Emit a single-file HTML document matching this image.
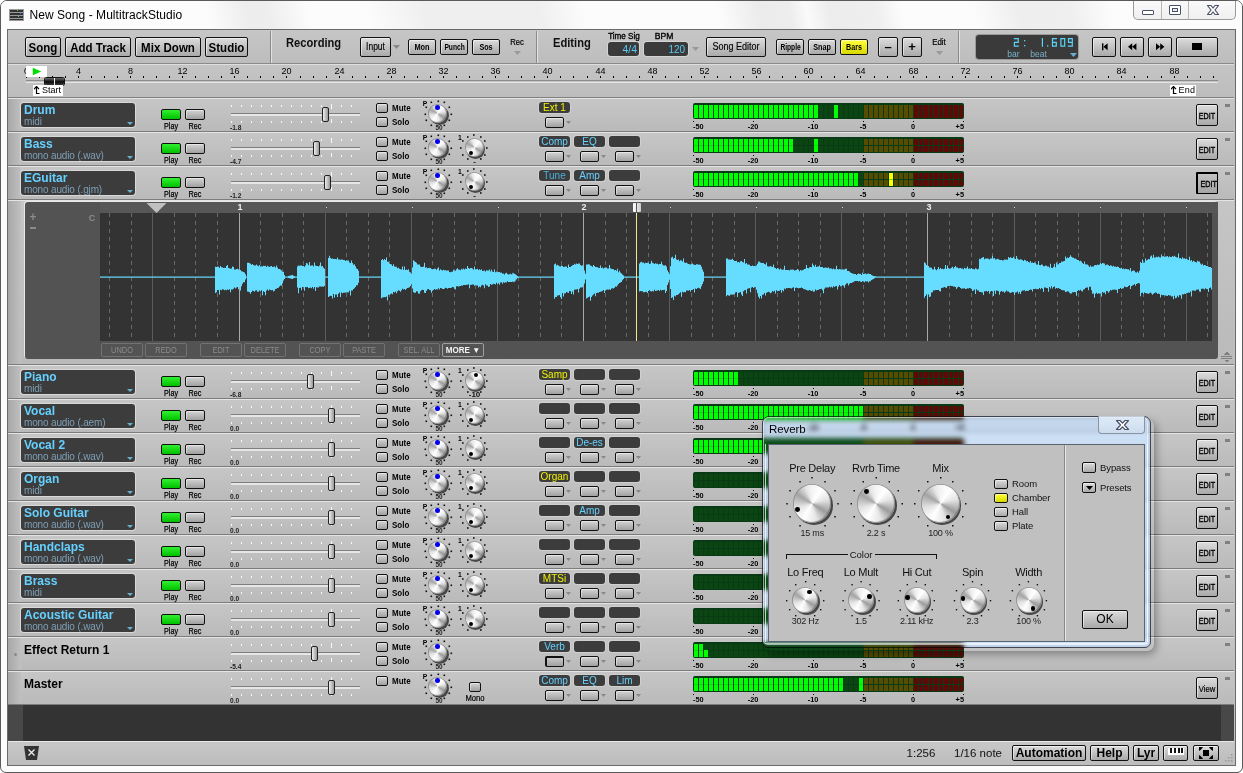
<!DOCTYPE html><html><head><meta charset="utf-8"><style>

*{margin:0;padding:0;box-sizing:content-box}
html,body{width:1243px;height:773px;overflow:hidden;background:#fff;font-family:"Liberation Sans", sans-serif}
.t{position:absolute;white-space:nowrap;font-family:"Liberation Sans", sans-serif}

</style></head><body>
<div style="position:absolute;left:0px;top:0px;width:1241px;height:771px;border:1px solid #5a5a5a;border-radius:7px 7px 6px 6px;background:#fcfcfc;"></div>
<div style="position:absolute;left:1px;top:1px;width:1241px;height:28px;border-radius:6px 6px 0 0;background:linear-gradient(78deg,#fcfcfc 0px,#fcfcfc 205px,#ededed 245px,#eeeeee 265px,#fcfcfc 305px,#fcfcfc 360px,#efefef 420px,#efefef 530px,#fcfcfc 575px,#fcfcfc 705px,#ebebeb 745px,#ededed 775px,#fafafa 792px,#ececec 815px,#efefef 860px,#fcfcfc 885px,#fcfcfc 955px,#eeeeee 1000px,#efefef 1050px,#fcfcfc 1090px,#fcfcfc 1243px);"></div>
<svg style="position:absolute;left:9px;top:9px" width="15" height="12"><rect x="0" y="0" width="15" height="12" fill="#9a9a9a"/><rect x="1" y="1" width="13" height="2" fill="#333"/><rect x="1" y="4" width="13" height="2" fill="#333"/><rect x="1" y="7" width="13" height="2" fill="#333"/><rect x="1" y="10" width="13" height="1" fill="#333"/><rect x="8" y="1" width="1" height="1" fill="#5c5"/><rect x="11" y="4" width="1" height="1" fill="#55f"/><rect x="9" y="7" width="1" height="1" fill="#5c5"/></svg>
<div class="t" style="left:29.5px;top:7.300000000000001px;font-size:12px;line-height:16px;color:#000;font-weight:normal;letter-spacing:0.05px">New Song - MultitrackStudio</div>
<div style="position:absolute;left:1133px;top:1px;width:101px;height:18px;border:1px solid #9a9a9a;border-top:none;border-radius:0 0 5px 5px;background:linear-gradient(#fafafa,#efefef);"></div>
<div style="position:absolute;left:1161px;top:1px;width:1px;height:18px;background:#b8b8b8"></div>
<div style="position:absolute;left:1188px;top:1px;width:1px;height:18px;background:#b8b8b8"></div>
<div style="position:absolute;left:1142px;top:10px;width:10px;height:3px;border:1px solid #4a5068;border-radius:1px;background:#fff"></div>
<div style="position:absolute;left:1169px;top:5px;width:10px;height:8px;border:1px solid #4a5068;border-radius:1px;background:#fff"></div>
<div style="position:absolute;left:1172px;top:8px;width:4px;height:2px;border:1px solid #4a5068;background:#e8e8e8"></div>
<svg style="position:absolute;left:1206px;top:4px" width="14" height="12"><path d="M1.5 1.5 L5 1.5 L7 4 L9 1.5 L12.5 1.5 L9 6 L12.5 10.5 L9 10.5 L7 8 L5 10.5 L1.5 10.5 L5 6 Z" fill="#fff" stroke="#4a5068" stroke-width="1.2" stroke-linejoin="round"/></svg>
<div style="position:absolute;left:7px;top:29px;width:1227px;height:735px;border:1px solid #6a6a6a;background:#c0c0c0;"></div>
<div style="position:absolute;left:8px;top:30px;width:1226px;height:33px;background:linear-gradient(#c6c6c6,#bdbdbd);"></div>
<div style="position:absolute;left:8px;top:63px;width:1226px;height:1px;background:#8a8a8a"></div>
<div style="position:absolute;left:8px;top:64px;width:1226px;height:1px;background:#dedede"></div>
<div style="position:absolute;left:270px;top:31px;width:1px;height:32px;background:#8a8a8a"></div>
<div style="position:absolute;left:271px;top:31px;width:1px;height:32px;background:#e2e2e2"></div>
<div style="position:absolute;left:536px;top:31px;width:1px;height:32px;background:#8a8a8a"></div>
<div style="position:absolute;left:537px;top:31px;width:1px;height:32px;background:#e2e2e2"></div>
<div style="position:absolute;left:958px;top:31px;width:1px;height:32px;background:#8a8a8a"></div>
<div style="position:absolute;left:959px;top:31px;width:1px;height:32px;background:#e2e2e2"></div>
<div style="position:absolute;left:25px;top:37px;width:34px;height:18px;border:1px solid #111;border-radius:2px;background:linear-gradient(#dcdcdc,#a9a9a9);box-shadow:inset 1px 1px 0 rgba(255,255,255,.55);"><div class="t" style="left:0;top:0.5px;width:100%;height:100%;text-align:center;line-height:18px;font-size:12px;font-weight:bold;color:#000;transform:scaleX(0.96);">Song</div></div>
<div style="position:absolute;left:65px;top:37px;width:64px;height:18px;border:1px solid #111;border-radius:2px;background:linear-gradient(#dcdcdc,#a9a9a9);box-shadow:inset 1px 1px 0 rgba(255,255,255,.55);"><div class="t" style="left:0;top:0.5px;width:100%;height:100%;text-align:center;line-height:18px;font-size:12px;font-weight:bold;color:#000;transform:scaleX(0.96);">Add Track</div></div>
<div style="position:absolute;left:135px;top:37px;width:64px;height:18px;border:1px solid #111;border-radius:2px;background:linear-gradient(#dcdcdc,#a9a9a9);box-shadow:inset 1px 1px 0 rgba(255,255,255,.55);"><div class="t" style="left:0;top:0.5px;width:100%;height:100%;text-align:center;line-height:18px;font-size:12px;font-weight:bold;color:#000;transform:scaleX(0.96);">Mix Down</div></div>
<div style="position:absolute;left:205px;top:37px;width:41px;height:18px;border:1px solid #111;border-radius:2px;background:linear-gradient(#dcdcdc,#a9a9a9);box-shadow:inset 1px 1px 0 rgba(255,255,255,.55);"><div class="t" style="left:0;top:0.5px;width:100%;height:100%;text-align:center;line-height:18px;font-size:12px;font-weight:bold;color:#000;transform:scaleX(0.96);">Studio</div></div>
<div class="t" style="left:286px;top:35.0px;font-size:12px;line-height:16px;color:#101010;font-weight:bold;transform:scaleX(0.93);transform-origin:left center;">Recording</div>
<div style="position:absolute;left:360px;top:37px;width:29px;height:18px;border:1px solid #111;border-radius:2px;background:linear-gradient(#dcdcdc,#a9a9a9);box-shadow:inset 1px 1px 0 rgba(255,255,255,.55);"><div class="t" style="left:0;top:0px;width:100%;height:100%;text-align:center;line-height:18px;font-size:10px;font-weight:normal;color:#000;transform:scaleX(0.85);-webkit-text-stroke:0.15px #000">Input</div></div>
<svg style="position:absolute;left:393px;top:45px" width="7" height="4"><path d="M0 0H7L3.5 4Z" fill="#888"/></svg>
<div style="position:absolute;left:408px;top:39px;width:26px;height:14px;border:1px solid #111;border-radius:2px;background:linear-gradient(#dcdcdc,#a9a9a9);box-shadow:inset 1px 1px 0 rgba(255,255,255,.55);"><div class="t" style="left:0;top:0px;width:100%;height:100%;text-align:center;line-height:14px;font-size:9px;font-weight:bold;color:#000;transform:scaleX(0.82);">Mon</div></div>
<div style="position:absolute;left:440px;top:39px;width:26px;height:14px;border:1px solid #111;border-radius:2px;background:linear-gradient(#dcdcdc,#a9a9a9);box-shadow:inset 1px 1px 0 rgba(255,255,255,.55);"><div class="t" style="left:0;top:0px;width:100%;height:100%;text-align:center;line-height:14px;font-size:9px;font-weight:bold;color:#000;transform:scaleX(0.74);">Punch</div></div>
<div style="position:absolute;left:472px;top:39px;width:26px;height:14px;border:1px solid #111;border-radius:2px;background:linear-gradient(#dcdcdc,#a9a9a9);box-shadow:inset 1px 1px 0 rgba(255,255,255,.55);"><div class="t" style="left:0;top:0px;width:100%;height:100%;text-align:center;line-height:14px;font-size:9px;font-weight:bold;color:#000;transform:scaleX(0.8);">Sos</div></div>
<div class="t" style="left:497.0px;top:35.5px;width:40px;text-align:center;font-size:9px;line-height:13px;color:#000;font-weight:normal;transform:scaleX(0.85);transform-origin:center center;-webkit-text-stroke:0.2px #000">Rec</div>
<svg style="position:absolute;left:514px;top:51px" width="7" height="4"><path d="M0 0H7L3.5 4Z" fill="#999"/></svg>
<div class="t" style="left:553px;top:35.0px;font-size:12px;line-height:16px;color:#101010;font-weight:bold;transform:scaleX(0.93);transform-origin:left center;">Editing</div>
<div class="t" style="left:594.0px;top:30.0px;width:60px;text-align:center;font-size:9px;line-height:13px;color:#000;font-weight:normal;transform:scaleX(0.9);transform-origin:center center;-webkit-text-stroke:0.35px #000">Time Sig</div>
<div class="t" style="left:634.0px;top:30.0px;width:60px;text-align:center;font-size:9px;line-height:13px;color:#000;font-weight:normal;transform:scaleX(0.95);transform-origin:center center;-webkit-text-stroke:0.35px #000">BPM</div>
<div style="position:absolute;left:608px;top:42px;width:31px;height:14px;background:#3a3a3a;border-radius:3px;box-shadow:0 0 0 1px #d4d4d4;"></div>
<div class="t" style="left:597px;top:41.75px;width:40px;text-align:right;font-size:11.5px;line-height:15.5px;color:#5ccaf4;font-weight:normal;transform:scaleX(0.9);transform-origin:right center;">4/4</div>
<div style="position:absolute;left:644px;top:42px;width:44px;height:14px;background:#3a3a3a;border-radius:3px;box-shadow:0 0 0 1px #d4d4d4;"></div>
<div class="t" style="left:645px;top:41.75px;width:40px;text-align:right;font-size:11.5px;line-height:15.5px;color:#5ccaf4;font-weight:normal;transform:scaleX(0.86);transform-origin:right center;">120</div>
<svg style="position:absolute;left:692px;top:47px" width="7" height="4"><path d="M0 0H7L3.5 4Z" fill="#999"/></svg>
<div style="position:absolute;left:706px;top:37px;width:58px;height:18px;border:1px solid #111;border-radius:2px;background:linear-gradient(#dcdcdc,#a9a9a9);box-shadow:inset 1px 1px 0 rgba(255,255,255,.55);"><div class="t" style="left:0;top:0px;width:100%;height:100%;text-align:center;line-height:18px;font-size:10px;font-weight:normal;color:#000;transform:scaleX(0.9);-webkit-text-stroke:0.15px #000">Song Editor</div></div>
<div style="position:absolute;left:776px;top:39px;width:26px;height:14px;border:1px solid #111;border-radius:2px;background:linear-gradient(#dcdcdc,#a9a9a9);box-shadow:inset 1px 1px 0 rgba(255,255,255,.55);"><div class="t" style="left:0;top:0px;width:100%;height:100%;text-align:center;line-height:14px;font-size:9px;font-weight:bold;color:#000;transform:scaleX(0.74);">Ripple</div></div>
<div style="position:absolute;left:808px;top:39px;width:26px;height:14px;border:1px solid #111;border-radius:2px;background:linear-gradient(#dcdcdc,#a9a9a9);box-shadow:inset 1px 1px 0 rgba(255,255,255,.55);"><div class="t" style="left:0;top:0px;width:100%;height:100%;text-align:center;line-height:14px;font-size:9px;font-weight:bold;color:#000;transform:scaleX(0.8);">Snap</div></div>
<div style="position:absolute;left:840px;top:39px;width:26px;height:14px;border:1px solid #111;border-radius:2px;background:linear-gradient(#ffff40,#d8d800);box-shadow:inset 1px 1px 0 rgba(255,255,255,.55);"><div class="t" style="left:0;top:0px;width:100%;height:100%;text-align:center;line-height:14px;font-size:9px;font-weight:bold;color:#000;transform:scaleX(0.8);">Bars</div></div>
<div style="position:absolute;left:878px;top:37px;width:18px;height:18px;border:1px solid #111;border-radius:2px;background:linear-gradient(#dcdcdc,#a9a9a9);box-shadow:inset 1px 1px 0 rgba(255,255,255,.55);"><div class="t" style="left:0;top:0px;width:100%;height:100%;text-align:center;line-height:18px;font-size:13px;font-weight:bold;color:#000;">&#8211;</div></div>
<div style="position:absolute;left:902px;top:37px;width:18px;height:18px;border:1px solid #111;border-radius:2px;background:linear-gradient(#dcdcdc,#a9a9a9);box-shadow:inset 1px 1px 0 rgba(255,255,255,.55);"><div class="t" style="left:0;top:0px;width:100%;height:100%;text-align:center;line-height:18px;font-size:13px;font-weight:bold;color:#000;">+</div></div>
<div class="t" style="left:919.0px;top:35.5px;width:40px;text-align:center;font-size:9px;line-height:13px;color:#000;font-weight:normal;transform:scaleX(0.88);transform-origin:center center;-webkit-text-stroke:0.2px #000">Edit</div>
<svg style="position:absolute;left:936px;top:51px" width="7" height="4"><path d="M0 0H7L3.5 4Z" fill="#999"/></svg>
<div style="position:absolute;left:976px;top:35px;width:102px;height:24px;background:#3a3a3a;border-radius:3px;box-shadow:0 0 0 1px #9a9a9a;"></div>
<svg style="position:absolute;left:0;top:0" width="1243" height="60"><path d="M1014.4 38.6L1018.2 38.6M1018.2 38.6L1018.2 42.4M1014.4 42.4L1018.2 42.4M1014.4 42.4L1014.4 46.2M1014.4 46.2L1018.2 46.2M1042.4 38.6L1042.4 42.4M1042.4 42.4L1042.4 46.2M1052.5 38.6L1056.3 38.6M1052.5 38.6L1052.5 42.4M1052.5 42.4L1056.3 42.4M1052.5 42.4L1052.5 46.2M1052.5 46.2L1056.3 46.2M1056.3 42.4L1056.3 46.2M1060.9 38.6L1064.7 38.6M1064.7 38.6L1064.7 42.4M1064.7 42.4L1064.7 46.2M1060.9 46.2L1064.7 46.2M1060.9 42.4L1060.9 46.2M1060.9 38.6L1060.9 42.4M1068.5 38.6L1072.3 38.6M1072.3 38.6L1072.3 42.4M1072.3 42.4L1072.3 46.2M1068.5 46.2L1072.3 46.2M1068.5 38.6L1068.5 42.4M1068.5 42.4L1072.3 42.4" stroke="#5ad4fa" stroke-width="1.2" fill="none" stroke-linecap="square"/><rect x="1024" y="40" width="1.3" height="1.3" fill="#5ad4fa"/><rect x="1024" y="45" width="1.3" height="1.3" fill="#5ad4fa"/><rect x="1047" y="45.3" width="1.3" height="1.3" fill="#5ad4fa"/></svg>
<div class="t" style="left:998.5px;top:47.75px;width:30px;text-align:center;font-size:8.5px;line-height:12.5px;color:#78b4cc;font-weight:normal;">bar</div>
<div class="t" style="left:1023.5px;top:47.75px;width:30px;text-align:center;font-size:8.5px;line-height:12.5px;color:#78b4cc;font-weight:normal;">beat</div>
<svg style="position:absolute;left:1070px;top:53px" width="7" height="4"><path d="M0 0H7L3.5 4Z" fill="#6ab0d0"/></svg>
<div style="position:absolute;left:1092px;top:37px;width:22px;height:18px;border:1px solid #111;border-radius:2px;background:linear-gradient(#dcdcdc,#a9a9a9);box-shadow:inset 1px 1px 0 rgba(255,255,255,.55);"><div class="t" style="left:0;top:0px;width:100%;height:100%;text-align:center;line-height:18px;font-size:11px;font-weight:bold;color:#000;"></div></div>
<svg style="position:absolute;left:1102px;top:43px" width="6" height="8"><rect x="0" y="0.3" width="1.4" height="7" fill="#000"/><path d="M5.6 0.3V7.3L1.4 3.8Z" fill="#000"/></svg>
<div style="position:absolute;left:1120px;top:37px;width:22px;height:18px;border:1px solid #111;border-radius:2px;background:linear-gradient(#dcdcdc,#a9a9a9);box-shadow:inset 1px 1px 0 rgba(255,255,255,.55);"><div class="t" style="left:0;top:0px;width:100%;height:100%;text-align:center;line-height:18px;font-size:11px;font-weight:bold;color:#000;"></div></div>
<svg style="position:absolute;left:1128px;top:43px" width="9" height="8"><path d="M4.2 0.3V7.3L0 3.8Z M8.4 0.3V7.3L4.2 3.8Z" fill="#000"/></svg>
<div style="position:absolute;left:1148px;top:37px;width:22px;height:18px;border:1px solid #111;border-radius:2px;background:linear-gradient(#dcdcdc,#a9a9a9);box-shadow:inset 1px 1px 0 rgba(255,255,255,.55);"><div class="t" style="left:0;top:0px;width:100%;height:100%;text-align:center;line-height:18px;font-size:11px;font-weight:bold;color:#000;"></div></div>
<svg style="position:absolute;left:1156px;top:43px" width="9" height="8"><path d="M0 0.3V7.3L4.2 3.8Z M4.2 0.3V7.3L8.4 3.8Z" fill="#000"/></svg>
<div style="position:absolute;left:1176px;top:37px;width:40px;height:18px;border:1px solid #111;border-radius:2px;background:linear-gradient(#dcdcdc,#a9a9a9);box-shadow:inset 1px 1px 0 rgba(255,255,255,.55);"><div class="t" style="left:0;top:0px;width:100%;height:100%;text-align:center;line-height:18px;font-size:11px;font-weight:bold;color:#000;"></div></div>
<div style="position:absolute;left:1192px;top:43px;width:10px;height:7px;background:#000"></div>
<div style="position:absolute;left:8px;top:65px;width:1226px;height:32px;background:linear-gradient(#c4c4c4,#bdbdbd);"></div>
<div style="position:absolute;left:8px;top:97px;width:1226px;height:1px;background:#808080"></div>
<div style="position:absolute;left:26px;top:76px;width:1px;height:2px;background:#000"></div>
<div class="t" style="left:11.5px;top:64.5px;width:30px;text-align:center;font-size:9px;line-height:13px;color:#000;font-weight:normal;">0</div>
<div style="position:absolute;left:39px;top:76px;width:1px;height:2px;background:#000"></div>
<div style="position:absolute;left:52px;top:76px;width:1px;height:2px;background:#000"></div>
<div style="position:absolute;left:65px;top:76px;width:1px;height:2px;background:#000"></div>
<div style="position:absolute;left:78px;top:76px;width:1px;height:2px;background:#000"></div>
<div class="t" style="left:63.5px;top:64.5px;width:30px;text-align:center;font-size:9px;line-height:13px;color:#000;font-weight:normal;">4</div>
<div style="position:absolute;left:91px;top:76px;width:1px;height:2px;background:#000"></div>
<div style="position:absolute;left:104px;top:76px;width:1px;height:2px;background:#000"></div>
<div style="position:absolute;left:117px;top:76px;width:1px;height:2px;background:#000"></div>
<div style="position:absolute;left:130px;top:76px;width:1px;height:2px;background:#000"></div>
<div class="t" style="left:115.5px;top:64.5px;width:30px;text-align:center;font-size:9px;line-height:13px;color:#000;font-weight:normal;">8</div>
<div style="position:absolute;left:143px;top:76px;width:1px;height:2px;background:#000"></div>
<div style="position:absolute;left:156px;top:76px;width:1px;height:2px;background:#000"></div>
<div style="position:absolute;left:169px;top:76px;width:1px;height:2px;background:#000"></div>
<div style="position:absolute;left:182px;top:76px;width:1px;height:2px;background:#000"></div>
<div class="t" style="left:167.5px;top:64.5px;width:30px;text-align:center;font-size:9px;line-height:13px;color:#000;font-weight:normal;">12</div>
<div style="position:absolute;left:195px;top:76px;width:1px;height:2px;background:#000"></div>
<div style="position:absolute;left:208px;top:76px;width:1px;height:2px;background:#000"></div>
<div style="position:absolute;left:221px;top:76px;width:1px;height:2px;background:#000"></div>
<div style="position:absolute;left:234px;top:76px;width:1px;height:2px;background:#000"></div>
<div class="t" style="left:219.5px;top:64.5px;width:30px;text-align:center;font-size:9px;line-height:13px;color:#000;font-weight:normal;">16</div>
<div style="position:absolute;left:247px;top:76px;width:1px;height:2px;background:#000"></div>
<div style="position:absolute;left:260px;top:76px;width:1px;height:2px;background:#000"></div>
<div style="position:absolute;left:273px;top:76px;width:1px;height:2px;background:#000"></div>
<div style="position:absolute;left:286px;top:76px;width:1px;height:2px;background:#000"></div>
<div class="t" style="left:271.5px;top:64.5px;width:30px;text-align:center;font-size:9px;line-height:13px;color:#000;font-weight:normal;">20</div>
<div style="position:absolute;left:300px;top:76px;width:1px;height:2px;background:#000"></div>
<div style="position:absolute;left:313px;top:76px;width:1px;height:2px;background:#000"></div>
<div style="position:absolute;left:326px;top:76px;width:1px;height:2px;background:#000"></div>
<div style="position:absolute;left:339px;top:76px;width:1px;height:2px;background:#000"></div>
<div class="t" style="left:324.5px;top:64.5px;width:30px;text-align:center;font-size:9px;line-height:13px;color:#000;font-weight:normal;">24</div>
<div style="position:absolute;left:352px;top:76px;width:1px;height:2px;background:#000"></div>
<div style="position:absolute;left:365px;top:76px;width:1px;height:2px;background:#000"></div>
<div style="position:absolute;left:378px;top:76px;width:1px;height:2px;background:#000"></div>
<div style="position:absolute;left:391px;top:76px;width:1px;height:2px;background:#000"></div>
<div class="t" style="left:376.5px;top:64.5px;width:30px;text-align:center;font-size:9px;line-height:13px;color:#000;font-weight:normal;">28</div>
<div style="position:absolute;left:404px;top:76px;width:1px;height:2px;background:#000"></div>
<div style="position:absolute;left:417px;top:76px;width:1px;height:2px;background:#000"></div>
<div style="position:absolute;left:430px;top:76px;width:1px;height:2px;background:#000"></div>
<div style="position:absolute;left:443px;top:76px;width:1px;height:2px;background:#000"></div>
<div class="t" style="left:428.5px;top:64.5px;width:30px;text-align:center;font-size:9px;line-height:13px;color:#000;font-weight:normal;">32</div>
<div style="position:absolute;left:456px;top:76px;width:1px;height:2px;background:#000"></div>
<div style="position:absolute;left:469px;top:76px;width:1px;height:2px;background:#000"></div>
<div style="position:absolute;left:482px;top:76px;width:1px;height:2px;background:#000"></div>
<div style="position:absolute;left:495px;top:76px;width:1px;height:2px;background:#000"></div>
<div class="t" style="left:480.5px;top:64.5px;width:30px;text-align:center;font-size:9px;line-height:13px;color:#000;font-weight:normal;">36</div>
<div style="position:absolute;left:508px;top:76px;width:1px;height:2px;background:#000"></div>
<div style="position:absolute;left:521px;top:76px;width:1px;height:2px;background:#000"></div>
<div style="position:absolute;left:534px;top:76px;width:1px;height:2px;background:#000"></div>
<div style="position:absolute;left:547px;top:76px;width:1px;height:2px;background:#000"></div>
<div class="t" style="left:532.5px;top:64.5px;width:30px;text-align:center;font-size:9px;line-height:13px;color:#000;font-weight:normal;">40</div>
<div style="position:absolute;left:560px;top:76px;width:1px;height:2px;background:#000"></div>
<div style="position:absolute;left:573px;top:76px;width:1px;height:2px;background:#000"></div>
<div style="position:absolute;left:587px;top:76px;width:1px;height:2px;background:#000"></div>
<div style="position:absolute;left:600px;top:76px;width:1px;height:2px;background:#000"></div>
<div class="t" style="left:585.5px;top:64.5px;width:30px;text-align:center;font-size:9px;line-height:13px;color:#000;font-weight:normal;">44</div>
<div style="position:absolute;left:613px;top:76px;width:1px;height:2px;background:#000"></div>
<div style="position:absolute;left:626px;top:76px;width:1px;height:2px;background:#000"></div>
<div style="position:absolute;left:639px;top:76px;width:1px;height:2px;background:#000"></div>
<div style="position:absolute;left:652px;top:76px;width:1px;height:2px;background:#000"></div>
<div class="t" style="left:637.5px;top:64.5px;width:30px;text-align:center;font-size:9px;line-height:13px;color:#000;font-weight:normal;">48</div>
<div style="position:absolute;left:665px;top:76px;width:1px;height:2px;background:#000"></div>
<div style="position:absolute;left:678px;top:76px;width:1px;height:2px;background:#000"></div>
<div style="position:absolute;left:691px;top:76px;width:1px;height:2px;background:#000"></div>
<div style="position:absolute;left:704px;top:76px;width:1px;height:2px;background:#000"></div>
<div class="t" style="left:689.5px;top:64.5px;width:30px;text-align:center;font-size:9px;line-height:13px;color:#000;font-weight:normal;">52</div>
<div style="position:absolute;left:717px;top:76px;width:1px;height:2px;background:#000"></div>
<div style="position:absolute;left:730px;top:76px;width:1px;height:2px;background:#000"></div>
<div style="position:absolute;left:743px;top:76px;width:1px;height:2px;background:#000"></div>
<div style="position:absolute;left:756px;top:76px;width:1px;height:2px;background:#000"></div>
<div class="t" style="left:741.5px;top:64.5px;width:30px;text-align:center;font-size:9px;line-height:13px;color:#000;font-weight:normal;">56</div>
<div style="position:absolute;left:769px;top:76px;width:1px;height:2px;background:#000"></div>
<div style="position:absolute;left:782px;top:76px;width:1px;height:2px;background:#000"></div>
<div style="position:absolute;left:795px;top:76px;width:1px;height:2px;background:#000"></div>
<div style="position:absolute;left:808px;top:76px;width:1px;height:2px;background:#000"></div>
<div class="t" style="left:793.5px;top:64.5px;width:30px;text-align:center;font-size:9px;line-height:13px;color:#000;font-weight:normal;">60</div>
<div style="position:absolute;left:821px;top:76px;width:1px;height:2px;background:#000"></div>
<div style="position:absolute;left:834px;top:76px;width:1px;height:2px;background:#000"></div>
<div style="position:absolute;left:847px;top:76px;width:1px;height:2px;background:#000"></div>
<div style="position:absolute;left:860px;top:76px;width:1px;height:2px;background:#000"></div>
<div class="t" style="left:845.5px;top:64.5px;width:30px;text-align:center;font-size:9px;line-height:13px;color:#000;font-weight:normal;">64</div>
<div style="position:absolute;left:874px;top:76px;width:1px;height:2px;background:#000"></div>
<div style="position:absolute;left:887px;top:76px;width:1px;height:2px;background:#000"></div>
<div style="position:absolute;left:900px;top:76px;width:1px;height:2px;background:#000"></div>
<div style="position:absolute;left:913px;top:76px;width:1px;height:2px;background:#000"></div>
<div class="t" style="left:898.5px;top:64.5px;width:30px;text-align:center;font-size:9px;line-height:13px;color:#000;font-weight:normal;">68</div>
<div style="position:absolute;left:926px;top:76px;width:1px;height:2px;background:#000"></div>
<div style="position:absolute;left:939px;top:76px;width:1px;height:2px;background:#000"></div>
<div style="position:absolute;left:952px;top:76px;width:1px;height:2px;background:#000"></div>
<div style="position:absolute;left:965px;top:76px;width:1px;height:2px;background:#000"></div>
<div class="t" style="left:950.5px;top:64.5px;width:30px;text-align:center;font-size:9px;line-height:13px;color:#000;font-weight:normal;">72</div>
<div style="position:absolute;left:978px;top:76px;width:1px;height:2px;background:#000"></div>
<div style="position:absolute;left:991px;top:76px;width:1px;height:2px;background:#000"></div>
<div style="position:absolute;left:1004px;top:76px;width:1px;height:2px;background:#000"></div>
<div style="position:absolute;left:1017px;top:76px;width:1px;height:2px;background:#000"></div>
<div class="t" style="left:1002.5px;top:64.5px;width:30px;text-align:center;font-size:9px;line-height:13px;color:#000;font-weight:normal;">76</div>
<div style="position:absolute;left:1030px;top:76px;width:1px;height:2px;background:#000"></div>
<div style="position:absolute;left:1043px;top:76px;width:1px;height:2px;background:#000"></div>
<div style="position:absolute;left:1056px;top:76px;width:1px;height:2px;background:#000"></div>
<div style="position:absolute;left:1069px;top:76px;width:1px;height:2px;background:#000"></div>
<div class="t" style="left:1054.5px;top:64.5px;width:30px;text-align:center;font-size:9px;line-height:13px;color:#000;font-weight:normal;">80</div>
<div style="position:absolute;left:1082px;top:76px;width:1px;height:2px;background:#000"></div>
<div style="position:absolute;left:1095px;top:76px;width:1px;height:2px;background:#000"></div>
<div style="position:absolute;left:1108px;top:76px;width:1px;height:2px;background:#000"></div>
<div style="position:absolute;left:1121px;top:76px;width:1px;height:2px;background:#000"></div>
<div class="t" style="left:1106.5px;top:64.5px;width:30px;text-align:center;font-size:9px;line-height:13px;color:#000;font-weight:normal;">84</div>
<div style="position:absolute;left:1134px;top:76px;width:1px;height:2px;background:#000"></div>
<div style="position:absolute;left:1147px;top:76px;width:1px;height:2px;background:#000"></div>
<div style="position:absolute;left:1161px;top:76px;width:1px;height:2px;background:#000"></div>
<div style="position:absolute;left:1174px;top:76px;width:1px;height:2px;background:#000"></div>
<div class="t" style="left:1159.5px;top:64.5px;width:30px;text-align:center;font-size:9px;line-height:13px;color:#000;font-weight:normal;">88</div>
<div style="position:absolute;left:1187px;top:76px;width:1px;height:2px;background:#000"></div>
<div style="position:absolute;left:1200px;top:76px;width:1px;height:2px;background:#000"></div>
<div style="position:absolute;left:1213px;top:76px;width:1px;height:2px;background:#000"></div>
<div style="position:absolute;left:26px;top:80px;width:1192px;height:1px;background:#8c8c8c"></div>
<div style="position:absolute;left:26px;top:81px;width:1192px;height:1px;background:#c4c4c4"></div>
<div style="position:absolute;left:26px;top:82px;width:1192px;height:1px;background:#e4e4e4"></div>
<div style="position:absolute;left:26px;top:66px;width:21px;height:11px;background:#fff"></div>
<svg style="position:absolute;left:32px;top:67px" width="10" height="9"><path d="M0.8 0.8V8.2L9.3 4.5Z" fill="#00e000"/></svg>
<div style="position:absolute;left:45px;top:78px;width:19px;height:7px;border-radius:2px;background:linear-gradient(#6a6a6a,#0c0c0c 55%,#3a3a3a);box-shadow:0 0 0 1px #111;"></div>
<div style="position:absolute;left:54px;top:78px;width:1px;height:7px;background:#f0f0f0"></div>
<div style="position:absolute;left:33px;top:85px;width:30px;height:11px;background:#fff"></div>
<svg style="position:absolute;left:34px;top:86px" width="7" height="9"><path d="M2.5 1V7.5H5.5" stroke="#000" stroke-width="1.2" fill="none"/><path d="M0 3.2L2.5 0.5L5 3.2" stroke="#000" stroke-width="1.2" fill="none"/></svg>
<div class="t" style="left:42px;top:84.2px;font-size:9px;line-height:13px;color:#000;font-weight:normal;">Start</div>
<div style="position:absolute;left:1170px;top:85px;width:26px;height:11px;background:#fff"></div>
<svg style="position:absolute;left:1171px;top:86px" width="7" height="9"><path d="M2.5 1V7.5H5.5" stroke="#000" stroke-width="1.2" fill="none"/><path d="M0 3.2L2.5 0.5L5 3.2" stroke="#000" stroke-width="1.2" fill="none"/></svg>
<div class="t" style="left:1178.5px;top:84.2px;font-size:9px;line-height:13px;color:#000;font-weight:normal;letter-spacing:0.2px">End</div>
<div style="position:absolute;left:8px;top:98px;width:1226px;height:1px;background:#e4e4e4"></div>
<div style="position:absolute;left:8px;top:99px;width:1226px;height:32px;background:linear-gradient(#c6c6c6,#bababa)"></div>
<div style="position:absolute;left:8px;top:131px;width:1226px;height:1px;background:#7c7c7c"></div>
<div style="position:absolute;left:8px;top:99px;width:13px;height:32px;background:linear-gradient(90deg,#a8a8a8,#c0c0c0)"></div>
<div style="position:absolute;left:21px;top:103px;width:114px;height:24px;background:#3c3c3c;border-radius:3px;box-shadow:0 0 0 1px #d8d8d8"></div>
<div class="t" style="left:24px;top:101.5px;font-size:12px;line-height:16px;color:#66d0ff;font-weight:bold;">Drum</div>
<div class="t" style="left:24px;top:114.5px;font-size:10px;line-height:14px;color:#7e9fb6;font-weight:normal;letter-spacing:-0.15px">midi</div>
<svg style="position:absolute;left:127px;top:122px" width="6" height="3"><path d="M0 0H6L3 3Z" fill="#6ab0d0"/></svg>
<div style="position:absolute;left:161px;top:109px;width:18px;height:9px;border:1px solid #111;border-radius:2px;background:linear-gradient(#30f030,#00c000)"></div>
<div style="position:absolute;left:185px;top:109px;width:18px;height:9px;border:1px solid #111;border-radius:2px;background:linear-gradient(#d4d4d4,#a0a0a0);box-shadow:inset 1px 1px 0 rgba(255,255,255,.45)"></div>
<div class="t" style="left:156.0px;top:120.0px;width:30px;text-align:center;font-size:9px;line-height:13px;color:#000;font-weight:normal;transform:scaleX(0.8);transform-origin:center center;-webkit-text-stroke:0.25px #000">Play</div>
<div class="t" style="left:180.0px;top:120.0px;width:30px;text-align:center;font-size:9px;line-height:13px;color:#000;font-weight:normal;transform:scaleX(0.8);transform-origin:center center;-webkit-text-stroke:0.25px #000">Rec</div>
<div style="position:absolute;left:231px;top:105px;width:1px;height:2px;background:#f8f8f8"></div>
<div style="position:absolute;left:231px;top:121px;width:1px;height:2px;background:#f8f8f8"></div>
<div style="position:absolute;left:241px;top:105px;width:1px;height:2px;background:#f8f8f8"></div>
<div style="position:absolute;left:241px;top:121px;width:1px;height:2px;background:#f8f8f8"></div>
<div style="position:absolute;left:251px;top:105px;width:1px;height:2px;background:#f8f8f8"></div>
<div style="position:absolute;left:251px;top:121px;width:1px;height:2px;background:#f8f8f8"></div>
<div style="position:absolute;left:261px;top:105px;width:1px;height:2px;background:#f8f8f8"></div>
<div style="position:absolute;left:261px;top:121px;width:1px;height:2px;background:#f8f8f8"></div>
<div style="position:absolute;left:271px;top:105px;width:1px;height:2px;background:#f8f8f8"></div>
<div style="position:absolute;left:271px;top:121px;width:1px;height:2px;background:#f8f8f8"></div>
<div style="position:absolute;left:281px;top:105px;width:1px;height:2px;background:#f8f8f8"></div>
<div style="position:absolute;left:281px;top:121px;width:1px;height:2px;background:#f8f8f8"></div>
<div style="position:absolute;left:291px;top:105px;width:1px;height:2px;background:#f8f8f8"></div>
<div style="position:absolute;left:291px;top:121px;width:1px;height:2px;background:#f8f8f8"></div>
<div style="position:absolute;left:301px;top:105px;width:1px;height:2px;background:#f8f8f8"></div>
<div style="position:absolute;left:301px;top:121px;width:1px;height:2px;background:#f8f8f8"></div>
<div style="position:absolute;left:311px;top:105px;width:1px;height:2px;background:#f8f8f8"></div>
<div style="position:absolute;left:311px;top:121px;width:1px;height:2px;background:#f8f8f8"></div>
<div style="position:absolute;left:321px;top:105px;width:1px;height:2px;background:#f8f8f8"></div>
<div style="position:absolute;left:321px;top:121px;width:1px;height:2px;background:#f8f8f8"></div>
<div style="position:absolute;left:331px;top:104px;width:1px;height:5px;background:#f8f8f8"></div>
<div style="position:absolute;left:331px;top:119px;width:1px;height:4px;background:#f8f8f8"></div>
<div style="position:absolute;left:341px;top:105px;width:1px;height:2px;background:#f8f8f8"></div>
<div style="position:absolute;left:341px;top:121px;width:1px;height:2px;background:#f8f8f8"></div>
<div style="position:absolute;left:351px;top:105px;width:1px;height:2px;background:#f8f8f8"></div>
<div style="position:absolute;left:351px;top:121px;width:1px;height:2px;background:#f8f8f8"></div>
<div style="position:absolute;left:231px;top:113px;width:129px;height:1px;background:#7e7e7e"></div>
<div style="position:absolute;left:231px;top:114px;width:129px;height:2px;background:#e6e6e6"></div>
<div style="position:absolute;left:322px;top:107px;width:5px;height:13px;border:1px solid #222;border-radius:2px;background:linear-gradient(90deg,#eee,#999);"></div>
<div class="t" style="left:230px;top:121.5px;font-size:8px;line-height:12px;color:#222;font-weight:bold;transform:scaleX(0.82);transform-origin:left center;">-1.8</div>
<div style="position:absolute;left:376px;top:103px;width:10px;height:8px;border:1px solid #111;border-radius:2px;background:linear-gradient(#d4d4d4,#a0a0a0);box-shadow:inset 1px 1px 0 rgba(255,255,255,.45)"></div>
<div style="position:absolute;left:376px;top:117px;width:10px;height:8px;border:1px solid #111;border-radius:2px;background:linear-gradient(#d4d4d4,#a0a0a0);box-shadow:inset 1px 1px 0 rgba(255,255,255,.45)"></div>
<div class="t" style="left:391.5px;top:101.25px;font-size:9.5px;line-height:13.5px;color:#000;font-weight:bold;transform:scaleX(0.84);transform-origin:left center;">Mute</div>
<div class="t" style="left:391.5px;top:115.25px;font-size:9.5px;line-height:13.5px;color:#000;font-weight:bold;transform:scaleX(0.84);transform-origin:left center;">Solo</div>
<div class="t" style="left:419.8px;top:97.8px;width:10px;text-align:center;font-size:8px;line-height:12px;color:#000;font-weight:bold;transform:scaleX(0.85);transform-origin:center center;">P</div>
<svg style="position:absolute;left:421.5px;top:97.5px;overflow:visible" width="32.0" height="32.0"><rect x="8.50" y="26.50" width="1.6" height="1.6" fill="#111"/><rect x="3.50" y="21.50" width="1.6" height="1.6" fill="#111"/><rect x="2.50" y="15.50" width="1.6" height="1.6" fill="#111"/><rect x="3.50" y="8.50" width="1.6" height="1.6" fill="#111"/><rect x="8.50" y="3.50" width="1.6" height="1.6" fill="#111"/><rect x="15.50" y="2.50" width="1.6" height="1.6" fill="#111"/><rect x="21.50" y="3.50" width="1.6" height="1.6" fill="#111"/><rect x="26.50" y="8.50" width="1.6" height="1.6" fill="#111"/><rect x="28.50" y="15.50" width="1.6" height="1.6" fill="#111"/><rect x="26.50" y="21.50" width="1.6" height="1.6" fill="#111"/><rect x="21.50" y="26.50" width="1.6" height="1.6" fill="#111"/></svg>
<div style="position:absolute;left:429.6px;top:105.9px;width:19px;height:19px;border-radius:50%;background:#333;opacity:.85;filter:blur(0.6px)"></div>
<div style="position:absolute;left:428.0px;top:104.0px;width:19px;height:19px;border-radius:50%;background:conic-gradient(from 0deg,#f4f4f4 0deg,#ffffff 35deg,#e4e4e4 75deg,#9c9c9c 122deg,#e6e6e6 165deg,#ffffff 210deg,#e2e2e2 255deg,#a4a4a4 302deg,#e8e8e8 340deg,#f4f4f4 360deg);box-shadow:inset 0 0 0 0.8px #8a8a8a, inset -1px -1px 1px rgba(0,0,0,.25)"></div>
<div style="position:absolute;left:435.2px;top:105.2px;width:4.5px;height:4.5px;border-radius:50%;background:#0000ee"></div>
<div class="t" style="left:428.5px;top:121.5px;width:20px;text-align:center;font-size:8px;line-height:12px;color:#222;font-weight:bold;transform:scaleX(0.8);transform-origin:center center;">50</div>
<div style="position:absolute;left:539px;top:102px;width:31px;height:11px;background:#3c3c3c;border-radius:3px;box-shadow:0 0 0 1px #d0d0d0"></div>
<div class="t" style="left:534.5px;top:100.5px;width:40px;text-align:center;font-size:10px;line-height:14px;color:#f0f000;font-weight:normal;">Ext 1</div>
<div style="position:absolute;left:545px;top:117px;width:17px;height:9px;border:1px solid #111;border-radius:2px;background:linear-gradient(#d4d4d4,#a0a0a0);box-shadow:inset 1px 1px 0 rgba(255,255,255,.45)"></div>
<svg style="position:absolute;left:566px;top:121px" width="5" height="3"><path d="M0 0H5L2.5 3Z" fill="#888"/></svg>
<div style="position:absolute;left:693px;top:103px;width:271px;height:16px;background:#083a16;border-radius:2px"></div>
<svg style="position:absolute;left:693px;top:103px;shape-rendering:crispEdges" width="271" height="16"><rect x="1" y="2" width="4" height="13" fill="#00ff00"/><rect x="6" y="2" width="4" height="13" fill="#00ff00"/><rect x="11" y="2" width="4" height="13" fill="#00ff00"/><rect x="16" y="2" width="4" height="13" fill="#00ff00"/><rect x="21" y="2" width="4" height="13" fill="#00ff00"/><rect x="26" y="2" width="4" height="13" fill="#00ff00"/><rect x="31" y="2" width="4" height="13" fill="#00ff00"/><rect x="36" y="2" width="4" height="13" fill="#00ff00"/><rect x="41" y="2" width="4" height="13" fill="#00ff00"/><rect x="46" y="2" width="4" height="13" fill="#00ff00"/><rect x="51" y="2" width="4" height="13" fill="#00ff00"/><rect x="56" y="2" width="4" height="13" fill="#00ff00"/><rect x="61" y="2" width="4" height="13" fill="#00ff00"/><rect x="66" y="2" width="4" height="13" fill="#00ff00"/><rect x="71" y="2" width="4" height="13" fill="#00ff00"/><rect x="76" y="2" width="4" height="13" fill="#00ff00"/><rect x="81" y="2" width="4" height="13" fill="#00ff00"/><rect x="86" y="2" width="4" height="13" fill="#00ff00"/><rect x="91" y="2" width="4" height="13" fill="#00ff00"/><rect x="96" y="2" width="4" height="13" fill="#00ff00"/><rect x="101" y="2" width="4" height="13" fill="#00ff00"/><rect x="106" y="2" width="4" height="13" fill="#00ff00"/><rect x="111" y="2" width="4" height="13" fill="#00ff00"/><rect x="116" y="2" width="4" height="13" fill="#00ff00"/><rect x="121" y="2" width="4" height="13" fill="#00ff00"/><rect x="126" y="2" width="4" height="13" fill="#0b4612"/><rect x="131" y="2" width="4" height="13" fill="#0b4612"/><rect x="136" y="2" width="4" height="13" fill="#0b4612"/><rect x="141" y="2" width="4" height="13" fill="#00ff00"/><rect x="146" y="2" width="4" height="13" fill="#0b4612"/><rect x="151" y="2" width="4" height="13" fill="#0b4612"/><rect x="156" y="2" width="4" height="13" fill="#0b4612"/><rect x="161" y="2" width="4" height="13" fill="#0b4612"/><rect x="166" y="2" width="4" height="13" fill="#0b4612"/><rect x="171" y="2" width="4" height="13" fill="#574c00"/><rect x="176" y="2" width="4" height="13" fill="#574c00"/><rect x="181" y="2" width="4" height="13" fill="#574c00"/><rect x="186" y="2" width="4" height="13" fill="#574c00"/><rect x="191" y="2" width="4" height="13" fill="#574c00"/><rect x="196" y="2" width="4" height="13" fill="#574c00"/><rect x="201" y="2" width="4" height="13" fill="#574c00"/><rect x="206" y="2" width="4" height="13" fill="#574c00"/><rect x="211" y="2" width="4" height="13" fill="#574c00"/><rect x="216" y="2" width="4" height="13" fill="#574c00"/><rect x="221" y="2" width="4" height="13" fill="#600808"/><rect x="226" y="2" width="4" height="13" fill="#600808"/><rect x="231" y="2" width="4" height="13" fill="#600808"/><rect x="236" y="2" width="4" height="13" fill="#600808"/><rect x="241" y="2" width="4" height="13" fill="#600808"/><rect x="246" y="2" width="4" height="13" fill="#600808"/><rect x="251" y="2" width="4" height="13" fill="#600808"/><rect x="256" y="2" width="4" height="13" fill="#600808"/><rect x="261" y="2" width="4" height="13" fill="#600808"/><rect x="266" y="2" width="4" height="13" fill="#600808"/></svg>
<div style="position:absolute;left:693px;top:121px;width:1px;height:1px;background:#000"></div>
<div class="t" style="left:693px;top:120.85px;font-size:7.5px;line-height:11.5px;color:#000;font-weight:bold;transform:scaleX(0.98);transform-origin:left center;">-50</div>
<div style="position:absolute;left:753px;top:121px;width:1px;height:1px;background:#000"></div>
<div class="t" style="left:738.0px;top:120.85px;width:30px;text-align:center;font-size:7.5px;line-height:11.5px;color:#000;font-weight:bold;transform:scaleX(0.98);transform-origin:center center;">-20</div>
<div style="position:absolute;left:813px;top:121px;width:1px;height:1px;background:#000"></div>
<div class="t" style="left:798.0px;top:120.85px;width:30px;text-align:center;font-size:7.5px;line-height:11.5px;color:#000;font-weight:bold;transform:scaleX(0.98);transform-origin:center center;">-10</div>
<div style="position:absolute;left:863px;top:121px;width:1px;height:1px;background:#000"></div>
<div class="t" style="left:848.0px;top:120.85px;width:30px;text-align:center;font-size:7.5px;line-height:11.5px;color:#000;font-weight:bold;transform:scaleX(0.98);transform-origin:center center;">-5</div>
<div style="position:absolute;left:913px;top:121px;width:1px;height:1px;background:#000"></div>
<div class="t" style="left:898.0px;top:120.85px;width:30px;text-align:center;font-size:7.5px;line-height:11.5px;color:#000;font-weight:bold;transform:scaleX(0.98);transform-origin:center center;">0</div>
<div style="position:absolute;left:963px;top:121px;width:1px;height:1px;background:#000"></div>
<div class="t" style="left:934px;top:120.85px;width:30px;text-align:right;font-size:7.5px;line-height:11.5px;color:#000;font-weight:bold;transform:scaleX(0.98);transform-origin:right center;">+5</div>
<div style="position:absolute;left:1196px;top:104px;width:20px;height:20px;border:1px solid #111;border-radius:2px;background:linear-gradient(#dcdcdc,#a9a9a9);box-shadow:inset 1px 1px 0 rgba(255,255,255,.55);"><div class="t" style="left:0;top:0.5px;width:100%;height:100%;text-align:center;line-height:20px;font-size:8.5px;font-weight:normal;color:#000;transform:scaleX(0.85);-webkit-text-stroke:0.35px #000">EDIT</div></div>
<div style="position:absolute;left:1225px;top:104px;width:5px;height:3px;background:#808080"></div>
<div style="position:absolute;left:8px;top:132px;width:1226px;height:1px;background:#e4e4e4"></div>
<div style="position:absolute;left:8px;top:133px;width:1226px;height:32px;background:linear-gradient(#c6c6c6,#bababa)"></div>
<div style="position:absolute;left:8px;top:165px;width:1226px;height:1px;background:#7c7c7c"></div>
<div style="position:absolute;left:8px;top:133px;width:13px;height:32px;background:linear-gradient(90deg,#a8a8a8,#c0c0c0)"></div>
<div style="position:absolute;left:21px;top:137px;width:114px;height:24px;background:#3c3c3c;border-radius:3px;box-shadow:0 0 0 1px #d8d8d8"></div>
<div class="t" style="left:24px;top:135.5px;font-size:12px;line-height:16px;color:#66d0ff;font-weight:bold;">Bass</div>
<div class="t" style="left:24px;top:148.5px;font-size:10px;line-height:14px;color:#7e9fb6;font-weight:normal;letter-spacing:-0.15px">mono audio (.wav)</div>
<svg style="position:absolute;left:127px;top:156px" width="6" height="3"><path d="M0 0H6L3 3Z" fill="#6ab0d0"/></svg>
<div style="position:absolute;left:161px;top:143px;width:18px;height:9px;border:1px solid #111;border-radius:2px;background:linear-gradient(#30f030,#00c000)"></div>
<div style="position:absolute;left:185px;top:143px;width:18px;height:9px;border:1px solid #111;border-radius:2px;background:linear-gradient(#d4d4d4,#a0a0a0);box-shadow:inset 1px 1px 0 rgba(255,255,255,.45)"></div>
<div class="t" style="left:156.0px;top:154.0px;width:30px;text-align:center;font-size:9px;line-height:13px;color:#000;font-weight:normal;transform:scaleX(0.8);transform-origin:center center;-webkit-text-stroke:0.25px #000">Play</div>
<div class="t" style="left:180.0px;top:154.0px;width:30px;text-align:center;font-size:9px;line-height:13px;color:#000;font-weight:normal;transform:scaleX(0.8);transform-origin:center center;-webkit-text-stroke:0.25px #000">Rec</div>
<div style="position:absolute;left:231px;top:139px;width:1px;height:2px;background:#f8f8f8"></div>
<div style="position:absolute;left:231px;top:155px;width:1px;height:2px;background:#f8f8f8"></div>
<div style="position:absolute;left:241px;top:139px;width:1px;height:2px;background:#f8f8f8"></div>
<div style="position:absolute;left:241px;top:155px;width:1px;height:2px;background:#f8f8f8"></div>
<div style="position:absolute;left:251px;top:139px;width:1px;height:2px;background:#f8f8f8"></div>
<div style="position:absolute;left:251px;top:155px;width:1px;height:2px;background:#f8f8f8"></div>
<div style="position:absolute;left:261px;top:139px;width:1px;height:2px;background:#f8f8f8"></div>
<div style="position:absolute;left:261px;top:155px;width:1px;height:2px;background:#f8f8f8"></div>
<div style="position:absolute;left:271px;top:139px;width:1px;height:2px;background:#f8f8f8"></div>
<div style="position:absolute;left:271px;top:155px;width:1px;height:2px;background:#f8f8f8"></div>
<div style="position:absolute;left:281px;top:139px;width:1px;height:2px;background:#f8f8f8"></div>
<div style="position:absolute;left:281px;top:155px;width:1px;height:2px;background:#f8f8f8"></div>
<div style="position:absolute;left:291px;top:139px;width:1px;height:2px;background:#f8f8f8"></div>
<div style="position:absolute;left:291px;top:155px;width:1px;height:2px;background:#f8f8f8"></div>
<div style="position:absolute;left:301px;top:139px;width:1px;height:2px;background:#f8f8f8"></div>
<div style="position:absolute;left:301px;top:155px;width:1px;height:2px;background:#f8f8f8"></div>
<div style="position:absolute;left:311px;top:139px;width:1px;height:2px;background:#f8f8f8"></div>
<div style="position:absolute;left:311px;top:155px;width:1px;height:2px;background:#f8f8f8"></div>
<div style="position:absolute;left:321px;top:139px;width:1px;height:2px;background:#f8f8f8"></div>
<div style="position:absolute;left:321px;top:155px;width:1px;height:2px;background:#f8f8f8"></div>
<div style="position:absolute;left:331px;top:138px;width:1px;height:5px;background:#f8f8f8"></div>
<div style="position:absolute;left:331px;top:153px;width:1px;height:4px;background:#f8f8f8"></div>
<div style="position:absolute;left:341px;top:139px;width:1px;height:2px;background:#f8f8f8"></div>
<div style="position:absolute;left:341px;top:155px;width:1px;height:2px;background:#f8f8f8"></div>
<div style="position:absolute;left:351px;top:139px;width:1px;height:2px;background:#f8f8f8"></div>
<div style="position:absolute;left:351px;top:155px;width:1px;height:2px;background:#f8f8f8"></div>
<div style="position:absolute;left:231px;top:147px;width:129px;height:1px;background:#7e7e7e"></div>
<div style="position:absolute;left:231px;top:148px;width:129px;height:2px;background:#e6e6e6"></div>
<div style="position:absolute;left:313px;top:141px;width:5px;height:13px;border:1px solid #222;border-radius:2px;background:linear-gradient(90deg,#eee,#999);"></div>
<div class="t" style="left:230px;top:155.5px;font-size:8px;line-height:12px;color:#222;font-weight:bold;transform:scaleX(0.82);transform-origin:left center;">-4.7</div>
<div style="position:absolute;left:376px;top:137px;width:10px;height:8px;border:1px solid #111;border-radius:2px;background:linear-gradient(#d4d4d4,#a0a0a0);box-shadow:inset 1px 1px 0 rgba(255,255,255,.45)"></div>
<div style="position:absolute;left:376px;top:151px;width:10px;height:8px;border:1px solid #111;border-radius:2px;background:linear-gradient(#d4d4d4,#a0a0a0);box-shadow:inset 1px 1px 0 rgba(255,255,255,.45)"></div>
<div class="t" style="left:391.5px;top:135.25px;font-size:9.5px;line-height:13.5px;color:#000;font-weight:bold;transform:scaleX(0.84);transform-origin:left center;">Mute</div>
<div class="t" style="left:391.5px;top:149.25px;font-size:9.5px;line-height:13.5px;color:#000;font-weight:bold;transform:scaleX(0.84);transform-origin:left center;">Solo</div>
<div class="t" style="left:419.8px;top:131.8px;width:10px;text-align:center;font-size:8px;line-height:12px;color:#000;font-weight:bold;transform:scaleX(0.85);transform-origin:center center;">P</div>
<svg style="position:absolute;left:421.5px;top:131.5px;overflow:visible" width="32.0" height="32.0"><rect x="8.50" y="26.50" width="1.6" height="1.6" fill="#111"/><rect x="3.50" y="21.50" width="1.6" height="1.6" fill="#111"/><rect x="2.50" y="15.50" width="1.6" height="1.6" fill="#111"/><rect x="3.50" y="8.50" width="1.6" height="1.6" fill="#111"/><rect x="8.50" y="3.50" width="1.6" height="1.6" fill="#111"/><rect x="15.50" y="2.50" width="1.6" height="1.6" fill="#111"/><rect x="21.50" y="3.50" width="1.6" height="1.6" fill="#111"/><rect x="26.50" y="8.50" width="1.6" height="1.6" fill="#111"/><rect x="28.50" y="15.50" width="1.6" height="1.6" fill="#111"/><rect x="26.50" y="21.50" width="1.6" height="1.6" fill="#111"/><rect x="21.50" y="26.50" width="1.6" height="1.6" fill="#111"/></svg>
<div style="position:absolute;left:429.6px;top:139.9px;width:19px;height:19px;border-radius:50%;background:#333;opacity:.85;filter:blur(0.6px)"></div>
<div style="position:absolute;left:428.0px;top:138.0px;width:19px;height:19px;border-radius:50%;background:conic-gradient(from 0deg,#f4f4f4 0deg,#ffffff 35deg,#e4e4e4 75deg,#9c9c9c 122deg,#e6e6e6 165deg,#ffffff 210deg,#e2e2e2 255deg,#a4a4a4 302deg,#e8e8e8 340deg,#f4f4f4 360deg);box-shadow:inset 0 0 0 0.8px #8a8a8a, inset -1px -1px 1px rgba(0,0,0,.25)"></div>
<div style="position:absolute;left:435.2px;top:139.2px;width:4.5px;height:4.5px;border-radius:50%;background:#0000ee"></div>
<div class="t" style="left:428.5px;top:155.5px;width:20px;text-align:center;font-size:8px;line-height:12px;color:#222;font-weight:bold;transform:scaleX(0.8);transform-origin:center center;">50</div>
<div class="t" style="left:455.2px;top:131.8px;width:10px;text-align:center;font-size:8px;line-height:12px;color:#000;font-weight:bold;transform:scaleX(0.85);transform-origin:center center;">1</div>
<svg style="position:absolute;left:458.0px;top:131.8px;overflow:visible" width="32.0" height="32.0"><rect x="9.00" y="26.20" width="1.6" height="1.6" fill="#111"/><rect x="4.00" y="22.20" width="1.6" height="1.6" fill="#111"/><rect x="2.00" y="15.20" width="1.6" height="1.6" fill="#111"/><rect x="4.00" y="8.20" width="1.6" height="1.6" fill="#111"/><rect x="9.00" y="4.20" width="1.6" height="1.6" fill="#111"/><rect x="15.00" y="2.20" width="1.6" height="1.6" fill="#111"/><rect x="22.00" y="4.20" width="1.6" height="1.6" fill="#111"/><rect x="26.00" y="8.20" width="1.6" height="1.6" fill="#111"/><rect x="28.00" y="15.20" width="1.6" height="1.6" fill="#111"/><rect x="26.00" y="22.20" width="1.6" height="1.6" fill="#111"/><rect x="22.00" y="26.20" width="1.6" height="1.6" fill="#111"/></svg>
<div style="position:absolute;left:466.1px;top:140.2px;width:19px;height:19px;border-radius:50%;background:#333;opacity:.85;filter:blur(0.6px)"></div>
<div style="position:absolute;left:464.5px;top:138.3px;width:19px;height:19px;border-radius:50%;background:conic-gradient(from 0deg,#f4f4f4 0deg,#ffffff 35deg,#e4e4e4 75deg,#9c9c9c 122deg,#e6e6e6 165deg,#ffffff 210deg,#e2e2e2 255deg,#a4a4a4 302deg,#e8e8e8 340deg,#f4f4f4 360deg);box-shadow:inset 0 0 0 0.8px #8a8a8a, inset -1px -1px 1px rgba(0,0,0,.25)"></div>
<div style="position:absolute;left:468.6px;top:150.6px;width:4.5px;height:4.5px;border-radius:50%;background:#000"></div>
<div class="t" style="left:464.5px;top:155.5px;width:20px;text-align:center;font-size:8px;line-height:12px;color:#111;font-weight:bold;">-</div>
<div style="position:absolute;left:539px;top:136px;width:31px;height:11px;background:#3c3c3c;border-radius:3px;box-shadow:0 0 0 1px #d0d0d0"></div>
<div class="t" style="left:534.5px;top:134.5px;width:40px;text-align:center;font-size:10px;line-height:14px;color:#66d0ff;font-weight:normal;">Comp</div>
<div style="position:absolute;left:545px;top:151px;width:17px;height:9px;border:1px solid #111;border-radius:2px;background:linear-gradient(#d4d4d4,#a0a0a0);box-shadow:inset 1px 1px 0 rgba(255,255,255,.45)"></div>
<svg style="position:absolute;left:566px;top:155px" width="5" height="3"><path d="M0 0H5L2.5 3Z" fill="#888"/></svg>
<div style="position:absolute;left:574px;top:136px;width:31px;height:11px;background:#3c3c3c;border-radius:3px;box-shadow:0 0 0 1px #d0d0d0"></div>
<div class="t" style="left:569.5px;top:134.5px;width:40px;text-align:center;font-size:10px;line-height:14px;color:#66d0ff;font-weight:normal;">EQ</div>
<div style="position:absolute;left:580px;top:151px;width:17px;height:9px;border:1px solid #111;border-radius:2px;background:linear-gradient(#d4d4d4,#a0a0a0);box-shadow:inset 1px 1px 0 rgba(255,255,255,.45)"></div>
<svg style="position:absolute;left:601px;top:155px" width="5" height="3"><path d="M0 0H5L2.5 3Z" fill="#888"/></svg>
<div style="position:absolute;left:609px;top:136px;width:31px;height:11px;background:#3c3c3c;border-radius:3px;box-shadow:0 0 0 1px #d0d0d0"></div>
<div style="position:absolute;left:615px;top:151px;width:17px;height:9px;border:1px solid #111;border-radius:2px;background:linear-gradient(#d4d4d4,#a0a0a0);box-shadow:inset 1px 1px 0 rgba(255,255,255,.45)"></div>
<svg style="position:absolute;left:636px;top:155px" width="5" height="3"><path d="M0 0H5L2.5 3Z" fill="#888"/></svg>
<div style="position:absolute;left:693px;top:137px;width:271px;height:16px;background:#083a16;border-radius:2px"></div>
<svg style="position:absolute;left:693px;top:137px;shape-rendering:crispEdges" width="271" height="16"><rect x="1" y="1.5" width="4" height="7.5" fill="#00ff00"/><rect x="1" y="8" width="4" height="7" fill="#00ff00"/><rect x="1" y="8" width="4" height="1" fill="#10c010" opacity="0.6"/><rect x="6" y="1.5" width="4" height="7.5" fill="#00ff00"/><rect x="6" y="8" width="4" height="7" fill="#00ff00"/><rect x="6" y="8" width="4" height="1" fill="#10c010" opacity="0.6"/><rect x="11" y="1.5" width="4" height="7.5" fill="#00ff00"/><rect x="11" y="8" width="4" height="7" fill="#00ff00"/><rect x="11" y="8" width="4" height="1" fill="#10c010" opacity="0.6"/><rect x="16" y="1.5" width="4" height="7.5" fill="#00ff00"/><rect x="16" y="8" width="4" height="7" fill="#00ff00"/><rect x="16" y="8" width="4" height="1" fill="#10c010" opacity="0.6"/><rect x="21" y="1.5" width="4" height="7.5" fill="#00ff00"/><rect x="21" y="8" width="4" height="7" fill="#00ff00"/><rect x="21" y="8" width="4" height="1" fill="#10c010" opacity="0.6"/><rect x="26" y="1.5" width="4" height="7.5" fill="#00ff00"/><rect x="26" y="8" width="4" height="7" fill="#00ff00"/><rect x="26" y="8" width="4" height="1" fill="#10c010" opacity="0.6"/><rect x="31" y="1.5" width="4" height="7.5" fill="#00ff00"/><rect x="31" y="8" width="4" height="7" fill="#00ff00"/><rect x="31" y="8" width="4" height="1" fill="#10c010" opacity="0.6"/><rect x="36" y="1.5" width="4" height="7.5" fill="#00ff00"/><rect x="36" y="8" width="4" height="7" fill="#00ff00"/><rect x="36" y="8" width="4" height="1" fill="#10c010" opacity="0.6"/><rect x="41" y="1.5" width="4" height="7.5" fill="#00ff00"/><rect x="41" y="8" width="4" height="7" fill="#00ff00"/><rect x="41" y="8" width="4" height="1" fill="#10c010" opacity="0.6"/><rect x="46" y="1.5" width="4" height="7.5" fill="#00ff00"/><rect x="46" y="8" width="4" height="7" fill="#00ff00"/><rect x="46" y="8" width="4" height="1" fill="#10c010" opacity="0.6"/><rect x="51" y="1.5" width="4" height="7.5" fill="#00ff00"/><rect x="51" y="8" width="4" height="7" fill="#00ff00"/><rect x="51" y="8" width="4" height="1" fill="#10c010" opacity="0.6"/><rect x="56" y="1.5" width="4" height="7.5" fill="#00ff00"/><rect x="56" y="8" width="4" height="7" fill="#00ff00"/><rect x="56" y="8" width="4" height="1" fill="#10c010" opacity="0.6"/><rect x="61" y="1.5" width="4" height="7.5" fill="#00ff00"/><rect x="61" y="8" width="4" height="7" fill="#00ff00"/><rect x="61" y="8" width="4" height="1" fill="#10c010" opacity="0.6"/><rect x="66" y="1.5" width="4" height="7.5" fill="#00ff00"/><rect x="66" y="8" width="4" height="7" fill="#00ff00"/><rect x="66" y="8" width="4" height="1" fill="#10c010" opacity="0.6"/><rect x="71" y="1.5" width="4" height="7.5" fill="#00ff00"/><rect x="71" y="8" width="4" height="7" fill="#00ff00"/><rect x="71" y="8" width="4" height="1" fill="#10c010" opacity="0.6"/><rect x="76" y="1.5" width="4" height="7.5" fill="#00ff00"/><rect x="76" y="8" width="4" height="7" fill="#00ff00"/><rect x="76" y="8" width="4" height="1" fill="#10c010" opacity="0.6"/><rect x="81" y="1.5" width="4" height="7.5" fill="#00ff00"/><rect x="81" y="8" width="4" height="7" fill="#00ff00"/><rect x="81" y="8" width="4" height="1" fill="#10c010" opacity="0.6"/><rect x="86" y="1.5" width="4" height="7.5" fill="#00ff00"/><rect x="86" y="8" width="4" height="7" fill="#00ff00"/><rect x="86" y="8" width="4" height="1" fill="#10c010" opacity="0.6"/><rect x="91" y="1.5" width="4" height="7.5" fill="#00ff00"/><rect x="91" y="8" width="4" height="7" fill="#00ff00"/><rect x="91" y="8" width="4" height="1" fill="#10c010" opacity="0.6"/><rect x="96" y="1.5" width="4" height="7.5" fill="#00ff00"/><rect x="96" y="8" width="4" height="7" fill="#00ff00"/><rect x="96" y="8" width="4" height="1" fill="#10c010" opacity="0.6"/><rect x="101" y="2" width="4" height="6" fill="#0b4612"/><rect x="101" y="9" width="4" height="6" fill="#0b4612"/><rect x="106" y="2" width="4" height="6" fill="#0b4612"/><rect x="106" y="9" width="4" height="6" fill="#0b4612"/><rect x="111" y="2" width="4" height="6" fill="#0b4612"/><rect x="111" y="9" width="4" height="6" fill="#0b4612"/><rect x="116" y="2" width="4" height="6" fill="#0b4612"/><rect x="116" y="9" width="4" height="6" fill="#0b4612"/><rect x="121" y="1.5" width="4" height="7.5" fill="#00ff00"/><rect x="121" y="8" width="4" height="7" fill="#00ff00"/><rect x="121" y="8" width="4" height="1" fill="#10c010" opacity="0.6"/><rect x="126" y="2" width="4" height="6" fill="#0b4612"/><rect x="126" y="9" width="4" height="6" fill="#0b4612"/><rect x="131" y="2" width="4" height="6" fill="#0b4612"/><rect x="131" y="9" width="4" height="6" fill="#0b4612"/><rect x="136" y="2" width="4" height="6" fill="#0b4612"/><rect x="136" y="9" width="4" height="6" fill="#0b4612"/><rect x="141" y="2" width="4" height="6" fill="#0b4612"/><rect x="141" y="9" width="4" height="6" fill="#0b4612"/><rect x="146" y="2" width="4" height="6" fill="#0b4612"/><rect x="146" y="9" width="4" height="6" fill="#0b4612"/><rect x="151" y="2" width="4" height="6" fill="#0b4612"/><rect x="151" y="9" width="4" height="6" fill="#0b4612"/><rect x="156" y="2" width="4" height="6" fill="#0b4612"/><rect x="156" y="9" width="4" height="6" fill="#0b4612"/><rect x="161" y="2" width="4" height="6" fill="#0b4612"/><rect x="161" y="9" width="4" height="6" fill="#0b4612"/><rect x="166" y="2" width="4" height="6" fill="#0b4612"/><rect x="166" y="9" width="4" height="6" fill="#0b4612"/><rect x="171" y="2" width="4" height="6" fill="#574c00"/><rect x="171" y="9" width="4" height="6" fill="#574c00"/><rect x="176" y="2" width="4" height="6" fill="#574c00"/><rect x="176" y="9" width="4" height="6" fill="#574c00"/><rect x="181" y="2" width="4" height="6" fill="#574c00"/><rect x="181" y="9" width="4" height="6" fill="#574c00"/><rect x="186" y="2" width="4" height="6" fill="#574c00"/><rect x="186" y="9" width="4" height="6" fill="#574c00"/><rect x="191" y="2" width="4" height="6" fill="#574c00"/><rect x="191" y="9" width="4" height="6" fill="#574c00"/><rect x="196" y="2" width="4" height="6" fill="#574c00"/><rect x="196" y="9" width="4" height="6" fill="#574c00"/><rect x="201" y="2" width="4" height="6" fill="#574c00"/><rect x="201" y="9" width="4" height="6" fill="#574c00"/><rect x="206" y="2" width="4" height="6" fill="#574c00"/><rect x="206" y="9" width="4" height="6" fill="#574c00"/><rect x="211" y="2" width="4" height="6" fill="#574c00"/><rect x="211" y="9" width="4" height="6" fill="#574c00"/><rect x="216" y="2" width="4" height="6" fill="#574c00"/><rect x="216" y="9" width="4" height="6" fill="#574c00"/><rect x="221" y="2" width="4" height="6" fill="#600808"/><rect x="221" y="9" width="4" height="6" fill="#600808"/><rect x="226" y="2" width="4" height="6" fill="#600808"/><rect x="226" y="9" width="4" height="6" fill="#600808"/><rect x="231" y="2" width="4" height="6" fill="#600808"/><rect x="231" y="9" width="4" height="6" fill="#600808"/><rect x="236" y="2" width="4" height="6" fill="#600808"/><rect x="236" y="9" width="4" height="6" fill="#600808"/><rect x="241" y="2" width="4" height="6" fill="#600808"/><rect x="241" y="9" width="4" height="6" fill="#600808"/><rect x="246" y="2" width="4" height="6" fill="#600808"/><rect x="246" y="9" width="4" height="6" fill="#600808"/><rect x="251" y="2" width="4" height="6" fill="#600808"/><rect x="251" y="9" width="4" height="6" fill="#600808"/><rect x="256" y="2" width="4" height="6" fill="#600808"/><rect x="256" y="9" width="4" height="6" fill="#600808"/><rect x="261" y="2" width="4" height="6" fill="#600808"/><rect x="261" y="9" width="4" height="6" fill="#600808"/><rect x="266" y="2" width="4" height="6" fill="#600808"/><rect x="266" y="9" width="4" height="6" fill="#600808"/></svg>
<div style="position:absolute;left:693px;top:155px;width:1px;height:1px;background:#000"></div>
<div class="t" style="left:693px;top:154.85px;font-size:7.5px;line-height:11.5px;color:#000;font-weight:bold;transform:scaleX(0.98);transform-origin:left center;">-50</div>
<div style="position:absolute;left:753px;top:155px;width:1px;height:1px;background:#000"></div>
<div class="t" style="left:738.0px;top:154.85px;width:30px;text-align:center;font-size:7.5px;line-height:11.5px;color:#000;font-weight:bold;transform:scaleX(0.98);transform-origin:center center;">-20</div>
<div style="position:absolute;left:813px;top:155px;width:1px;height:1px;background:#000"></div>
<div class="t" style="left:798.0px;top:154.85px;width:30px;text-align:center;font-size:7.5px;line-height:11.5px;color:#000;font-weight:bold;transform:scaleX(0.98);transform-origin:center center;">-10</div>
<div style="position:absolute;left:863px;top:155px;width:1px;height:1px;background:#000"></div>
<div class="t" style="left:848.0px;top:154.85px;width:30px;text-align:center;font-size:7.5px;line-height:11.5px;color:#000;font-weight:bold;transform:scaleX(0.98);transform-origin:center center;">-5</div>
<div style="position:absolute;left:913px;top:155px;width:1px;height:1px;background:#000"></div>
<div class="t" style="left:898.0px;top:154.85px;width:30px;text-align:center;font-size:7.5px;line-height:11.5px;color:#000;font-weight:bold;transform:scaleX(0.98);transform-origin:center center;">0</div>
<div style="position:absolute;left:963px;top:155px;width:1px;height:1px;background:#000"></div>
<div class="t" style="left:934px;top:154.85px;width:30px;text-align:right;font-size:7.5px;line-height:11.5px;color:#000;font-weight:bold;transform:scaleX(0.98);transform-origin:right center;">+5</div>
<div style="position:absolute;left:1196px;top:138px;width:20px;height:20px;border:1px solid #111;border-radius:2px;background:linear-gradient(#dcdcdc,#a9a9a9);box-shadow:inset 1px 1px 0 rgba(255,255,255,.55);"><div class="t" style="left:0;top:0.5px;width:100%;height:100%;text-align:center;line-height:20px;font-size:8.5px;font-weight:normal;color:#000;transform:scaleX(0.85);-webkit-text-stroke:0.35px #000">EDIT</div></div>
<div style="position:absolute;left:1225px;top:138px;width:5px;height:3px;background:#808080"></div>
<div style="position:absolute;left:8px;top:166px;width:1226px;height:1px;background:#e4e4e4"></div>
<div style="position:absolute;left:8px;top:167px;width:1226px;height:32px;background:linear-gradient(#c6c6c6,#bababa)"></div>
<div style="position:absolute;left:8px;top:199px;width:1226px;height:1px;background:#7c7c7c"></div>
<div style="position:absolute;left:8px;top:167px;width:13px;height:32px;background:linear-gradient(90deg,#a8a8a8,#c0c0c0)"></div>
<div style="position:absolute;left:21px;top:171px;width:114px;height:24px;background:#3c3c3c;border-radius:3px;box-shadow:0 0 0 1px #d8d8d8"></div>
<div class="t" style="left:24px;top:169.5px;font-size:12px;line-height:16px;color:#66d0ff;font-weight:bold;">EGuitar</div>
<div class="t" style="left:24px;top:182.5px;font-size:10px;line-height:14px;color:#7e9fb6;font-weight:normal;letter-spacing:-0.15px">mono audio (.gjm)</div>
<svg style="position:absolute;left:127px;top:190px" width="6" height="3"><path d="M0 0H6L3 3Z" fill="#6ab0d0"/></svg>
<div style="position:absolute;left:161px;top:177px;width:18px;height:9px;border:1px solid #111;border-radius:2px;background:linear-gradient(#30f030,#00c000)"></div>
<div style="position:absolute;left:185px;top:177px;width:18px;height:9px;border:1px solid #111;border-radius:2px;background:linear-gradient(#d4d4d4,#a0a0a0);box-shadow:inset 1px 1px 0 rgba(255,255,255,.45)"></div>
<div class="t" style="left:156.0px;top:188.0px;width:30px;text-align:center;font-size:9px;line-height:13px;color:#000;font-weight:normal;transform:scaleX(0.8);transform-origin:center center;-webkit-text-stroke:0.25px #000">Play</div>
<div class="t" style="left:180.0px;top:188.0px;width:30px;text-align:center;font-size:9px;line-height:13px;color:#000;font-weight:normal;transform:scaleX(0.8);transform-origin:center center;-webkit-text-stroke:0.25px #000">Rec</div>
<div style="position:absolute;left:231px;top:173px;width:1px;height:2px;background:#f8f8f8"></div>
<div style="position:absolute;left:231px;top:189px;width:1px;height:2px;background:#f8f8f8"></div>
<div style="position:absolute;left:241px;top:173px;width:1px;height:2px;background:#f8f8f8"></div>
<div style="position:absolute;left:241px;top:189px;width:1px;height:2px;background:#f8f8f8"></div>
<div style="position:absolute;left:251px;top:173px;width:1px;height:2px;background:#f8f8f8"></div>
<div style="position:absolute;left:251px;top:189px;width:1px;height:2px;background:#f8f8f8"></div>
<div style="position:absolute;left:261px;top:173px;width:1px;height:2px;background:#f8f8f8"></div>
<div style="position:absolute;left:261px;top:189px;width:1px;height:2px;background:#f8f8f8"></div>
<div style="position:absolute;left:271px;top:173px;width:1px;height:2px;background:#f8f8f8"></div>
<div style="position:absolute;left:271px;top:189px;width:1px;height:2px;background:#f8f8f8"></div>
<div style="position:absolute;left:281px;top:173px;width:1px;height:2px;background:#f8f8f8"></div>
<div style="position:absolute;left:281px;top:189px;width:1px;height:2px;background:#f8f8f8"></div>
<div style="position:absolute;left:291px;top:173px;width:1px;height:2px;background:#f8f8f8"></div>
<div style="position:absolute;left:291px;top:189px;width:1px;height:2px;background:#f8f8f8"></div>
<div style="position:absolute;left:301px;top:173px;width:1px;height:2px;background:#f8f8f8"></div>
<div style="position:absolute;left:301px;top:189px;width:1px;height:2px;background:#f8f8f8"></div>
<div style="position:absolute;left:311px;top:173px;width:1px;height:2px;background:#f8f8f8"></div>
<div style="position:absolute;left:311px;top:189px;width:1px;height:2px;background:#f8f8f8"></div>
<div style="position:absolute;left:321px;top:173px;width:1px;height:2px;background:#f8f8f8"></div>
<div style="position:absolute;left:321px;top:189px;width:1px;height:2px;background:#f8f8f8"></div>
<div style="position:absolute;left:331px;top:172px;width:1px;height:5px;background:#f8f8f8"></div>
<div style="position:absolute;left:331px;top:187px;width:1px;height:4px;background:#f8f8f8"></div>
<div style="position:absolute;left:341px;top:173px;width:1px;height:2px;background:#f8f8f8"></div>
<div style="position:absolute;left:341px;top:189px;width:1px;height:2px;background:#f8f8f8"></div>
<div style="position:absolute;left:351px;top:173px;width:1px;height:2px;background:#f8f8f8"></div>
<div style="position:absolute;left:351px;top:189px;width:1px;height:2px;background:#f8f8f8"></div>
<div style="position:absolute;left:231px;top:181px;width:129px;height:1px;background:#7e7e7e"></div>
<div style="position:absolute;left:231px;top:182px;width:129px;height:2px;background:#e6e6e6"></div>
<div style="position:absolute;left:324px;top:175px;width:5px;height:13px;border:1px solid #222;border-radius:2px;background:linear-gradient(90deg,#eee,#999);"></div>
<div class="t" style="left:230px;top:189.5px;font-size:8px;line-height:12px;color:#222;font-weight:bold;transform:scaleX(0.82);transform-origin:left center;">-1.2</div>
<div style="position:absolute;left:376px;top:171px;width:10px;height:8px;border:1px solid #111;border-radius:2px;background:linear-gradient(#d4d4d4,#a0a0a0);box-shadow:inset 1px 1px 0 rgba(255,255,255,.45)"></div>
<div style="position:absolute;left:376px;top:185px;width:10px;height:8px;border:1px solid #111;border-radius:2px;background:linear-gradient(#d4d4d4,#a0a0a0);box-shadow:inset 1px 1px 0 rgba(255,255,255,.45)"></div>
<div class="t" style="left:391.5px;top:169.25px;font-size:9.5px;line-height:13.5px;color:#000;font-weight:bold;transform:scaleX(0.84);transform-origin:left center;">Mute</div>
<div class="t" style="left:391.5px;top:183.25px;font-size:9.5px;line-height:13.5px;color:#000;font-weight:bold;transform:scaleX(0.84);transform-origin:left center;">Solo</div>
<div class="t" style="left:419.8px;top:165.8px;width:10px;text-align:center;font-size:8px;line-height:12px;color:#000;font-weight:bold;transform:scaleX(0.85);transform-origin:center center;">P</div>
<svg style="position:absolute;left:421.5px;top:165.5px;overflow:visible" width="32.0" height="32.0"><rect x="8.50" y="26.50" width="1.6" height="1.6" fill="#111"/><rect x="3.50" y="21.50" width="1.6" height="1.6" fill="#111"/><rect x="2.50" y="15.50" width="1.6" height="1.6" fill="#111"/><rect x="3.50" y="8.50" width="1.6" height="1.6" fill="#111"/><rect x="8.50" y="3.50" width="1.6" height="1.6" fill="#111"/><rect x="15.50" y="2.50" width="1.6" height="1.6" fill="#111"/><rect x="21.50" y="3.50" width="1.6" height="1.6" fill="#111"/><rect x="26.50" y="8.50" width="1.6" height="1.6" fill="#111"/><rect x="28.50" y="15.50" width="1.6" height="1.6" fill="#111"/><rect x="26.50" y="21.50" width="1.6" height="1.6" fill="#111"/><rect x="21.50" y="26.50" width="1.6" height="1.6" fill="#111"/></svg>
<div style="position:absolute;left:429.6px;top:173.9px;width:19px;height:19px;border-radius:50%;background:#333;opacity:.85;filter:blur(0.6px)"></div>
<div style="position:absolute;left:428.0px;top:172.0px;width:19px;height:19px;border-radius:50%;background:conic-gradient(from 0deg,#f4f4f4 0deg,#ffffff 35deg,#e4e4e4 75deg,#9c9c9c 122deg,#e6e6e6 165deg,#ffffff 210deg,#e2e2e2 255deg,#a4a4a4 302deg,#e8e8e8 340deg,#f4f4f4 360deg);box-shadow:inset 0 0 0 0.8px #8a8a8a, inset -1px -1px 1px rgba(0,0,0,.25)"></div>
<div style="position:absolute;left:435.2px;top:173.2px;width:4.5px;height:4.5px;border-radius:50%;background:#0000ee"></div>
<div class="t" style="left:428.5px;top:189.5px;width:20px;text-align:center;font-size:8px;line-height:12px;color:#222;font-weight:bold;transform:scaleX(0.8);transform-origin:center center;">50</div>
<div class="t" style="left:455.2px;top:165.8px;width:10px;text-align:center;font-size:8px;line-height:12px;color:#000;font-weight:bold;transform:scaleX(0.85);transform-origin:center center;">1</div>
<svg style="position:absolute;left:458.0px;top:165.8px;overflow:visible" width="32.0" height="32.0"><rect x="9.00" y="26.20" width="1.6" height="1.6" fill="#111"/><rect x="4.00" y="22.20" width="1.6" height="1.6" fill="#111"/><rect x="2.00" y="15.20" width="1.6" height="1.6" fill="#111"/><rect x="4.00" y="8.20" width="1.6" height="1.6" fill="#111"/><rect x="9.00" y="4.20" width="1.6" height="1.6" fill="#111"/><rect x="15.00" y="2.20" width="1.6" height="1.6" fill="#111"/><rect x="22.00" y="4.20" width="1.6" height="1.6" fill="#111"/><rect x="26.00" y="8.20" width="1.6" height="1.6" fill="#111"/><rect x="28.00" y="15.20" width="1.6" height="1.6" fill="#111"/><rect x="26.00" y="22.20" width="1.6" height="1.6" fill="#111"/><rect x="22.00" y="26.20" width="1.6" height="1.6" fill="#111"/></svg>
<div style="position:absolute;left:466.1px;top:174.2px;width:19px;height:19px;border-radius:50%;background:#333;opacity:.85;filter:blur(0.6px)"></div>
<div style="position:absolute;left:464.5px;top:172.3px;width:19px;height:19px;border-radius:50%;background:conic-gradient(from 0deg,#f4f4f4 0deg,#ffffff 35deg,#e4e4e4 75deg,#9c9c9c 122deg,#e6e6e6 165deg,#ffffff 210deg,#e2e2e2 255deg,#a4a4a4 302deg,#e8e8e8 340deg,#f4f4f4 360deg);box-shadow:inset 0 0 0 0.8px #8a8a8a, inset -1px -1px 1px rgba(0,0,0,.25)"></div>
<div style="position:absolute;left:468.6px;top:184.6px;width:4.5px;height:4.5px;border-radius:50%;background:#000"></div>
<div class="t" style="left:464.5px;top:189.5px;width:20px;text-align:center;font-size:8px;line-height:12px;color:#111;font-weight:bold;">-</div>
<div style="position:absolute;left:539px;top:170px;width:31px;height:11px;background:#3c3c3c;border-radius:3px;box-shadow:0 0 0 1px #d0d0d0"></div>
<div class="t" style="left:534.5px;top:168.5px;width:40px;text-align:center;font-size:10px;line-height:14px;color:#4ab0d8;font-weight:normal;">Tune</div>
<div style="position:absolute;left:545px;top:185px;width:17px;height:9px;border:1px solid #111;border-radius:2px;background:linear-gradient(#d4d4d4,#a0a0a0);box-shadow:inset 1px 1px 0 rgba(255,255,255,.45)"></div>
<svg style="position:absolute;left:566px;top:189px" width="5" height="3"><path d="M0 0H5L2.5 3Z" fill="#888"/></svg>
<div style="position:absolute;left:574px;top:170px;width:31px;height:11px;background:#3c3c3c;border-radius:3px;box-shadow:0 0 0 1px #d0d0d0"></div>
<div class="t" style="left:569.5px;top:168.5px;width:40px;text-align:center;font-size:10px;line-height:14px;color:#66d0ff;font-weight:normal;">Amp</div>
<div style="position:absolute;left:580px;top:185px;width:17px;height:9px;border:1px solid #111;border-radius:2px;background:linear-gradient(#d4d4d4,#a0a0a0);box-shadow:inset 1px 1px 0 rgba(255,255,255,.45)"></div>
<svg style="position:absolute;left:601px;top:189px" width="5" height="3"><path d="M0 0H5L2.5 3Z" fill="#888"/></svg>
<div style="position:absolute;left:609px;top:170px;width:31px;height:11px;background:#3c3c3c;border-radius:3px;box-shadow:0 0 0 1px #d0d0d0"></div>
<div style="position:absolute;left:615px;top:185px;width:17px;height:9px;border:1px solid #111;border-radius:2px;background:linear-gradient(#d4d4d4,#a0a0a0);box-shadow:inset 1px 1px 0 rgba(255,255,255,.45)"></div>
<svg style="position:absolute;left:636px;top:189px" width="5" height="3"><path d="M0 0H5L2.5 3Z" fill="#888"/></svg>
<div style="position:absolute;left:693px;top:171px;width:271px;height:16px;background:#083a16;border-radius:2px"></div>
<svg style="position:absolute;left:693px;top:171px;shape-rendering:crispEdges" width="271" height="16"><rect x="1" y="1.5" width="4" height="7.5" fill="#00ff00"/><rect x="1" y="8" width="4" height="7" fill="#00ff00"/><rect x="1" y="8" width="4" height="1" fill="#10c010" opacity="0.6"/><rect x="6" y="1.5" width="4" height="7.5" fill="#00ff00"/><rect x="6" y="8" width="4" height="7" fill="#00ff00"/><rect x="6" y="8" width="4" height="1" fill="#10c010" opacity="0.6"/><rect x="11" y="1.5" width="4" height="7.5" fill="#00ff00"/><rect x="11" y="8" width="4" height="7" fill="#00ff00"/><rect x="11" y="8" width="4" height="1" fill="#10c010" opacity="0.6"/><rect x="16" y="1.5" width="4" height="7.5" fill="#00ff00"/><rect x="16" y="8" width="4" height="7" fill="#00ff00"/><rect x="16" y="8" width="4" height="1" fill="#10c010" opacity="0.6"/><rect x="21" y="1.5" width="4" height="7.5" fill="#00ff00"/><rect x="21" y="8" width="4" height="7" fill="#00ff00"/><rect x="21" y="8" width="4" height="1" fill="#10c010" opacity="0.6"/><rect x="26" y="1.5" width="4" height="7.5" fill="#00ff00"/><rect x="26" y="8" width="4" height="7" fill="#00ff00"/><rect x="26" y="8" width="4" height="1" fill="#10c010" opacity="0.6"/><rect x="31" y="1.5" width="4" height="7.5" fill="#00ff00"/><rect x="31" y="8" width="4" height="7" fill="#00ff00"/><rect x="31" y="8" width="4" height="1" fill="#10c010" opacity="0.6"/><rect x="36" y="1.5" width="4" height="7.5" fill="#00ff00"/><rect x="36" y="8" width="4" height="7" fill="#00ff00"/><rect x="36" y="8" width="4" height="1" fill="#10c010" opacity="0.6"/><rect x="41" y="1.5" width="4" height="7.5" fill="#00ff00"/><rect x="41" y="8" width="4" height="7" fill="#00ff00"/><rect x="41" y="8" width="4" height="1" fill="#10c010" opacity="0.6"/><rect x="46" y="1.5" width="4" height="7.5" fill="#00ff00"/><rect x="46" y="8" width="4" height="7" fill="#00ff00"/><rect x="46" y="8" width="4" height="1" fill="#10c010" opacity="0.6"/><rect x="51" y="1.5" width="4" height="7.5" fill="#00ff00"/><rect x="51" y="8" width="4" height="7" fill="#00ff00"/><rect x="51" y="8" width="4" height="1" fill="#10c010" opacity="0.6"/><rect x="56" y="1.5" width="4" height="7.5" fill="#00ff00"/><rect x="56" y="8" width="4" height="7" fill="#00ff00"/><rect x="56" y="8" width="4" height="1" fill="#10c010" opacity="0.6"/><rect x="61" y="1.5" width="4" height="7.5" fill="#00ff00"/><rect x="61" y="8" width="4" height="7" fill="#00ff00"/><rect x="61" y="8" width="4" height="1" fill="#10c010" opacity="0.6"/><rect x="66" y="1.5" width="4" height="7.5" fill="#00ff00"/><rect x="66" y="8" width="4" height="7" fill="#00ff00"/><rect x="66" y="8" width="4" height="1" fill="#10c010" opacity="0.6"/><rect x="71" y="1.5" width="4" height="7.5" fill="#00ff00"/><rect x="71" y="8" width="4" height="7" fill="#00ff00"/><rect x="71" y="8" width="4" height="1" fill="#10c010" opacity="0.6"/><rect x="76" y="1.5" width="4" height="7.5" fill="#00ff00"/><rect x="76" y="8" width="4" height="7" fill="#00ff00"/><rect x="76" y="8" width="4" height="1" fill="#10c010" opacity="0.6"/><rect x="81" y="1.5" width="4" height="7.5" fill="#00ff00"/><rect x="81" y="8" width="4" height="7" fill="#00ff00"/><rect x="81" y="8" width="4" height="1" fill="#10c010" opacity="0.6"/><rect x="86" y="1.5" width="4" height="7.5" fill="#00ff00"/><rect x="86" y="8" width="4" height="7" fill="#00ff00"/><rect x="86" y="8" width="4" height="1" fill="#10c010" opacity="0.6"/><rect x="91" y="1.5" width="4" height="7.5" fill="#00ff00"/><rect x="91" y="8" width="4" height="7" fill="#00ff00"/><rect x="91" y="8" width="4" height="1" fill="#10c010" opacity="0.6"/><rect x="96" y="1.5" width="4" height="7.5" fill="#00ff00"/><rect x="96" y="8" width="4" height="7" fill="#00ff00"/><rect x="96" y="8" width="4" height="1" fill="#10c010" opacity="0.6"/><rect x="101" y="1.5" width="4" height="7.5" fill="#00ff00"/><rect x="101" y="8" width="4" height="7" fill="#00ff00"/><rect x="101" y="8" width="4" height="1" fill="#10c010" opacity="0.6"/><rect x="106" y="1.5" width="4" height="7.5" fill="#00ff00"/><rect x="106" y="8" width="4" height="7" fill="#00ff00"/><rect x="106" y="8" width="4" height="1" fill="#10c010" opacity="0.6"/><rect x="111" y="1.5" width="4" height="7.5" fill="#00ff00"/><rect x="111" y="8" width="4" height="7" fill="#00ff00"/><rect x="111" y="8" width="4" height="1" fill="#10c010" opacity="0.6"/><rect x="116" y="1.5" width="4" height="7.5" fill="#00ff00"/><rect x="116" y="8" width="4" height="7" fill="#00ff00"/><rect x="116" y="8" width="4" height="1" fill="#10c010" opacity="0.6"/><rect x="121" y="1.5" width="4" height="7.5" fill="#00ff00"/><rect x="121" y="8" width="4" height="7" fill="#00ff00"/><rect x="121" y="8" width="4" height="1" fill="#10c010" opacity="0.6"/><rect x="126" y="1.5" width="4" height="7.5" fill="#00ff00"/><rect x="126" y="8" width="4" height="7" fill="#00ff00"/><rect x="126" y="8" width="4" height="1" fill="#10c010" opacity="0.6"/><rect x="131" y="1.5" width="4" height="7.5" fill="#00ff00"/><rect x="131" y="8" width="4" height="7" fill="#00ff00"/><rect x="131" y="8" width="4" height="1" fill="#10c010" opacity="0.6"/><rect x="136" y="1.5" width="4" height="7.5" fill="#00ff00"/><rect x="136" y="8" width="4" height="7" fill="#00ff00"/><rect x="136" y="8" width="4" height="1" fill="#10c010" opacity="0.6"/><rect x="141" y="1.5" width="4" height="7.5" fill="#00ff00"/><rect x="141" y="8" width="4" height="7" fill="#00ff00"/><rect x="141" y="8" width="4" height="1" fill="#10c010" opacity="0.6"/><rect x="146" y="1.5" width="4" height="7.5" fill="#00ff00"/><rect x="146" y="8" width="4" height="7" fill="#00ff00"/><rect x="146" y="8" width="4" height="1" fill="#10c010" opacity="0.6"/><rect x="151" y="1.5" width="4" height="7.5" fill="#00ff00"/><rect x="151" y="8" width="4" height="7" fill="#00ff00"/><rect x="151" y="8" width="4" height="1" fill="#10c010" opacity="0.6"/><rect x="156" y="1.5" width="4" height="7.5" fill="#00ff00"/><rect x="156" y="8" width="4" height="7" fill="#00ff00"/><rect x="156" y="8" width="4" height="1" fill="#10c010" opacity="0.6"/><rect x="161" y="1.5" width="4" height="7.5" fill="#00ff00"/><rect x="161" y="8" width="4" height="7" fill="#00ff00"/><rect x="161" y="8" width="4" height="1" fill="#10c010" opacity="0.6"/><rect x="166" y="2" width="4" height="6" fill="#0b4612"/><rect x="166" y="9" width="4" height="6" fill="#0b4612"/><rect x="171" y="2" width="4" height="6" fill="#574c00"/><rect x="171" y="9" width="4" height="6" fill="#574c00"/><rect x="176" y="2" width="4" height="6" fill="#574c00"/><rect x="176" y="9" width="4" height="6" fill="#574c00"/><rect x="181" y="2" width="4" height="6" fill="#574c00"/><rect x="181" y="9" width="4" height="6" fill="#574c00"/><rect x="186" y="2" width="4" height="6" fill="#574c00"/><rect x="186" y="9" width="4" height="6" fill="#574c00"/><rect x="191" y="2" width="4" height="6" fill="#574c00"/><rect x="191" y="9" width="4" height="6" fill="#574c00"/><rect x="196" y="1.5" width="4" height="7.5" fill="#ffff00"/><rect x="196" y="8" width="4" height="7" fill="#ffff00"/><rect x="196" y="8" width="4" height="1" fill="#10c010" opacity="0.6"/><rect x="201" y="2" width="4" height="6" fill="#574c00"/><rect x="201" y="9" width="4" height="6" fill="#574c00"/><rect x="206" y="2" width="4" height="6" fill="#574c00"/><rect x="206" y="9" width="4" height="6" fill="#574c00"/><rect x="211" y="2" width="4" height="6" fill="#574c00"/><rect x="211" y="9" width="4" height="6" fill="#574c00"/><rect x="216" y="2" width="4" height="6" fill="#574c00"/><rect x="216" y="9" width="4" height="6" fill="#574c00"/><rect x="221" y="2" width="4" height="6" fill="#600808"/><rect x="221" y="9" width="4" height="6" fill="#600808"/><rect x="226" y="2" width="4" height="6" fill="#600808"/><rect x="226" y="9" width="4" height="6" fill="#600808"/><rect x="231" y="2" width="4" height="6" fill="#600808"/><rect x="231" y="9" width="4" height="6" fill="#600808"/><rect x="236" y="2" width="4" height="6" fill="#600808"/><rect x="236" y="9" width="4" height="6" fill="#600808"/><rect x="241" y="2" width="4" height="6" fill="#600808"/><rect x="241" y="9" width="4" height="6" fill="#600808"/><rect x="246" y="2" width="4" height="6" fill="#600808"/><rect x="246" y="9" width="4" height="6" fill="#600808"/><rect x="251" y="2" width="4" height="6" fill="#600808"/><rect x="251" y="9" width="4" height="6" fill="#600808"/><rect x="256" y="2" width="4" height="6" fill="#600808"/><rect x="256" y="9" width="4" height="6" fill="#600808"/><rect x="261" y="2" width="4" height="6" fill="#600808"/><rect x="261" y="9" width="4" height="6" fill="#600808"/><rect x="266" y="2" width="4" height="6" fill="#600808"/><rect x="266" y="9" width="4" height="6" fill="#600808"/></svg>
<div style="position:absolute;left:693px;top:189px;width:1px;height:1px;background:#000"></div>
<div class="t" style="left:693px;top:188.85px;font-size:7.5px;line-height:11.5px;color:#000;font-weight:bold;transform:scaleX(0.98);transform-origin:left center;">-50</div>
<div style="position:absolute;left:753px;top:189px;width:1px;height:1px;background:#000"></div>
<div class="t" style="left:738.0px;top:188.85px;width:30px;text-align:center;font-size:7.5px;line-height:11.5px;color:#000;font-weight:bold;transform:scaleX(0.98);transform-origin:center center;">-20</div>
<div style="position:absolute;left:813px;top:189px;width:1px;height:1px;background:#000"></div>
<div class="t" style="left:798.0px;top:188.85px;width:30px;text-align:center;font-size:7.5px;line-height:11.5px;color:#000;font-weight:bold;transform:scaleX(0.98);transform-origin:center center;">-10</div>
<div style="position:absolute;left:863px;top:189px;width:1px;height:1px;background:#000"></div>
<div class="t" style="left:848.0px;top:188.85px;width:30px;text-align:center;font-size:7.5px;line-height:11.5px;color:#000;font-weight:bold;transform:scaleX(0.98);transform-origin:center center;">-5</div>
<div style="position:absolute;left:913px;top:189px;width:1px;height:1px;background:#000"></div>
<div class="t" style="left:898.0px;top:188.85px;width:30px;text-align:center;font-size:7.5px;line-height:11.5px;color:#000;font-weight:bold;transform:scaleX(0.98);transform-origin:center center;">0</div>
<div style="position:absolute;left:963px;top:189px;width:1px;height:1px;background:#000"></div>
<div class="t" style="left:934px;top:188.85px;width:30px;text-align:right;font-size:7.5px;line-height:11.5px;color:#000;font-weight:bold;transform:scaleX(0.98);transform-origin:right center;">+5</div>
<div style="position:absolute;left:1196px;top:172px;width:19px;height:19px;border:1px solid #000;border-top-width:2px;border-left-width:2px;border-radius:1px;background:linear-gradient(#c4c4c4,#a4a4a4)"><div class="t" style="left:0.5px;top:1px;width:100%;height:100%;text-align:center;line-height:19px;font-size:8.5px;color:#000;transform:scaleX(0.85);-webkit-text-stroke:0.35px #000">EDIT</div></div>
<div style="position:absolute;left:1225px;top:172px;width:5px;height:3px;background:#808080"></div>
<div style="position:absolute;left:8px;top:365px;width:1226px;height:1px;background:#e4e4e4"></div>
<div style="position:absolute;left:8px;top:366px;width:1226px;height:32px;background:linear-gradient(#c6c6c6,#bababa)"></div>
<div style="position:absolute;left:8px;top:398px;width:1226px;height:1px;background:#7c7c7c"></div>
<div style="position:absolute;left:8px;top:366px;width:13px;height:32px;background:linear-gradient(90deg,#a8a8a8,#c0c0c0)"></div>
<div style="position:absolute;left:21px;top:370px;width:114px;height:24px;background:#3c3c3c;border-radius:3px;box-shadow:0 0 0 1px #d8d8d8"></div>
<div class="t" style="left:24px;top:368.5px;font-size:12px;line-height:16px;color:#66d0ff;font-weight:bold;">Piano</div>
<div class="t" style="left:24px;top:381.5px;font-size:10px;line-height:14px;color:#7e9fb6;font-weight:normal;letter-spacing:-0.15px">midi</div>
<svg style="position:absolute;left:127px;top:389px" width="6" height="3"><path d="M0 0H6L3 3Z" fill="#6ab0d0"/></svg>
<div style="position:absolute;left:161px;top:376px;width:18px;height:9px;border:1px solid #111;border-radius:2px;background:linear-gradient(#30f030,#00c000)"></div>
<div style="position:absolute;left:185px;top:376px;width:18px;height:9px;border:1px solid #111;border-radius:2px;background:linear-gradient(#d4d4d4,#a0a0a0);box-shadow:inset 1px 1px 0 rgba(255,255,255,.45)"></div>
<div class="t" style="left:156.0px;top:387.0px;width:30px;text-align:center;font-size:9px;line-height:13px;color:#000;font-weight:normal;transform:scaleX(0.8);transform-origin:center center;-webkit-text-stroke:0.25px #000">Play</div>
<div class="t" style="left:180.0px;top:387.0px;width:30px;text-align:center;font-size:9px;line-height:13px;color:#000;font-weight:normal;transform:scaleX(0.8);transform-origin:center center;-webkit-text-stroke:0.25px #000">Rec</div>
<div style="position:absolute;left:231px;top:372px;width:1px;height:2px;background:#f8f8f8"></div>
<div style="position:absolute;left:231px;top:388px;width:1px;height:2px;background:#f8f8f8"></div>
<div style="position:absolute;left:241px;top:372px;width:1px;height:2px;background:#f8f8f8"></div>
<div style="position:absolute;left:241px;top:388px;width:1px;height:2px;background:#f8f8f8"></div>
<div style="position:absolute;left:251px;top:372px;width:1px;height:2px;background:#f8f8f8"></div>
<div style="position:absolute;left:251px;top:388px;width:1px;height:2px;background:#f8f8f8"></div>
<div style="position:absolute;left:261px;top:372px;width:1px;height:2px;background:#f8f8f8"></div>
<div style="position:absolute;left:261px;top:388px;width:1px;height:2px;background:#f8f8f8"></div>
<div style="position:absolute;left:271px;top:372px;width:1px;height:2px;background:#f8f8f8"></div>
<div style="position:absolute;left:271px;top:388px;width:1px;height:2px;background:#f8f8f8"></div>
<div style="position:absolute;left:281px;top:372px;width:1px;height:2px;background:#f8f8f8"></div>
<div style="position:absolute;left:281px;top:388px;width:1px;height:2px;background:#f8f8f8"></div>
<div style="position:absolute;left:291px;top:372px;width:1px;height:2px;background:#f8f8f8"></div>
<div style="position:absolute;left:291px;top:388px;width:1px;height:2px;background:#f8f8f8"></div>
<div style="position:absolute;left:301px;top:372px;width:1px;height:2px;background:#f8f8f8"></div>
<div style="position:absolute;left:301px;top:388px;width:1px;height:2px;background:#f8f8f8"></div>
<div style="position:absolute;left:311px;top:372px;width:1px;height:2px;background:#f8f8f8"></div>
<div style="position:absolute;left:311px;top:388px;width:1px;height:2px;background:#f8f8f8"></div>
<div style="position:absolute;left:321px;top:372px;width:1px;height:2px;background:#f8f8f8"></div>
<div style="position:absolute;left:321px;top:388px;width:1px;height:2px;background:#f8f8f8"></div>
<div style="position:absolute;left:331px;top:371px;width:1px;height:5px;background:#f8f8f8"></div>
<div style="position:absolute;left:331px;top:386px;width:1px;height:4px;background:#f8f8f8"></div>
<div style="position:absolute;left:341px;top:372px;width:1px;height:2px;background:#f8f8f8"></div>
<div style="position:absolute;left:341px;top:388px;width:1px;height:2px;background:#f8f8f8"></div>
<div style="position:absolute;left:351px;top:372px;width:1px;height:2px;background:#f8f8f8"></div>
<div style="position:absolute;left:351px;top:388px;width:1px;height:2px;background:#f8f8f8"></div>
<div style="position:absolute;left:231px;top:380px;width:129px;height:1px;background:#7e7e7e"></div>
<div style="position:absolute;left:231px;top:381px;width:129px;height:2px;background:#e6e6e6"></div>
<div style="position:absolute;left:307px;top:374px;width:5px;height:13px;border:1px solid #222;border-radius:2px;background:linear-gradient(90deg,#eee,#999);"></div>
<div class="t" style="left:230px;top:388.5px;font-size:8px;line-height:12px;color:#222;font-weight:bold;transform:scaleX(0.82);transform-origin:left center;">-6.8</div>
<div style="position:absolute;left:376px;top:370px;width:10px;height:8px;border:1px solid #111;border-radius:2px;background:linear-gradient(#d4d4d4,#a0a0a0);box-shadow:inset 1px 1px 0 rgba(255,255,255,.45)"></div>
<div style="position:absolute;left:376px;top:384px;width:10px;height:8px;border:1px solid #111;border-radius:2px;background:linear-gradient(#d4d4d4,#a0a0a0);box-shadow:inset 1px 1px 0 rgba(255,255,255,.45)"></div>
<div class="t" style="left:391.5px;top:368.25px;font-size:9.5px;line-height:13.5px;color:#000;font-weight:bold;transform:scaleX(0.84);transform-origin:left center;">Mute</div>
<div class="t" style="left:391.5px;top:382.25px;font-size:9.5px;line-height:13.5px;color:#000;font-weight:bold;transform:scaleX(0.84);transform-origin:left center;">Solo</div>
<div class="t" style="left:419.8px;top:364.8px;width:10px;text-align:center;font-size:8px;line-height:12px;color:#000;font-weight:bold;transform:scaleX(0.85);transform-origin:center center;">P</div>
<svg style="position:absolute;left:421.5px;top:364.5px;overflow:visible" width="32.0" height="32.0"><rect x="8.50" y="26.50" width="1.6" height="1.6" fill="#111"/><rect x="3.50" y="21.50" width="1.6" height="1.6" fill="#111"/><rect x="2.50" y="15.50" width="1.6" height="1.6" fill="#111"/><rect x="3.50" y="8.50" width="1.6" height="1.6" fill="#111"/><rect x="8.50" y="3.50" width="1.6" height="1.6" fill="#111"/><rect x="15.50" y="2.50" width="1.6" height="1.6" fill="#111"/><rect x="21.50" y="3.50" width="1.6" height="1.6" fill="#111"/><rect x="26.50" y="8.50" width="1.6" height="1.6" fill="#111"/><rect x="28.50" y="15.50" width="1.6" height="1.6" fill="#111"/><rect x="26.50" y="21.50" width="1.6" height="1.6" fill="#111"/><rect x="21.50" y="26.50" width="1.6" height="1.6" fill="#111"/></svg>
<div style="position:absolute;left:429.6px;top:372.9px;width:19px;height:19px;border-radius:50%;background:#333;opacity:.85;filter:blur(0.6px)"></div>
<div style="position:absolute;left:428.0px;top:371.0px;width:19px;height:19px;border-radius:50%;background:conic-gradient(from 0deg,#f4f4f4 0deg,#ffffff 35deg,#e4e4e4 75deg,#9c9c9c 122deg,#e6e6e6 165deg,#ffffff 210deg,#e2e2e2 255deg,#a4a4a4 302deg,#e8e8e8 340deg,#f4f4f4 360deg);box-shadow:inset 0 0 0 0.8px #8a8a8a, inset -1px -1px 1px rgba(0,0,0,.25)"></div>
<div style="position:absolute;left:435.2px;top:372.2px;width:4.5px;height:4.5px;border-radius:50%;background:#0000ee"></div>
<div class="t" style="left:428.5px;top:388.5px;width:20px;text-align:center;font-size:8px;line-height:12px;color:#222;font-weight:bold;transform:scaleX(0.8);transform-origin:center center;">50</div>
<div class="t" style="left:455.2px;top:364.8px;width:10px;text-align:center;font-size:8px;line-height:12px;color:#000;font-weight:bold;transform:scaleX(0.85);transform-origin:center center;">1</div>
<svg style="position:absolute;left:458.0px;top:364.8px;overflow:visible" width="32.0" height="32.0"><rect x="9.00" y="26.20" width="1.6" height="1.6" fill="#111"/><rect x="4.00" y="21.20" width="1.6" height="1.6" fill="#111"/><rect x="2.00" y="15.20" width="1.6" height="1.6" fill="#111"/><rect x="4.00" y="9.20" width="1.6" height="1.6" fill="#111"/><rect x="9.00" y="4.20" width="1.6" height="1.6" fill="#111"/><rect x="15.00" y="2.20" width="1.6" height="1.6" fill="#111"/><rect x="22.00" y="4.20" width="1.6" height="1.6" fill="#111"/><rect x="26.00" y="9.20" width="1.6" height="1.6" fill="#111"/><rect x="28.00" y="15.20" width="1.6" height="1.6" fill="#111"/><rect x="26.00" y="21.20" width="1.6" height="1.6" fill="#111"/><rect x="22.00" y="26.20" width="1.6" height="1.6" fill="#111"/></svg>
<div style="position:absolute;left:466.1px;top:373.2px;width:19px;height:19px;border-radius:50%;background:#333;opacity:.85;filter:blur(0.6px)"></div>
<div style="position:absolute;left:464.5px;top:371.3px;width:19px;height:19px;border-radius:50%;background:conic-gradient(from 0deg,#f4f4f4 0deg,#ffffff 35deg,#e4e4e4 75deg,#9c9c9c 122deg,#e6e6e6 165deg,#ffffff 210deg,#e2e2e2 255deg,#a4a4a4 302deg,#e8e8e8 340deg,#f4f4f4 360deg);box-shadow:inset 0 0 0 0.8px #8a8a8a, inset -1px -1px 1px rgba(0,0,0,.25)"></div>
<div style="position:absolute;left:473.8px;top:372.9px;width:4.5px;height:4.5px;border-radius:50%;background:#000"></div>
<div class="t" style="left:464.5px;top:388.5px;width:20px;text-align:center;font-size:8px;line-height:12px;color:#111;font-weight:bold;">-10</div>
<div style="position:absolute;left:539px;top:369px;width:31px;height:11px;background:#3c3c3c;border-radius:3px;box-shadow:0 0 0 1px #d0d0d0"></div>
<div class="t" style="left:534.5px;top:367.5px;width:40px;text-align:center;font-size:10px;line-height:14px;color:#f0f000;font-weight:normal;">Samp</div>
<div style="position:absolute;left:545px;top:384px;width:17px;height:9px;border:1px solid #111;border-radius:2px;background:linear-gradient(#d4d4d4,#a0a0a0);box-shadow:inset 1px 1px 0 rgba(255,255,255,.45)"></div>
<svg style="position:absolute;left:566px;top:388px" width="5" height="3"><path d="M0 0H5L2.5 3Z" fill="#888"/></svg>
<div style="position:absolute;left:574px;top:369px;width:31px;height:11px;background:#3c3c3c;border-radius:3px;box-shadow:0 0 0 1px #d0d0d0"></div>
<div style="position:absolute;left:580px;top:384px;width:17px;height:9px;border:1px solid #111;border-radius:2px;background:linear-gradient(#d4d4d4,#a0a0a0);box-shadow:inset 1px 1px 0 rgba(255,255,255,.45)"></div>
<svg style="position:absolute;left:601px;top:388px" width="5" height="3"><path d="M0 0H5L2.5 3Z" fill="#888"/></svg>
<div style="position:absolute;left:609px;top:369px;width:31px;height:11px;background:#3c3c3c;border-radius:3px;box-shadow:0 0 0 1px #d0d0d0"></div>
<div style="position:absolute;left:615px;top:384px;width:17px;height:9px;border:1px solid #111;border-radius:2px;background:linear-gradient(#d4d4d4,#a0a0a0);box-shadow:inset 1px 1px 0 rgba(255,255,255,.45)"></div>
<svg style="position:absolute;left:636px;top:388px" width="5" height="3"><path d="M0 0H5L2.5 3Z" fill="#888"/></svg>
<div style="position:absolute;left:693px;top:370px;width:271px;height:16px;background:#083a16;border-radius:2px"></div>
<svg style="position:absolute;left:693px;top:370px;shape-rendering:crispEdges" width="271" height="16"><rect x="1" y="1.5" width="4" height="7.5" fill="#00ff00"/><rect x="1" y="8" width="4" height="7" fill="#00ff00"/><rect x="1" y="8" width="4" height="1" fill="#10c010" opacity="0.6"/><rect x="6" y="1.5" width="4" height="7.5" fill="#00ff00"/><rect x="6" y="8" width="4" height="7" fill="#00ff00"/><rect x="6" y="8" width="4" height="1" fill="#10c010" opacity="0.6"/><rect x="11" y="1.5" width="4" height="7.5" fill="#00ff00"/><rect x="11" y="8" width="4" height="7" fill="#00ff00"/><rect x="11" y="8" width="4" height="1" fill="#10c010" opacity="0.6"/><rect x="16" y="1.5" width="4" height="7.5" fill="#00ff00"/><rect x="16" y="8" width="4" height="7" fill="#00ff00"/><rect x="16" y="8" width="4" height="1" fill="#10c010" opacity="0.6"/><rect x="21" y="1.5" width="4" height="7.5" fill="#00ff00"/><rect x="21" y="8" width="4" height="7" fill="#00ff00"/><rect x="21" y="8" width="4" height="1" fill="#10c010" opacity="0.6"/><rect x="26" y="1.5" width="4" height="7.5" fill="#00ff00"/><rect x="26" y="8" width="4" height="7" fill="#00ff00"/><rect x="26" y="8" width="4" height="1" fill="#10c010" opacity="0.6"/><rect x="31" y="1.5" width="4" height="7.5" fill="#00ff00"/><rect x="31" y="8" width="4" height="7" fill="#00ff00"/><rect x="31" y="8" width="4" height="1" fill="#10c010" opacity="0.6"/><rect x="36" y="1.5" width="4" height="7.5" fill="#00ff00"/><rect x="36" y="8" width="4" height="7" fill="#00ff00"/><rect x="36" y="8" width="4" height="1" fill="#10c010" opacity="0.6"/><rect x="41" y="1.5" width="4" height="7.5" fill="#00ff00"/><rect x="41" y="8" width="4" height="7" fill="#00ff00"/><rect x="41" y="8" width="4" height="1" fill="#10c010" opacity="0.6"/><rect x="46" y="2" width="4" height="6" fill="#0b4612"/><rect x="46" y="9" width="4" height="6" fill="#0b4612"/><rect x="51" y="2" width="4" height="6" fill="#0b4612"/><rect x="51" y="9" width="4" height="6" fill="#0b4612"/><rect x="56" y="2" width="4" height="6" fill="#0b4612"/><rect x="56" y="9" width="4" height="6" fill="#0b4612"/><rect x="61" y="2" width="4" height="6" fill="#0b4612"/><rect x="61" y="9" width="4" height="6" fill="#0b4612"/><rect x="66" y="2" width="4" height="6" fill="#0b4612"/><rect x="66" y="9" width="4" height="6" fill="#0b4612"/><rect x="71" y="2" width="4" height="6" fill="#0b4612"/><rect x="71" y="9" width="4" height="6" fill="#0b4612"/><rect x="76" y="2" width="4" height="6" fill="#0b4612"/><rect x="76" y="9" width="4" height="6" fill="#0b4612"/><rect x="81" y="2" width="4" height="6" fill="#0b4612"/><rect x="81" y="9" width="4" height="6" fill="#0b4612"/><rect x="86" y="2" width="4" height="6" fill="#0b4612"/><rect x="86" y="9" width="4" height="6" fill="#0b4612"/><rect x="91" y="2" width="4" height="6" fill="#0b4612"/><rect x="91" y="9" width="4" height="6" fill="#0b4612"/><rect x="96" y="2" width="4" height="6" fill="#0b4612"/><rect x="96" y="9" width="4" height="6" fill="#0b4612"/><rect x="101" y="2" width="4" height="6" fill="#0b4612"/><rect x="101" y="9" width="4" height="6" fill="#0b4612"/><rect x="106" y="2" width="4" height="6" fill="#0b4612"/><rect x="106" y="9" width="4" height="6" fill="#0b4612"/><rect x="111" y="2" width="4" height="6" fill="#0b4612"/><rect x="111" y="9" width="4" height="6" fill="#0b4612"/><rect x="116" y="2" width="4" height="6" fill="#0b4612"/><rect x="116" y="9" width="4" height="6" fill="#0b4612"/><rect x="121" y="2" width="4" height="6" fill="#0b4612"/><rect x="121" y="9" width="4" height="6" fill="#0b4612"/><rect x="126" y="2" width="4" height="6" fill="#0b4612"/><rect x="126" y="9" width="4" height="6" fill="#0b4612"/><rect x="131" y="2" width="4" height="6" fill="#0b4612"/><rect x="131" y="9" width="4" height="6" fill="#0b4612"/><rect x="136" y="2" width="4" height="6" fill="#0b4612"/><rect x="136" y="9" width="4" height="6" fill="#0b4612"/><rect x="141" y="2" width="4" height="6" fill="#0b4612"/><rect x="141" y="9" width="4" height="6" fill="#0b4612"/><rect x="146" y="2" width="4" height="6" fill="#0b4612"/><rect x="146" y="9" width="4" height="6" fill="#0b4612"/><rect x="151" y="2" width="4" height="6" fill="#0b4612"/><rect x="151" y="9" width="4" height="6" fill="#0b4612"/><rect x="156" y="2" width="4" height="6" fill="#0b4612"/><rect x="156" y="9" width="4" height="6" fill="#0b4612"/><rect x="161" y="2" width="4" height="6" fill="#0b4612"/><rect x="161" y="9" width="4" height="6" fill="#0b4612"/><rect x="166" y="2" width="4" height="6" fill="#0b4612"/><rect x="166" y="9" width="4" height="6" fill="#0b4612"/><rect x="171" y="2" width="4" height="6" fill="#574c00"/><rect x="171" y="9" width="4" height="6" fill="#574c00"/><rect x="176" y="2" width="4" height="6" fill="#574c00"/><rect x="176" y="9" width="4" height="6" fill="#574c00"/><rect x="181" y="2" width="4" height="6" fill="#574c00"/><rect x="181" y="9" width="4" height="6" fill="#574c00"/><rect x="186" y="2" width="4" height="6" fill="#574c00"/><rect x="186" y="9" width="4" height="6" fill="#574c00"/><rect x="191" y="2" width="4" height="6" fill="#574c00"/><rect x="191" y="9" width="4" height="6" fill="#574c00"/><rect x="196" y="2" width="4" height="6" fill="#574c00"/><rect x="196" y="9" width="4" height="6" fill="#574c00"/><rect x="201" y="2" width="4" height="6" fill="#574c00"/><rect x="201" y="9" width="4" height="6" fill="#574c00"/><rect x="206" y="2" width="4" height="6" fill="#574c00"/><rect x="206" y="9" width="4" height="6" fill="#574c00"/><rect x="211" y="2" width="4" height="6" fill="#574c00"/><rect x="211" y="9" width="4" height="6" fill="#574c00"/><rect x="216" y="2" width="4" height="6" fill="#574c00"/><rect x="216" y="9" width="4" height="6" fill="#574c00"/><rect x="221" y="2" width="4" height="6" fill="#600808"/><rect x="221" y="9" width="4" height="6" fill="#600808"/><rect x="226" y="2" width="4" height="6" fill="#600808"/><rect x="226" y="9" width="4" height="6" fill="#600808"/><rect x="231" y="2" width="4" height="6" fill="#600808"/><rect x="231" y="9" width="4" height="6" fill="#600808"/><rect x="236" y="2" width="4" height="6" fill="#600808"/><rect x="236" y="9" width="4" height="6" fill="#600808"/><rect x="241" y="2" width="4" height="6" fill="#600808"/><rect x="241" y="9" width="4" height="6" fill="#600808"/><rect x="246" y="2" width="4" height="6" fill="#600808"/><rect x="246" y="9" width="4" height="6" fill="#600808"/><rect x="251" y="2" width="4" height="6" fill="#600808"/><rect x="251" y="9" width="4" height="6" fill="#600808"/><rect x="256" y="2" width="4" height="6" fill="#600808"/><rect x="256" y="9" width="4" height="6" fill="#600808"/><rect x="261" y="2" width="4" height="6" fill="#600808"/><rect x="261" y="9" width="4" height="6" fill="#600808"/><rect x="266" y="2" width="4" height="6" fill="#600808"/><rect x="266" y="9" width="4" height="6" fill="#600808"/></svg>
<div style="position:absolute;left:693px;top:388px;width:1px;height:1px;background:#000"></div>
<div class="t" style="left:693px;top:387.85px;font-size:7.5px;line-height:11.5px;color:#000;font-weight:bold;transform:scaleX(0.98);transform-origin:left center;">-50</div>
<div style="position:absolute;left:753px;top:388px;width:1px;height:1px;background:#000"></div>
<div class="t" style="left:738.0px;top:387.85px;width:30px;text-align:center;font-size:7.5px;line-height:11.5px;color:#000;font-weight:bold;transform:scaleX(0.98);transform-origin:center center;">-20</div>
<div style="position:absolute;left:813px;top:388px;width:1px;height:1px;background:#000"></div>
<div class="t" style="left:798.0px;top:387.85px;width:30px;text-align:center;font-size:7.5px;line-height:11.5px;color:#000;font-weight:bold;transform:scaleX(0.98);transform-origin:center center;">-10</div>
<div style="position:absolute;left:863px;top:388px;width:1px;height:1px;background:#000"></div>
<div class="t" style="left:848.0px;top:387.85px;width:30px;text-align:center;font-size:7.5px;line-height:11.5px;color:#000;font-weight:bold;transform:scaleX(0.98);transform-origin:center center;">-5</div>
<div style="position:absolute;left:913px;top:388px;width:1px;height:1px;background:#000"></div>
<div class="t" style="left:898.0px;top:387.85px;width:30px;text-align:center;font-size:7.5px;line-height:11.5px;color:#000;font-weight:bold;transform:scaleX(0.98);transform-origin:center center;">0</div>
<div style="position:absolute;left:963px;top:388px;width:1px;height:1px;background:#000"></div>
<div class="t" style="left:934px;top:387.85px;width:30px;text-align:right;font-size:7.5px;line-height:11.5px;color:#000;font-weight:bold;transform:scaleX(0.98);transform-origin:right center;">+5</div>
<div style="position:absolute;left:1196px;top:371px;width:20px;height:20px;border:1px solid #111;border-radius:2px;background:linear-gradient(#dcdcdc,#a9a9a9);box-shadow:inset 1px 1px 0 rgba(255,255,255,.55);"><div class="t" style="left:0;top:0.5px;width:100%;height:100%;text-align:center;line-height:20px;font-size:8.5px;font-weight:normal;color:#000;transform:scaleX(0.85);-webkit-text-stroke:0.35px #000">EDIT</div></div>
<div style="position:absolute;left:1225px;top:371px;width:5px;height:3px;background:#808080"></div>
<div style="position:absolute;left:8px;top:399px;width:1226px;height:1px;background:#e4e4e4"></div>
<div style="position:absolute;left:8px;top:400px;width:1226px;height:32px;background:linear-gradient(#c6c6c6,#bababa)"></div>
<div style="position:absolute;left:8px;top:432px;width:1226px;height:1px;background:#7c7c7c"></div>
<div style="position:absolute;left:8px;top:400px;width:13px;height:32px;background:linear-gradient(90deg,#a8a8a8,#c0c0c0)"></div>
<div style="position:absolute;left:21px;top:404px;width:114px;height:24px;background:#3c3c3c;border-radius:3px;box-shadow:0 0 0 1px #d8d8d8"></div>
<div class="t" style="left:24px;top:402.5px;font-size:12px;line-height:16px;color:#66d0ff;font-weight:bold;">Vocal</div>
<div class="t" style="left:24px;top:415.5px;font-size:10px;line-height:14px;color:#7e9fb6;font-weight:normal;letter-spacing:-0.15px">mono audio (.aem)</div>
<svg style="position:absolute;left:127px;top:423px" width="6" height="3"><path d="M0 0H6L3 3Z" fill="#6ab0d0"/></svg>
<div style="position:absolute;left:161px;top:410px;width:18px;height:9px;border:1px solid #111;border-radius:2px;background:linear-gradient(#30f030,#00c000)"></div>
<div style="position:absolute;left:185px;top:410px;width:18px;height:9px;border:1px solid #111;border-radius:2px;background:linear-gradient(#d4d4d4,#a0a0a0);box-shadow:inset 1px 1px 0 rgba(255,255,255,.45)"></div>
<div class="t" style="left:156.0px;top:421.0px;width:30px;text-align:center;font-size:9px;line-height:13px;color:#000;font-weight:normal;transform:scaleX(0.8);transform-origin:center center;-webkit-text-stroke:0.25px #000">Play</div>
<div class="t" style="left:180.0px;top:421.0px;width:30px;text-align:center;font-size:9px;line-height:13px;color:#000;font-weight:normal;transform:scaleX(0.8);transform-origin:center center;-webkit-text-stroke:0.25px #000">Rec</div>
<div style="position:absolute;left:231px;top:406px;width:1px;height:2px;background:#f8f8f8"></div>
<div style="position:absolute;left:231px;top:422px;width:1px;height:2px;background:#f8f8f8"></div>
<div style="position:absolute;left:241px;top:406px;width:1px;height:2px;background:#f8f8f8"></div>
<div style="position:absolute;left:241px;top:422px;width:1px;height:2px;background:#f8f8f8"></div>
<div style="position:absolute;left:251px;top:406px;width:1px;height:2px;background:#f8f8f8"></div>
<div style="position:absolute;left:251px;top:422px;width:1px;height:2px;background:#f8f8f8"></div>
<div style="position:absolute;left:261px;top:406px;width:1px;height:2px;background:#f8f8f8"></div>
<div style="position:absolute;left:261px;top:422px;width:1px;height:2px;background:#f8f8f8"></div>
<div style="position:absolute;left:271px;top:406px;width:1px;height:2px;background:#f8f8f8"></div>
<div style="position:absolute;left:271px;top:422px;width:1px;height:2px;background:#f8f8f8"></div>
<div style="position:absolute;left:281px;top:406px;width:1px;height:2px;background:#f8f8f8"></div>
<div style="position:absolute;left:281px;top:422px;width:1px;height:2px;background:#f8f8f8"></div>
<div style="position:absolute;left:291px;top:406px;width:1px;height:2px;background:#f8f8f8"></div>
<div style="position:absolute;left:291px;top:422px;width:1px;height:2px;background:#f8f8f8"></div>
<div style="position:absolute;left:301px;top:406px;width:1px;height:2px;background:#f8f8f8"></div>
<div style="position:absolute;left:301px;top:422px;width:1px;height:2px;background:#f8f8f8"></div>
<div style="position:absolute;left:311px;top:406px;width:1px;height:2px;background:#f8f8f8"></div>
<div style="position:absolute;left:311px;top:422px;width:1px;height:2px;background:#f8f8f8"></div>
<div style="position:absolute;left:321px;top:406px;width:1px;height:2px;background:#f8f8f8"></div>
<div style="position:absolute;left:321px;top:422px;width:1px;height:2px;background:#f8f8f8"></div>
<div style="position:absolute;left:331px;top:405px;width:1px;height:5px;background:#f8f8f8"></div>
<div style="position:absolute;left:331px;top:420px;width:1px;height:4px;background:#f8f8f8"></div>
<div style="position:absolute;left:341px;top:406px;width:1px;height:2px;background:#f8f8f8"></div>
<div style="position:absolute;left:341px;top:422px;width:1px;height:2px;background:#f8f8f8"></div>
<div style="position:absolute;left:351px;top:406px;width:1px;height:2px;background:#f8f8f8"></div>
<div style="position:absolute;left:351px;top:422px;width:1px;height:2px;background:#f8f8f8"></div>
<div style="position:absolute;left:231px;top:414px;width:129px;height:1px;background:#7e7e7e"></div>
<div style="position:absolute;left:231px;top:415px;width:129px;height:2px;background:#e6e6e6"></div>
<div style="position:absolute;left:328px;top:408px;width:5px;height:13px;border:1px solid #222;border-radius:2px;background:linear-gradient(90deg,#eee,#999);"></div>
<div class="t" style="left:230px;top:422.5px;font-size:8px;line-height:12px;color:#222;font-weight:bold;transform:scaleX(0.82);transform-origin:left center;">0.0</div>
<div style="position:absolute;left:376px;top:404px;width:10px;height:8px;border:1px solid #111;border-radius:2px;background:linear-gradient(#d4d4d4,#a0a0a0);box-shadow:inset 1px 1px 0 rgba(255,255,255,.45)"></div>
<div style="position:absolute;left:376px;top:418px;width:10px;height:8px;border:1px solid #111;border-radius:2px;background:linear-gradient(#d4d4d4,#a0a0a0);box-shadow:inset 1px 1px 0 rgba(255,255,255,.45)"></div>
<div class="t" style="left:391.5px;top:402.25px;font-size:9.5px;line-height:13.5px;color:#000;font-weight:bold;transform:scaleX(0.84);transform-origin:left center;">Mute</div>
<div class="t" style="left:391.5px;top:416.25px;font-size:9.5px;line-height:13.5px;color:#000;font-weight:bold;transform:scaleX(0.84);transform-origin:left center;">Solo</div>
<div class="t" style="left:419.8px;top:398.8px;width:10px;text-align:center;font-size:8px;line-height:12px;color:#000;font-weight:bold;transform:scaleX(0.85);transform-origin:center center;">P</div>
<svg style="position:absolute;left:421.5px;top:398.5px;overflow:visible" width="32.0" height="32.0"><rect x="8.50" y="26.50" width="1.6" height="1.6" fill="#111"/><rect x="3.50" y="21.50" width="1.6" height="1.6" fill="#111"/><rect x="2.50" y="15.50" width="1.6" height="1.6" fill="#111"/><rect x="3.50" y="8.50" width="1.6" height="1.6" fill="#111"/><rect x="8.50" y="3.50" width="1.6" height="1.6" fill="#111"/><rect x="15.50" y="2.50" width="1.6" height="1.6" fill="#111"/><rect x="21.50" y="3.50" width="1.6" height="1.6" fill="#111"/><rect x="26.50" y="8.50" width="1.6" height="1.6" fill="#111"/><rect x="28.50" y="15.50" width="1.6" height="1.6" fill="#111"/><rect x="26.50" y="21.50" width="1.6" height="1.6" fill="#111"/><rect x="21.50" y="26.50" width="1.6" height="1.6" fill="#111"/></svg>
<div style="position:absolute;left:429.6px;top:406.9px;width:19px;height:19px;border-radius:50%;background:#333;opacity:.85;filter:blur(0.6px)"></div>
<div style="position:absolute;left:428.0px;top:405.0px;width:19px;height:19px;border-radius:50%;background:conic-gradient(from 0deg,#f4f4f4 0deg,#ffffff 35deg,#e4e4e4 75deg,#9c9c9c 122deg,#e6e6e6 165deg,#ffffff 210deg,#e2e2e2 255deg,#a4a4a4 302deg,#e8e8e8 340deg,#f4f4f4 360deg);box-shadow:inset 0 0 0 0.8px #8a8a8a, inset -1px -1px 1px rgba(0,0,0,.25)"></div>
<div style="position:absolute;left:435.2px;top:406.2px;width:4.5px;height:4.5px;border-radius:50%;background:#0000ee"></div>
<div class="t" style="left:428.5px;top:422.5px;width:20px;text-align:center;font-size:8px;line-height:12px;color:#222;font-weight:bold;transform:scaleX(0.8);transform-origin:center center;">50</div>
<div class="t" style="left:455.2px;top:398.8px;width:10px;text-align:center;font-size:8px;line-height:12px;color:#000;font-weight:bold;transform:scaleX(0.85);transform-origin:center center;">1</div>
<svg style="position:absolute;left:458.0px;top:398.8px;overflow:visible" width="32.0" height="32.0"><rect x="9.00" y="26.20" width="1.6" height="1.6" fill="#111"/><rect x="4.00" y="21.20" width="1.6" height="1.6" fill="#111"/><rect x="2.00" y="15.20" width="1.6" height="1.6" fill="#111"/><rect x="4.00" y="9.20" width="1.6" height="1.6" fill="#111"/><rect x="9.00" y="4.20" width="1.6" height="1.6" fill="#111"/><rect x="15.00" y="2.20" width="1.6" height="1.6" fill="#111"/><rect x="22.00" y="4.20" width="1.6" height="1.6" fill="#111"/><rect x="26.00" y="9.20" width="1.6" height="1.6" fill="#111"/><rect x="28.00" y="15.20" width="1.6" height="1.6" fill="#111"/><rect x="26.00" y="21.20" width="1.6" height="1.6" fill="#111"/><rect x="22.00" y="26.20" width="1.6" height="1.6" fill="#111"/></svg>
<div style="position:absolute;left:466.1px;top:407.2px;width:19px;height:19px;border-radius:50%;background:#333;opacity:.85;filter:blur(0.6px)"></div>
<div style="position:absolute;left:464.5px;top:405.3px;width:19px;height:19px;border-radius:50%;background:conic-gradient(from 0deg,#f4f4f4 0deg,#ffffff 35deg,#e4e4e4 75deg,#9c9c9c 122deg,#e6e6e6 165deg,#ffffff 210deg,#e2e2e2 255deg,#a4a4a4 302deg,#e8e8e8 340deg,#f4f4f4 360deg);box-shadow:inset 0 0 0 0.8px #8a8a8a, inset -1px -1px 1px rgba(0,0,0,.25)"></div>
<div style="position:absolute;left:468.6px;top:417.6px;width:4.5px;height:4.5px;border-radius:50%;background:#000"></div>
<div class="t" style="left:464.5px;top:422.5px;width:20px;text-align:center;font-size:8px;line-height:12px;color:#111;font-weight:bold;"></div>
<div style="position:absolute;left:539px;top:403px;width:31px;height:11px;background:#3c3c3c;border-radius:3px;box-shadow:0 0 0 1px #d0d0d0"></div>
<div style="position:absolute;left:545px;top:418px;width:17px;height:9px;border:1px solid #111;border-radius:2px;background:linear-gradient(#d4d4d4,#a0a0a0);box-shadow:inset 1px 1px 0 rgba(255,255,255,.45)"></div>
<svg style="position:absolute;left:566px;top:422px" width="5" height="3"><path d="M0 0H5L2.5 3Z" fill="#888"/></svg>
<div style="position:absolute;left:574px;top:403px;width:31px;height:11px;background:#3c3c3c;border-radius:3px;box-shadow:0 0 0 1px #d0d0d0"></div>
<div style="position:absolute;left:580px;top:418px;width:17px;height:9px;border:1px solid #111;border-radius:2px;background:linear-gradient(#d4d4d4,#a0a0a0);box-shadow:inset 1px 1px 0 rgba(255,255,255,.45)"></div>
<svg style="position:absolute;left:601px;top:422px" width="5" height="3"><path d="M0 0H5L2.5 3Z" fill="#888"/></svg>
<div style="position:absolute;left:609px;top:403px;width:31px;height:11px;background:#3c3c3c;border-radius:3px;box-shadow:0 0 0 1px #d0d0d0"></div>
<div style="position:absolute;left:615px;top:418px;width:17px;height:9px;border:1px solid #111;border-radius:2px;background:linear-gradient(#d4d4d4,#a0a0a0);box-shadow:inset 1px 1px 0 rgba(255,255,255,.45)"></div>
<svg style="position:absolute;left:636px;top:422px" width="5" height="3"><path d="M0 0H5L2.5 3Z" fill="#888"/></svg>
<div style="position:absolute;left:693px;top:404px;width:271px;height:16px;background:#083a16;border-radius:2px"></div>
<svg style="position:absolute;left:693px;top:404px;shape-rendering:crispEdges" width="271" height="16"><rect x="1" y="1.5" width="4" height="7.5" fill="#00ff00"/><rect x="1" y="8" width="4" height="7" fill="#00ff00"/><rect x="1" y="8" width="4" height="1" fill="#10c010" opacity="0.6"/><rect x="6" y="1.5" width="4" height="7.5" fill="#00ff00"/><rect x="6" y="8" width="4" height="7" fill="#00ff00"/><rect x="6" y="8" width="4" height="1" fill="#10c010" opacity="0.6"/><rect x="11" y="1.5" width="4" height="7.5" fill="#00ff00"/><rect x="11" y="8" width="4" height="7" fill="#00ff00"/><rect x="11" y="8" width="4" height="1" fill="#10c010" opacity="0.6"/><rect x="16" y="1.5" width="4" height="7.5" fill="#00ff00"/><rect x="16" y="8" width="4" height="7" fill="#00ff00"/><rect x="16" y="8" width="4" height="1" fill="#10c010" opacity="0.6"/><rect x="21" y="1.5" width="4" height="7.5" fill="#00ff00"/><rect x="21" y="8" width="4" height="7" fill="#00ff00"/><rect x="21" y="8" width="4" height="1" fill="#10c010" opacity="0.6"/><rect x="26" y="1.5" width="4" height="7.5" fill="#00ff00"/><rect x="26" y="8" width="4" height="7" fill="#00ff00"/><rect x="26" y="8" width="4" height="1" fill="#10c010" opacity="0.6"/><rect x="31" y="1.5" width="4" height="7.5" fill="#00ff00"/><rect x="31" y="8" width="4" height="7" fill="#00ff00"/><rect x="31" y="8" width="4" height="1" fill="#10c010" opacity="0.6"/><rect x="36" y="1.5" width="4" height="7.5" fill="#00ff00"/><rect x="36" y="8" width="4" height="7" fill="#00ff00"/><rect x="36" y="8" width="4" height="1" fill="#10c010" opacity="0.6"/><rect x="41" y="1.5" width="4" height="7.5" fill="#00ff00"/><rect x="41" y="8" width="4" height="7" fill="#00ff00"/><rect x="41" y="8" width="4" height="1" fill="#10c010" opacity="0.6"/><rect x="46" y="1.5" width="4" height="7.5" fill="#00ff00"/><rect x="46" y="8" width="4" height="7" fill="#00ff00"/><rect x="46" y="8" width="4" height="1" fill="#10c010" opacity="0.6"/><rect x="51" y="1.5" width="4" height="7.5" fill="#00ff00"/><rect x="51" y="8" width="4" height="7" fill="#00ff00"/><rect x="51" y="8" width="4" height="1" fill="#10c010" opacity="0.6"/><rect x="56" y="1.5" width="4" height="7.5" fill="#00ff00"/><rect x="56" y="8" width="4" height="7" fill="#00ff00"/><rect x="56" y="8" width="4" height="1" fill="#10c010" opacity="0.6"/><rect x="61" y="1.5" width="4" height="7.5" fill="#00ff00"/><rect x="61" y="8" width="4" height="7" fill="#00ff00"/><rect x="61" y="8" width="4" height="1" fill="#10c010" opacity="0.6"/><rect x="66" y="1.5" width="4" height="7.5" fill="#00ff00"/><rect x="66" y="8" width="4" height="7" fill="#00ff00"/><rect x="66" y="8" width="4" height="1" fill="#10c010" opacity="0.6"/><rect x="71" y="1.5" width="4" height="7.5" fill="#00ff00"/><rect x="71" y="8" width="4" height="7" fill="#00ff00"/><rect x="71" y="8" width="4" height="1" fill="#10c010" opacity="0.6"/><rect x="76" y="1.5" width="4" height="7.5" fill="#00ff00"/><rect x="76" y="8" width="4" height="7" fill="#00ff00"/><rect x="76" y="8" width="4" height="1" fill="#10c010" opacity="0.6"/><rect x="81" y="1.5" width="4" height="7.5" fill="#00ff00"/><rect x="81" y="8" width="4" height="7" fill="#00ff00"/><rect x="81" y="8" width="4" height="1" fill="#10c010" opacity="0.6"/><rect x="86" y="1.5" width="4" height="7.5" fill="#00ff00"/><rect x="86" y="8" width="4" height="7" fill="#00ff00"/><rect x="86" y="8" width="4" height="1" fill="#10c010" opacity="0.6"/><rect x="91" y="1.5" width="4" height="7.5" fill="#00ff00"/><rect x="91" y="8" width="4" height="7" fill="#00ff00"/><rect x="91" y="8" width="4" height="1" fill="#10c010" opacity="0.6"/><rect x="96" y="1.5" width="4" height="7.5" fill="#00ff00"/><rect x="96" y="8" width="4" height="7" fill="#00ff00"/><rect x="96" y="8" width="4" height="1" fill="#10c010" opacity="0.6"/><rect x="101" y="1.5" width="4" height="7.5" fill="#00ff00"/><rect x="101" y="8" width="4" height="7" fill="#00ff00"/><rect x="101" y="8" width="4" height="1" fill="#10c010" opacity="0.6"/><rect x="106" y="1.5" width="4" height="7.5" fill="#00ff00"/><rect x="106" y="8" width="4" height="7" fill="#00ff00"/><rect x="106" y="8" width="4" height="1" fill="#10c010" opacity="0.6"/><rect x="111" y="1.5" width="4" height="7.5" fill="#00ff00"/><rect x="111" y="8" width="4" height="7" fill="#00ff00"/><rect x="111" y="8" width="4" height="1" fill="#10c010" opacity="0.6"/><rect x="116" y="1.5" width="4" height="7.5" fill="#00ff00"/><rect x="116" y="8" width="4" height="7" fill="#00ff00"/><rect x="116" y="8" width="4" height="1" fill="#10c010" opacity="0.6"/><rect x="121" y="1.5" width="4" height="7.5" fill="#00ff00"/><rect x="121" y="8" width="4" height="7" fill="#00ff00"/><rect x="121" y="8" width="4" height="1" fill="#10c010" opacity="0.6"/><rect x="126" y="1.5" width="4" height="7.5" fill="#00ff00"/><rect x="126" y="8" width="4" height="7" fill="#00ff00"/><rect x="126" y="8" width="4" height="1" fill="#10c010" opacity="0.6"/><rect x="131" y="1.5" width="4" height="7.5" fill="#00ff00"/><rect x="131" y="8" width="4" height="7" fill="#00ff00"/><rect x="131" y="8" width="4" height="1" fill="#10c010" opacity="0.6"/><rect x="136" y="1.5" width="4" height="7.5" fill="#00ff00"/><rect x="136" y="8" width="4" height="7" fill="#00ff00"/><rect x="136" y="8" width="4" height="1" fill="#10c010" opacity="0.6"/><rect x="141" y="1.5" width="4" height="7.5" fill="#00ff00"/><rect x="141" y="8" width="4" height="7" fill="#00ff00"/><rect x="141" y="8" width="4" height="1" fill="#10c010" opacity="0.6"/><rect x="146" y="1.5" width="4" height="7.5" fill="#00ff00"/><rect x="146" y="8" width="4" height="7" fill="#00ff00"/><rect x="146" y="8" width="4" height="1" fill="#10c010" opacity="0.6"/><rect x="151" y="1.5" width="4" height="7.5" fill="#00ff00"/><rect x="151" y="8" width="4" height="7" fill="#00ff00"/><rect x="151" y="8" width="4" height="1" fill="#10c010" opacity="0.6"/><rect x="156" y="1.5" width="4" height="7.5" fill="#00ff00"/><rect x="156" y="8" width="4" height="7" fill="#00ff00"/><rect x="156" y="8" width="4" height="1" fill="#10c010" opacity="0.6"/><rect x="161" y="1.5" width="4" height="7.5" fill="#00ff00"/><rect x="161" y="8" width="4" height="7" fill="#00ff00"/><rect x="161" y="8" width="4" height="1" fill="#10c010" opacity="0.6"/><rect x="166" y="1.5" width="4" height="7.5" fill="#00ff00"/><rect x="166" y="8" width="4" height="7" fill="#00ff00"/><rect x="166" y="8" width="4" height="1" fill="#10c010" opacity="0.6"/><rect x="171" y="2" width="4" height="6" fill="#574c00"/><rect x="171" y="9" width="4" height="6" fill="#574c00"/><rect x="176" y="2" width="4" height="6" fill="#574c00"/><rect x="176" y="9" width="4" height="6" fill="#574c00"/><rect x="181" y="2" width="4" height="6" fill="#574c00"/><rect x="181" y="9" width="4" height="6" fill="#574c00"/><rect x="186" y="2" width="4" height="6" fill="#574c00"/><rect x="186" y="9" width="4" height="6" fill="#574c00"/><rect x="191" y="2" width="4" height="6" fill="#574c00"/><rect x="191" y="9" width="4" height="6" fill="#574c00"/><rect x="196" y="2" width="4" height="6" fill="#574c00"/><rect x="196" y="9" width="4" height="6" fill="#574c00"/><rect x="201" y="2" width="4" height="6" fill="#574c00"/><rect x="201" y="9" width="4" height="6" fill="#574c00"/><rect x="206" y="2" width="4" height="6" fill="#574c00"/><rect x="206" y="9" width="4" height="6" fill="#574c00"/><rect x="211" y="2" width="4" height="6" fill="#574c00"/><rect x="211" y="9" width="4" height="6" fill="#574c00"/><rect x="216" y="2" width="4" height="6" fill="#574c00"/><rect x="216" y="9" width="4" height="6" fill="#574c00"/><rect x="221" y="2" width="4" height="6" fill="#600808"/><rect x="221" y="9" width="4" height="6" fill="#600808"/><rect x="226" y="2" width="4" height="6" fill="#600808"/><rect x="226" y="9" width="4" height="6" fill="#600808"/><rect x="231" y="2" width="4" height="6" fill="#600808"/><rect x="231" y="9" width="4" height="6" fill="#600808"/><rect x="236" y="2" width="4" height="6" fill="#600808"/><rect x="236" y="9" width="4" height="6" fill="#600808"/><rect x="241" y="2" width="4" height="6" fill="#600808"/><rect x="241" y="9" width="4" height="6" fill="#600808"/><rect x="246" y="2" width="4" height="6" fill="#600808"/><rect x="246" y="9" width="4" height="6" fill="#600808"/><rect x="251" y="2" width="4" height="6" fill="#600808"/><rect x="251" y="9" width="4" height="6" fill="#600808"/><rect x="256" y="2" width="4" height="6" fill="#600808"/><rect x="256" y="9" width="4" height="6" fill="#600808"/><rect x="261" y="2" width="4" height="6" fill="#600808"/><rect x="261" y="9" width="4" height="6" fill="#600808"/><rect x="266" y="2" width="4" height="6" fill="#600808"/><rect x="266" y="9" width="4" height="6" fill="#600808"/></svg>
<div style="position:absolute;left:693px;top:422px;width:1px;height:1px;background:#000"></div>
<div class="t" style="left:693px;top:421.85px;font-size:7.5px;line-height:11.5px;color:#000;font-weight:bold;transform:scaleX(0.98);transform-origin:left center;">-50</div>
<div style="position:absolute;left:753px;top:422px;width:1px;height:1px;background:#000"></div>
<div class="t" style="left:738.0px;top:421.85px;width:30px;text-align:center;font-size:7.5px;line-height:11.5px;color:#000;font-weight:bold;transform:scaleX(0.98);transform-origin:center center;">-20</div>
<div style="position:absolute;left:813px;top:422px;width:1px;height:1px;background:#000"></div>
<div class="t" style="left:798.0px;top:421.85px;width:30px;text-align:center;font-size:7.5px;line-height:11.5px;color:#000;font-weight:bold;transform:scaleX(0.98);transform-origin:center center;">-10</div>
<div style="position:absolute;left:863px;top:422px;width:1px;height:1px;background:#000"></div>
<div class="t" style="left:848.0px;top:421.85px;width:30px;text-align:center;font-size:7.5px;line-height:11.5px;color:#000;font-weight:bold;transform:scaleX(0.98);transform-origin:center center;">-5</div>
<div style="position:absolute;left:913px;top:422px;width:1px;height:1px;background:#000"></div>
<div class="t" style="left:898.0px;top:421.85px;width:30px;text-align:center;font-size:7.5px;line-height:11.5px;color:#000;font-weight:bold;transform:scaleX(0.98);transform-origin:center center;">0</div>
<div style="position:absolute;left:963px;top:422px;width:1px;height:1px;background:#000"></div>
<div class="t" style="left:934px;top:421.85px;width:30px;text-align:right;font-size:7.5px;line-height:11.5px;color:#000;font-weight:bold;transform:scaleX(0.98);transform-origin:right center;">+5</div>
<div style="position:absolute;left:1196px;top:405px;width:20px;height:20px;border:1px solid #111;border-radius:2px;background:linear-gradient(#dcdcdc,#a9a9a9);box-shadow:inset 1px 1px 0 rgba(255,255,255,.55);"><div class="t" style="left:0;top:0.5px;width:100%;height:100%;text-align:center;line-height:20px;font-size:8.5px;font-weight:normal;color:#000;transform:scaleX(0.85);-webkit-text-stroke:0.35px #000">EDIT</div></div>
<div style="position:absolute;left:1225px;top:405px;width:5px;height:3px;background:#808080"></div>
<div style="position:absolute;left:8px;top:433px;width:1226px;height:1px;background:#e4e4e4"></div>
<div style="position:absolute;left:8px;top:434px;width:1226px;height:32px;background:linear-gradient(#c6c6c6,#bababa)"></div>
<div style="position:absolute;left:8px;top:466px;width:1226px;height:1px;background:#7c7c7c"></div>
<div style="position:absolute;left:8px;top:434px;width:13px;height:32px;background:linear-gradient(90deg,#a8a8a8,#c0c0c0)"></div>
<div style="position:absolute;left:21px;top:438px;width:114px;height:24px;background:#3c3c3c;border-radius:3px;box-shadow:0 0 0 1px #d8d8d8"></div>
<div class="t" style="left:24px;top:436.5px;font-size:12px;line-height:16px;color:#66d0ff;font-weight:bold;">Vocal 2</div>
<div class="t" style="left:24px;top:449.5px;font-size:10px;line-height:14px;color:#7e9fb6;font-weight:normal;letter-spacing:-0.15px">mono audio (.wav)</div>
<svg style="position:absolute;left:127px;top:457px" width="6" height="3"><path d="M0 0H6L3 3Z" fill="#6ab0d0"/></svg>
<div style="position:absolute;left:161px;top:444px;width:18px;height:9px;border:1px solid #111;border-radius:2px;background:linear-gradient(#30f030,#00c000)"></div>
<div style="position:absolute;left:185px;top:444px;width:18px;height:9px;border:1px solid #111;border-radius:2px;background:linear-gradient(#d4d4d4,#a0a0a0);box-shadow:inset 1px 1px 0 rgba(255,255,255,.45)"></div>
<div class="t" style="left:156.0px;top:455.0px;width:30px;text-align:center;font-size:9px;line-height:13px;color:#000;font-weight:normal;transform:scaleX(0.8);transform-origin:center center;-webkit-text-stroke:0.25px #000">Play</div>
<div class="t" style="left:180.0px;top:455.0px;width:30px;text-align:center;font-size:9px;line-height:13px;color:#000;font-weight:normal;transform:scaleX(0.8);transform-origin:center center;-webkit-text-stroke:0.25px #000">Rec</div>
<div style="position:absolute;left:231px;top:440px;width:1px;height:2px;background:#f8f8f8"></div>
<div style="position:absolute;left:231px;top:456px;width:1px;height:2px;background:#f8f8f8"></div>
<div style="position:absolute;left:241px;top:440px;width:1px;height:2px;background:#f8f8f8"></div>
<div style="position:absolute;left:241px;top:456px;width:1px;height:2px;background:#f8f8f8"></div>
<div style="position:absolute;left:251px;top:440px;width:1px;height:2px;background:#f8f8f8"></div>
<div style="position:absolute;left:251px;top:456px;width:1px;height:2px;background:#f8f8f8"></div>
<div style="position:absolute;left:261px;top:440px;width:1px;height:2px;background:#f8f8f8"></div>
<div style="position:absolute;left:261px;top:456px;width:1px;height:2px;background:#f8f8f8"></div>
<div style="position:absolute;left:271px;top:440px;width:1px;height:2px;background:#f8f8f8"></div>
<div style="position:absolute;left:271px;top:456px;width:1px;height:2px;background:#f8f8f8"></div>
<div style="position:absolute;left:281px;top:440px;width:1px;height:2px;background:#f8f8f8"></div>
<div style="position:absolute;left:281px;top:456px;width:1px;height:2px;background:#f8f8f8"></div>
<div style="position:absolute;left:291px;top:440px;width:1px;height:2px;background:#f8f8f8"></div>
<div style="position:absolute;left:291px;top:456px;width:1px;height:2px;background:#f8f8f8"></div>
<div style="position:absolute;left:301px;top:440px;width:1px;height:2px;background:#f8f8f8"></div>
<div style="position:absolute;left:301px;top:456px;width:1px;height:2px;background:#f8f8f8"></div>
<div style="position:absolute;left:311px;top:440px;width:1px;height:2px;background:#f8f8f8"></div>
<div style="position:absolute;left:311px;top:456px;width:1px;height:2px;background:#f8f8f8"></div>
<div style="position:absolute;left:321px;top:440px;width:1px;height:2px;background:#f8f8f8"></div>
<div style="position:absolute;left:321px;top:456px;width:1px;height:2px;background:#f8f8f8"></div>
<div style="position:absolute;left:331px;top:439px;width:1px;height:5px;background:#f8f8f8"></div>
<div style="position:absolute;left:331px;top:454px;width:1px;height:4px;background:#f8f8f8"></div>
<div style="position:absolute;left:341px;top:440px;width:1px;height:2px;background:#f8f8f8"></div>
<div style="position:absolute;left:341px;top:456px;width:1px;height:2px;background:#f8f8f8"></div>
<div style="position:absolute;left:351px;top:440px;width:1px;height:2px;background:#f8f8f8"></div>
<div style="position:absolute;left:351px;top:456px;width:1px;height:2px;background:#f8f8f8"></div>
<div style="position:absolute;left:231px;top:448px;width:129px;height:1px;background:#7e7e7e"></div>
<div style="position:absolute;left:231px;top:449px;width:129px;height:2px;background:#e6e6e6"></div>
<div style="position:absolute;left:328px;top:442px;width:5px;height:13px;border:1px solid #222;border-radius:2px;background:linear-gradient(90deg,#eee,#999);"></div>
<div class="t" style="left:230px;top:456.5px;font-size:8px;line-height:12px;color:#222;font-weight:bold;transform:scaleX(0.82);transform-origin:left center;">0.0</div>
<div style="position:absolute;left:376px;top:438px;width:10px;height:8px;border:1px solid #111;border-radius:2px;background:linear-gradient(#d4d4d4,#a0a0a0);box-shadow:inset 1px 1px 0 rgba(255,255,255,.45)"></div>
<div style="position:absolute;left:376px;top:452px;width:10px;height:8px;border:1px solid #111;border-radius:2px;background:linear-gradient(#d4d4d4,#a0a0a0);box-shadow:inset 1px 1px 0 rgba(255,255,255,.45)"></div>
<div class="t" style="left:391.5px;top:436.25px;font-size:9.5px;line-height:13.5px;color:#000;font-weight:bold;transform:scaleX(0.84);transform-origin:left center;">Mute</div>
<div class="t" style="left:391.5px;top:450.25px;font-size:9.5px;line-height:13.5px;color:#000;font-weight:bold;transform:scaleX(0.84);transform-origin:left center;">Solo</div>
<div class="t" style="left:419.8px;top:432.8px;width:10px;text-align:center;font-size:8px;line-height:12px;color:#000;font-weight:bold;transform:scaleX(0.85);transform-origin:center center;">P</div>
<svg style="position:absolute;left:421.5px;top:432.5px;overflow:visible" width="32.0" height="32.0"><rect x="8.50" y="26.50" width="1.6" height="1.6" fill="#111"/><rect x="3.50" y="21.50" width="1.6" height="1.6" fill="#111"/><rect x="2.50" y="15.50" width="1.6" height="1.6" fill="#111"/><rect x="3.50" y="8.50" width="1.6" height="1.6" fill="#111"/><rect x="8.50" y="3.50" width="1.6" height="1.6" fill="#111"/><rect x="15.50" y="2.50" width="1.6" height="1.6" fill="#111"/><rect x="21.50" y="3.50" width="1.6" height="1.6" fill="#111"/><rect x="26.50" y="8.50" width="1.6" height="1.6" fill="#111"/><rect x="28.50" y="15.50" width="1.6" height="1.6" fill="#111"/><rect x="26.50" y="21.50" width="1.6" height="1.6" fill="#111"/><rect x="21.50" y="26.50" width="1.6" height="1.6" fill="#111"/></svg>
<div style="position:absolute;left:429.6px;top:440.9px;width:19px;height:19px;border-radius:50%;background:#333;opacity:.85;filter:blur(0.6px)"></div>
<div style="position:absolute;left:428.0px;top:439.0px;width:19px;height:19px;border-radius:50%;background:conic-gradient(from 0deg,#f4f4f4 0deg,#ffffff 35deg,#e4e4e4 75deg,#9c9c9c 122deg,#e6e6e6 165deg,#ffffff 210deg,#e2e2e2 255deg,#a4a4a4 302deg,#e8e8e8 340deg,#f4f4f4 360deg);box-shadow:inset 0 0 0 0.8px #8a8a8a, inset -1px -1px 1px rgba(0,0,0,.25)"></div>
<div style="position:absolute;left:435.2px;top:440.2px;width:4.5px;height:4.5px;border-radius:50%;background:#0000ee"></div>
<div class="t" style="left:428.5px;top:456.5px;width:20px;text-align:center;font-size:8px;line-height:12px;color:#222;font-weight:bold;transform:scaleX(0.8);transform-origin:center center;">50</div>
<div class="t" style="left:455.2px;top:432.8px;width:10px;text-align:center;font-size:8px;line-height:12px;color:#000;font-weight:bold;transform:scaleX(0.85);transform-origin:center center;">1</div>
<svg style="position:absolute;left:458.0px;top:432.8px;overflow:visible" width="32.0" height="32.0"><rect x="9.00" y="26.20" width="1.6" height="1.6" fill="#111"/><rect x="4.00" y="21.20" width="1.6" height="1.6" fill="#111"/><rect x="2.00" y="15.20" width="1.6" height="1.6" fill="#111"/><rect x="4.00" y="9.20" width="1.6" height="1.6" fill="#111"/><rect x="9.00" y="4.20" width="1.6" height="1.6" fill="#111"/><rect x="15.00" y="2.20" width="1.6" height="1.6" fill="#111"/><rect x="22.00" y="4.20" width="1.6" height="1.6" fill="#111"/><rect x="26.00" y="9.20" width="1.6" height="1.6" fill="#111"/><rect x="28.00" y="15.20" width="1.6" height="1.6" fill="#111"/><rect x="26.00" y="21.20" width="1.6" height="1.6" fill="#111"/><rect x="22.00" y="26.20" width="1.6" height="1.6" fill="#111"/></svg>
<div style="position:absolute;left:466.1px;top:441.2px;width:19px;height:19px;border-radius:50%;background:#333;opacity:.85;filter:blur(0.6px)"></div>
<div style="position:absolute;left:464.5px;top:439.3px;width:19px;height:19px;border-radius:50%;background:conic-gradient(from 0deg,#f4f4f4 0deg,#ffffff 35deg,#e4e4e4 75deg,#9c9c9c 122deg,#e6e6e6 165deg,#ffffff 210deg,#e2e2e2 255deg,#a4a4a4 302deg,#e8e8e8 340deg,#f4f4f4 360deg);box-shadow:inset 0 0 0 0.8px #8a8a8a, inset -1px -1px 1px rgba(0,0,0,.25)"></div>
<div style="position:absolute;left:468.6px;top:451.6px;width:4.5px;height:4.5px;border-radius:50%;background:#000"></div>
<div class="t" style="left:464.5px;top:456.5px;width:20px;text-align:center;font-size:8px;line-height:12px;color:#111;font-weight:bold;"></div>
<div style="position:absolute;left:539px;top:437px;width:31px;height:11px;background:#3c3c3c;border-radius:3px;box-shadow:0 0 0 1px #d0d0d0"></div>
<div style="position:absolute;left:545px;top:452px;width:17px;height:9px;border:1px solid #111;border-radius:2px;background:linear-gradient(#d4d4d4,#a0a0a0);box-shadow:inset 1px 1px 0 rgba(255,255,255,.45)"></div>
<svg style="position:absolute;left:566px;top:456px" width="5" height="3"><path d="M0 0H5L2.5 3Z" fill="#888"/></svg>
<div style="position:absolute;left:574px;top:437px;width:31px;height:11px;background:#3c3c3c;border-radius:3px;box-shadow:0 0 0 1px #d0d0d0"></div>
<div class="t" style="left:569.5px;top:435.5px;width:40px;text-align:center;font-size:10px;line-height:14px;color:#66d0ff;font-weight:normal;">De-es</div>
<div style="position:absolute;left:580px;top:452px;width:17px;height:9px;border:1px solid #111;border-radius:2px;background:linear-gradient(#d4d4d4,#a0a0a0);box-shadow:inset 1px 1px 0 rgba(255,255,255,.45)"></div>
<svg style="position:absolute;left:601px;top:456px" width="5" height="3"><path d="M0 0H5L2.5 3Z" fill="#888"/></svg>
<div style="position:absolute;left:609px;top:437px;width:31px;height:11px;background:#3c3c3c;border-radius:3px;box-shadow:0 0 0 1px #d0d0d0"></div>
<div style="position:absolute;left:615px;top:452px;width:17px;height:9px;border:1px solid #111;border-radius:2px;background:linear-gradient(#d4d4d4,#a0a0a0);box-shadow:inset 1px 1px 0 rgba(255,255,255,.45)"></div>
<svg style="position:absolute;left:636px;top:456px" width="5" height="3"><path d="M0 0H5L2.5 3Z" fill="#888"/></svg>
<div style="position:absolute;left:693px;top:438px;width:271px;height:16px;background:#083a16;border-radius:2px"></div>
<svg style="position:absolute;left:693px;top:438px;shape-rendering:crispEdges" width="271" height="16"><rect x="1" y="1.5" width="4" height="7.5" fill="#00ff00"/><rect x="1" y="8" width="4" height="7" fill="#00ff00"/><rect x="1" y="8" width="4" height="1" fill="#10c010" opacity="0.6"/><rect x="6" y="1.5" width="4" height="7.5" fill="#00ff00"/><rect x="6" y="8" width="4" height="7" fill="#00ff00"/><rect x="6" y="8" width="4" height="1" fill="#10c010" opacity="0.6"/><rect x="11" y="1.5" width="4" height="7.5" fill="#00ff00"/><rect x="11" y="8" width="4" height="7" fill="#00ff00"/><rect x="11" y="8" width="4" height="1" fill="#10c010" opacity="0.6"/><rect x="16" y="1.5" width="4" height="7.5" fill="#00ff00"/><rect x="16" y="8" width="4" height="7" fill="#00ff00"/><rect x="16" y="8" width="4" height="1" fill="#10c010" opacity="0.6"/><rect x="21" y="1.5" width="4" height="7.5" fill="#00ff00"/><rect x="21" y="8" width="4" height="7" fill="#00ff00"/><rect x="21" y="8" width="4" height="1" fill="#10c010" opacity="0.6"/><rect x="26" y="1.5" width="4" height="7.5" fill="#00ff00"/><rect x="26" y="8" width="4" height="7" fill="#00ff00"/><rect x="26" y="8" width="4" height="1" fill="#10c010" opacity="0.6"/><rect x="31" y="1.5" width="4" height="7.5" fill="#00ff00"/><rect x="31" y="8" width="4" height="7" fill="#00ff00"/><rect x="31" y="8" width="4" height="1" fill="#10c010" opacity="0.6"/><rect x="36" y="1.5" width="4" height="7.5" fill="#00ff00"/><rect x="36" y="8" width="4" height="7" fill="#00ff00"/><rect x="36" y="8" width="4" height="1" fill="#10c010" opacity="0.6"/><rect x="41" y="1.5" width="4" height="7.5" fill="#00ff00"/><rect x="41" y="8" width="4" height="7" fill="#00ff00"/><rect x="41" y="8" width="4" height="1" fill="#10c010" opacity="0.6"/><rect x="46" y="1.5" width="4" height="7.5" fill="#00ff00"/><rect x="46" y="8" width="4" height="7" fill="#00ff00"/><rect x="46" y="8" width="4" height="1" fill="#10c010" opacity="0.6"/><rect x="51" y="1.5" width="4" height="7.5" fill="#00ff00"/><rect x="51" y="8" width="4" height="7" fill="#00ff00"/><rect x="51" y="8" width="4" height="1" fill="#10c010" opacity="0.6"/><rect x="56" y="1.5" width="4" height="7.5" fill="#00ff00"/><rect x="56" y="8" width="4" height="7" fill="#00ff00"/><rect x="56" y="8" width="4" height="1" fill="#10c010" opacity="0.6"/><rect x="61" y="1.5" width="4" height="7.5" fill="#00ff00"/><rect x="61" y="8" width="4" height="7" fill="#00ff00"/><rect x="61" y="8" width="4" height="1" fill="#10c010" opacity="0.6"/><rect x="66" y="1.5" width="4" height="7.5" fill="#00ff00"/><rect x="66" y="8" width="4" height="7" fill="#00ff00"/><rect x="66" y="8" width="4" height="1" fill="#10c010" opacity="0.6"/><rect x="71" y="2" width="4" height="6" fill="#0b4612"/><rect x="71" y="9" width="4" height="6" fill="#0b4612"/><rect x="76" y="2" width="4" height="6" fill="#0b4612"/><rect x="76" y="9" width="4" height="6" fill="#0b4612"/><rect x="81" y="2" width="4" height="6" fill="#0b4612"/><rect x="81" y="9" width="4" height="6" fill="#0b4612"/><rect x="86" y="2" width="4" height="6" fill="#0b4612"/><rect x="86" y="9" width="4" height="6" fill="#0b4612"/><rect x="91" y="2" width="4" height="6" fill="#0b4612"/><rect x="91" y="9" width="4" height="6" fill="#0b4612"/><rect x="96" y="2" width="4" height="6" fill="#0b4612"/><rect x="96" y="9" width="4" height="6" fill="#0b4612"/><rect x="101" y="2" width="4" height="6" fill="#0b4612"/><rect x="101" y="9" width="4" height="6" fill="#0b4612"/><rect x="106" y="2" width="4" height="6" fill="#0b4612"/><rect x="106" y="9" width="4" height="6" fill="#0b4612"/><rect x="111" y="2" width="4" height="6" fill="#0b4612"/><rect x="111" y="9" width="4" height="6" fill="#0b4612"/><rect x="116" y="2" width="4" height="6" fill="#0b4612"/><rect x="116" y="9" width="4" height="6" fill="#0b4612"/><rect x="121" y="2" width="4" height="6" fill="#0b4612"/><rect x="121" y="9" width="4" height="6" fill="#0b4612"/><rect x="126" y="2" width="4" height="6" fill="#0b4612"/><rect x="126" y="9" width="4" height="6" fill="#0b4612"/><rect x="131" y="2" width="4" height="6" fill="#0b4612"/><rect x="131" y="9" width="4" height="6" fill="#0b4612"/><rect x="136" y="2" width="4" height="6" fill="#0b4612"/><rect x="136" y="9" width="4" height="6" fill="#0b4612"/><rect x="141" y="2" width="4" height="6" fill="#0b4612"/><rect x="141" y="9" width="4" height="6" fill="#0b4612"/><rect x="146" y="2" width="4" height="6" fill="#0b4612"/><rect x="146" y="9" width="4" height="6" fill="#0b4612"/><rect x="151" y="2" width="4" height="6" fill="#0b4612"/><rect x="151" y="9" width="4" height="6" fill="#0b4612"/><rect x="156" y="2" width="4" height="6" fill="#0b4612"/><rect x="156" y="9" width="4" height="6" fill="#0b4612"/><rect x="161" y="2" width="4" height="6" fill="#0b4612"/><rect x="161" y="9" width="4" height="6" fill="#0b4612"/><rect x="166" y="2" width="4" height="6" fill="#0b4612"/><rect x="166" y="9" width="4" height="6" fill="#0b4612"/><rect x="171" y="2" width="4" height="6" fill="#574c00"/><rect x="171" y="9" width="4" height="6" fill="#574c00"/><rect x="176" y="2" width="4" height="6" fill="#574c00"/><rect x="176" y="9" width="4" height="6" fill="#574c00"/><rect x="181" y="2" width="4" height="6" fill="#574c00"/><rect x="181" y="9" width="4" height="6" fill="#574c00"/><rect x="186" y="2" width="4" height="6" fill="#574c00"/><rect x="186" y="9" width="4" height="6" fill="#574c00"/><rect x="191" y="2" width="4" height="6" fill="#574c00"/><rect x="191" y="9" width="4" height="6" fill="#574c00"/><rect x="196" y="2" width="4" height="6" fill="#574c00"/><rect x="196" y="9" width="4" height="6" fill="#574c00"/><rect x="201" y="2" width="4" height="6" fill="#574c00"/><rect x="201" y="9" width="4" height="6" fill="#574c00"/><rect x="206" y="2" width="4" height="6" fill="#574c00"/><rect x="206" y="9" width="4" height="6" fill="#574c00"/><rect x="211" y="2" width="4" height="6" fill="#574c00"/><rect x="211" y="9" width="4" height="6" fill="#574c00"/><rect x="216" y="2" width="4" height="6" fill="#574c00"/><rect x="216" y="9" width="4" height="6" fill="#574c00"/><rect x="221" y="2" width="4" height="6" fill="#600808"/><rect x="221" y="9" width="4" height="6" fill="#600808"/><rect x="226" y="2" width="4" height="6" fill="#600808"/><rect x="226" y="9" width="4" height="6" fill="#600808"/><rect x="231" y="2" width="4" height="6" fill="#600808"/><rect x="231" y="9" width="4" height="6" fill="#600808"/><rect x="236" y="2" width="4" height="6" fill="#600808"/><rect x="236" y="9" width="4" height="6" fill="#600808"/><rect x="241" y="2" width="4" height="6" fill="#600808"/><rect x="241" y="9" width="4" height="6" fill="#600808"/><rect x="246" y="2" width="4" height="6" fill="#600808"/><rect x="246" y="9" width="4" height="6" fill="#600808"/><rect x="251" y="2" width="4" height="6" fill="#600808"/><rect x="251" y="9" width="4" height="6" fill="#600808"/><rect x="256" y="2" width="4" height="6" fill="#600808"/><rect x="256" y="9" width="4" height="6" fill="#600808"/><rect x="261" y="2" width="4" height="6" fill="#600808"/><rect x="261" y="9" width="4" height="6" fill="#600808"/><rect x="266" y="2" width="4" height="6" fill="#600808"/><rect x="266" y="9" width="4" height="6" fill="#600808"/></svg>
<div style="position:absolute;left:693px;top:456px;width:1px;height:1px;background:#000"></div>
<div class="t" style="left:693px;top:455.85px;font-size:7.5px;line-height:11.5px;color:#000;font-weight:bold;transform:scaleX(0.98);transform-origin:left center;">-50</div>
<div style="position:absolute;left:753px;top:456px;width:1px;height:1px;background:#000"></div>
<div class="t" style="left:738.0px;top:455.85px;width:30px;text-align:center;font-size:7.5px;line-height:11.5px;color:#000;font-weight:bold;transform:scaleX(0.98);transform-origin:center center;">-20</div>
<div style="position:absolute;left:813px;top:456px;width:1px;height:1px;background:#000"></div>
<div class="t" style="left:798.0px;top:455.85px;width:30px;text-align:center;font-size:7.5px;line-height:11.5px;color:#000;font-weight:bold;transform:scaleX(0.98);transform-origin:center center;">-10</div>
<div style="position:absolute;left:863px;top:456px;width:1px;height:1px;background:#000"></div>
<div class="t" style="left:848.0px;top:455.85px;width:30px;text-align:center;font-size:7.5px;line-height:11.5px;color:#000;font-weight:bold;transform:scaleX(0.98);transform-origin:center center;">-5</div>
<div style="position:absolute;left:913px;top:456px;width:1px;height:1px;background:#000"></div>
<div class="t" style="left:898.0px;top:455.85px;width:30px;text-align:center;font-size:7.5px;line-height:11.5px;color:#000;font-weight:bold;transform:scaleX(0.98);transform-origin:center center;">0</div>
<div style="position:absolute;left:963px;top:456px;width:1px;height:1px;background:#000"></div>
<div class="t" style="left:934px;top:455.85px;width:30px;text-align:right;font-size:7.5px;line-height:11.5px;color:#000;font-weight:bold;transform:scaleX(0.98);transform-origin:right center;">+5</div>
<div style="position:absolute;left:1196px;top:439px;width:20px;height:20px;border:1px solid #111;border-radius:2px;background:linear-gradient(#dcdcdc,#a9a9a9);box-shadow:inset 1px 1px 0 rgba(255,255,255,.55);"><div class="t" style="left:0;top:0.5px;width:100%;height:100%;text-align:center;line-height:20px;font-size:8.5px;font-weight:normal;color:#000;transform:scaleX(0.85);-webkit-text-stroke:0.35px #000">EDIT</div></div>
<div style="position:absolute;left:1225px;top:439px;width:5px;height:3px;background:#808080"></div>
<div style="position:absolute;left:8px;top:467px;width:1226px;height:1px;background:#e4e4e4"></div>
<div style="position:absolute;left:8px;top:468px;width:1226px;height:32px;background:linear-gradient(#c6c6c6,#bababa)"></div>
<div style="position:absolute;left:8px;top:500px;width:1226px;height:1px;background:#7c7c7c"></div>
<div style="position:absolute;left:8px;top:468px;width:13px;height:32px;background:linear-gradient(90deg,#a8a8a8,#c0c0c0)"></div>
<div style="position:absolute;left:21px;top:472px;width:114px;height:24px;background:#3c3c3c;border-radius:3px;box-shadow:0 0 0 1px #d8d8d8"></div>
<div class="t" style="left:24px;top:470.5px;font-size:12px;line-height:16px;color:#66d0ff;font-weight:bold;">Organ</div>
<div class="t" style="left:24px;top:483.5px;font-size:10px;line-height:14px;color:#7e9fb6;font-weight:normal;letter-spacing:-0.15px">midi</div>
<svg style="position:absolute;left:127px;top:491px" width="6" height="3"><path d="M0 0H6L3 3Z" fill="#6ab0d0"/></svg>
<div style="position:absolute;left:161px;top:478px;width:18px;height:9px;border:1px solid #111;border-radius:2px;background:linear-gradient(#30f030,#00c000)"></div>
<div style="position:absolute;left:185px;top:478px;width:18px;height:9px;border:1px solid #111;border-radius:2px;background:linear-gradient(#d4d4d4,#a0a0a0);box-shadow:inset 1px 1px 0 rgba(255,255,255,.45)"></div>
<div class="t" style="left:156.0px;top:489.0px;width:30px;text-align:center;font-size:9px;line-height:13px;color:#000;font-weight:normal;transform:scaleX(0.8);transform-origin:center center;-webkit-text-stroke:0.25px #000">Play</div>
<div class="t" style="left:180.0px;top:489.0px;width:30px;text-align:center;font-size:9px;line-height:13px;color:#000;font-weight:normal;transform:scaleX(0.8);transform-origin:center center;-webkit-text-stroke:0.25px #000">Rec</div>
<div style="position:absolute;left:231px;top:474px;width:1px;height:2px;background:#f8f8f8"></div>
<div style="position:absolute;left:231px;top:490px;width:1px;height:2px;background:#f8f8f8"></div>
<div style="position:absolute;left:241px;top:474px;width:1px;height:2px;background:#f8f8f8"></div>
<div style="position:absolute;left:241px;top:490px;width:1px;height:2px;background:#f8f8f8"></div>
<div style="position:absolute;left:251px;top:474px;width:1px;height:2px;background:#f8f8f8"></div>
<div style="position:absolute;left:251px;top:490px;width:1px;height:2px;background:#f8f8f8"></div>
<div style="position:absolute;left:261px;top:474px;width:1px;height:2px;background:#f8f8f8"></div>
<div style="position:absolute;left:261px;top:490px;width:1px;height:2px;background:#f8f8f8"></div>
<div style="position:absolute;left:271px;top:474px;width:1px;height:2px;background:#f8f8f8"></div>
<div style="position:absolute;left:271px;top:490px;width:1px;height:2px;background:#f8f8f8"></div>
<div style="position:absolute;left:281px;top:474px;width:1px;height:2px;background:#f8f8f8"></div>
<div style="position:absolute;left:281px;top:490px;width:1px;height:2px;background:#f8f8f8"></div>
<div style="position:absolute;left:291px;top:474px;width:1px;height:2px;background:#f8f8f8"></div>
<div style="position:absolute;left:291px;top:490px;width:1px;height:2px;background:#f8f8f8"></div>
<div style="position:absolute;left:301px;top:474px;width:1px;height:2px;background:#f8f8f8"></div>
<div style="position:absolute;left:301px;top:490px;width:1px;height:2px;background:#f8f8f8"></div>
<div style="position:absolute;left:311px;top:474px;width:1px;height:2px;background:#f8f8f8"></div>
<div style="position:absolute;left:311px;top:490px;width:1px;height:2px;background:#f8f8f8"></div>
<div style="position:absolute;left:321px;top:474px;width:1px;height:2px;background:#f8f8f8"></div>
<div style="position:absolute;left:321px;top:490px;width:1px;height:2px;background:#f8f8f8"></div>
<div style="position:absolute;left:331px;top:473px;width:1px;height:5px;background:#f8f8f8"></div>
<div style="position:absolute;left:331px;top:488px;width:1px;height:4px;background:#f8f8f8"></div>
<div style="position:absolute;left:341px;top:474px;width:1px;height:2px;background:#f8f8f8"></div>
<div style="position:absolute;left:341px;top:490px;width:1px;height:2px;background:#f8f8f8"></div>
<div style="position:absolute;left:351px;top:474px;width:1px;height:2px;background:#f8f8f8"></div>
<div style="position:absolute;left:351px;top:490px;width:1px;height:2px;background:#f8f8f8"></div>
<div style="position:absolute;left:231px;top:482px;width:129px;height:1px;background:#7e7e7e"></div>
<div style="position:absolute;left:231px;top:483px;width:129px;height:2px;background:#e6e6e6"></div>
<div style="position:absolute;left:328px;top:476px;width:5px;height:13px;border:1px solid #222;border-radius:2px;background:linear-gradient(90deg,#eee,#999);"></div>
<div class="t" style="left:230px;top:490.5px;font-size:8px;line-height:12px;color:#222;font-weight:bold;transform:scaleX(0.82);transform-origin:left center;">0.0</div>
<div style="position:absolute;left:376px;top:472px;width:10px;height:8px;border:1px solid #111;border-radius:2px;background:linear-gradient(#d4d4d4,#a0a0a0);box-shadow:inset 1px 1px 0 rgba(255,255,255,.45)"></div>
<div style="position:absolute;left:376px;top:486px;width:10px;height:8px;border:1px solid #111;border-radius:2px;background:linear-gradient(#d4d4d4,#a0a0a0);box-shadow:inset 1px 1px 0 rgba(255,255,255,.45)"></div>
<div class="t" style="left:391.5px;top:470.25px;font-size:9.5px;line-height:13.5px;color:#000;font-weight:bold;transform:scaleX(0.84);transform-origin:left center;">Mute</div>
<div class="t" style="left:391.5px;top:484.25px;font-size:9.5px;line-height:13.5px;color:#000;font-weight:bold;transform:scaleX(0.84);transform-origin:left center;">Solo</div>
<div class="t" style="left:419.8px;top:466.8px;width:10px;text-align:center;font-size:8px;line-height:12px;color:#000;font-weight:bold;transform:scaleX(0.85);transform-origin:center center;">P</div>
<svg style="position:absolute;left:421.5px;top:466.5px;overflow:visible" width="32.0" height="32.0"><rect x="8.50" y="26.50" width="1.6" height="1.6" fill="#111"/><rect x="3.50" y="21.50" width="1.6" height="1.6" fill="#111"/><rect x="2.50" y="15.50" width="1.6" height="1.6" fill="#111"/><rect x="3.50" y="8.50" width="1.6" height="1.6" fill="#111"/><rect x="8.50" y="3.50" width="1.6" height="1.6" fill="#111"/><rect x="15.50" y="2.50" width="1.6" height="1.6" fill="#111"/><rect x="21.50" y="3.50" width="1.6" height="1.6" fill="#111"/><rect x="26.50" y="8.50" width="1.6" height="1.6" fill="#111"/><rect x="28.50" y="15.50" width="1.6" height="1.6" fill="#111"/><rect x="26.50" y="21.50" width="1.6" height="1.6" fill="#111"/><rect x="21.50" y="26.50" width="1.6" height="1.6" fill="#111"/></svg>
<div style="position:absolute;left:429.6px;top:474.9px;width:19px;height:19px;border-radius:50%;background:#333;opacity:.85;filter:blur(0.6px)"></div>
<div style="position:absolute;left:428.0px;top:473.0px;width:19px;height:19px;border-radius:50%;background:conic-gradient(from 0deg,#f4f4f4 0deg,#ffffff 35deg,#e4e4e4 75deg,#9c9c9c 122deg,#e6e6e6 165deg,#ffffff 210deg,#e2e2e2 255deg,#a4a4a4 302deg,#e8e8e8 340deg,#f4f4f4 360deg);box-shadow:inset 0 0 0 0.8px #8a8a8a, inset -1px -1px 1px rgba(0,0,0,.25)"></div>
<div style="position:absolute;left:435.2px;top:474.2px;width:4.5px;height:4.5px;border-radius:50%;background:#0000ee"></div>
<div class="t" style="left:428.5px;top:490.5px;width:20px;text-align:center;font-size:8px;line-height:12px;color:#222;font-weight:bold;transform:scaleX(0.8);transform-origin:center center;">50</div>
<div class="t" style="left:455.2px;top:466.8px;width:10px;text-align:center;font-size:8px;line-height:12px;color:#000;font-weight:bold;transform:scaleX(0.85);transform-origin:center center;">1</div>
<svg style="position:absolute;left:458.0px;top:466.8px;overflow:visible" width="32.0" height="32.0"><rect x="9.00" y="26.20" width="1.6" height="1.6" fill="#111"/><rect x="4.00" y="21.20" width="1.6" height="1.6" fill="#111"/><rect x="2.00" y="15.20" width="1.6" height="1.6" fill="#111"/><rect x="4.00" y="9.20" width="1.6" height="1.6" fill="#111"/><rect x="9.00" y="4.20" width="1.6" height="1.6" fill="#111"/><rect x="15.00" y="2.20" width="1.6" height="1.6" fill="#111"/><rect x="22.00" y="4.20" width="1.6" height="1.6" fill="#111"/><rect x="26.00" y="9.20" width="1.6" height="1.6" fill="#111"/><rect x="28.00" y="15.20" width="1.6" height="1.6" fill="#111"/><rect x="26.00" y="21.20" width="1.6" height="1.6" fill="#111"/><rect x="22.00" y="26.20" width="1.6" height="1.6" fill="#111"/></svg>
<div style="position:absolute;left:466.1px;top:475.2px;width:19px;height:19px;border-radius:50%;background:#333;opacity:.85;filter:blur(0.6px)"></div>
<div style="position:absolute;left:464.5px;top:473.3px;width:19px;height:19px;border-radius:50%;background:conic-gradient(from 0deg,#f4f4f4 0deg,#ffffff 35deg,#e4e4e4 75deg,#9c9c9c 122deg,#e6e6e6 165deg,#ffffff 210deg,#e2e2e2 255deg,#a4a4a4 302deg,#e8e8e8 340deg,#f4f4f4 360deg);box-shadow:inset 0 0 0 0.8px #8a8a8a, inset -1px -1px 1px rgba(0,0,0,.25)"></div>
<div style="position:absolute;left:468.6px;top:485.6px;width:4.5px;height:4.5px;border-radius:50%;background:#000"></div>
<div class="t" style="left:464.5px;top:490.5px;width:20px;text-align:center;font-size:8px;line-height:12px;color:#111;font-weight:bold;"></div>
<div style="position:absolute;left:539px;top:471px;width:31px;height:11px;background:#3c3c3c;border-radius:3px;box-shadow:0 0 0 1px #d0d0d0"></div>
<div class="t" style="left:534.5px;top:469.5px;width:40px;text-align:center;font-size:10px;line-height:14px;color:#f0f000;font-weight:normal;">Organ</div>
<div style="position:absolute;left:545px;top:486px;width:17px;height:9px;border:1px solid #111;border-radius:2px;background:linear-gradient(#d4d4d4,#a0a0a0);box-shadow:inset 1px 1px 0 rgba(255,255,255,.45)"></div>
<svg style="position:absolute;left:566px;top:490px" width="5" height="3"><path d="M0 0H5L2.5 3Z" fill="#888"/></svg>
<div style="position:absolute;left:574px;top:471px;width:31px;height:11px;background:#3c3c3c;border-radius:3px;box-shadow:0 0 0 1px #d0d0d0"></div>
<div style="position:absolute;left:580px;top:486px;width:17px;height:9px;border:1px solid #111;border-radius:2px;background:linear-gradient(#d4d4d4,#a0a0a0);box-shadow:inset 1px 1px 0 rgba(255,255,255,.45)"></div>
<svg style="position:absolute;left:601px;top:490px" width="5" height="3"><path d="M0 0H5L2.5 3Z" fill="#888"/></svg>
<div style="position:absolute;left:609px;top:471px;width:31px;height:11px;background:#3c3c3c;border-radius:3px;box-shadow:0 0 0 1px #d0d0d0"></div>
<div style="position:absolute;left:615px;top:486px;width:17px;height:9px;border:1px solid #111;border-radius:2px;background:linear-gradient(#d4d4d4,#a0a0a0);box-shadow:inset 1px 1px 0 rgba(255,255,255,.45)"></div>
<svg style="position:absolute;left:636px;top:490px" width="5" height="3"><path d="M0 0H5L2.5 3Z" fill="#888"/></svg>
<div style="position:absolute;left:693px;top:472px;width:271px;height:16px;background:#083a16;border-radius:2px"></div>
<svg style="position:absolute;left:693px;top:472px;shape-rendering:crispEdges" width="271" height="16"><rect x="1" y="2" width="4" height="6" fill="#0b4612"/><rect x="1" y="9" width="4" height="6" fill="#0b4612"/><rect x="6" y="2" width="4" height="6" fill="#0b4612"/><rect x="6" y="9" width="4" height="6" fill="#0b4612"/><rect x="11" y="2" width="4" height="6" fill="#0b4612"/><rect x="11" y="9" width="4" height="6" fill="#0b4612"/><rect x="16" y="2" width="4" height="6" fill="#0b4612"/><rect x="16" y="9" width="4" height="6" fill="#0b4612"/><rect x="21" y="2" width="4" height="6" fill="#0b4612"/><rect x="21" y="9" width="4" height="6" fill="#0b4612"/><rect x="26" y="2" width="4" height="6" fill="#0b4612"/><rect x="26" y="9" width="4" height="6" fill="#0b4612"/><rect x="31" y="2" width="4" height="6" fill="#0b4612"/><rect x="31" y="9" width="4" height="6" fill="#0b4612"/><rect x="36" y="2" width="4" height="6" fill="#0b4612"/><rect x="36" y="9" width="4" height="6" fill="#0b4612"/><rect x="41" y="2" width="4" height="6" fill="#0b4612"/><rect x="41" y="9" width="4" height="6" fill="#0b4612"/><rect x="46" y="2" width="4" height="6" fill="#0b4612"/><rect x="46" y="9" width="4" height="6" fill="#0b4612"/><rect x="51" y="2" width="4" height="6" fill="#0b4612"/><rect x="51" y="9" width="4" height="6" fill="#0b4612"/><rect x="56" y="2" width="4" height="6" fill="#0b4612"/><rect x="56" y="9" width="4" height="6" fill="#0b4612"/><rect x="61" y="2" width="4" height="6" fill="#0b4612"/><rect x="61" y="9" width="4" height="6" fill="#0b4612"/><rect x="66" y="2" width="4" height="6" fill="#0b4612"/><rect x="66" y="9" width="4" height="6" fill="#0b4612"/><rect x="71" y="2" width="4" height="6" fill="#0b4612"/><rect x="71" y="9" width="4" height="6" fill="#0b4612"/><rect x="76" y="2" width="4" height="6" fill="#0b4612"/><rect x="76" y="9" width="4" height="6" fill="#0b4612"/><rect x="81" y="2" width="4" height="6" fill="#0b4612"/><rect x="81" y="9" width="4" height="6" fill="#0b4612"/><rect x="86" y="2" width="4" height="6" fill="#0b4612"/><rect x="86" y="9" width="4" height="6" fill="#0b4612"/><rect x="91" y="2" width="4" height="6" fill="#0b4612"/><rect x="91" y="9" width="4" height="6" fill="#0b4612"/><rect x="96" y="2" width="4" height="6" fill="#0b4612"/><rect x="96" y="9" width="4" height="6" fill="#0b4612"/><rect x="101" y="2" width="4" height="6" fill="#0b4612"/><rect x="101" y="9" width="4" height="6" fill="#0b4612"/><rect x="106" y="2" width="4" height="6" fill="#0b4612"/><rect x="106" y="9" width="4" height="6" fill="#0b4612"/><rect x="111" y="2" width="4" height="6" fill="#0b4612"/><rect x="111" y="9" width="4" height="6" fill="#0b4612"/><rect x="116" y="2" width="4" height="6" fill="#0b4612"/><rect x="116" y="9" width="4" height="6" fill="#0b4612"/><rect x="121" y="2" width="4" height="6" fill="#0b4612"/><rect x="121" y="9" width="4" height="6" fill="#0b4612"/><rect x="126" y="2" width="4" height="6" fill="#0b4612"/><rect x="126" y="9" width="4" height="6" fill="#0b4612"/><rect x="131" y="2" width="4" height="6" fill="#0b4612"/><rect x="131" y="9" width="4" height="6" fill="#0b4612"/><rect x="136" y="2" width="4" height="6" fill="#0b4612"/><rect x="136" y="9" width="4" height="6" fill="#0b4612"/><rect x="141" y="2" width="4" height="6" fill="#0b4612"/><rect x="141" y="9" width="4" height="6" fill="#0b4612"/><rect x="146" y="2" width="4" height="6" fill="#0b4612"/><rect x="146" y="9" width="4" height="6" fill="#0b4612"/><rect x="151" y="2" width="4" height="6" fill="#0b4612"/><rect x="151" y="9" width="4" height="6" fill="#0b4612"/><rect x="156" y="2" width="4" height="6" fill="#0b4612"/><rect x="156" y="9" width="4" height="6" fill="#0b4612"/><rect x="161" y="2" width="4" height="6" fill="#0b4612"/><rect x="161" y="9" width="4" height="6" fill="#0b4612"/><rect x="166" y="2" width="4" height="6" fill="#0b4612"/><rect x="166" y="9" width="4" height="6" fill="#0b4612"/><rect x="171" y="2" width="4" height="6" fill="#574c00"/><rect x="171" y="9" width="4" height="6" fill="#574c00"/><rect x="176" y="2" width="4" height="6" fill="#574c00"/><rect x="176" y="9" width="4" height="6" fill="#574c00"/><rect x="181" y="2" width="4" height="6" fill="#574c00"/><rect x="181" y="9" width="4" height="6" fill="#574c00"/><rect x="186" y="2" width="4" height="6" fill="#574c00"/><rect x="186" y="9" width="4" height="6" fill="#574c00"/><rect x="191" y="2" width="4" height="6" fill="#574c00"/><rect x="191" y="9" width="4" height="6" fill="#574c00"/><rect x="196" y="2" width="4" height="6" fill="#574c00"/><rect x="196" y="9" width="4" height="6" fill="#574c00"/><rect x="201" y="2" width="4" height="6" fill="#574c00"/><rect x="201" y="9" width="4" height="6" fill="#574c00"/><rect x="206" y="2" width="4" height="6" fill="#574c00"/><rect x="206" y="9" width="4" height="6" fill="#574c00"/><rect x="211" y="2" width="4" height="6" fill="#574c00"/><rect x="211" y="9" width="4" height="6" fill="#574c00"/><rect x="216" y="2" width="4" height="6" fill="#574c00"/><rect x="216" y="9" width="4" height="6" fill="#574c00"/><rect x="221" y="2" width="4" height="6" fill="#600808"/><rect x="221" y="9" width="4" height="6" fill="#600808"/><rect x="226" y="2" width="4" height="6" fill="#600808"/><rect x="226" y="9" width="4" height="6" fill="#600808"/><rect x="231" y="2" width="4" height="6" fill="#600808"/><rect x="231" y="9" width="4" height="6" fill="#600808"/><rect x="236" y="2" width="4" height="6" fill="#600808"/><rect x="236" y="9" width="4" height="6" fill="#600808"/><rect x="241" y="2" width="4" height="6" fill="#600808"/><rect x="241" y="9" width="4" height="6" fill="#600808"/><rect x="246" y="2" width="4" height="6" fill="#600808"/><rect x="246" y="9" width="4" height="6" fill="#600808"/><rect x="251" y="2" width="4" height="6" fill="#600808"/><rect x="251" y="9" width="4" height="6" fill="#600808"/><rect x="256" y="2" width="4" height="6" fill="#600808"/><rect x="256" y="9" width="4" height="6" fill="#600808"/><rect x="261" y="2" width="4" height="6" fill="#600808"/><rect x="261" y="9" width="4" height="6" fill="#600808"/><rect x="266" y="2" width="4" height="6" fill="#600808"/><rect x="266" y="9" width="4" height="6" fill="#600808"/></svg>
<div style="position:absolute;left:693px;top:490px;width:1px;height:1px;background:#000"></div>
<div class="t" style="left:693px;top:489.85px;font-size:7.5px;line-height:11.5px;color:#000;font-weight:bold;transform:scaleX(0.98);transform-origin:left center;">-50</div>
<div style="position:absolute;left:753px;top:490px;width:1px;height:1px;background:#000"></div>
<div class="t" style="left:738.0px;top:489.85px;width:30px;text-align:center;font-size:7.5px;line-height:11.5px;color:#000;font-weight:bold;transform:scaleX(0.98);transform-origin:center center;">-20</div>
<div style="position:absolute;left:813px;top:490px;width:1px;height:1px;background:#000"></div>
<div class="t" style="left:798.0px;top:489.85px;width:30px;text-align:center;font-size:7.5px;line-height:11.5px;color:#000;font-weight:bold;transform:scaleX(0.98);transform-origin:center center;">-10</div>
<div style="position:absolute;left:863px;top:490px;width:1px;height:1px;background:#000"></div>
<div class="t" style="left:848.0px;top:489.85px;width:30px;text-align:center;font-size:7.5px;line-height:11.5px;color:#000;font-weight:bold;transform:scaleX(0.98);transform-origin:center center;">-5</div>
<div style="position:absolute;left:913px;top:490px;width:1px;height:1px;background:#000"></div>
<div class="t" style="left:898.0px;top:489.85px;width:30px;text-align:center;font-size:7.5px;line-height:11.5px;color:#000;font-weight:bold;transform:scaleX(0.98);transform-origin:center center;">0</div>
<div style="position:absolute;left:963px;top:490px;width:1px;height:1px;background:#000"></div>
<div class="t" style="left:934px;top:489.85px;width:30px;text-align:right;font-size:7.5px;line-height:11.5px;color:#000;font-weight:bold;transform:scaleX(0.98);transform-origin:right center;">+5</div>
<div style="position:absolute;left:1196px;top:473px;width:20px;height:20px;border:1px solid #111;border-radius:2px;background:linear-gradient(#dcdcdc,#a9a9a9);box-shadow:inset 1px 1px 0 rgba(255,255,255,.55);"><div class="t" style="left:0;top:0.5px;width:100%;height:100%;text-align:center;line-height:20px;font-size:8.5px;font-weight:normal;color:#000;transform:scaleX(0.85);-webkit-text-stroke:0.35px #000">EDIT</div></div>
<div style="position:absolute;left:1225px;top:473px;width:5px;height:3px;background:#808080"></div>
<div style="position:absolute;left:8px;top:501px;width:1226px;height:1px;background:#e4e4e4"></div>
<div style="position:absolute;left:8px;top:502px;width:1226px;height:32px;background:linear-gradient(#c6c6c6,#bababa)"></div>
<div style="position:absolute;left:8px;top:534px;width:1226px;height:1px;background:#7c7c7c"></div>
<div style="position:absolute;left:8px;top:502px;width:13px;height:32px;background:linear-gradient(90deg,#a8a8a8,#c0c0c0)"></div>
<div style="position:absolute;left:21px;top:506px;width:114px;height:24px;background:#3c3c3c;border-radius:3px;box-shadow:0 0 0 1px #d8d8d8"></div>
<div class="t" style="left:24px;top:504.5px;font-size:12px;line-height:16px;color:#66d0ff;font-weight:bold;">Solo Guitar</div>
<div class="t" style="left:24px;top:517.5px;font-size:10px;line-height:14px;color:#7e9fb6;font-weight:normal;letter-spacing:-0.15px">mono audio (.wav)</div>
<svg style="position:absolute;left:127px;top:525px" width="6" height="3"><path d="M0 0H6L3 3Z" fill="#6ab0d0"/></svg>
<div style="position:absolute;left:161px;top:512px;width:18px;height:9px;border:1px solid #111;border-radius:2px;background:linear-gradient(#30f030,#00c000)"></div>
<div style="position:absolute;left:185px;top:512px;width:18px;height:9px;border:1px solid #111;border-radius:2px;background:linear-gradient(#d4d4d4,#a0a0a0);box-shadow:inset 1px 1px 0 rgba(255,255,255,.45)"></div>
<div class="t" style="left:156.0px;top:523.0px;width:30px;text-align:center;font-size:9px;line-height:13px;color:#000;font-weight:normal;transform:scaleX(0.8);transform-origin:center center;-webkit-text-stroke:0.25px #000">Play</div>
<div class="t" style="left:180.0px;top:523.0px;width:30px;text-align:center;font-size:9px;line-height:13px;color:#000;font-weight:normal;transform:scaleX(0.8);transform-origin:center center;-webkit-text-stroke:0.25px #000">Rec</div>
<div style="position:absolute;left:231px;top:508px;width:1px;height:2px;background:#f8f8f8"></div>
<div style="position:absolute;left:231px;top:524px;width:1px;height:2px;background:#f8f8f8"></div>
<div style="position:absolute;left:241px;top:508px;width:1px;height:2px;background:#f8f8f8"></div>
<div style="position:absolute;left:241px;top:524px;width:1px;height:2px;background:#f8f8f8"></div>
<div style="position:absolute;left:251px;top:508px;width:1px;height:2px;background:#f8f8f8"></div>
<div style="position:absolute;left:251px;top:524px;width:1px;height:2px;background:#f8f8f8"></div>
<div style="position:absolute;left:261px;top:508px;width:1px;height:2px;background:#f8f8f8"></div>
<div style="position:absolute;left:261px;top:524px;width:1px;height:2px;background:#f8f8f8"></div>
<div style="position:absolute;left:271px;top:508px;width:1px;height:2px;background:#f8f8f8"></div>
<div style="position:absolute;left:271px;top:524px;width:1px;height:2px;background:#f8f8f8"></div>
<div style="position:absolute;left:281px;top:508px;width:1px;height:2px;background:#f8f8f8"></div>
<div style="position:absolute;left:281px;top:524px;width:1px;height:2px;background:#f8f8f8"></div>
<div style="position:absolute;left:291px;top:508px;width:1px;height:2px;background:#f8f8f8"></div>
<div style="position:absolute;left:291px;top:524px;width:1px;height:2px;background:#f8f8f8"></div>
<div style="position:absolute;left:301px;top:508px;width:1px;height:2px;background:#f8f8f8"></div>
<div style="position:absolute;left:301px;top:524px;width:1px;height:2px;background:#f8f8f8"></div>
<div style="position:absolute;left:311px;top:508px;width:1px;height:2px;background:#f8f8f8"></div>
<div style="position:absolute;left:311px;top:524px;width:1px;height:2px;background:#f8f8f8"></div>
<div style="position:absolute;left:321px;top:508px;width:1px;height:2px;background:#f8f8f8"></div>
<div style="position:absolute;left:321px;top:524px;width:1px;height:2px;background:#f8f8f8"></div>
<div style="position:absolute;left:331px;top:507px;width:1px;height:5px;background:#f8f8f8"></div>
<div style="position:absolute;left:331px;top:522px;width:1px;height:4px;background:#f8f8f8"></div>
<div style="position:absolute;left:341px;top:508px;width:1px;height:2px;background:#f8f8f8"></div>
<div style="position:absolute;left:341px;top:524px;width:1px;height:2px;background:#f8f8f8"></div>
<div style="position:absolute;left:351px;top:508px;width:1px;height:2px;background:#f8f8f8"></div>
<div style="position:absolute;left:351px;top:524px;width:1px;height:2px;background:#f8f8f8"></div>
<div style="position:absolute;left:231px;top:516px;width:129px;height:1px;background:#7e7e7e"></div>
<div style="position:absolute;left:231px;top:517px;width:129px;height:2px;background:#e6e6e6"></div>
<div style="position:absolute;left:328px;top:510px;width:5px;height:13px;border:1px solid #222;border-radius:2px;background:linear-gradient(90deg,#eee,#999);"></div>
<div class="t" style="left:230px;top:524.5px;font-size:8px;line-height:12px;color:#222;font-weight:bold;transform:scaleX(0.82);transform-origin:left center;">0.0</div>
<div style="position:absolute;left:376px;top:506px;width:10px;height:8px;border:1px solid #111;border-radius:2px;background:linear-gradient(#d4d4d4,#a0a0a0);box-shadow:inset 1px 1px 0 rgba(255,255,255,.45)"></div>
<div style="position:absolute;left:376px;top:520px;width:10px;height:8px;border:1px solid #111;border-radius:2px;background:linear-gradient(#d4d4d4,#a0a0a0);box-shadow:inset 1px 1px 0 rgba(255,255,255,.45)"></div>
<div class="t" style="left:391.5px;top:504.25px;font-size:9.5px;line-height:13.5px;color:#000;font-weight:bold;transform:scaleX(0.84);transform-origin:left center;">Mute</div>
<div class="t" style="left:391.5px;top:518.25px;font-size:9.5px;line-height:13.5px;color:#000;font-weight:bold;transform:scaleX(0.84);transform-origin:left center;">Solo</div>
<div class="t" style="left:419.8px;top:500.8px;width:10px;text-align:center;font-size:8px;line-height:12px;color:#000;font-weight:bold;transform:scaleX(0.85);transform-origin:center center;">P</div>
<svg style="position:absolute;left:421.5px;top:500.5px;overflow:visible" width="32.0" height="32.0"><rect x="8.50" y="26.50" width="1.6" height="1.6" fill="#111"/><rect x="3.50" y="21.50" width="1.6" height="1.6" fill="#111"/><rect x="2.50" y="15.50" width="1.6" height="1.6" fill="#111"/><rect x="3.50" y="8.50" width="1.6" height="1.6" fill="#111"/><rect x="8.50" y="3.50" width="1.6" height="1.6" fill="#111"/><rect x="15.50" y="2.50" width="1.6" height="1.6" fill="#111"/><rect x="21.50" y="3.50" width="1.6" height="1.6" fill="#111"/><rect x="26.50" y="8.50" width="1.6" height="1.6" fill="#111"/><rect x="28.50" y="15.50" width="1.6" height="1.6" fill="#111"/><rect x="26.50" y="21.50" width="1.6" height="1.6" fill="#111"/><rect x="21.50" y="26.50" width="1.6" height="1.6" fill="#111"/></svg>
<div style="position:absolute;left:429.6px;top:508.9px;width:19px;height:19px;border-radius:50%;background:#333;opacity:.85;filter:blur(0.6px)"></div>
<div style="position:absolute;left:428.0px;top:507.0px;width:19px;height:19px;border-radius:50%;background:conic-gradient(from 0deg,#f4f4f4 0deg,#ffffff 35deg,#e4e4e4 75deg,#9c9c9c 122deg,#e6e6e6 165deg,#ffffff 210deg,#e2e2e2 255deg,#a4a4a4 302deg,#e8e8e8 340deg,#f4f4f4 360deg);box-shadow:inset 0 0 0 0.8px #8a8a8a, inset -1px -1px 1px rgba(0,0,0,.25)"></div>
<div style="position:absolute;left:435.2px;top:508.2px;width:4.5px;height:4.5px;border-radius:50%;background:#0000ee"></div>
<div class="t" style="left:428.5px;top:524.5px;width:20px;text-align:center;font-size:8px;line-height:12px;color:#222;font-weight:bold;transform:scaleX(0.8);transform-origin:center center;">50</div>
<div class="t" style="left:455.2px;top:500.8px;width:10px;text-align:center;font-size:8px;line-height:12px;color:#000;font-weight:bold;transform:scaleX(0.85);transform-origin:center center;">1</div>
<svg style="position:absolute;left:458.0px;top:500.8px;overflow:visible" width="32.0" height="32.0"><rect x="9.00" y="26.20" width="1.6" height="1.6" fill="#111"/><rect x="4.00" y="21.20" width="1.6" height="1.6" fill="#111"/><rect x="2.00" y="15.20" width="1.6" height="1.6" fill="#111"/><rect x="4.00" y="8.20" width="1.6" height="1.6" fill="#111"/><rect x="9.00" y="4.20" width="1.6" height="1.6" fill="#111"/><rect x="15.00" y="2.20" width="1.6" height="1.6" fill="#111"/><rect x="22.00" y="4.20" width="1.6" height="1.6" fill="#111"/><rect x="26.00" y="8.20" width="1.6" height="1.6" fill="#111"/><rect x="28.00" y="15.20" width="1.6" height="1.6" fill="#111"/><rect x="26.00" y="21.20" width="1.6" height="1.6" fill="#111"/><rect x="22.00" y="26.20" width="1.6" height="1.6" fill="#111"/></svg>
<div style="position:absolute;left:466.1px;top:509.2px;width:19px;height:19px;border-radius:50%;background:#333;opacity:.85;filter:blur(0.6px)"></div>
<div style="position:absolute;left:464.5px;top:507.3px;width:19px;height:19px;border-radius:50%;background:conic-gradient(from 0deg,#f4f4f4 0deg,#ffffff 35deg,#e4e4e4 75deg,#9c9c9c 122deg,#e6e6e6 165deg,#ffffff 210deg,#e2e2e2 255deg,#a4a4a4 302deg,#e8e8e8 340deg,#f4f4f4 360deg);box-shadow:inset 0 0 0 0.8px #8a8a8a, inset -1px -1px 1px rgba(0,0,0,.25)"></div>
<div style="position:absolute;left:468.6px;top:519.6px;width:4.5px;height:4.5px;border-radius:50%;background:#000"></div>
<div class="t" style="left:464.5px;top:524.5px;width:20px;text-align:center;font-size:8px;line-height:12px;color:#111;font-weight:bold;"></div>
<div style="position:absolute;left:539px;top:505px;width:31px;height:11px;background:#3c3c3c;border-radius:3px;box-shadow:0 0 0 1px #d0d0d0"></div>
<div style="position:absolute;left:545px;top:520px;width:17px;height:9px;border:1px solid #111;border-radius:2px;background:linear-gradient(#d4d4d4,#a0a0a0);box-shadow:inset 1px 1px 0 rgba(255,255,255,.45)"></div>
<svg style="position:absolute;left:566px;top:524px" width="5" height="3"><path d="M0 0H5L2.5 3Z" fill="#888"/></svg>
<div style="position:absolute;left:574px;top:505px;width:31px;height:11px;background:#3c3c3c;border-radius:3px;box-shadow:0 0 0 1px #d0d0d0"></div>
<div class="t" style="left:569.5px;top:503.5px;width:40px;text-align:center;font-size:10px;line-height:14px;color:#66d0ff;font-weight:normal;">Amp</div>
<div style="position:absolute;left:580px;top:520px;width:17px;height:9px;border:1px solid #111;border-radius:2px;background:linear-gradient(#d4d4d4,#a0a0a0);box-shadow:inset 1px 1px 0 rgba(255,255,255,.45)"></div>
<svg style="position:absolute;left:601px;top:524px" width="5" height="3"><path d="M0 0H5L2.5 3Z" fill="#888"/></svg>
<div style="position:absolute;left:609px;top:505px;width:31px;height:11px;background:#3c3c3c;border-radius:3px;box-shadow:0 0 0 1px #d0d0d0"></div>
<div style="position:absolute;left:615px;top:520px;width:17px;height:9px;border:1px solid #111;border-radius:2px;background:linear-gradient(#d4d4d4,#a0a0a0);box-shadow:inset 1px 1px 0 rgba(255,255,255,.45)"></div>
<svg style="position:absolute;left:636px;top:524px" width="5" height="3"><path d="M0 0H5L2.5 3Z" fill="#888"/></svg>
<div style="position:absolute;left:693px;top:506px;width:271px;height:16px;background:#083a16;border-radius:2px"></div>
<svg style="position:absolute;left:693px;top:506px;shape-rendering:crispEdges" width="271" height="16"><rect x="1" y="2" width="4" height="6" fill="#0b4612"/><rect x="1" y="9" width="4" height="6" fill="#0b4612"/><rect x="6" y="2" width="4" height="6" fill="#0b4612"/><rect x="6" y="9" width="4" height="6" fill="#0b4612"/><rect x="11" y="2" width="4" height="6" fill="#0b4612"/><rect x="11" y="9" width="4" height="6" fill="#0b4612"/><rect x="16" y="2" width="4" height="6" fill="#0b4612"/><rect x="16" y="9" width="4" height="6" fill="#0b4612"/><rect x="21" y="2" width="4" height="6" fill="#0b4612"/><rect x="21" y="9" width="4" height="6" fill="#0b4612"/><rect x="26" y="2" width="4" height="6" fill="#0b4612"/><rect x="26" y="9" width="4" height="6" fill="#0b4612"/><rect x="31" y="2" width="4" height="6" fill="#0b4612"/><rect x="31" y="9" width="4" height="6" fill="#0b4612"/><rect x="36" y="2" width="4" height="6" fill="#0b4612"/><rect x="36" y="9" width="4" height="6" fill="#0b4612"/><rect x="41" y="2" width="4" height="6" fill="#0b4612"/><rect x="41" y="9" width="4" height="6" fill="#0b4612"/><rect x="46" y="2" width="4" height="6" fill="#0b4612"/><rect x="46" y="9" width="4" height="6" fill="#0b4612"/><rect x="51" y="2" width="4" height="6" fill="#0b4612"/><rect x="51" y="9" width="4" height="6" fill="#0b4612"/><rect x="56" y="2" width="4" height="6" fill="#0b4612"/><rect x="56" y="9" width="4" height="6" fill="#0b4612"/><rect x="61" y="2" width="4" height="6" fill="#0b4612"/><rect x="61" y="9" width="4" height="6" fill="#0b4612"/><rect x="66" y="2" width="4" height="6" fill="#0b4612"/><rect x="66" y="9" width="4" height="6" fill="#0b4612"/><rect x="71" y="2" width="4" height="6" fill="#0b4612"/><rect x="71" y="9" width="4" height="6" fill="#0b4612"/><rect x="76" y="2" width="4" height="6" fill="#0b4612"/><rect x="76" y="9" width="4" height="6" fill="#0b4612"/><rect x="81" y="2" width="4" height="6" fill="#0b4612"/><rect x="81" y="9" width="4" height="6" fill="#0b4612"/><rect x="86" y="2" width="4" height="6" fill="#0b4612"/><rect x="86" y="9" width="4" height="6" fill="#0b4612"/><rect x="91" y="2" width="4" height="6" fill="#0b4612"/><rect x="91" y="9" width="4" height="6" fill="#0b4612"/><rect x="96" y="2" width="4" height="6" fill="#0b4612"/><rect x="96" y="9" width="4" height="6" fill="#0b4612"/><rect x="101" y="2" width="4" height="6" fill="#0b4612"/><rect x="101" y="9" width="4" height="6" fill="#0b4612"/><rect x="106" y="2" width="4" height="6" fill="#0b4612"/><rect x="106" y="9" width="4" height="6" fill="#0b4612"/><rect x="111" y="2" width="4" height="6" fill="#0b4612"/><rect x="111" y="9" width="4" height="6" fill="#0b4612"/><rect x="116" y="2" width="4" height="6" fill="#0b4612"/><rect x="116" y="9" width="4" height="6" fill="#0b4612"/><rect x="121" y="2" width="4" height="6" fill="#0b4612"/><rect x="121" y="9" width="4" height="6" fill="#0b4612"/><rect x="126" y="2" width="4" height="6" fill="#0b4612"/><rect x="126" y="9" width="4" height="6" fill="#0b4612"/><rect x="131" y="2" width="4" height="6" fill="#0b4612"/><rect x="131" y="9" width="4" height="6" fill="#0b4612"/><rect x="136" y="2" width="4" height="6" fill="#0b4612"/><rect x="136" y="9" width="4" height="6" fill="#0b4612"/><rect x="141" y="2" width="4" height="6" fill="#0b4612"/><rect x="141" y="9" width="4" height="6" fill="#0b4612"/><rect x="146" y="2" width="4" height="6" fill="#0b4612"/><rect x="146" y="9" width="4" height="6" fill="#0b4612"/><rect x="151" y="2" width="4" height="6" fill="#0b4612"/><rect x="151" y="9" width="4" height="6" fill="#0b4612"/><rect x="156" y="2" width="4" height="6" fill="#0b4612"/><rect x="156" y="9" width="4" height="6" fill="#0b4612"/><rect x="161" y="2" width="4" height="6" fill="#0b4612"/><rect x="161" y="9" width="4" height="6" fill="#0b4612"/><rect x="166" y="2" width="4" height="6" fill="#0b4612"/><rect x="166" y="9" width="4" height="6" fill="#0b4612"/><rect x="171" y="2" width="4" height="6" fill="#574c00"/><rect x="171" y="9" width="4" height="6" fill="#574c00"/><rect x="176" y="2" width="4" height="6" fill="#574c00"/><rect x="176" y="9" width="4" height="6" fill="#574c00"/><rect x="181" y="2" width="4" height="6" fill="#574c00"/><rect x="181" y="9" width="4" height="6" fill="#574c00"/><rect x="186" y="2" width="4" height="6" fill="#574c00"/><rect x="186" y="9" width="4" height="6" fill="#574c00"/><rect x="191" y="2" width="4" height="6" fill="#574c00"/><rect x="191" y="9" width="4" height="6" fill="#574c00"/><rect x="196" y="2" width="4" height="6" fill="#574c00"/><rect x="196" y="9" width="4" height="6" fill="#574c00"/><rect x="201" y="2" width="4" height="6" fill="#574c00"/><rect x="201" y="9" width="4" height="6" fill="#574c00"/><rect x="206" y="2" width="4" height="6" fill="#574c00"/><rect x="206" y="9" width="4" height="6" fill="#574c00"/><rect x="211" y="2" width="4" height="6" fill="#574c00"/><rect x="211" y="9" width="4" height="6" fill="#574c00"/><rect x="216" y="2" width="4" height="6" fill="#574c00"/><rect x="216" y="9" width="4" height="6" fill="#574c00"/><rect x="221" y="2" width="4" height="6" fill="#600808"/><rect x="221" y="9" width="4" height="6" fill="#600808"/><rect x="226" y="2" width="4" height="6" fill="#600808"/><rect x="226" y="9" width="4" height="6" fill="#600808"/><rect x="231" y="2" width="4" height="6" fill="#600808"/><rect x="231" y="9" width="4" height="6" fill="#600808"/><rect x="236" y="2" width="4" height="6" fill="#600808"/><rect x="236" y="9" width="4" height="6" fill="#600808"/><rect x="241" y="2" width="4" height="6" fill="#600808"/><rect x="241" y="9" width="4" height="6" fill="#600808"/><rect x="246" y="2" width="4" height="6" fill="#600808"/><rect x="246" y="9" width="4" height="6" fill="#600808"/><rect x="251" y="2" width="4" height="6" fill="#600808"/><rect x="251" y="9" width="4" height="6" fill="#600808"/><rect x="256" y="2" width="4" height="6" fill="#600808"/><rect x="256" y="9" width="4" height="6" fill="#600808"/><rect x="261" y="2" width="4" height="6" fill="#600808"/><rect x="261" y="9" width="4" height="6" fill="#600808"/><rect x="266" y="2" width="4" height="6" fill="#600808"/><rect x="266" y="9" width="4" height="6" fill="#600808"/></svg>
<div style="position:absolute;left:693px;top:524px;width:1px;height:1px;background:#000"></div>
<div class="t" style="left:693px;top:523.85px;font-size:7.5px;line-height:11.5px;color:#000;font-weight:bold;transform:scaleX(0.98);transform-origin:left center;">-50</div>
<div style="position:absolute;left:753px;top:524px;width:1px;height:1px;background:#000"></div>
<div class="t" style="left:738.0px;top:523.85px;width:30px;text-align:center;font-size:7.5px;line-height:11.5px;color:#000;font-weight:bold;transform:scaleX(0.98);transform-origin:center center;">-20</div>
<div style="position:absolute;left:813px;top:524px;width:1px;height:1px;background:#000"></div>
<div class="t" style="left:798.0px;top:523.85px;width:30px;text-align:center;font-size:7.5px;line-height:11.5px;color:#000;font-weight:bold;transform:scaleX(0.98);transform-origin:center center;">-10</div>
<div style="position:absolute;left:863px;top:524px;width:1px;height:1px;background:#000"></div>
<div class="t" style="left:848.0px;top:523.85px;width:30px;text-align:center;font-size:7.5px;line-height:11.5px;color:#000;font-weight:bold;transform:scaleX(0.98);transform-origin:center center;">-5</div>
<div style="position:absolute;left:913px;top:524px;width:1px;height:1px;background:#000"></div>
<div class="t" style="left:898.0px;top:523.85px;width:30px;text-align:center;font-size:7.5px;line-height:11.5px;color:#000;font-weight:bold;transform:scaleX(0.98);transform-origin:center center;">0</div>
<div style="position:absolute;left:963px;top:524px;width:1px;height:1px;background:#000"></div>
<div class="t" style="left:934px;top:523.85px;width:30px;text-align:right;font-size:7.5px;line-height:11.5px;color:#000;font-weight:bold;transform:scaleX(0.98);transform-origin:right center;">+5</div>
<div style="position:absolute;left:1196px;top:507px;width:20px;height:20px;border:1px solid #111;border-radius:2px;background:linear-gradient(#dcdcdc,#a9a9a9);box-shadow:inset 1px 1px 0 rgba(255,255,255,.55);"><div class="t" style="left:0;top:0.5px;width:100%;height:100%;text-align:center;line-height:20px;font-size:8.5px;font-weight:normal;color:#000;transform:scaleX(0.85);-webkit-text-stroke:0.35px #000">EDIT</div></div>
<div style="position:absolute;left:1225px;top:507px;width:5px;height:3px;background:#808080"></div>
<div style="position:absolute;left:8px;top:535px;width:1226px;height:1px;background:#e4e4e4"></div>
<div style="position:absolute;left:8px;top:536px;width:1226px;height:32px;background:linear-gradient(#c6c6c6,#bababa)"></div>
<div style="position:absolute;left:8px;top:568px;width:1226px;height:1px;background:#7c7c7c"></div>
<div style="position:absolute;left:8px;top:536px;width:13px;height:32px;background:linear-gradient(90deg,#a8a8a8,#c0c0c0)"></div>
<div style="position:absolute;left:21px;top:540px;width:114px;height:24px;background:#3c3c3c;border-radius:3px;box-shadow:0 0 0 1px #d8d8d8"></div>
<div class="t" style="left:24px;top:538.5px;font-size:12px;line-height:16px;color:#66d0ff;font-weight:bold;">Handclaps</div>
<div class="t" style="left:24px;top:551.5px;font-size:10px;line-height:14px;color:#7e9fb6;font-weight:normal;letter-spacing:-0.15px">mono audio (.wav)</div>
<svg style="position:absolute;left:127px;top:559px" width="6" height="3"><path d="M0 0H6L3 3Z" fill="#6ab0d0"/></svg>
<div style="position:absolute;left:161px;top:546px;width:18px;height:9px;border:1px solid #111;border-radius:2px;background:linear-gradient(#30f030,#00c000)"></div>
<div style="position:absolute;left:185px;top:546px;width:18px;height:9px;border:1px solid #111;border-radius:2px;background:linear-gradient(#d4d4d4,#a0a0a0);box-shadow:inset 1px 1px 0 rgba(255,255,255,.45)"></div>
<div class="t" style="left:156.0px;top:557.0px;width:30px;text-align:center;font-size:9px;line-height:13px;color:#000;font-weight:normal;transform:scaleX(0.8);transform-origin:center center;-webkit-text-stroke:0.25px #000">Play</div>
<div class="t" style="left:180.0px;top:557.0px;width:30px;text-align:center;font-size:9px;line-height:13px;color:#000;font-weight:normal;transform:scaleX(0.8);transform-origin:center center;-webkit-text-stroke:0.25px #000">Rec</div>
<div style="position:absolute;left:231px;top:542px;width:1px;height:2px;background:#f8f8f8"></div>
<div style="position:absolute;left:231px;top:558px;width:1px;height:2px;background:#f8f8f8"></div>
<div style="position:absolute;left:241px;top:542px;width:1px;height:2px;background:#f8f8f8"></div>
<div style="position:absolute;left:241px;top:558px;width:1px;height:2px;background:#f8f8f8"></div>
<div style="position:absolute;left:251px;top:542px;width:1px;height:2px;background:#f8f8f8"></div>
<div style="position:absolute;left:251px;top:558px;width:1px;height:2px;background:#f8f8f8"></div>
<div style="position:absolute;left:261px;top:542px;width:1px;height:2px;background:#f8f8f8"></div>
<div style="position:absolute;left:261px;top:558px;width:1px;height:2px;background:#f8f8f8"></div>
<div style="position:absolute;left:271px;top:542px;width:1px;height:2px;background:#f8f8f8"></div>
<div style="position:absolute;left:271px;top:558px;width:1px;height:2px;background:#f8f8f8"></div>
<div style="position:absolute;left:281px;top:542px;width:1px;height:2px;background:#f8f8f8"></div>
<div style="position:absolute;left:281px;top:558px;width:1px;height:2px;background:#f8f8f8"></div>
<div style="position:absolute;left:291px;top:542px;width:1px;height:2px;background:#f8f8f8"></div>
<div style="position:absolute;left:291px;top:558px;width:1px;height:2px;background:#f8f8f8"></div>
<div style="position:absolute;left:301px;top:542px;width:1px;height:2px;background:#f8f8f8"></div>
<div style="position:absolute;left:301px;top:558px;width:1px;height:2px;background:#f8f8f8"></div>
<div style="position:absolute;left:311px;top:542px;width:1px;height:2px;background:#f8f8f8"></div>
<div style="position:absolute;left:311px;top:558px;width:1px;height:2px;background:#f8f8f8"></div>
<div style="position:absolute;left:321px;top:542px;width:1px;height:2px;background:#f8f8f8"></div>
<div style="position:absolute;left:321px;top:558px;width:1px;height:2px;background:#f8f8f8"></div>
<div style="position:absolute;left:331px;top:541px;width:1px;height:5px;background:#f8f8f8"></div>
<div style="position:absolute;left:331px;top:556px;width:1px;height:4px;background:#f8f8f8"></div>
<div style="position:absolute;left:341px;top:542px;width:1px;height:2px;background:#f8f8f8"></div>
<div style="position:absolute;left:341px;top:558px;width:1px;height:2px;background:#f8f8f8"></div>
<div style="position:absolute;left:351px;top:542px;width:1px;height:2px;background:#f8f8f8"></div>
<div style="position:absolute;left:351px;top:558px;width:1px;height:2px;background:#f8f8f8"></div>
<div style="position:absolute;left:231px;top:550px;width:129px;height:1px;background:#7e7e7e"></div>
<div style="position:absolute;left:231px;top:551px;width:129px;height:2px;background:#e6e6e6"></div>
<div style="position:absolute;left:328px;top:544px;width:5px;height:13px;border:1px solid #222;border-radius:2px;background:linear-gradient(90deg,#eee,#999);"></div>
<div class="t" style="left:230px;top:558.5px;font-size:8px;line-height:12px;color:#222;font-weight:bold;transform:scaleX(0.82);transform-origin:left center;">0.0</div>
<div style="position:absolute;left:376px;top:540px;width:10px;height:8px;border:1px solid #111;border-radius:2px;background:linear-gradient(#d4d4d4,#a0a0a0);box-shadow:inset 1px 1px 0 rgba(255,255,255,.45)"></div>
<div style="position:absolute;left:376px;top:554px;width:10px;height:8px;border:1px solid #111;border-radius:2px;background:linear-gradient(#d4d4d4,#a0a0a0);box-shadow:inset 1px 1px 0 rgba(255,255,255,.45)"></div>
<div class="t" style="left:391.5px;top:538.25px;font-size:9.5px;line-height:13.5px;color:#000;font-weight:bold;transform:scaleX(0.84);transform-origin:left center;">Mute</div>
<div class="t" style="left:391.5px;top:552.25px;font-size:9.5px;line-height:13.5px;color:#000;font-weight:bold;transform:scaleX(0.84);transform-origin:left center;">Solo</div>
<div class="t" style="left:419.8px;top:534.8px;width:10px;text-align:center;font-size:8px;line-height:12px;color:#000;font-weight:bold;transform:scaleX(0.85);transform-origin:center center;">P</div>
<svg style="position:absolute;left:421.5px;top:534.5px;overflow:visible" width="32.0" height="32.0"><rect x="8.50" y="26.50" width="1.6" height="1.6" fill="#111"/><rect x="3.50" y="21.50" width="1.6" height="1.6" fill="#111"/><rect x="2.50" y="15.50" width="1.6" height="1.6" fill="#111"/><rect x="3.50" y="8.50" width="1.6" height="1.6" fill="#111"/><rect x="8.50" y="3.50" width="1.6" height="1.6" fill="#111"/><rect x="15.50" y="2.50" width="1.6" height="1.6" fill="#111"/><rect x="21.50" y="3.50" width="1.6" height="1.6" fill="#111"/><rect x="26.50" y="8.50" width="1.6" height="1.6" fill="#111"/><rect x="28.50" y="15.50" width="1.6" height="1.6" fill="#111"/><rect x="26.50" y="21.50" width="1.6" height="1.6" fill="#111"/><rect x="21.50" y="26.50" width="1.6" height="1.6" fill="#111"/></svg>
<div style="position:absolute;left:429.6px;top:542.9px;width:19px;height:19px;border-radius:50%;background:#333;opacity:.85;filter:blur(0.6px)"></div>
<div style="position:absolute;left:428.0px;top:541.0px;width:19px;height:19px;border-radius:50%;background:conic-gradient(from 0deg,#f4f4f4 0deg,#ffffff 35deg,#e4e4e4 75deg,#9c9c9c 122deg,#e6e6e6 165deg,#ffffff 210deg,#e2e2e2 255deg,#a4a4a4 302deg,#e8e8e8 340deg,#f4f4f4 360deg);box-shadow:inset 0 0 0 0.8px #8a8a8a, inset -1px -1px 1px rgba(0,0,0,.25)"></div>
<div style="position:absolute;left:435.2px;top:542.2px;width:4.5px;height:4.5px;border-radius:50%;background:#0000ee"></div>
<div class="t" style="left:428.5px;top:558.5px;width:20px;text-align:center;font-size:8px;line-height:12px;color:#222;font-weight:bold;transform:scaleX(0.8);transform-origin:center center;">50</div>
<div class="t" style="left:455.2px;top:534.8px;width:10px;text-align:center;font-size:8px;line-height:12px;color:#000;font-weight:bold;transform:scaleX(0.85);transform-origin:center center;">1</div>
<svg style="position:absolute;left:458.0px;top:534.8px;overflow:visible" width="32.0" height="32.0"><rect x="9.00" y="26.20" width="1.6" height="1.6" fill="#111"/><rect x="4.00" y="21.20" width="1.6" height="1.6" fill="#111"/><rect x="2.00" y="15.20" width="1.6" height="1.6" fill="#111"/><rect x="4.00" y="9.20" width="1.6" height="1.6" fill="#111"/><rect x="9.00" y="4.20" width="1.6" height="1.6" fill="#111"/><rect x="15.00" y="2.20" width="1.6" height="1.6" fill="#111"/><rect x="22.00" y="4.20" width="1.6" height="1.6" fill="#111"/><rect x="26.00" y="9.20" width="1.6" height="1.6" fill="#111"/><rect x="28.00" y="15.20" width="1.6" height="1.6" fill="#111"/><rect x="26.00" y="21.20" width="1.6" height="1.6" fill="#111"/><rect x="22.00" y="26.20" width="1.6" height="1.6" fill="#111"/></svg>
<div style="position:absolute;left:466.1px;top:543.2px;width:19px;height:19px;border-radius:50%;background:#333;opacity:.85;filter:blur(0.6px)"></div>
<div style="position:absolute;left:464.5px;top:541.3px;width:19px;height:19px;border-radius:50%;background:conic-gradient(from 0deg,#f4f4f4 0deg,#ffffff 35deg,#e4e4e4 75deg,#9c9c9c 122deg,#e6e6e6 165deg,#ffffff 210deg,#e2e2e2 255deg,#a4a4a4 302deg,#e8e8e8 340deg,#f4f4f4 360deg);box-shadow:inset 0 0 0 0.8px #8a8a8a, inset -1px -1px 1px rgba(0,0,0,.25)"></div>
<div style="position:absolute;left:468.6px;top:553.6px;width:4.5px;height:4.5px;border-radius:50%;background:#000"></div>
<div class="t" style="left:464.5px;top:558.5px;width:20px;text-align:center;font-size:8px;line-height:12px;color:#111;font-weight:bold;"></div>
<div style="position:absolute;left:539px;top:539px;width:31px;height:11px;background:#3c3c3c;border-radius:3px;box-shadow:0 0 0 1px #d0d0d0"></div>
<div style="position:absolute;left:545px;top:554px;width:17px;height:9px;border:1px solid #111;border-radius:2px;background:linear-gradient(#d4d4d4,#a0a0a0);box-shadow:inset 1px 1px 0 rgba(255,255,255,.45)"></div>
<svg style="position:absolute;left:566px;top:558px" width="5" height="3"><path d="M0 0H5L2.5 3Z" fill="#888"/></svg>
<div style="position:absolute;left:574px;top:539px;width:31px;height:11px;background:#3c3c3c;border-radius:3px;box-shadow:0 0 0 1px #d0d0d0"></div>
<div style="position:absolute;left:580px;top:554px;width:17px;height:9px;border:1px solid #111;border-radius:2px;background:linear-gradient(#d4d4d4,#a0a0a0);box-shadow:inset 1px 1px 0 rgba(255,255,255,.45)"></div>
<svg style="position:absolute;left:601px;top:558px" width="5" height="3"><path d="M0 0H5L2.5 3Z" fill="#888"/></svg>
<div style="position:absolute;left:609px;top:539px;width:31px;height:11px;background:#3c3c3c;border-radius:3px;box-shadow:0 0 0 1px #d0d0d0"></div>
<div style="position:absolute;left:615px;top:554px;width:17px;height:9px;border:1px solid #111;border-radius:2px;background:linear-gradient(#d4d4d4,#a0a0a0);box-shadow:inset 1px 1px 0 rgba(255,255,255,.45)"></div>
<svg style="position:absolute;left:636px;top:558px" width="5" height="3"><path d="M0 0H5L2.5 3Z" fill="#888"/></svg>
<div style="position:absolute;left:693px;top:540px;width:271px;height:16px;background:#083a16;border-radius:2px"></div>
<svg style="position:absolute;left:693px;top:540px;shape-rendering:crispEdges" width="271" height="16"><rect x="1" y="2" width="4" height="6" fill="#0b4612"/><rect x="1" y="9" width="4" height="6" fill="#0b4612"/><rect x="6" y="2" width="4" height="6" fill="#0b4612"/><rect x="6" y="9" width="4" height="6" fill="#0b4612"/><rect x="11" y="2" width="4" height="6" fill="#0b4612"/><rect x="11" y="9" width="4" height="6" fill="#0b4612"/><rect x="16" y="2" width="4" height="6" fill="#0b4612"/><rect x="16" y="9" width="4" height="6" fill="#0b4612"/><rect x="21" y="2" width="4" height="6" fill="#0b4612"/><rect x="21" y="9" width="4" height="6" fill="#0b4612"/><rect x="26" y="2" width="4" height="6" fill="#0b4612"/><rect x="26" y="9" width="4" height="6" fill="#0b4612"/><rect x="31" y="2" width="4" height="6" fill="#0b4612"/><rect x="31" y="9" width="4" height="6" fill="#0b4612"/><rect x="36" y="2" width="4" height="6" fill="#0b4612"/><rect x="36" y="9" width="4" height="6" fill="#0b4612"/><rect x="41" y="2" width="4" height="6" fill="#0b4612"/><rect x="41" y="9" width="4" height="6" fill="#0b4612"/><rect x="46" y="2" width="4" height="6" fill="#0b4612"/><rect x="46" y="9" width="4" height="6" fill="#0b4612"/><rect x="51" y="2" width="4" height="6" fill="#0b4612"/><rect x="51" y="9" width="4" height="6" fill="#0b4612"/><rect x="56" y="2" width="4" height="6" fill="#0b4612"/><rect x="56" y="9" width="4" height="6" fill="#0b4612"/><rect x="61" y="2" width="4" height="6" fill="#0b4612"/><rect x="61" y="9" width="4" height="6" fill="#0b4612"/><rect x="66" y="2" width="4" height="6" fill="#0b4612"/><rect x="66" y="9" width="4" height="6" fill="#0b4612"/><rect x="71" y="2" width="4" height="6" fill="#0b4612"/><rect x="71" y="9" width="4" height="6" fill="#0b4612"/><rect x="76" y="2" width="4" height="6" fill="#0b4612"/><rect x="76" y="9" width="4" height="6" fill="#0b4612"/><rect x="81" y="2" width="4" height="6" fill="#0b4612"/><rect x="81" y="9" width="4" height="6" fill="#0b4612"/><rect x="86" y="2" width="4" height="6" fill="#0b4612"/><rect x="86" y="9" width="4" height="6" fill="#0b4612"/><rect x="91" y="2" width="4" height="6" fill="#0b4612"/><rect x="91" y="9" width="4" height="6" fill="#0b4612"/><rect x="96" y="2" width="4" height="6" fill="#0b4612"/><rect x="96" y="9" width="4" height="6" fill="#0b4612"/><rect x="101" y="2" width="4" height="6" fill="#0b4612"/><rect x="101" y="9" width="4" height="6" fill="#0b4612"/><rect x="106" y="2" width="4" height="6" fill="#0b4612"/><rect x="106" y="9" width="4" height="6" fill="#0b4612"/><rect x="111" y="2" width="4" height="6" fill="#0b4612"/><rect x="111" y="9" width="4" height="6" fill="#0b4612"/><rect x="116" y="2" width="4" height="6" fill="#0b4612"/><rect x="116" y="9" width="4" height="6" fill="#0b4612"/><rect x="121" y="2" width="4" height="6" fill="#0b4612"/><rect x="121" y="9" width="4" height="6" fill="#0b4612"/><rect x="126" y="2" width="4" height="6" fill="#0b4612"/><rect x="126" y="9" width="4" height="6" fill="#0b4612"/><rect x="131" y="2" width="4" height="6" fill="#0b4612"/><rect x="131" y="9" width="4" height="6" fill="#0b4612"/><rect x="136" y="2" width="4" height="6" fill="#0b4612"/><rect x="136" y="9" width="4" height="6" fill="#0b4612"/><rect x="141" y="2" width="4" height="6" fill="#0b4612"/><rect x="141" y="9" width="4" height="6" fill="#0b4612"/><rect x="146" y="2" width="4" height="6" fill="#0b4612"/><rect x="146" y="9" width="4" height="6" fill="#0b4612"/><rect x="151" y="2" width="4" height="6" fill="#0b4612"/><rect x="151" y="9" width="4" height="6" fill="#0b4612"/><rect x="156" y="2" width="4" height="6" fill="#0b4612"/><rect x="156" y="9" width="4" height="6" fill="#0b4612"/><rect x="161" y="2" width="4" height="6" fill="#0b4612"/><rect x="161" y="9" width="4" height="6" fill="#0b4612"/><rect x="166" y="2" width="4" height="6" fill="#0b4612"/><rect x="166" y="9" width="4" height="6" fill="#0b4612"/><rect x="171" y="2" width="4" height="6" fill="#574c00"/><rect x="171" y="9" width="4" height="6" fill="#574c00"/><rect x="176" y="2" width="4" height="6" fill="#574c00"/><rect x="176" y="9" width="4" height="6" fill="#574c00"/><rect x="181" y="2" width="4" height="6" fill="#574c00"/><rect x="181" y="9" width="4" height="6" fill="#574c00"/><rect x="186" y="2" width="4" height="6" fill="#574c00"/><rect x="186" y="9" width="4" height="6" fill="#574c00"/><rect x="191" y="2" width="4" height="6" fill="#574c00"/><rect x="191" y="9" width="4" height="6" fill="#574c00"/><rect x="196" y="2" width="4" height="6" fill="#574c00"/><rect x="196" y="9" width="4" height="6" fill="#574c00"/><rect x="201" y="2" width="4" height="6" fill="#574c00"/><rect x="201" y="9" width="4" height="6" fill="#574c00"/><rect x="206" y="2" width="4" height="6" fill="#574c00"/><rect x="206" y="9" width="4" height="6" fill="#574c00"/><rect x="211" y="2" width="4" height="6" fill="#574c00"/><rect x="211" y="9" width="4" height="6" fill="#574c00"/><rect x="216" y="2" width="4" height="6" fill="#574c00"/><rect x="216" y="9" width="4" height="6" fill="#574c00"/><rect x="221" y="2" width="4" height="6" fill="#600808"/><rect x="221" y="9" width="4" height="6" fill="#600808"/><rect x="226" y="2" width="4" height="6" fill="#600808"/><rect x="226" y="9" width="4" height="6" fill="#600808"/><rect x="231" y="2" width="4" height="6" fill="#600808"/><rect x="231" y="9" width="4" height="6" fill="#600808"/><rect x="236" y="2" width="4" height="6" fill="#600808"/><rect x="236" y="9" width="4" height="6" fill="#600808"/><rect x="241" y="2" width="4" height="6" fill="#600808"/><rect x="241" y="9" width="4" height="6" fill="#600808"/><rect x="246" y="2" width="4" height="6" fill="#600808"/><rect x="246" y="9" width="4" height="6" fill="#600808"/><rect x="251" y="2" width="4" height="6" fill="#600808"/><rect x="251" y="9" width="4" height="6" fill="#600808"/><rect x="256" y="2" width="4" height="6" fill="#600808"/><rect x="256" y="9" width="4" height="6" fill="#600808"/><rect x="261" y="2" width="4" height="6" fill="#600808"/><rect x="261" y="9" width="4" height="6" fill="#600808"/><rect x="266" y="2" width="4" height="6" fill="#600808"/><rect x="266" y="9" width="4" height="6" fill="#600808"/></svg>
<div style="position:absolute;left:693px;top:558px;width:1px;height:1px;background:#000"></div>
<div class="t" style="left:693px;top:557.85px;font-size:7.5px;line-height:11.5px;color:#000;font-weight:bold;transform:scaleX(0.98);transform-origin:left center;">-50</div>
<div style="position:absolute;left:753px;top:558px;width:1px;height:1px;background:#000"></div>
<div class="t" style="left:738.0px;top:557.85px;width:30px;text-align:center;font-size:7.5px;line-height:11.5px;color:#000;font-weight:bold;transform:scaleX(0.98);transform-origin:center center;">-20</div>
<div style="position:absolute;left:813px;top:558px;width:1px;height:1px;background:#000"></div>
<div class="t" style="left:798.0px;top:557.85px;width:30px;text-align:center;font-size:7.5px;line-height:11.5px;color:#000;font-weight:bold;transform:scaleX(0.98);transform-origin:center center;">-10</div>
<div style="position:absolute;left:863px;top:558px;width:1px;height:1px;background:#000"></div>
<div class="t" style="left:848.0px;top:557.85px;width:30px;text-align:center;font-size:7.5px;line-height:11.5px;color:#000;font-weight:bold;transform:scaleX(0.98);transform-origin:center center;">-5</div>
<div style="position:absolute;left:913px;top:558px;width:1px;height:1px;background:#000"></div>
<div class="t" style="left:898.0px;top:557.85px;width:30px;text-align:center;font-size:7.5px;line-height:11.5px;color:#000;font-weight:bold;transform:scaleX(0.98);transform-origin:center center;">0</div>
<div style="position:absolute;left:963px;top:558px;width:1px;height:1px;background:#000"></div>
<div class="t" style="left:934px;top:557.85px;width:30px;text-align:right;font-size:7.5px;line-height:11.5px;color:#000;font-weight:bold;transform:scaleX(0.98);transform-origin:right center;">+5</div>
<div style="position:absolute;left:1196px;top:541px;width:20px;height:20px;border:1px solid #111;border-radius:2px;background:linear-gradient(#dcdcdc,#a9a9a9);box-shadow:inset 1px 1px 0 rgba(255,255,255,.55);"><div class="t" style="left:0;top:0.5px;width:100%;height:100%;text-align:center;line-height:20px;font-size:8.5px;font-weight:normal;color:#000;transform:scaleX(0.85);-webkit-text-stroke:0.35px #000">EDIT</div></div>
<div style="position:absolute;left:1225px;top:541px;width:5px;height:3px;background:#808080"></div>
<div style="position:absolute;left:8px;top:569px;width:1226px;height:1px;background:#e4e4e4"></div>
<div style="position:absolute;left:8px;top:570px;width:1226px;height:32px;background:linear-gradient(#c6c6c6,#bababa)"></div>
<div style="position:absolute;left:8px;top:602px;width:1226px;height:1px;background:#7c7c7c"></div>
<div style="position:absolute;left:8px;top:570px;width:13px;height:32px;background:linear-gradient(90deg,#a8a8a8,#c0c0c0)"></div>
<div style="position:absolute;left:21px;top:574px;width:114px;height:24px;background:#3c3c3c;border-radius:3px;box-shadow:0 0 0 1px #d8d8d8"></div>
<div class="t" style="left:24px;top:572.5px;font-size:12px;line-height:16px;color:#66d0ff;font-weight:bold;">Brass</div>
<div class="t" style="left:24px;top:585.5px;font-size:10px;line-height:14px;color:#7e9fb6;font-weight:normal;letter-spacing:-0.15px">midi</div>
<svg style="position:absolute;left:127px;top:593px" width="6" height="3"><path d="M0 0H6L3 3Z" fill="#6ab0d0"/></svg>
<div style="position:absolute;left:161px;top:580px;width:18px;height:9px;border:1px solid #111;border-radius:2px;background:linear-gradient(#30f030,#00c000)"></div>
<div style="position:absolute;left:185px;top:580px;width:18px;height:9px;border:1px solid #111;border-radius:2px;background:linear-gradient(#d4d4d4,#a0a0a0);box-shadow:inset 1px 1px 0 rgba(255,255,255,.45)"></div>
<div class="t" style="left:156.0px;top:591.0px;width:30px;text-align:center;font-size:9px;line-height:13px;color:#000;font-weight:normal;transform:scaleX(0.8);transform-origin:center center;-webkit-text-stroke:0.25px #000">Play</div>
<div class="t" style="left:180.0px;top:591.0px;width:30px;text-align:center;font-size:9px;line-height:13px;color:#000;font-weight:normal;transform:scaleX(0.8);transform-origin:center center;-webkit-text-stroke:0.25px #000">Rec</div>
<div style="position:absolute;left:231px;top:576px;width:1px;height:2px;background:#f8f8f8"></div>
<div style="position:absolute;left:231px;top:592px;width:1px;height:2px;background:#f8f8f8"></div>
<div style="position:absolute;left:241px;top:576px;width:1px;height:2px;background:#f8f8f8"></div>
<div style="position:absolute;left:241px;top:592px;width:1px;height:2px;background:#f8f8f8"></div>
<div style="position:absolute;left:251px;top:576px;width:1px;height:2px;background:#f8f8f8"></div>
<div style="position:absolute;left:251px;top:592px;width:1px;height:2px;background:#f8f8f8"></div>
<div style="position:absolute;left:261px;top:576px;width:1px;height:2px;background:#f8f8f8"></div>
<div style="position:absolute;left:261px;top:592px;width:1px;height:2px;background:#f8f8f8"></div>
<div style="position:absolute;left:271px;top:576px;width:1px;height:2px;background:#f8f8f8"></div>
<div style="position:absolute;left:271px;top:592px;width:1px;height:2px;background:#f8f8f8"></div>
<div style="position:absolute;left:281px;top:576px;width:1px;height:2px;background:#f8f8f8"></div>
<div style="position:absolute;left:281px;top:592px;width:1px;height:2px;background:#f8f8f8"></div>
<div style="position:absolute;left:291px;top:576px;width:1px;height:2px;background:#f8f8f8"></div>
<div style="position:absolute;left:291px;top:592px;width:1px;height:2px;background:#f8f8f8"></div>
<div style="position:absolute;left:301px;top:576px;width:1px;height:2px;background:#f8f8f8"></div>
<div style="position:absolute;left:301px;top:592px;width:1px;height:2px;background:#f8f8f8"></div>
<div style="position:absolute;left:311px;top:576px;width:1px;height:2px;background:#f8f8f8"></div>
<div style="position:absolute;left:311px;top:592px;width:1px;height:2px;background:#f8f8f8"></div>
<div style="position:absolute;left:321px;top:576px;width:1px;height:2px;background:#f8f8f8"></div>
<div style="position:absolute;left:321px;top:592px;width:1px;height:2px;background:#f8f8f8"></div>
<div style="position:absolute;left:331px;top:575px;width:1px;height:5px;background:#f8f8f8"></div>
<div style="position:absolute;left:331px;top:590px;width:1px;height:4px;background:#f8f8f8"></div>
<div style="position:absolute;left:341px;top:576px;width:1px;height:2px;background:#f8f8f8"></div>
<div style="position:absolute;left:341px;top:592px;width:1px;height:2px;background:#f8f8f8"></div>
<div style="position:absolute;left:351px;top:576px;width:1px;height:2px;background:#f8f8f8"></div>
<div style="position:absolute;left:351px;top:592px;width:1px;height:2px;background:#f8f8f8"></div>
<div style="position:absolute;left:231px;top:584px;width:129px;height:1px;background:#7e7e7e"></div>
<div style="position:absolute;left:231px;top:585px;width:129px;height:2px;background:#e6e6e6"></div>
<div style="position:absolute;left:328px;top:578px;width:5px;height:13px;border:1px solid #222;border-radius:2px;background:linear-gradient(90deg,#eee,#999);"></div>
<div class="t" style="left:230px;top:592.5px;font-size:8px;line-height:12px;color:#222;font-weight:bold;transform:scaleX(0.82);transform-origin:left center;">0.0</div>
<div style="position:absolute;left:376px;top:574px;width:10px;height:8px;border:1px solid #111;border-radius:2px;background:linear-gradient(#d4d4d4,#a0a0a0);box-shadow:inset 1px 1px 0 rgba(255,255,255,.45)"></div>
<div style="position:absolute;left:376px;top:588px;width:10px;height:8px;border:1px solid #111;border-radius:2px;background:linear-gradient(#d4d4d4,#a0a0a0);box-shadow:inset 1px 1px 0 rgba(255,255,255,.45)"></div>
<div class="t" style="left:391.5px;top:572.25px;font-size:9.5px;line-height:13.5px;color:#000;font-weight:bold;transform:scaleX(0.84);transform-origin:left center;">Mute</div>
<div class="t" style="left:391.5px;top:586.25px;font-size:9.5px;line-height:13.5px;color:#000;font-weight:bold;transform:scaleX(0.84);transform-origin:left center;">Solo</div>
<div class="t" style="left:419.8px;top:568.8px;width:10px;text-align:center;font-size:8px;line-height:12px;color:#000;font-weight:bold;transform:scaleX(0.85);transform-origin:center center;">P</div>
<svg style="position:absolute;left:421.5px;top:568.5px;overflow:visible" width="32.0" height="32.0"><rect x="8.50" y="26.50" width="1.6" height="1.6" fill="#111"/><rect x="3.50" y="21.50" width="1.6" height="1.6" fill="#111"/><rect x="2.50" y="15.50" width="1.6" height="1.6" fill="#111"/><rect x="3.50" y="8.50" width="1.6" height="1.6" fill="#111"/><rect x="8.50" y="3.50" width="1.6" height="1.6" fill="#111"/><rect x="15.50" y="2.50" width="1.6" height="1.6" fill="#111"/><rect x="21.50" y="3.50" width="1.6" height="1.6" fill="#111"/><rect x="26.50" y="8.50" width="1.6" height="1.6" fill="#111"/><rect x="28.50" y="15.50" width="1.6" height="1.6" fill="#111"/><rect x="26.50" y="21.50" width="1.6" height="1.6" fill="#111"/><rect x="21.50" y="26.50" width="1.6" height="1.6" fill="#111"/></svg>
<div style="position:absolute;left:429.6px;top:576.9px;width:19px;height:19px;border-radius:50%;background:#333;opacity:.85;filter:blur(0.6px)"></div>
<div style="position:absolute;left:428.0px;top:575.0px;width:19px;height:19px;border-radius:50%;background:conic-gradient(from 0deg,#f4f4f4 0deg,#ffffff 35deg,#e4e4e4 75deg,#9c9c9c 122deg,#e6e6e6 165deg,#ffffff 210deg,#e2e2e2 255deg,#a4a4a4 302deg,#e8e8e8 340deg,#f4f4f4 360deg);box-shadow:inset 0 0 0 0.8px #8a8a8a, inset -1px -1px 1px rgba(0,0,0,.25)"></div>
<div style="position:absolute;left:435.2px;top:576.2px;width:4.5px;height:4.5px;border-radius:50%;background:#0000ee"></div>
<div class="t" style="left:428.5px;top:592.5px;width:20px;text-align:center;font-size:8px;line-height:12px;color:#222;font-weight:bold;transform:scaleX(0.8);transform-origin:center center;">50</div>
<div class="t" style="left:455.2px;top:568.8px;width:10px;text-align:center;font-size:8px;line-height:12px;color:#000;font-weight:bold;transform:scaleX(0.85);transform-origin:center center;">1</div>
<svg style="position:absolute;left:458.0px;top:568.8px;overflow:visible" width="32.0" height="32.0"><rect x="9.00" y="26.20" width="1.6" height="1.6" fill="#111"/><rect x="4.00" y="21.20" width="1.6" height="1.6" fill="#111"/><rect x="2.00" y="15.20" width="1.6" height="1.6" fill="#111"/><rect x="4.00" y="9.20" width="1.6" height="1.6" fill="#111"/><rect x="9.00" y="4.20" width="1.6" height="1.6" fill="#111"/><rect x="15.00" y="2.20" width="1.6" height="1.6" fill="#111"/><rect x="22.00" y="4.20" width="1.6" height="1.6" fill="#111"/><rect x="26.00" y="9.20" width="1.6" height="1.6" fill="#111"/><rect x="28.00" y="15.20" width="1.6" height="1.6" fill="#111"/><rect x="26.00" y="21.20" width="1.6" height="1.6" fill="#111"/><rect x="22.00" y="26.20" width="1.6" height="1.6" fill="#111"/></svg>
<div style="position:absolute;left:466.1px;top:577.2px;width:19px;height:19px;border-radius:50%;background:#333;opacity:.85;filter:blur(0.6px)"></div>
<div style="position:absolute;left:464.5px;top:575.3px;width:19px;height:19px;border-radius:50%;background:conic-gradient(from 0deg,#f4f4f4 0deg,#ffffff 35deg,#e4e4e4 75deg,#9c9c9c 122deg,#e6e6e6 165deg,#ffffff 210deg,#e2e2e2 255deg,#a4a4a4 302deg,#e8e8e8 340deg,#f4f4f4 360deg);box-shadow:inset 0 0 0 0.8px #8a8a8a, inset -1px -1px 1px rgba(0,0,0,.25)"></div>
<div style="position:absolute;left:468.6px;top:587.6px;width:4.5px;height:4.5px;border-radius:50%;background:#000"></div>
<div class="t" style="left:464.5px;top:592.5px;width:20px;text-align:center;font-size:8px;line-height:12px;color:#111;font-weight:bold;"></div>
<div style="position:absolute;left:539px;top:573px;width:31px;height:11px;background:#3c3c3c;border-radius:3px;box-shadow:0 0 0 1px #d0d0d0"></div>
<div class="t" style="left:534.5px;top:571.5px;width:40px;text-align:center;font-size:10px;line-height:14px;color:#f0f000;font-weight:normal;">MTSi</div>
<div style="position:absolute;left:545px;top:588px;width:17px;height:9px;border:1px solid #111;border-radius:2px;background:linear-gradient(#d4d4d4,#a0a0a0);box-shadow:inset 1px 1px 0 rgba(255,255,255,.45)"></div>
<svg style="position:absolute;left:566px;top:592px" width="5" height="3"><path d="M0 0H5L2.5 3Z" fill="#888"/></svg>
<div style="position:absolute;left:574px;top:573px;width:31px;height:11px;background:#3c3c3c;border-radius:3px;box-shadow:0 0 0 1px #d0d0d0"></div>
<div style="position:absolute;left:580px;top:588px;width:17px;height:9px;border:1px solid #111;border-radius:2px;background:linear-gradient(#d4d4d4,#a0a0a0);box-shadow:inset 1px 1px 0 rgba(255,255,255,.45)"></div>
<svg style="position:absolute;left:601px;top:592px" width="5" height="3"><path d="M0 0H5L2.5 3Z" fill="#888"/></svg>
<div style="position:absolute;left:609px;top:573px;width:31px;height:11px;background:#3c3c3c;border-radius:3px;box-shadow:0 0 0 1px #d0d0d0"></div>
<div style="position:absolute;left:615px;top:588px;width:17px;height:9px;border:1px solid #111;border-radius:2px;background:linear-gradient(#d4d4d4,#a0a0a0);box-shadow:inset 1px 1px 0 rgba(255,255,255,.45)"></div>
<svg style="position:absolute;left:636px;top:592px" width="5" height="3"><path d="M0 0H5L2.5 3Z" fill="#888"/></svg>
<div style="position:absolute;left:693px;top:574px;width:271px;height:16px;background:#083a16;border-radius:2px"></div>
<svg style="position:absolute;left:693px;top:574px;shape-rendering:crispEdges" width="271" height="16"><rect x="1" y="2" width="4" height="6" fill="#0b4612"/><rect x="1" y="9" width="4" height="6" fill="#0b4612"/><rect x="6" y="2" width="4" height="6" fill="#0b4612"/><rect x="6" y="9" width="4" height="6" fill="#0b4612"/><rect x="11" y="2" width="4" height="6" fill="#0b4612"/><rect x="11" y="9" width="4" height="6" fill="#0b4612"/><rect x="16" y="2" width="4" height="6" fill="#0b4612"/><rect x="16" y="9" width="4" height="6" fill="#0b4612"/><rect x="21" y="2" width="4" height="6" fill="#0b4612"/><rect x="21" y="9" width="4" height="6" fill="#0b4612"/><rect x="26" y="2" width="4" height="6" fill="#0b4612"/><rect x="26" y="9" width="4" height="6" fill="#0b4612"/><rect x="31" y="2" width="4" height="6" fill="#0b4612"/><rect x="31" y="9" width="4" height="6" fill="#0b4612"/><rect x="36" y="2" width="4" height="6" fill="#0b4612"/><rect x="36" y="9" width="4" height="6" fill="#0b4612"/><rect x="41" y="2" width="4" height="6" fill="#0b4612"/><rect x="41" y="9" width="4" height="6" fill="#0b4612"/><rect x="46" y="2" width="4" height="6" fill="#0b4612"/><rect x="46" y="9" width="4" height="6" fill="#0b4612"/><rect x="51" y="2" width="4" height="6" fill="#0b4612"/><rect x="51" y="9" width="4" height="6" fill="#0b4612"/><rect x="56" y="2" width="4" height="6" fill="#0b4612"/><rect x="56" y="9" width="4" height="6" fill="#0b4612"/><rect x="61" y="2" width="4" height="6" fill="#0b4612"/><rect x="61" y="9" width="4" height="6" fill="#0b4612"/><rect x="66" y="2" width="4" height="6" fill="#0b4612"/><rect x="66" y="9" width="4" height="6" fill="#0b4612"/><rect x="71" y="2" width="4" height="6" fill="#0b4612"/><rect x="71" y="9" width="4" height="6" fill="#0b4612"/><rect x="76" y="2" width="4" height="6" fill="#0b4612"/><rect x="76" y="9" width="4" height="6" fill="#0b4612"/><rect x="81" y="2" width="4" height="6" fill="#0b4612"/><rect x="81" y="9" width="4" height="6" fill="#0b4612"/><rect x="86" y="2" width="4" height="6" fill="#0b4612"/><rect x="86" y="9" width="4" height="6" fill="#0b4612"/><rect x="91" y="2" width="4" height="6" fill="#0b4612"/><rect x="91" y="9" width="4" height="6" fill="#0b4612"/><rect x="96" y="2" width="4" height="6" fill="#0b4612"/><rect x="96" y="9" width="4" height="6" fill="#0b4612"/><rect x="101" y="2" width="4" height="6" fill="#0b4612"/><rect x="101" y="9" width="4" height="6" fill="#0b4612"/><rect x="106" y="2" width="4" height="6" fill="#0b4612"/><rect x="106" y="9" width="4" height="6" fill="#0b4612"/><rect x="111" y="2" width="4" height="6" fill="#0b4612"/><rect x="111" y="9" width="4" height="6" fill="#0b4612"/><rect x="116" y="2" width="4" height="6" fill="#0b4612"/><rect x="116" y="9" width="4" height="6" fill="#0b4612"/><rect x="121" y="2" width="4" height="6" fill="#0b4612"/><rect x="121" y="9" width="4" height="6" fill="#0b4612"/><rect x="126" y="2" width="4" height="6" fill="#0b4612"/><rect x="126" y="9" width="4" height="6" fill="#0b4612"/><rect x="131" y="2" width="4" height="6" fill="#0b4612"/><rect x="131" y="9" width="4" height="6" fill="#0b4612"/><rect x="136" y="2" width="4" height="6" fill="#0b4612"/><rect x="136" y="9" width="4" height="6" fill="#0b4612"/><rect x="141" y="2" width="4" height="6" fill="#0b4612"/><rect x="141" y="9" width="4" height="6" fill="#0b4612"/><rect x="146" y="2" width="4" height="6" fill="#0b4612"/><rect x="146" y="9" width="4" height="6" fill="#0b4612"/><rect x="151" y="2" width="4" height="6" fill="#0b4612"/><rect x="151" y="9" width="4" height="6" fill="#0b4612"/><rect x="156" y="2" width="4" height="6" fill="#0b4612"/><rect x="156" y="9" width="4" height="6" fill="#0b4612"/><rect x="161" y="2" width="4" height="6" fill="#0b4612"/><rect x="161" y="9" width="4" height="6" fill="#0b4612"/><rect x="166" y="2" width="4" height="6" fill="#0b4612"/><rect x="166" y="9" width="4" height="6" fill="#0b4612"/><rect x="171" y="2" width="4" height="6" fill="#574c00"/><rect x="171" y="9" width="4" height="6" fill="#574c00"/><rect x="176" y="2" width="4" height="6" fill="#574c00"/><rect x="176" y="9" width="4" height="6" fill="#574c00"/><rect x="181" y="2" width="4" height="6" fill="#574c00"/><rect x="181" y="9" width="4" height="6" fill="#574c00"/><rect x="186" y="2" width="4" height="6" fill="#574c00"/><rect x="186" y="9" width="4" height="6" fill="#574c00"/><rect x="191" y="2" width="4" height="6" fill="#574c00"/><rect x="191" y="9" width="4" height="6" fill="#574c00"/><rect x="196" y="2" width="4" height="6" fill="#574c00"/><rect x="196" y="9" width="4" height="6" fill="#574c00"/><rect x="201" y="2" width="4" height="6" fill="#574c00"/><rect x="201" y="9" width="4" height="6" fill="#574c00"/><rect x="206" y="2" width="4" height="6" fill="#574c00"/><rect x="206" y="9" width="4" height="6" fill="#574c00"/><rect x="211" y="2" width="4" height="6" fill="#574c00"/><rect x="211" y="9" width="4" height="6" fill="#574c00"/><rect x="216" y="2" width="4" height="6" fill="#574c00"/><rect x="216" y="9" width="4" height="6" fill="#574c00"/><rect x="221" y="2" width="4" height="6" fill="#600808"/><rect x="221" y="9" width="4" height="6" fill="#600808"/><rect x="226" y="2" width="4" height="6" fill="#600808"/><rect x="226" y="9" width="4" height="6" fill="#600808"/><rect x="231" y="2" width="4" height="6" fill="#600808"/><rect x="231" y="9" width="4" height="6" fill="#600808"/><rect x="236" y="2" width="4" height="6" fill="#600808"/><rect x="236" y="9" width="4" height="6" fill="#600808"/><rect x="241" y="2" width="4" height="6" fill="#600808"/><rect x="241" y="9" width="4" height="6" fill="#600808"/><rect x="246" y="2" width="4" height="6" fill="#600808"/><rect x="246" y="9" width="4" height="6" fill="#600808"/><rect x="251" y="2" width="4" height="6" fill="#600808"/><rect x="251" y="9" width="4" height="6" fill="#600808"/><rect x="256" y="2" width="4" height="6" fill="#600808"/><rect x="256" y="9" width="4" height="6" fill="#600808"/><rect x="261" y="2" width="4" height="6" fill="#600808"/><rect x="261" y="9" width="4" height="6" fill="#600808"/><rect x="266" y="2" width="4" height="6" fill="#600808"/><rect x="266" y="9" width="4" height="6" fill="#600808"/></svg>
<div style="position:absolute;left:693px;top:592px;width:1px;height:1px;background:#000"></div>
<div class="t" style="left:693px;top:591.85px;font-size:7.5px;line-height:11.5px;color:#000;font-weight:bold;transform:scaleX(0.98);transform-origin:left center;">-50</div>
<div style="position:absolute;left:753px;top:592px;width:1px;height:1px;background:#000"></div>
<div class="t" style="left:738.0px;top:591.85px;width:30px;text-align:center;font-size:7.5px;line-height:11.5px;color:#000;font-weight:bold;transform:scaleX(0.98);transform-origin:center center;">-20</div>
<div style="position:absolute;left:813px;top:592px;width:1px;height:1px;background:#000"></div>
<div class="t" style="left:798.0px;top:591.85px;width:30px;text-align:center;font-size:7.5px;line-height:11.5px;color:#000;font-weight:bold;transform:scaleX(0.98);transform-origin:center center;">-10</div>
<div style="position:absolute;left:863px;top:592px;width:1px;height:1px;background:#000"></div>
<div class="t" style="left:848.0px;top:591.85px;width:30px;text-align:center;font-size:7.5px;line-height:11.5px;color:#000;font-weight:bold;transform:scaleX(0.98);transform-origin:center center;">-5</div>
<div style="position:absolute;left:913px;top:592px;width:1px;height:1px;background:#000"></div>
<div class="t" style="left:898.0px;top:591.85px;width:30px;text-align:center;font-size:7.5px;line-height:11.5px;color:#000;font-weight:bold;transform:scaleX(0.98);transform-origin:center center;">0</div>
<div style="position:absolute;left:963px;top:592px;width:1px;height:1px;background:#000"></div>
<div class="t" style="left:934px;top:591.85px;width:30px;text-align:right;font-size:7.5px;line-height:11.5px;color:#000;font-weight:bold;transform:scaleX(0.98);transform-origin:right center;">+5</div>
<div style="position:absolute;left:1196px;top:575px;width:20px;height:20px;border:1px solid #111;border-radius:2px;background:linear-gradient(#dcdcdc,#a9a9a9);box-shadow:inset 1px 1px 0 rgba(255,255,255,.55);"><div class="t" style="left:0;top:0.5px;width:100%;height:100%;text-align:center;line-height:20px;font-size:8.5px;font-weight:normal;color:#000;transform:scaleX(0.85);-webkit-text-stroke:0.35px #000">EDIT</div></div>
<div style="position:absolute;left:1225px;top:575px;width:5px;height:3px;background:#808080"></div>
<div style="position:absolute;left:8px;top:603px;width:1226px;height:1px;background:#e4e4e4"></div>
<div style="position:absolute;left:8px;top:604px;width:1226px;height:32px;background:linear-gradient(#c6c6c6,#bababa)"></div>
<div style="position:absolute;left:8px;top:636px;width:1226px;height:1px;background:#7c7c7c"></div>
<div style="position:absolute;left:8px;top:604px;width:13px;height:32px;background:linear-gradient(90deg,#a8a8a8,#c0c0c0)"></div>
<div style="position:absolute;left:21px;top:608px;width:114px;height:24px;background:#3c3c3c;border-radius:3px;box-shadow:0 0 0 1px #d8d8d8"></div>
<div class="t" style="left:24px;top:606.5px;font-size:12px;line-height:16px;color:#66d0ff;font-weight:bold;">Acoustic Guitar</div>
<div class="t" style="left:24px;top:619.5px;font-size:10px;line-height:14px;color:#7e9fb6;font-weight:normal;letter-spacing:-0.15px">mono audio (.wav)</div>
<svg style="position:absolute;left:127px;top:627px" width="6" height="3"><path d="M0 0H6L3 3Z" fill="#6ab0d0"/></svg>
<div style="position:absolute;left:161px;top:614px;width:18px;height:9px;border:1px solid #111;border-radius:2px;background:linear-gradient(#30f030,#00c000)"></div>
<div style="position:absolute;left:185px;top:614px;width:18px;height:9px;border:1px solid #111;border-radius:2px;background:linear-gradient(#d4d4d4,#a0a0a0);box-shadow:inset 1px 1px 0 rgba(255,255,255,.45)"></div>
<div class="t" style="left:156.0px;top:625.0px;width:30px;text-align:center;font-size:9px;line-height:13px;color:#000;font-weight:normal;transform:scaleX(0.8);transform-origin:center center;-webkit-text-stroke:0.25px #000">Play</div>
<div class="t" style="left:180.0px;top:625.0px;width:30px;text-align:center;font-size:9px;line-height:13px;color:#000;font-weight:normal;transform:scaleX(0.8);transform-origin:center center;-webkit-text-stroke:0.25px #000">Rec</div>
<div style="position:absolute;left:231px;top:610px;width:1px;height:2px;background:#f8f8f8"></div>
<div style="position:absolute;left:231px;top:626px;width:1px;height:2px;background:#f8f8f8"></div>
<div style="position:absolute;left:241px;top:610px;width:1px;height:2px;background:#f8f8f8"></div>
<div style="position:absolute;left:241px;top:626px;width:1px;height:2px;background:#f8f8f8"></div>
<div style="position:absolute;left:251px;top:610px;width:1px;height:2px;background:#f8f8f8"></div>
<div style="position:absolute;left:251px;top:626px;width:1px;height:2px;background:#f8f8f8"></div>
<div style="position:absolute;left:261px;top:610px;width:1px;height:2px;background:#f8f8f8"></div>
<div style="position:absolute;left:261px;top:626px;width:1px;height:2px;background:#f8f8f8"></div>
<div style="position:absolute;left:271px;top:610px;width:1px;height:2px;background:#f8f8f8"></div>
<div style="position:absolute;left:271px;top:626px;width:1px;height:2px;background:#f8f8f8"></div>
<div style="position:absolute;left:281px;top:610px;width:1px;height:2px;background:#f8f8f8"></div>
<div style="position:absolute;left:281px;top:626px;width:1px;height:2px;background:#f8f8f8"></div>
<div style="position:absolute;left:291px;top:610px;width:1px;height:2px;background:#f8f8f8"></div>
<div style="position:absolute;left:291px;top:626px;width:1px;height:2px;background:#f8f8f8"></div>
<div style="position:absolute;left:301px;top:610px;width:1px;height:2px;background:#f8f8f8"></div>
<div style="position:absolute;left:301px;top:626px;width:1px;height:2px;background:#f8f8f8"></div>
<div style="position:absolute;left:311px;top:610px;width:1px;height:2px;background:#f8f8f8"></div>
<div style="position:absolute;left:311px;top:626px;width:1px;height:2px;background:#f8f8f8"></div>
<div style="position:absolute;left:321px;top:610px;width:1px;height:2px;background:#f8f8f8"></div>
<div style="position:absolute;left:321px;top:626px;width:1px;height:2px;background:#f8f8f8"></div>
<div style="position:absolute;left:331px;top:609px;width:1px;height:5px;background:#f8f8f8"></div>
<div style="position:absolute;left:331px;top:624px;width:1px;height:4px;background:#f8f8f8"></div>
<div style="position:absolute;left:341px;top:610px;width:1px;height:2px;background:#f8f8f8"></div>
<div style="position:absolute;left:341px;top:626px;width:1px;height:2px;background:#f8f8f8"></div>
<div style="position:absolute;left:351px;top:610px;width:1px;height:2px;background:#f8f8f8"></div>
<div style="position:absolute;left:351px;top:626px;width:1px;height:2px;background:#f8f8f8"></div>
<div style="position:absolute;left:231px;top:618px;width:129px;height:1px;background:#7e7e7e"></div>
<div style="position:absolute;left:231px;top:619px;width:129px;height:2px;background:#e6e6e6"></div>
<div style="position:absolute;left:328px;top:612px;width:5px;height:13px;border:1px solid #222;border-radius:2px;background:linear-gradient(90deg,#eee,#999);"></div>
<div class="t" style="left:230px;top:626.5px;font-size:8px;line-height:12px;color:#222;font-weight:bold;transform:scaleX(0.82);transform-origin:left center;">0.0</div>
<div style="position:absolute;left:376px;top:608px;width:10px;height:8px;border:1px solid #111;border-radius:2px;background:linear-gradient(#d4d4d4,#a0a0a0);box-shadow:inset 1px 1px 0 rgba(255,255,255,.45)"></div>
<div style="position:absolute;left:376px;top:622px;width:10px;height:8px;border:1px solid #111;border-radius:2px;background:linear-gradient(#d4d4d4,#a0a0a0);box-shadow:inset 1px 1px 0 rgba(255,255,255,.45)"></div>
<div class="t" style="left:391.5px;top:606.25px;font-size:9.5px;line-height:13.5px;color:#000;font-weight:bold;transform:scaleX(0.84);transform-origin:left center;">Mute</div>
<div class="t" style="left:391.5px;top:620.25px;font-size:9.5px;line-height:13.5px;color:#000;font-weight:bold;transform:scaleX(0.84);transform-origin:left center;">Solo</div>
<div class="t" style="left:419.8px;top:602.8px;width:10px;text-align:center;font-size:8px;line-height:12px;color:#000;font-weight:bold;transform:scaleX(0.85);transform-origin:center center;">P</div>
<svg style="position:absolute;left:421.5px;top:602.5px;overflow:visible" width="32.0" height="32.0"><rect x="8.50" y="26.50" width="1.6" height="1.6" fill="#111"/><rect x="3.50" y="21.50" width="1.6" height="1.6" fill="#111"/><rect x="2.50" y="15.50" width="1.6" height="1.6" fill="#111"/><rect x="3.50" y="8.50" width="1.6" height="1.6" fill="#111"/><rect x="8.50" y="3.50" width="1.6" height="1.6" fill="#111"/><rect x="15.50" y="2.50" width="1.6" height="1.6" fill="#111"/><rect x="21.50" y="3.50" width="1.6" height="1.6" fill="#111"/><rect x="26.50" y="8.50" width="1.6" height="1.6" fill="#111"/><rect x="28.50" y="15.50" width="1.6" height="1.6" fill="#111"/><rect x="26.50" y="21.50" width="1.6" height="1.6" fill="#111"/><rect x="21.50" y="26.50" width="1.6" height="1.6" fill="#111"/></svg>
<div style="position:absolute;left:429.6px;top:610.9px;width:19px;height:19px;border-radius:50%;background:#333;opacity:.85;filter:blur(0.6px)"></div>
<div style="position:absolute;left:428.0px;top:609.0px;width:19px;height:19px;border-radius:50%;background:conic-gradient(from 0deg,#f4f4f4 0deg,#ffffff 35deg,#e4e4e4 75deg,#9c9c9c 122deg,#e6e6e6 165deg,#ffffff 210deg,#e2e2e2 255deg,#a4a4a4 302deg,#e8e8e8 340deg,#f4f4f4 360deg);box-shadow:inset 0 0 0 0.8px #8a8a8a, inset -1px -1px 1px rgba(0,0,0,.25)"></div>
<div style="position:absolute;left:435.2px;top:610.2px;width:4.5px;height:4.5px;border-radius:50%;background:#0000ee"></div>
<div class="t" style="left:428.5px;top:626.5px;width:20px;text-align:center;font-size:8px;line-height:12px;color:#222;font-weight:bold;transform:scaleX(0.8);transform-origin:center center;">50</div>
<div class="t" style="left:455.2px;top:602.8px;width:10px;text-align:center;font-size:8px;line-height:12px;color:#000;font-weight:bold;transform:scaleX(0.85);transform-origin:center center;">1</div>
<svg style="position:absolute;left:458.0px;top:602.8px;overflow:visible" width="32.0" height="32.0"><rect x="9.00" y="26.20" width="1.6" height="1.6" fill="#111"/><rect x="4.00" y="21.20" width="1.6" height="1.6" fill="#111"/><rect x="2.00" y="15.20" width="1.6" height="1.6" fill="#111"/><rect x="4.00" y="9.20" width="1.6" height="1.6" fill="#111"/><rect x="9.00" y="4.20" width="1.6" height="1.6" fill="#111"/><rect x="15.00" y="2.20" width="1.6" height="1.6" fill="#111"/><rect x="22.00" y="4.20" width="1.6" height="1.6" fill="#111"/><rect x="26.00" y="9.20" width="1.6" height="1.6" fill="#111"/><rect x="28.00" y="15.20" width="1.6" height="1.6" fill="#111"/><rect x="26.00" y="21.20" width="1.6" height="1.6" fill="#111"/><rect x="22.00" y="26.20" width="1.6" height="1.6" fill="#111"/></svg>
<div style="position:absolute;left:466.1px;top:611.2px;width:19px;height:19px;border-radius:50%;background:#333;opacity:.85;filter:blur(0.6px)"></div>
<div style="position:absolute;left:464.5px;top:609.3px;width:19px;height:19px;border-radius:50%;background:conic-gradient(from 0deg,#f4f4f4 0deg,#ffffff 35deg,#e4e4e4 75deg,#9c9c9c 122deg,#e6e6e6 165deg,#ffffff 210deg,#e2e2e2 255deg,#a4a4a4 302deg,#e8e8e8 340deg,#f4f4f4 360deg);box-shadow:inset 0 0 0 0.8px #8a8a8a, inset -1px -1px 1px rgba(0,0,0,.25)"></div>
<div style="position:absolute;left:468.6px;top:621.6px;width:4.5px;height:4.5px;border-radius:50%;background:#000"></div>
<div class="t" style="left:464.5px;top:626.5px;width:20px;text-align:center;font-size:8px;line-height:12px;color:#111;font-weight:bold;"></div>
<div style="position:absolute;left:539px;top:607px;width:31px;height:11px;background:#3c3c3c;border-radius:3px;box-shadow:0 0 0 1px #d0d0d0"></div>
<div style="position:absolute;left:545px;top:622px;width:17px;height:9px;border:1px solid #111;border-radius:2px;background:linear-gradient(#d4d4d4,#a0a0a0);box-shadow:inset 1px 1px 0 rgba(255,255,255,.45)"></div>
<svg style="position:absolute;left:566px;top:626px" width="5" height="3"><path d="M0 0H5L2.5 3Z" fill="#888"/></svg>
<div style="position:absolute;left:574px;top:607px;width:31px;height:11px;background:#3c3c3c;border-radius:3px;box-shadow:0 0 0 1px #d0d0d0"></div>
<div style="position:absolute;left:580px;top:622px;width:17px;height:9px;border:1px solid #111;border-radius:2px;background:linear-gradient(#d4d4d4,#a0a0a0);box-shadow:inset 1px 1px 0 rgba(255,255,255,.45)"></div>
<svg style="position:absolute;left:601px;top:626px" width="5" height="3"><path d="M0 0H5L2.5 3Z" fill="#888"/></svg>
<div style="position:absolute;left:609px;top:607px;width:31px;height:11px;background:#3c3c3c;border-radius:3px;box-shadow:0 0 0 1px #d0d0d0"></div>
<div style="position:absolute;left:615px;top:622px;width:17px;height:9px;border:1px solid #111;border-radius:2px;background:linear-gradient(#d4d4d4,#a0a0a0);box-shadow:inset 1px 1px 0 rgba(255,255,255,.45)"></div>
<svg style="position:absolute;left:636px;top:626px" width="5" height="3"><path d="M0 0H5L2.5 3Z" fill="#888"/></svg>
<div style="position:absolute;left:693px;top:608px;width:271px;height:16px;background:#083a16;border-radius:2px"></div>
<svg style="position:absolute;left:693px;top:608px;shape-rendering:crispEdges" width="271" height="16"><rect x="1" y="2" width="4" height="6" fill="#0b4612"/><rect x="1" y="9" width="4" height="6" fill="#0b4612"/><rect x="6" y="2" width="4" height="6" fill="#0b4612"/><rect x="6" y="9" width="4" height="6" fill="#0b4612"/><rect x="11" y="2" width="4" height="6" fill="#0b4612"/><rect x="11" y="9" width="4" height="6" fill="#0b4612"/><rect x="16" y="2" width="4" height="6" fill="#0b4612"/><rect x="16" y="9" width="4" height="6" fill="#0b4612"/><rect x="21" y="2" width="4" height="6" fill="#0b4612"/><rect x="21" y="9" width="4" height="6" fill="#0b4612"/><rect x="26" y="2" width="4" height="6" fill="#0b4612"/><rect x="26" y="9" width="4" height="6" fill="#0b4612"/><rect x="31" y="2" width="4" height="6" fill="#0b4612"/><rect x="31" y="9" width="4" height="6" fill="#0b4612"/><rect x="36" y="2" width="4" height="6" fill="#0b4612"/><rect x="36" y="9" width="4" height="6" fill="#0b4612"/><rect x="41" y="2" width="4" height="6" fill="#0b4612"/><rect x="41" y="9" width="4" height="6" fill="#0b4612"/><rect x="46" y="2" width="4" height="6" fill="#0b4612"/><rect x="46" y="9" width="4" height="6" fill="#0b4612"/><rect x="51" y="2" width="4" height="6" fill="#0b4612"/><rect x="51" y="9" width="4" height="6" fill="#0b4612"/><rect x="56" y="2" width="4" height="6" fill="#0b4612"/><rect x="56" y="9" width="4" height="6" fill="#0b4612"/><rect x="61" y="2" width="4" height="6" fill="#0b4612"/><rect x="61" y="9" width="4" height="6" fill="#0b4612"/><rect x="66" y="2" width="4" height="6" fill="#0b4612"/><rect x="66" y="9" width="4" height="6" fill="#0b4612"/><rect x="71" y="2" width="4" height="6" fill="#0b4612"/><rect x="71" y="9" width="4" height="6" fill="#0b4612"/><rect x="76" y="2" width="4" height="6" fill="#0b4612"/><rect x="76" y="9" width="4" height="6" fill="#0b4612"/><rect x="81" y="2" width="4" height="6" fill="#0b4612"/><rect x="81" y="9" width="4" height="6" fill="#0b4612"/><rect x="86" y="2" width="4" height="6" fill="#0b4612"/><rect x="86" y="9" width="4" height="6" fill="#0b4612"/><rect x="91" y="2" width="4" height="6" fill="#0b4612"/><rect x="91" y="9" width="4" height="6" fill="#0b4612"/><rect x="96" y="2" width="4" height="6" fill="#0b4612"/><rect x="96" y="9" width="4" height="6" fill="#0b4612"/><rect x="101" y="2" width="4" height="6" fill="#0b4612"/><rect x="101" y="9" width="4" height="6" fill="#0b4612"/><rect x="106" y="2" width="4" height="6" fill="#0b4612"/><rect x="106" y="9" width="4" height="6" fill="#0b4612"/><rect x="111" y="2" width="4" height="6" fill="#0b4612"/><rect x="111" y="9" width="4" height="6" fill="#0b4612"/><rect x="116" y="2" width="4" height="6" fill="#0b4612"/><rect x="116" y="9" width="4" height="6" fill="#0b4612"/><rect x="121" y="2" width="4" height="6" fill="#0b4612"/><rect x="121" y="9" width="4" height="6" fill="#0b4612"/><rect x="126" y="2" width="4" height="6" fill="#0b4612"/><rect x="126" y="9" width="4" height="6" fill="#0b4612"/><rect x="131" y="2" width="4" height="6" fill="#0b4612"/><rect x="131" y="9" width="4" height="6" fill="#0b4612"/><rect x="136" y="2" width="4" height="6" fill="#0b4612"/><rect x="136" y="9" width="4" height="6" fill="#0b4612"/><rect x="141" y="2" width="4" height="6" fill="#0b4612"/><rect x="141" y="9" width="4" height="6" fill="#0b4612"/><rect x="146" y="2" width="4" height="6" fill="#0b4612"/><rect x="146" y="9" width="4" height="6" fill="#0b4612"/><rect x="151" y="2" width="4" height="6" fill="#0b4612"/><rect x="151" y="9" width="4" height="6" fill="#0b4612"/><rect x="156" y="2" width="4" height="6" fill="#0b4612"/><rect x="156" y="9" width="4" height="6" fill="#0b4612"/><rect x="161" y="2" width="4" height="6" fill="#0b4612"/><rect x="161" y="9" width="4" height="6" fill="#0b4612"/><rect x="166" y="2" width="4" height="6" fill="#0b4612"/><rect x="166" y="9" width="4" height="6" fill="#0b4612"/><rect x="171" y="2" width="4" height="6" fill="#574c00"/><rect x="171" y="9" width="4" height="6" fill="#574c00"/><rect x="176" y="2" width="4" height="6" fill="#574c00"/><rect x="176" y="9" width="4" height="6" fill="#574c00"/><rect x="181" y="2" width="4" height="6" fill="#574c00"/><rect x="181" y="9" width="4" height="6" fill="#574c00"/><rect x="186" y="2" width="4" height="6" fill="#574c00"/><rect x="186" y="9" width="4" height="6" fill="#574c00"/><rect x="191" y="2" width="4" height="6" fill="#574c00"/><rect x="191" y="9" width="4" height="6" fill="#574c00"/><rect x="196" y="2" width="4" height="6" fill="#574c00"/><rect x="196" y="9" width="4" height="6" fill="#574c00"/><rect x="201" y="2" width="4" height="6" fill="#574c00"/><rect x="201" y="9" width="4" height="6" fill="#574c00"/><rect x="206" y="2" width="4" height="6" fill="#574c00"/><rect x="206" y="9" width="4" height="6" fill="#574c00"/><rect x="211" y="2" width="4" height="6" fill="#574c00"/><rect x="211" y="9" width="4" height="6" fill="#574c00"/><rect x="216" y="2" width="4" height="6" fill="#574c00"/><rect x="216" y="9" width="4" height="6" fill="#574c00"/><rect x="221" y="2" width="4" height="6" fill="#600808"/><rect x="221" y="9" width="4" height="6" fill="#600808"/><rect x="226" y="2" width="4" height="6" fill="#600808"/><rect x="226" y="9" width="4" height="6" fill="#600808"/><rect x="231" y="2" width="4" height="6" fill="#600808"/><rect x="231" y="9" width="4" height="6" fill="#600808"/><rect x="236" y="2" width="4" height="6" fill="#600808"/><rect x="236" y="9" width="4" height="6" fill="#600808"/><rect x="241" y="2" width="4" height="6" fill="#600808"/><rect x="241" y="9" width="4" height="6" fill="#600808"/><rect x="246" y="2" width="4" height="6" fill="#600808"/><rect x="246" y="9" width="4" height="6" fill="#600808"/><rect x="251" y="2" width="4" height="6" fill="#600808"/><rect x="251" y="9" width="4" height="6" fill="#600808"/><rect x="256" y="2" width="4" height="6" fill="#600808"/><rect x="256" y="9" width="4" height="6" fill="#600808"/><rect x="261" y="2" width="4" height="6" fill="#600808"/><rect x="261" y="9" width="4" height="6" fill="#600808"/><rect x="266" y="2" width="4" height="6" fill="#600808"/><rect x="266" y="9" width="4" height="6" fill="#600808"/></svg>
<div style="position:absolute;left:693px;top:626px;width:1px;height:1px;background:#000"></div>
<div class="t" style="left:693px;top:625.85px;font-size:7.5px;line-height:11.5px;color:#000;font-weight:bold;transform:scaleX(0.98);transform-origin:left center;">-50</div>
<div style="position:absolute;left:753px;top:626px;width:1px;height:1px;background:#000"></div>
<div class="t" style="left:738.0px;top:625.85px;width:30px;text-align:center;font-size:7.5px;line-height:11.5px;color:#000;font-weight:bold;transform:scaleX(0.98);transform-origin:center center;">-20</div>
<div style="position:absolute;left:813px;top:626px;width:1px;height:1px;background:#000"></div>
<div class="t" style="left:798.0px;top:625.85px;width:30px;text-align:center;font-size:7.5px;line-height:11.5px;color:#000;font-weight:bold;transform:scaleX(0.98);transform-origin:center center;">-10</div>
<div style="position:absolute;left:863px;top:626px;width:1px;height:1px;background:#000"></div>
<div class="t" style="left:848.0px;top:625.85px;width:30px;text-align:center;font-size:7.5px;line-height:11.5px;color:#000;font-weight:bold;transform:scaleX(0.98);transform-origin:center center;">-5</div>
<div style="position:absolute;left:913px;top:626px;width:1px;height:1px;background:#000"></div>
<div class="t" style="left:898.0px;top:625.85px;width:30px;text-align:center;font-size:7.5px;line-height:11.5px;color:#000;font-weight:bold;transform:scaleX(0.98);transform-origin:center center;">0</div>
<div style="position:absolute;left:963px;top:626px;width:1px;height:1px;background:#000"></div>
<div class="t" style="left:934px;top:625.85px;width:30px;text-align:right;font-size:7.5px;line-height:11.5px;color:#000;font-weight:bold;transform:scaleX(0.98);transform-origin:right center;">+5</div>
<div style="position:absolute;left:1196px;top:609px;width:20px;height:20px;border:1px solid #111;border-radius:2px;background:linear-gradient(#dcdcdc,#a9a9a9);box-shadow:inset 1px 1px 0 rgba(255,255,255,.55);"><div class="t" style="left:0;top:0.5px;width:100%;height:100%;text-align:center;line-height:20px;font-size:8.5px;font-weight:normal;color:#000;transform:scaleX(0.85);-webkit-text-stroke:0.35px #000">EDIT</div></div>
<div style="position:absolute;left:1225px;top:609px;width:5px;height:3px;background:#808080"></div>
<div style="position:absolute;left:8px;top:200px;width:1226px;height:1px;background:#e4e4e4"></div>
<div style="position:absolute;left:8px;top:201px;width:1226px;height:163px;background:linear-gradient(#c6c6c6,#bababa)"></div>
<div style="position:absolute;left:8px;top:364px;width:1226px;height:1px;background:#7c7c7c"></div>
<div style="position:absolute;left:8px;top:201px;width:13px;height:163px;background:linear-gradient(90deg,#a8a8a8,#c0c0c0)"></div>
<div style="position:absolute;left:25px;top:202px;width:1193px;height:157px;background:#535353;border-radius:3px;box-shadow:-1px -1px 0 #e8e8e8"></div>
<div class="t" style="left:27.0px;top:209.0px;width:12px;text-align:center;font-size:12px;line-height:16px;color:#8a8a8a;font-weight:bold;">+</div>
<div style="position:absolute;left:30px;top:227px;width:6px;height:2px;background:#8a8a8a"></div>
<div class="t" style="left:86.0px;top:211.5px;width:12px;text-align:center;font-size:9px;line-height:13px;color:#8a8a8a;font-weight:bold;">C</div>
<div style="position:absolute;left:100px;top:202px;width:1118px;height:11px;background:#575757"></div>
<div style="position:absolute;left:100px;top:213px;width:1112px;height:128px;background:#333333"></div>
<svg style="position:absolute;left:100px;top:213px" width="1112" height="128"><line x1="9.5" y1="0" x2="9.5" y2="128" stroke="#686868" stroke-width="1" stroke-dasharray="4,4"/><line x1="31.5" y1="0" x2="31.5" y2="128" stroke="#686868" stroke-width="1" stroke-dasharray="4,4"/><rect x="52" y="0" width="1" height="128" fill="#5c5c5c"/><line x1="74.5" y1="0" x2="74.5" y2="128" stroke="#686868" stroke-width="1" stroke-dasharray="4,4"/><line x1="95.5" y1="0" x2="95.5" y2="128" stroke="#686868" stroke-width="1" stroke-dasharray="4,4"/><line x1="117.5" y1="0" x2="117.5" y2="128" stroke="#686868" stroke-width="1" stroke-dasharray="4,4"/><rect x="139" y="0" width="1" height="128" fill="#a8a8a8"/><line x1="160.5" y1="0" x2="160.5" y2="128" stroke="#686868" stroke-width="1" stroke-dasharray="4,4"/><line x1="182.5" y1="0" x2="182.5" y2="128" stroke="#686868" stroke-width="1" stroke-dasharray="4,4"/><line x1="203.5" y1="0" x2="203.5" y2="128" stroke="#686868" stroke-width="1" stroke-dasharray="4,4"/><rect x="225" y="0" width="1" height="128" fill="#5c5c5c"/><line x1="246.5" y1="0" x2="246.5" y2="128" stroke="#686868" stroke-width="1" stroke-dasharray="4,4"/><line x1="268.5" y1="0" x2="268.5" y2="128" stroke="#686868" stroke-width="1" stroke-dasharray="4,4"/><line x1="289.5" y1="0" x2="289.5" y2="128" stroke="#686868" stroke-width="1" stroke-dasharray="4,4"/><rect x="311" y="0" width="1" height="128" fill="#5c5c5c"/><line x1="332.5" y1="0" x2="332.5" y2="128" stroke="#686868" stroke-width="1" stroke-dasharray="4,4"/><line x1="354.5" y1="0" x2="354.5" y2="128" stroke="#686868" stroke-width="1" stroke-dasharray="4,4"/><line x1="375.5" y1="0" x2="375.5" y2="128" stroke="#686868" stroke-width="1" stroke-dasharray="4,4"/><rect x="397" y="0" width="1" height="128" fill="#5c5c5c"/><line x1="418.5" y1="0" x2="418.5" y2="128" stroke="#686868" stroke-width="1" stroke-dasharray="4,4"/><line x1="440.5" y1="0" x2="440.5" y2="128" stroke="#686868" stroke-width="1" stroke-dasharray="4,4"/><line x1="461.5" y1="0" x2="461.5" y2="128" stroke="#686868" stroke-width="1" stroke-dasharray="4,4"/><rect x="483" y="0" width="1" height="128" fill="#a8a8a8"/><line x1="505.5" y1="0" x2="505.5" y2="128" stroke="#686868" stroke-width="1" stroke-dasharray="4,4"/><line x1="526.5" y1="0" x2="526.5" y2="128" stroke="#686868" stroke-width="1" stroke-dasharray="4,4"/><line x1="548.5" y1="0" x2="548.5" y2="128" stroke="#686868" stroke-width="1" stroke-dasharray="4,4"/><rect x="569" y="0" width="1" height="128" fill="#5c5c5c"/><line x1="591.5" y1="0" x2="591.5" y2="128" stroke="#686868" stroke-width="1" stroke-dasharray="4,4"/><line x1="612.5" y1="0" x2="612.5" y2="128" stroke="#686868" stroke-width="1" stroke-dasharray="4,4"/><line x1="634.5" y1="0" x2="634.5" y2="128" stroke="#686868" stroke-width="1" stroke-dasharray="4,4"/><rect x="655" y="0" width="1" height="128" fill="#5c5c5c"/><line x1="677.5" y1="0" x2="677.5" y2="128" stroke="#686868" stroke-width="1" stroke-dasharray="4,4"/><line x1="698.5" y1="0" x2="698.5" y2="128" stroke="#686868" stroke-width="1" stroke-dasharray="4,4"/><line x1="720.5" y1="0" x2="720.5" y2="128" stroke="#686868" stroke-width="1" stroke-dasharray="4,4"/><rect x="741" y="0" width="1" height="128" fill="#5c5c5c"/><line x1="763.5" y1="0" x2="763.5" y2="128" stroke="#686868" stroke-width="1" stroke-dasharray="4,4"/><line x1="784.5" y1="0" x2="784.5" y2="128" stroke="#686868" stroke-width="1" stroke-dasharray="4,4"/><line x1="806.5" y1="0" x2="806.5" y2="128" stroke="#686868" stroke-width="1" stroke-dasharray="4,4"/><rect x="827" y="0" width="1" height="128" fill="#a8a8a8"/><line x1="849.5" y1="0" x2="849.5" y2="128" stroke="#686868" stroke-width="1" stroke-dasharray="4,4"/><line x1="871.5" y1="0" x2="871.5" y2="128" stroke="#686868" stroke-width="1" stroke-dasharray="4,4"/><line x1="892.5" y1="0" x2="892.5" y2="128" stroke="#686868" stroke-width="1" stroke-dasharray="4,4"/><rect x="914" y="0" width="1" height="128" fill="#5c5c5c"/><line x1="935.5" y1="0" x2="935.5" y2="128" stroke="#686868" stroke-width="1" stroke-dasharray="4,4"/><line x1="957.5" y1="0" x2="957.5" y2="128" stroke="#686868" stroke-width="1" stroke-dasharray="4,4"/><line x1="978.5" y1="0" x2="978.5" y2="128" stroke="#686868" stroke-width="1" stroke-dasharray="4,4"/><rect x="1000" y="0" width="1" height="128" fill="#5c5c5c"/><line x1="1021.5" y1="0" x2="1021.5" y2="128" stroke="#686868" stroke-width="1" stroke-dasharray="4,4"/><line x1="1043.5" y1="0" x2="1043.5" y2="128" stroke="#686868" stroke-width="1" stroke-dasharray="4,4"/><line x1="1064.5" y1="0" x2="1064.5" y2="128" stroke="#686868" stroke-width="1" stroke-dasharray="4,4"/><rect x="1086" y="0" width="1" height="128" fill="#5c5c5c"/><line x1="1107.5" y1="0" x2="1107.5" y2="128" stroke="#686868" stroke-width="1" stroke-dasharray="4,4"/><polygon points="114.0,64.0 115.0,64.0 115.0,53.7 116.0,53.7 116.0,53.9 117.0,53.9 117.0,53.6 118.0,53.6 118.0,53.8 119.0,53.8 119.0,54.7 120.0,54.7 120.0,53.1 121.0,53.1 121.0,54.3 122.0,54.3 122.0,54.3 123.0,54.3 123.0,54.9 124.0,54.9 124.0,54.7 125.0,54.7 125.0,55.1 126.0,55.1 126.0,53.0 127.0,53.0 127.0,51.9 128.0,51.9 128.0,55.1 129.0,55.1 129.0,55.2 130.0,55.2 130.0,55.7 131.0,55.7 131.0,55.4 132.0,55.4 132.0,53.5 133.0,53.5 133.0,54.0 134.0,54.0 134.0,56.4 135.0,56.4 135.0,56.6 136.0,56.6 136.0,56.1 137.0,56.1 137.0,55.8 138.0,55.8 138.0,56.6 139.0,56.6 139.0,56.6 140.0,56.6 140.0,57.0 141.0,57.0 141.0,58.2 142.0,58.2 142.0,58.4 143.0,58.4 143.0,58.9 144.0,58.9 144.0,59.6 145.0,59.6 145.0,61.2 146.0,61.2 146.0,64.0 146.0,64.0 146.0,66.4 145.0,66.4 145.0,69.3 144.0,69.3 144.0,69.3 143.0,69.3 143.0,70.8 142.0,70.8 142.0,73.2 141.0,73.2 141.0,77.6 140.0,77.6 140.0,74.3 139.0,74.3 139.0,76.2 138.0,76.2 138.0,74.1 137.0,74.1 137.0,74.6 136.0,74.6 136.0,75.5 135.0,75.5 135.0,74.5 134.0,74.5 134.0,75.8 133.0,75.8 133.0,76.4 132.0,76.4 132.0,76.6 131.0,76.6 131.0,79.2 130.0,79.2 130.0,76.3 129.0,76.3 129.0,76.9 128.0,76.9 128.0,76.4 127.0,76.4 127.0,77.3 126.0,77.3 126.0,76.7 125.0,76.7 125.0,77.2 124.0,77.2 124.0,76.6 123.0,76.6 123.0,76.3 122.0,76.3 122.0,77.3 121.0,77.3 121.0,76.7 120.0,76.7 120.0,81.6 119.0,81.6 119.0,77.1 118.0,77.1 118.0,77.1 117.0,77.1 117.0,79.3 116.0,79.3 116.0,80.1 115.0,80.1 115.0,64.0 114.0,64.0" fill="#66ddff"/><polygon points="146.0,64.0 147.0,64.0 147.0,49.8 148.0,49.8 148.0,49.8 149.0,49.8 149.0,50.0 150.0,50.0 150.0,50.8 151.0,50.8 151.0,51.8 152.0,51.8 152.0,51.0 153.0,51.0 153.0,51.9 154.0,51.9 154.0,52.5 155.0,52.5 155.0,52.4 156.0,52.4 156.0,51.4 157.0,51.4 157.0,52.6 158.0,52.6 158.0,53.2 159.0,53.2 159.0,52.1 160.0,52.1 160.0,53.4 161.0,53.4 161.0,53.3 162.0,53.3 162.0,53.5 163.0,53.5 163.0,52.8 164.0,52.8 164.0,53.0 165.0,53.0 165.0,52.7 166.0,52.7 166.0,54.1 167.0,54.1 167.0,52.8 168.0,52.8 168.0,53.5 169.0,53.5 169.0,54.1 170.0,54.1 170.0,53.2 171.0,53.2 171.0,53.1 172.0,53.1 172.0,53.9 173.0,53.9 173.0,53.8 174.0,53.8 174.0,53.4 175.0,53.4 175.0,54.4 176.0,54.4 176.0,52.5 177.0,52.5 177.0,54.6 178.0,54.6 178.0,55.9 179.0,55.9 179.0,56.0 180.0,56.0 180.0,56.6 181.0,56.6 181.0,57.6 182.0,57.6 182.0,59.1 183.0,59.1 183.0,58.7 184.0,58.7 184.0,62.0 185.0,62.0 185.0,64.0 185.0,64.0 185.0,66.0 184.0,66.0 184.0,67.6 183.0,67.6 183.0,70.5 182.0,70.5 182.0,72.7 181.0,72.7 181.0,72.6 180.0,72.6 180.0,73.4 179.0,73.4 179.0,74.7 178.0,74.7 178.0,75.1 177.0,75.1 177.0,75.8 176.0,75.8 176.0,76.1 175.0,76.1 175.0,77.7 174.0,77.7 174.0,78.5 173.0,78.5 173.0,77.1 172.0,77.1 172.0,77.3 171.0,77.3 171.0,76.9 170.0,76.9 170.0,76.5 169.0,76.5 169.0,77.8 168.0,77.8 168.0,76.5 167.0,76.5 167.0,77.6 166.0,77.6 166.0,82.3 165.0,82.3 165.0,79.0 164.0,79.0 164.0,78.3 163.0,78.3 163.0,82.3 162.0,82.3 162.0,77.3 161.0,77.3 161.0,78.5 160.0,78.5 160.0,77.5 159.0,77.5 159.0,78.7 158.0,78.7 158.0,78.7 157.0,78.7 157.0,77.2 156.0,77.2 156.0,77.6 155.0,77.6 155.0,78.7 154.0,78.7 154.0,78.0 153.0,78.0 153.0,77.8 152.0,77.8 152.0,79.1 151.0,79.1 151.0,80.7 150.0,80.7 150.0,79.3 149.0,79.3 149.0,78.8 148.0,78.8 148.0,78.4 147.0,78.4 147.0,64.0 146.0,64.0" fill="#66ddff"/><polygon points="188.0,63.0 189.0,63.0 189.0,62.8 190.0,62.8 190.0,62.5 191.0,62.5 191.0,62.2 192.0,62.2 192.0,62.0 193.0,62.0 193.0,62.7 194.0,62.7 194.0,63.3 195.0,63.3 195.0,64.0 195.0,64.0 195.0,64.7 194.0,64.7 194.0,65.3 193.0,65.3 193.0,66.0 192.0,66.0 192.0,65.8 191.0,65.8 191.0,65.5 190.0,65.5 190.0,65.2 189.0,65.2 189.0,65.0 188.0,65.0" fill="#66ddff"/><polygon points="196.0,64.0 197.0,64.0 197.0,53.6 198.0,53.6 198.0,52.4 199.0,52.4 199.0,52.8 200.0,52.8 200.0,52.5 201.0,52.5 201.0,52.5 202.0,52.5 202.0,52.9 203.0,52.9 203.0,53.0 204.0,53.0 204.0,53.8 205.0,53.8 205.0,52.6 206.0,52.6 206.0,49.9 207.0,49.9 207.0,50.6 208.0,50.6 208.0,52.3 209.0,52.3 209.0,49.0 210.0,49.0 210.0,52.7 211.0,52.7 211.0,52.4 212.0,52.4 212.0,52.3 213.0,52.3 213.0,53.4 214.0,53.4 214.0,49.4 215.0,49.4 215.0,52.5 216.0,52.5 216.0,52.9 217.0,52.9 217.0,53.0 218.0,53.0 218.0,53.5 219.0,53.5 219.0,52.5 220.0,52.5 220.0,49.4 221.0,49.4 221.0,53.3 222.0,53.3 222.0,52.9 223.0,52.9 223.0,54.7 224.0,54.7 224.0,55.7 225.0,55.7 225.0,64.0 225.0,64.0 225.0,73.1 224.0,73.1 224.0,73.8 223.0,73.8 223.0,73.5 222.0,73.5 222.0,73.7 221.0,73.7 221.0,73.5 220.0,73.5 220.0,73.4 219.0,73.4 219.0,74.5 218.0,74.5 218.0,74.5 217.0,74.5 217.0,74.2 216.0,74.2 216.0,78.1 215.0,78.1 215.0,73.9 214.0,73.9 214.0,75.7 213.0,75.7 213.0,73.9 212.0,73.9 212.0,75.2 211.0,75.2 211.0,74.6 210.0,74.6 210.0,75.1 209.0,75.1 209.0,75.3 208.0,75.3 208.0,73.9 207.0,73.9 207.0,74.3 206.0,74.3 206.0,74.1 205.0,74.1 205.0,77.8 204.0,77.8 204.0,74.1 203.0,74.1 203.0,74.0 202.0,74.0 202.0,77.2 201.0,77.2 201.0,74.8 200.0,74.8 200.0,74.9 199.0,74.9 199.0,80.2 198.0,80.2 198.0,74.4 197.0,74.4 197.0,64.0 196.0,64.0" fill="#66ddff"/><polygon points="227.0,64.0 228.0,64.0 228.0,45.0 229.0,45.0 229.0,42.8 230.0,42.8 230.0,45.0 231.0,45.0 231.0,45.8 232.0,45.8 232.0,45.4 233.0,45.4 233.0,45.9 234.0,45.9 234.0,46.1 235.0,46.1 235.0,46.0 236.0,46.0 236.0,46.3 237.0,46.3 237.0,44.4 238.0,44.4 238.0,46.6 239.0,46.6 239.0,46.6 240.0,46.6 240.0,46.8 241.0,46.8 241.0,46.5 242.0,46.5 242.0,46.6 243.0,46.6 243.0,47.0 244.0,47.0 244.0,47.0 245.0,47.0 245.0,47.9 246.0,47.9 246.0,47.3 247.0,47.3 247.0,47.5 248.0,47.5 248.0,47.4 249.0,47.4 249.0,49.4 250.0,49.4 250.0,50.1 251.0,50.1 251.0,47.4 252.0,47.4 252.0,50.1 253.0,50.1 253.0,51.7 254.0,51.7 254.0,51.2 255.0,51.2 255.0,53.2 256.0,53.2 256.0,55.5 257.0,55.5 257.0,55.9 258.0,55.9 258.0,57.7 259.0,57.7 259.0,64.0 259.0,64.0 259.0,69.8 258.0,69.8 258.0,72.2 257.0,72.2 257.0,72.2 256.0,72.2 256.0,73.9 255.0,73.9 255.0,75.2 254.0,75.2 254.0,76.1 253.0,76.1 253.0,77.5 252.0,77.5 252.0,77.6 251.0,77.6 251.0,82.6 250.0,82.6 250.0,77.7 249.0,77.7 249.0,79.6 248.0,79.6 248.0,79.2 247.0,79.2 247.0,79.6 246.0,79.6 246.0,79.5 245.0,79.5 245.0,79.8 244.0,79.8 244.0,79.7 243.0,79.7 243.0,80.3 242.0,80.3 242.0,79.4 241.0,79.4 241.0,84.0 240.0,84.0 240.0,79.6 239.0,79.6 239.0,80.7 238.0,80.7 238.0,84.1 237.0,84.1 237.0,81.5 236.0,81.5 236.0,81.5 235.0,81.5 235.0,84.4 234.0,84.4 234.0,81.1 233.0,81.1 233.0,85.6 232.0,85.6 232.0,83.0 231.0,83.0 231.0,82.7 230.0,82.7 230.0,83.3 229.0,83.3 229.0,84.0 228.0,84.0 228.0,64.0 227.0,64.0" fill="#66ddff"/><polygon points="280.0,64.0 281.0,64.0 281.0,46.9 282.0,46.9 282.0,46.0 283.0,46.0 283.0,47.3 284.0,47.3 284.0,46.1 285.0,46.1 285.0,47.0 286.0,47.0 286.0,44.6 287.0,44.6 287.0,48.8 288.0,48.8 288.0,48.8 289.0,48.8 289.0,50.7 290.0,50.7 290.0,51.0 291.0,51.0 291.0,51.4 292.0,51.4 292.0,53.0 293.0,53.0 293.0,51.3 294.0,51.3 294.0,53.5 295.0,53.5 295.0,53.8 296.0,53.8 296.0,53.8 297.0,53.8 297.0,55.2 298.0,55.2 298.0,54.8 299.0,54.8 299.0,55.8 300.0,55.8 300.0,56.2 301.0,56.2 301.0,56.4 302.0,56.4 302.0,53.6 303.0,53.6 303.0,56.8 304.0,56.8 304.0,53.4 305.0,53.4 305.0,57.1 306.0,57.1 306.0,56.6 307.0,56.6 307.0,57.0 308.0,57.0 308.0,56.2 309.0,56.2 309.0,58.7 310.0,58.7 310.0,59.6 311.0,59.6 311.0,60.7 312.0,60.7 312.0,54.4 313.0,54.4 313.0,47.3 314.0,47.3 314.0,48.2 315.0,48.2 315.0,49.0 316.0,49.0 316.0,49.7 317.0,49.7 317.0,51.6 318.0,51.6 318.0,51.4 319.0,51.4 319.0,51.6 320.0,51.6 320.0,53.6 321.0,53.6 321.0,53.9 322.0,53.9 322.0,53.9 323.0,53.9 323.0,53.5 324.0,53.5 324.0,49.8 325.0,49.8 325.0,54.7 326.0,54.7 326.0,54.2 327.0,54.2 327.0,55.3 328.0,55.3 328.0,55.0 329.0,55.0 329.0,54.7 330.0,54.7 330.0,55.0 331.0,55.0 331.0,55.9 332.0,55.9 332.0,56.5 333.0,56.5 333.0,55.9 334.0,55.9 334.0,55.7 335.0,55.7 335.0,55.7 336.0,55.7 336.0,56.8 337.0,56.8 337.0,55.6 338.0,55.6 338.0,54.3 339.0,54.3 339.0,57.6 340.0,57.6 340.0,56.3 341.0,56.3 341.0,57.0 342.0,57.0 342.0,57.5 343.0,57.5 343.0,56.8 344.0,56.8 344.0,57.3 345.0,57.3 345.0,57.3 346.0,57.3 346.0,57.5 347.0,57.5 347.0,57.5 348.0,57.5 348.0,57.5 349.0,57.5 349.0,58.9 350.0,58.9 350.0,59.2 351.0,59.2 351.0,58.8 352.0,58.8 352.0,58.7 353.0,58.7 353.0,56.8 354.0,56.8 354.0,57.8 355.0,57.8 355.0,57.7 356.0,57.7 356.0,56.2 357.0,56.2 357.0,55.2 358.0,55.2 358.0,56.5 359.0,56.5 359.0,56.8 360.0,56.8 360.0,57.3 361.0,57.3 361.0,55.8 362.0,55.8 362.0,56.6 363.0,56.6 363.0,55.4 364.0,55.4 364.0,56.4 365.0,56.4 365.0,55.6 366.0,55.6 366.0,56.1 367.0,56.1 367.0,53.1 368.0,53.1 368.0,55.0 369.0,55.0 369.0,55.8 370.0,55.8 370.0,54.9 371.0,54.9 371.0,55.0 372.0,55.0 372.0,55.5 373.0,55.5 373.0,56.5 374.0,56.5 374.0,53.5 375.0,53.5 375.0,56.4 376.0,56.4 376.0,56.2 377.0,56.2 377.0,55.7 378.0,55.7 378.0,57.1 379.0,57.1 379.0,56.2 380.0,56.2 380.0,57.0 381.0,57.0 381.0,56.2 382.0,56.2 382.0,58.0 383.0,58.0 383.0,57.8 384.0,57.8 384.0,57.5 385.0,57.5 385.0,58.4 386.0,58.4 386.0,57.3 387.0,57.3 387.0,57.4 388.0,57.4 388.0,57.6 389.0,57.6 389.0,56.6 390.0,56.6 390.0,58.6 391.0,58.6 391.0,56.4 392.0,56.4 392.0,58.5 393.0,58.5 393.0,58.9 394.0,58.9 394.0,56.6 395.0,56.6 395.0,59.2 396.0,59.2 396.0,58.6 397.0,58.6 397.0,59.2 398.0,59.2 398.0,59.0 399.0,59.0 399.0,59.1 400.0,59.1 400.0,59.7 401.0,59.7 401.0,59.4 402.0,59.4 402.0,60.7 403.0,60.7 403.0,60.6 404.0,60.6 404.0,61.4 405.0,61.4 405.0,60.2 406.0,60.2 406.0,59.8 407.0,59.8 407.0,60.9 408.0,60.9 408.0,61.6 409.0,61.6 409.0,61.3 410.0,61.3 410.1,60.7 411.1,60.7 411.2,61.4 412.2,61.4 412.4,59.8 413.4,59.8 413.5,60.6 414.5,60.6 414.6,60.9 415.6,60.9 415.8,62.0 416.8,62.0 416.9,63.0 417.9,63.0 418.0,64.0 418.0,64.0 417.9,65.2 416.9,65.2 416.8,66.5 415.8,66.5 415.6,68.2 414.6,68.2 414.5,69.3 413.5,69.3 413.4,68.6 412.4,68.6 412.2,69.0 411.2,69.0 411.1,69.1 410.1,69.1 410.0,69.0 409.0,69.0 409.0,69.1 408.0,69.1 408.0,68.3 407.0,68.3 407.0,69.4 406.0,69.4 406.0,69.2 405.0,69.2 405.0,69.7 404.0,69.7 404.0,69.2 403.0,69.2 403.0,70.8 402.0,70.8 402.0,69.2 401.0,69.2 401.0,69.4 400.0,69.4 400.0,71.7 399.0,71.7 399.0,70.3 398.0,70.3 398.0,70.9 397.0,70.9 397.0,69.7 396.0,69.7 396.0,71.4 395.0,71.4 395.0,71.1 394.0,71.1 394.0,70.7 393.0,70.7 393.0,71.5 392.0,71.5 392.0,71.7 391.0,71.7 391.0,71.0 390.0,71.0 390.0,73.5 389.0,73.5 389.0,74.0 388.0,74.0 388.0,72.4 387.0,72.4 387.0,72.4 386.0,72.4 386.0,71.2 385.0,71.2 385.0,75.2 384.0,75.2 384.0,72.6 383.0,72.6 383.0,71.7 382.0,71.7 382.0,72.4 381.0,72.4 381.0,74.3 380.0,74.3 380.0,73.4 379.0,73.4 379.0,74.5 378.0,74.5 378.0,72.6 377.0,72.6 377.0,72.6 376.0,72.6 376.0,72.0 375.0,72.0 375.0,72.8 374.0,72.8 374.0,71.5 373.0,71.5 373.0,71.6 372.0,71.6 372.0,71.7 371.0,71.7 371.0,71.9 370.0,71.9 370.0,75.2 369.0,75.2 369.0,71.3 368.0,71.3 368.0,71.7 367.0,71.7 367.0,71.7 366.0,71.7 366.0,71.9 365.0,71.9 365.0,72.0 364.0,72.0 364.0,72.1 363.0,72.1 363.0,72.8 362.0,72.8 362.0,72.4 361.0,72.4 361.0,73.1 360.0,73.1 360.0,73.3 359.0,73.3 359.0,73.4 358.0,73.4 358.0,73.2 357.0,73.2 357.0,73.3 356.0,73.3 356.0,76.6 355.0,76.6 355.0,75.8 354.0,75.8 354.0,74.3 353.0,74.3 353.0,74.0 352.0,74.0 352.0,74.8 351.0,74.8 351.0,75.1 350.0,75.1 350.0,75.0 349.0,75.0 349.0,75.1 348.0,75.1 348.0,75.7 347.0,75.7 347.0,75.1 346.0,75.1 346.0,74.8 345.0,74.8 345.0,75.8 344.0,75.8 344.0,76.1 343.0,76.1 343.0,76.0 342.0,76.0 342.0,75.3 341.0,75.3 341.0,75.1 340.0,75.1 340.0,76.5 339.0,76.5 339.0,75.2 338.0,75.2 338.0,76.5 337.0,76.5 337.0,76.3 336.0,76.3 336.0,76.7 335.0,76.7 335.0,76.1 334.0,76.1 334.0,77.1 333.0,77.1 333.0,77.7 332.0,77.7 332.0,79.7 331.0,79.7 331.0,77.3 330.0,77.3 330.0,77.1 329.0,77.1 329.0,76.1 328.0,76.1 328.0,76.2 327.0,76.2 327.0,77.7 326.0,77.7 326.0,80.0 325.0,80.0 325.0,79.8 324.0,79.8 324.0,77.1 323.0,77.1 323.0,76.7 322.0,76.7 322.0,77.3 321.0,77.3 321.0,78.3 320.0,78.3 320.0,80.7 319.0,80.7 319.0,80.5 318.0,80.5 318.0,78.5 317.0,78.5 317.0,78.3 316.0,78.3 316.0,79.8 315.0,79.8 315.0,79.8 314.0,79.8 314.0,79.3 313.0,79.3 313.0,75.6 312.0,75.6 312.0,71.0 311.0,71.0 311.0,73.1 310.0,73.1 310.0,74.3 309.0,74.3 309.0,74.7 308.0,74.7 308.0,75.1 307.0,75.1 307.0,75.8 306.0,75.8 306.0,77.0 305.0,77.0 305.0,76.1 304.0,76.1 304.0,76.6 303.0,76.6 303.0,75.8 302.0,75.8 302.0,77.2 301.0,77.2 301.0,78.8 300.0,78.8 300.0,77.8 299.0,77.8 299.0,77.3 298.0,77.3 298.0,78.3 297.0,78.3 297.0,80.2 296.0,80.2 296.0,78.5 295.0,78.5 295.0,79.4 294.0,79.4 294.0,78.9 293.0,78.9 293.0,81.3 292.0,81.3 292.0,80.6 291.0,80.6 291.0,81.2 290.0,81.2 290.0,81.8 289.0,81.8 289.0,81.7 288.0,81.7 288.0,87.4 287.0,87.4 287.0,83.6 286.0,83.6 286.0,84.2 285.0,84.2 285.0,84.1 284.0,84.1 284.0,84.3 283.0,84.3 283.0,84.4 282.0,84.4 282.0,85.2 281.0,85.2 281.0,64.0 280.0,64.0" fill="#66ddff"/><polygon points="453.0,64.0 454.0,64.0 454.0,51.2 455.0,51.2 455.0,50.6 456.0,50.6 456.0,52.4 457.0,52.4 457.0,51.7 458.0,51.7 458.0,52.6 459.0,52.6 459.0,53.2 460.0,53.2 460.0,53.4 461.0,53.4 461.0,52.4 462.0,52.4 462.0,53.0 463.0,53.0 463.0,53.9 464.0,53.9 464.0,53.7 465.0,53.7 465.0,53.4 466.0,53.4 466.0,53.6 467.0,53.6 467.0,55.1 468.0,55.1 468.0,51.4 469.0,51.4 469.0,54.1 470.0,54.1 470.0,53.9 471.0,53.9 471.0,53.0 472.0,53.0 472.0,52.3 473.0,52.3 473.0,51.9 474.0,51.9 474.0,50.7 475.0,50.7 475.0,51.4 476.0,51.4 476.0,50.5 477.0,50.5 477.0,51.0 478.0,51.0 478.0,50.4 479.0,50.4 479.0,50.6 480.0,50.6 480.0,51.9 481.0,51.9 481.0,52.8 482.0,52.8 482.0,52.2 483.0,52.2 483.0,53.6 484.0,53.6 484.0,57.4 485.0,57.4 485.0,60.7 486.0,60.7 486.0,51.4 487.0,51.4 487.0,51.5 488.0,51.5 488.0,51.2 489.0,51.2 489.0,51.6 490.0,51.6 490.0,52.4 491.0,52.4 491.0,53.0 492.0,53.0 492.0,53.8 493.0,53.8 493.0,52.0 494.0,52.0 494.0,52.9 495.0,52.9 495.0,54.0 496.0,54.0 496.0,53.9 497.0,53.9 497.0,54.3 498.0,54.3 498.0,54.7 499.0,54.7 499.0,55.0 500.0,55.0 500.0,52.5 501.0,52.5 501.0,54.9 502.0,54.9 502.0,54.6 503.0,54.6 503.0,55.5 504.0,55.5 504.0,54.7 505.0,54.7 505.0,54.5 506.0,54.5 506.0,54.6 507.0,54.6 507.0,55.4 508.0,55.4 508.0,55.5 509.0,55.5 509.0,52.1 510.0,52.1 510.0,55.3 511.0,55.3 511.0,56.1 512.0,56.1 512.0,56.0 513.0,56.0 513.0,56.2 514.0,56.2 514.0,57.2 515.0,57.2 515.0,57.1 516.0,57.1 516.0,57.8 517.0,57.8 517.0,55.7 518.0,55.7 518.0,59.3 519.0,59.3 519.0,57.7 520.0,57.7 520.0,59.4 521.0,59.4 521.0,60.6 522.0,60.6 522.0,61.6 523.0,61.6 523.0,62.5 524.0,62.5 524.0,64.0 524.0,64.0 524.0,66.0 523.0,66.0 523.0,67.3 522.0,67.3 522.0,69.1 521.0,69.1 521.0,69.4 520.0,69.4 520.0,70.1 519.0,70.1 519.0,71.1 518.0,71.1 518.0,72.4 517.0,72.4 517.0,73.7 516.0,73.7 516.0,73.6 515.0,73.6 515.0,74.8 514.0,74.8 514.0,75.6 513.0,75.6 513.0,75.3 512.0,75.3 512.0,75.5 511.0,75.5 511.0,76.9 510.0,76.9 510.0,76.2 509.0,76.2 509.0,76.8 508.0,76.8 508.0,76.6 507.0,76.6 507.0,76.8 506.0,76.8 506.0,77.5 505.0,77.5 505.0,80.0 504.0,80.0 504.0,77.1 503.0,77.1 503.0,78.1 502.0,78.1 502.0,78.4 501.0,78.4 501.0,78.7 500.0,78.7 500.0,79.1 499.0,79.1 499.0,79.7 498.0,79.7 498.0,79.8 497.0,79.8 497.0,80.1 496.0,80.1 496.0,83.2 495.0,83.2 495.0,80.5 494.0,80.5 494.0,81.6 493.0,81.6 493.0,82.5 492.0,82.5 492.0,84.0 491.0,84.0 491.0,87.7 490.0,87.7 490.0,83.4 489.0,83.4 489.0,84.2 488.0,84.2 488.0,84.7 487.0,84.7 487.0,85.5 486.0,85.5 486.0,66.4 485.0,66.4 485.0,70.4 484.0,70.4 484.0,72.6 483.0,72.6 483.0,74.2 482.0,74.2 482.0,74.5 481.0,74.5 481.0,74.5 480.0,74.5 480.0,75.7 479.0,75.7 479.0,79.4 478.0,79.4 478.0,76.0 477.0,76.0 477.0,76.5 476.0,76.5 476.0,76.5 475.0,76.5 475.0,76.7 474.0,76.7 474.0,81.4 473.0,81.4 473.0,78.4 472.0,78.4 472.0,80.9 471.0,80.9 471.0,78.3 470.0,78.3 470.0,78.0 469.0,78.0 469.0,80.0 468.0,80.0 468.0,79.5 467.0,79.5 467.0,79.0 466.0,79.0 466.0,80.3 465.0,80.3 465.0,80.5 464.0,80.5 464.0,83.5 463.0,83.5 463.0,79.9 462.0,79.9 462.0,86.1 461.0,86.1 461.0,84.2 460.0,84.2 460.0,82.0 459.0,82.0 459.0,82.6 458.0,82.6 458.0,82.6 457.0,82.6 457.0,84.1 456.0,84.1 456.0,83.9 455.0,83.9 455.0,85.7 454.0,85.7 454.0,64.0 453.0,64.0" fill="#66ddff"/><polygon points="538.0,64.0 539.0,64.0 539.0,50.5 540.0,50.5 540.0,49.3 541.0,49.3 541.0,48.7 542.0,48.7 542.0,49.8 543.0,49.8 543.0,49.6 544.0,49.6 544.0,50.4 545.0,50.4 545.0,49.7 546.0,49.7 546.0,50.1 547.0,50.1 547.0,49.8 548.0,49.8 548.0,49.7 549.0,49.7 549.0,50.9 550.0,50.9 550.0,50.4 551.0,50.4 551.0,47.7 552.0,47.7 552.0,49.7 553.0,49.7 553.0,50.2 554.0,50.2 554.0,51.1 555.0,51.1 555.0,50.2 556.0,50.2 556.0,50.7 557.0,50.7 557.0,50.7 558.0,50.7 558.0,51.5 559.0,51.5 559.0,51.1 560.0,51.1 560.0,51.0 561.0,51.0 561.0,48.7 562.0,48.7 562.0,51.6 563.0,51.6 563.0,52.4 564.0,52.4 564.0,52.5 565.0,52.5 565.0,52.3 566.0,52.3 566.0,53.5 567.0,53.5 567.0,57.2 568.0,57.2 568.0,59.2 569.0,59.2 569.0,60.9 570.0,60.9 570.0,53.2 571.0,53.2 571.0,44.5 572.0,44.5 572.0,43.7 573.0,43.7 573.0,45.7 574.0,45.7 574.0,44.9 575.0,44.9 575.0,41.7 576.0,41.7 576.0,46.6 577.0,46.6 577.0,47.1 578.0,47.1 578.0,46.4 579.0,46.4 579.0,48.2 580.0,48.2 580.0,47.2 581.0,47.2 581.0,47.6 582.0,47.6 582.0,48.6 583.0,48.6 583.0,45.6 584.0,45.6 584.0,49.4 585.0,49.4 585.0,50.0 586.0,50.0 586.0,49.5 587.0,49.5 587.0,50.6 588.0,50.6 588.0,50.9 589.0,50.9 589.0,51.3 590.0,51.3 590.0,51.6 591.0,51.6 591.0,51.0 592.0,51.0 592.0,50.5 593.0,50.5 593.0,51.4 594.0,51.4 594.0,51.7 595.0,51.7 595.0,52.0 596.0,52.0 596.0,51.2 597.0,51.2 597.0,51.2 598.0,51.2 598.0,51.7 599.0,51.7 599.0,51.5 600.0,51.5 600.0,52.0 601.0,52.0 601.0,53.8 602.0,53.8 602.0,56.4 603.0,56.4 603.0,58.8 604.0,58.8 604.0,64.0 604.0,64.0 604.0,68.4 603.0,68.4 603.0,71.0 602.0,71.0 602.0,73.3 601.0,73.3 601.0,75.9 600.0,75.9 600.0,75.3 599.0,75.3 599.0,74.7 598.0,74.7 598.0,75.2 597.0,75.2 597.0,76.0 596.0,76.0 596.0,75.5 595.0,75.5 595.0,79.6 594.0,79.6 594.0,76.0 593.0,76.0 593.0,77.1 592.0,77.1 592.0,76.9 591.0,76.9 591.0,78.8 590.0,78.8 590.0,77.1 589.0,77.1 589.0,77.8 588.0,77.8 588.0,77.6 587.0,77.6 587.0,77.5 586.0,77.5 586.0,79.2 585.0,79.2 585.0,79.0 584.0,79.0 584.0,79.4 583.0,79.4 583.0,78.7 582.0,78.7 582.0,83.7 581.0,83.7 581.0,79.2 580.0,79.2 580.0,80.2 579.0,80.2 579.0,81.3 578.0,81.3 578.0,82.0 577.0,82.0 577.0,82.1 576.0,82.1 576.0,83.6 575.0,83.6 575.0,82.8 574.0,82.8 574.0,87.1 573.0,87.1 573.0,84.3 572.0,84.3 572.0,85.1 571.0,85.1 571.0,75.9 570.0,75.9 570.0,66.7 569.0,66.7 569.0,69.5 568.0,69.5 568.0,72.0 567.0,72.0 567.0,77.9 566.0,77.9 566.0,80.0 565.0,80.0 565.0,76.8 564.0,76.8 564.0,76.9 563.0,76.9 563.0,77.0 562.0,77.0 562.0,77.4 561.0,77.4 561.0,76.7 560.0,76.7 560.0,77.9 559.0,77.9 559.0,77.0 558.0,77.0 558.0,77.4 557.0,77.4 557.0,77.8 556.0,77.8 556.0,78.1 555.0,78.1 555.0,76.8 554.0,76.8 554.0,78.5 553.0,78.5 553.0,78.0 552.0,78.0 552.0,78.6 551.0,78.6 551.0,78.2 550.0,78.2 550.0,77.3 549.0,77.3 549.0,78.1 548.0,78.1 548.0,80.0 547.0,80.0 547.0,79.0 546.0,79.0 546.0,78.7 545.0,78.7 545.0,79.2 544.0,79.2 544.0,79.3 543.0,79.3 543.0,78.2 542.0,78.2 542.0,78.2 541.0,78.2 541.0,78.1 540.0,78.1 540.0,78.4 539.0,78.4 539.0,64.0 538.0,64.0" fill="#66ddff"/><polygon points="625.0,64.0 626.0,64.0 626.0,45.4 627.0,45.4 627.0,45.5 628.0,45.5 628.0,46.4 629.0,46.4 629.0,46.5 630.0,46.5 630.0,46.8 631.0,46.8 631.0,46.4 632.0,46.4 632.0,45.7 633.0,45.7 633.0,46.9 634.0,46.9 634.0,48.0 635.0,48.0 635.0,47.9 636.0,47.9 636.0,47.8 637.0,47.8 637.0,49.2 638.0,49.2 638.0,49.1 639.0,49.1 639.0,49.4 640.0,49.4 640.0,48.2 641.0,48.2 641.0,48.0 642.0,48.0 642.0,49.0 643.0,49.0 643.0,49.6 644.0,49.6 644.0,46.0 645.0,46.0 645.0,50.8 646.0,50.8 646.0,50.0 647.0,50.0 647.0,51.4 648.0,51.4 648.0,51.5 649.0,51.5 649.0,51.7 650.0,51.7 650.0,52.9 651.0,52.9 651.0,52.9 652.0,52.9 652.0,52.6 653.0,52.6 653.0,53.0 654.0,53.0 654.0,53.0 655.0,53.0 655.0,53.2 656.0,53.2 656.0,52.5 657.0,52.5 657.0,50.7 658.0,50.7 658.0,48.4 659.0,48.4 659.0,48.7 660.0,48.7 660.0,49.5 661.0,49.5 661.0,50.1 662.0,50.1 662.0,50.0 663.0,50.0 663.0,50.1 664.0,50.1 664.0,51.1 665.0,51.1 665.0,51.5 666.0,51.5 666.0,49.4 667.0,49.4 667.0,53.3 668.0,53.3 668.0,53.5 669.0,53.5 669.0,53.5 670.0,53.5 670.0,53.1 671.0,53.1 671.0,53.5 672.0,53.5 672.0,54.1 673.0,54.1 673.0,51.6 674.0,51.6 674.0,54.4 675.0,54.4 675.0,54.9 676.0,54.9 676.0,55.9 677.0,55.9 677.0,54.9 678.0,54.9 678.0,55.5 679.0,55.5 679.0,56.4 680.0,56.4 680.0,55.6 681.0,55.6 681.0,56.6 682.0,56.6 682.0,56.8 683.0,56.8 683.0,56.4 684.0,56.4 684.0,52.8 685.0,52.8 685.0,57.1 686.0,57.1 686.0,57.1 687.0,57.1 687.0,56.9 688.0,56.9 688.0,57.0 689.0,57.0 689.0,57.6 690.0,57.6 690.0,56.4 691.0,56.4 691.0,56.7 692.0,56.7 692.0,56.5 693.0,56.5 693.0,56.7 694.0,56.7 694.0,57.4 695.0,57.4 695.0,57.2 696.0,57.2 696.0,57.0 697.0,57.0 697.0,56.0 698.0,56.0 698.0,57.0 699.0,57.0 699.0,58.2 700.0,58.2 700.0,56.9 701.0,56.9 701.0,57.5 702.0,57.5 702.0,57.2 703.0,57.2 703.0,56.7 704.0,56.7 704.0,56.1 705.0,56.1 705.0,55.7 706.0,55.7 706.0,51.9 707.0,51.9 707.0,55.1 708.0,55.1 708.0,55.2 709.0,55.2 709.0,54.3 710.0,54.3 710.0,53.9 711.0,53.9 711.0,54.2 712.0,54.2 712.0,50.5 713.0,50.5 713.0,52.3 714.0,52.3 714.0,53.7 715.0,53.7 715.0,51.7 716.0,51.7 716.0,54.1 717.0,54.1 717.0,53.6 718.0,53.6 718.0,53.5 719.0,53.5 719.0,52.6 720.0,52.6 720.0,54.1 721.0,54.1 721.0,54.1 722.0,54.1 722.0,54.0 723.0,54.0 723.0,55.1 724.0,55.1 724.0,54.8 725.0,54.8 725.0,54.5 726.0,54.5 726.0,54.8 727.0,54.8 727.0,55.0 728.0,55.0 728.0,54.3 729.0,54.3 729.0,55.4 730.0,55.4 730.0,55.4 731.0,55.4 731.0,55.5 732.0,55.5 732.0,56.3 733.0,56.3 733.0,55.5 734.0,55.5 734.0,56.3 735.0,56.3 735.0,56.3 736.0,56.3 736.0,52.7 737.0,52.7 737.0,55.9 738.0,55.9 738.0,56.4 739.0,56.4 739.0,56.0 740.0,56.0 740.0,56.2 741.0,56.2 741.0,56.8 742.0,56.8 742.0,56.3 743.0,56.3 743.0,56.6 744.0,56.6 744.0,56.6 745.0,56.6 745.0,55.8 746.0,55.8 746.0,55.8 747.0,55.8 747.0,57.9 748.0,57.9 748.0,58.1 749.0,58.1 749.0,58.6 750.0,58.6 750.0,59.6 751.0,59.6 751.0,60.0 752.0,60.0 752.0,60.6 753.0,60.6 753.0,60.7 754.0,60.7 754.0,61.1 755.0,61.1 755.0,60.9 756.0,60.9 756.0,61.9 757.0,61.9 757.0,60.9 758.0,60.9 758.0,60.4 759.0,60.4 759.0,60.9 760.0,60.9 760.0,60.7 761.0,60.7 761.0,61.9 762.0,61.9 762.0,59.7 763.0,59.7 763.0,60.9 764.0,60.9 764.0,60.7 765.0,60.7 765.0,60.6 766.0,60.6 766.0,61.2 767.0,61.2 767.0,60.8 768.0,60.8 768.0,60.5 769.0,60.5 769.0,61.0 770.0,61.0 770.0,61.0 771.0,61.0 771.0,62.1 772.0,62.1 772.0,62.5 773.0,62.5 773.0,62.9 774.0,62.9 774.0,63.2 775.0,63.2 775.0,63.6 776.0,63.6 776.0,64.0 776.0,64.0 776.0,64.6 775.0,64.6 775.0,65.2 774.0,65.2 774.0,65.9 773.0,65.9 773.0,66.5 772.0,66.5 772.0,67.1 771.0,67.1 771.0,68.3 770.0,68.3 770.0,68.3 769.0,68.3 769.0,69.5 768.0,69.5 768.0,68.2 767.0,68.2 767.0,68.6 766.0,68.6 766.0,68.2 765.0,68.2 765.0,69.3 764.0,69.3 764.0,68.5 763.0,68.5 763.0,68.2 762.0,68.2 762.0,68.9 761.0,68.9 761.0,68.8 760.0,68.8 760.0,68.0 759.0,68.0 759.0,68.5 758.0,68.5 758.0,68.0 757.0,68.0 757.0,68.0 756.0,68.0 756.0,68.1 755.0,68.1 755.0,68.2 754.0,68.2 754.0,69.0 753.0,69.0 753.0,69.6 752.0,69.6 752.0,69.9 751.0,69.9 751.0,70.1 750.0,70.1 750.0,70.7 749.0,70.7 749.0,72.5 748.0,72.5 748.0,70.3 747.0,70.3 747.0,70.5 746.0,70.5 746.0,71.7 745.0,71.7 745.0,74.7 744.0,74.7 744.0,72.8 743.0,72.8 743.0,72.2 742.0,72.2 742.0,73.2 741.0,73.2 741.0,73.3 740.0,73.3 740.0,72.1 739.0,72.1 739.0,73.7 738.0,73.7 738.0,76.4 737.0,76.4 737.0,73.0 736.0,73.0 736.0,73.2 735.0,73.2 735.0,73.9 734.0,73.9 734.0,73.2 733.0,73.2 733.0,74.8 732.0,74.8 732.0,73.8 731.0,73.8 731.0,74.6 730.0,74.6 730.0,73.7 729.0,73.7 729.0,74.5 728.0,74.5 728.0,74.6 727.0,74.6 727.0,74.5 726.0,74.5 726.0,74.6 725.0,74.6 725.0,75.8 724.0,75.8 724.0,80.2 723.0,80.2 723.0,77.2 722.0,77.2 722.0,75.7 721.0,75.7 721.0,76.1 720.0,76.1 720.0,76.3 719.0,76.3 719.0,76.7 718.0,76.7 718.0,76.9 717.0,76.9 717.0,77.6 716.0,77.6 716.0,76.6 715.0,76.6 715.0,78.4 714.0,78.4 714.0,78.7 713.0,78.7 713.0,77.5 712.0,77.5 712.0,78.1 711.0,78.1 711.0,77.4 710.0,77.4 710.0,77.0 709.0,77.0 709.0,77.4 708.0,77.4 708.0,77.4 707.0,77.4 707.0,77.0 706.0,77.0 706.0,76.6 705.0,76.6 705.0,76.3 704.0,76.3 704.0,75.9 703.0,75.9 703.0,74.9 702.0,74.9 702.0,74.6 701.0,74.6 701.0,74.9 700.0,74.9 700.0,74.9 699.0,74.9 699.0,75.1 698.0,75.1 698.0,75.1 697.0,75.1 697.0,74.6 696.0,74.6 696.0,75.1 695.0,75.1 695.0,77.9 694.0,77.9 694.0,74.3 693.0,74.3 693.0,74.7 692.0,74.7 692.0,75.4 691.0,75.4 691.0,75.2 690.0,75.2 690.0,74.9 689.0,74.9 689.0,75.0 688.0,75.0 688.0,75.3 687.0,75.3 687.0,75.1 686.0,75.1 686.0,76.2 685.0,76.2 685.0,75.5 684.0,75.5 684.0,78.2 683.0,78.2 683.0,77.3 682.0,77.3 682.0,79.7 681.0,79.7 681.0,77.0 680.0,77.0 680.0,77.7 679.0,77.7 679.0,78.0 678.0,78.0 678.0,78.2 677.0,78.2 677.0,77.3 676.0,77.3 676.0,80.4 675.0,80.4 675.0,77.7 674.0,77.7 674.0,78.8 673.0,78.8 673.0,77.9 672.0,77.9 672.0,79.4 671.0,79.4 671.0,80.3 670.0,80.3 670.0,79.3 669.0,79.3 669.0,78.7 668.0,78.7 668.0,79.3 667.0,79.3 667.0,79.8 666.0,79.8 666.0,82.4 665.0,82.4 665.0,79.9 664.0,79.9 664.0,81.5 663.0,81.5 663.0,81.8 662.0,81.8 662.0,85.6 661.0,85.6 661.0,83.0 660.0,83.0 660.0,85.6 659.0,85.6 659.0,83.8 658.0,83.8 658.0,80.3 657.0,80.3 657.0,76.8 656.0,76.8 656.0,74.1 655.0,74.1 655.0,74.3 654.0,74.3 654.0,75.0 653.0,75.0 653.0,74.1 652.0,74.1 652.0,74.5 651.0,74.5 651.0,79.2 650.0,79.2 650.0,75.1 649.0,75.1 649.0,75.4 648.0,75.4 648.0,75.8 647.0,75.8 647.0,80.4 646.0,80.4 646.0,76.9 645.0,76.9 645.0,77.2 644.0,77.2 644.0,78.3 643.0,78.3 643.0,82.9 642.0,82.9 642.0,81.6 641.0,81.6 641.0,78.9 640.0,78.9 640.0,79.5 639.0,79.5 639.0,80.1 638.0,80.1 638.0,84.0 637.0,84.0 637.0,79.0 636.0,79.0 636.0,79.5 635.0,79.5 635.0,81.1 634.0,81.1 634.0,81.4 633.0,81.4 633.0,81.7 632.0,81.7 632.0,81.4 631.0,81.4 631.0,81.7 630.0,81.7 630.0,82.7 629.0,82.7 629.0,82.4 628.0,82.4 628.0,81.9 627.0,81.9 627.0,83.2 626.0,83.2 626.0,64.0 625.0,64.0" fill="#66ddff"/><polygon points="823.0,64.0 824.0,64.0 824.0,49.3 825.0,49.3 825.0,50.2 826.0,50.2 826.0,52.0 827.0,52.0 827.0,52.7 828.0,52.7 828.0,53.0 829.0,53.0 829.0,54.4 830.0,54.4 830.0,54.6 831.0,54.6 831.0,54.7 832.0,54.7 832.0,56.3 833.0,56.3 833.0,56.6 834.0,56.6 834.0,53.8 835.0,53.8 835.0,56.3 836.0,56.3 836.0,57.3 837.0,57.3 837.0,56.0 838.0,56.0 838.0,54.1 839.0,54.1 839.0,56.2 840.0,56.2 840.0,55.0 841.0,55.0 841.0,56.0 842.0,56.0 842.0,55.7 843.0,55.7 843.0,56.2 844.0,56.2 844.0,55.8 845.0,55.8 845.0,52.0 846.0,52.0 846.0,55.7 847.0,55.7 847.0,52.4 848.0,52.4 848.0,54.9 849.0,54.9 849.0,55.8 850.0,55.8 850.0,55.4 851.0,55.4 851.0,54.7 852.0,54.7 852.0,53.7 853.0,53.7 853.0,55.6 854.0,55.6 854.0,54.1 855.0,54.1 855.0,53.0 856.0,53.0 856.0,54.6 857.0,54.6 857.0,54.5 858.0,54.5 858.0,55.2 859.0,55.2 859.0,55.2 860.0,55.2 860.0,54.9 861.0,54.9 861.0,55.5 862.0,55.5 862.0,55.4 863.0,55.4 863.0,56.2 864.0,56.2 864.0,54.8 865.0,54.8 865.0,55.6 866.0,55.6 866.0,55.3 867.0,55.3 867.0,53.5 868.0,53.5 868.0,55.8 869.0,55.8 869.0,55.5 870.0,55.5 870.0,55.8 871.0,55.8 871.0,55.1 872.0,55.1 872.0,55.9 873.0,55.9 873.0,56.0 874.0,56.0 874.0,56.4 875.0,56.4 875.0,55.3 876.0,55.3 876.0,55.8 877.0,55.8 877.0,56.4 878.0,56.4 878.0,55.8 879.0,55.8 879.0,45.8 880.0,45.8 880.0,46.2 881.0,46.2 881.0,45.1 882.0,45.1 882.0,44.5 883.0,44.5 883.0,44.0 884.0,44.0 884.0,46.3 885.0,46.3 885.0,45.4 886.0,45.4 886.0,45.6 887.0,45.6 887.0,45.4 888.0,45.4 888.0,45.8 889.0,45.8 889.0,46.4 890.0,46.4 890.0,45.6 891.0,45.6 891.0,45.4 892.0,45.4 892.0,42.7 893.0,42.7 893.0,45.6 894.0,45.6 894.0,45.0 895.0,45.0 895.0,46.5 896.0,46.5 896.0,46.2 897.0,46.2 897.0,45.8 898.0,45.8 898.0,46.2 899.0,46.2 899.0,46.7 900.0,46.7 900.0,47.1 901.0,47.1 901.0,46.9 902.0,46.9 902.0,47.4 903.0,47.4 903.0,47.3 904.0,47.3 904.0,46.6 905.0,46.6 905.0,46.7 906.0,46.7 906.0,46.6 907.0,46.6 907.0,46.8 908.0,46.8 908.0,44.0 909.0,44.0 909.0,45.1 910.0,45.1 910.0,44.0 911.0,44.0 911.0,45.0 912.0,45.0 912.0,45.1 913.0,45.1 913.0,43.8 914.0,43.8 914.0,45.4 915.0,45.4 915.0,45.9 916.0,45.9 916.0,43.0 917.0,43.0 917.0,45.5 918.0,45.5 918.0,46.6 919.0,46.6 919.0,46.7 920.0,46.7 920.0,46.3 921.0,46.3 921.0,46.5 922.0,46.5 922.0,47.0 923.0,47.0 923.0,48.1 924.0,48.1 924.0,46.7 925.0,46.7 925.0,47.2 926.0,47.2 926.0,48.2 927.0,48.2 927.0,48.1 928.0,48.1 928.0,49.0 929.0,49.0 929.0,49.6 930.0,49.6 930.0,47.9 931.0,47.9 931.0,49.8 932.0,49.8 932.0,49.5 933.0,49.5 933.0,50.0 934.0,50.0 934.0,49.6 935.0,49.6 935.0,49.9 936.0,49.9 936.0,51.4 937.0,51.4 937.0,51.4 938.0,51.4 938.0,48.0 939.0,48.0 939.0,52.0 940.0,52.0 940.0,52.3 941.0,52.3 941.0,51.5 942.0,51.5 942.0,51.7 943.0,51.7 943.0,53.2 944.0,53.2 944.0,53.3 945.0,53.3 945.0,52.6 946.0,52.6 946.0,52.7 947.0,52.7 947.0,53.6 948.0,53.6 948.0,53.5 949.0,53.5 949.0,54.4 950.0,54.4 950.0,50.8 951.0,50.8 951.0,54.8 952.0,54.8 952.0,55.1 953.0,55.1 953.0,53.8 954.0,53.8 954.0,50.7 955.0,50.7 955.0,54.2 956.0,54.2 956.0,49.5 957.0,49.5 957.0,51.6 958.0,51.6 958.0,51.2 959.0,51.2 959.0,50.1 960.0,50.1 960.0,50.1 961.0,50.1 961.0,48.6 962.0,48.6 962.0,48.7 963.0,48.7 963.0,48.3 964.0,48.3 964.0,48.0 965.0,48.0 965.0,43.5 966.0,43.5 966.0,45.4 967.0,45.4 967.0,44.6 968.0,44.6 968.0,45.1 969.0,45.1 969.0,43.9 970.0,43.9 970.0,42.2 971.0,42.2 971.0,43.7 972.0,43.7 972.0,44.5 973.0,44.5 973.0,44.7 974.0,44.7 974.0,45.4 975.0,45.4 975.0,45.4 976.0,45.4 976.0,46.3 977.0,46.3 977.0,46.9 978.0,46.9 978.0,47.0 979.0,47.0 979.0,48.2 980.0,48.2 980.0,47.8 981.0,47.8 981.0,48.4 982.0,48.4 982.0,50.1 983.0,50.1 983.0,50.9 984.0,50.9 984.0,48.5 985.0,48.5 985.0,51.3 986.0,51.3 986.0,51.6 987.0,51.6 987.0,51.6 988.0,51.6 988.0,52.6 989.0,52.6 989.0,54.0 990.0,54.0 990.0,52.6 991.0,52.6 991.0,53.8 992.0,53.8 992.0,53.5 993.0,53.5 993.0,53.4 994.0,53.4 994.0,52.2 995.0,52.2 995.0,52.0 996.0,52.0 996.0,52.3 997.0,52.3 997.0,51.6 998.0,51.6 998.0,52.0 999.0,52.0 999.0,51.6 1000.0,51.6 1000.0,50.0 1001.0,50.0 1001.0,50.9 1002.0,50.9 1002.0,50.1 1003.0,50.1 1003.0,50.3 1004.0,50.3 1004.0,50.5 1005.0,50.5 1005.0,52.3 1006.0,52.3 1006.0,51.7 1007.0,51.7 1007.0,51.6 1008.0,51.6 1008.0,52.3 1009.0,52.3 1009.0,53.0 1010.0,53.0 1010.0,52.2 1011.0,52.2 1011.0,52.8 1012.0,52.8 1012.0,53.6 1013.0,53.6 1013.0,52.7 1014.0,52.7 1014.0,53.7 1015.0,53.7 1015.0,53.5 1016.0,53.5 1016.0,54.0 1017.0,54.0 1017.0,53.6 1018.0,53.6 1018.0,53.9 1019.0,53.9 1019.0,54.9 1020.0,54.9 1020.0,55.3 1021.0,55.3 1021.0,54.7 1022.0,54.7 1022.0,56.0 1023.0,56.0 1023.0,55.4 1024.0,55.4 1024.0,56.3 1025.0,56.3 1025.0,55.8 1026.0,55.8 1026.0,55.9 1027.0,55.9 1027.0,56.2 1028.0,56.2 1028.0,56.2 1029.0,56.2 1029.0,57.3 1030.0,57.3 1030.0,55.1 1031.0,55.1 1031.0,58.5 1032.0,58.5 1032.0,57.7 1033.0,57.7 1033.0,57.5 1034.0,57.5 1034.0,57.8 1035.0,57.8 1035.0,59.2 1036.0,59.2 1036.0,59.6 1037.0,59.6 1037.0,58.4 1038.0,58.4 1038.0,59.7 1039.0,59.7 1039.0,57.8 1040.0,57.8 1040.0,49.1 1041.0,49.1 1041.0,49.9 1042.0,49.9 1042.0,46.4 1043.0,46.4 1043.0,49.9 1044.0,49.9 1044.0,49.5 1045.0,49.5 1045.0,45.6 1046.0,45.6 1046.0,47.6 1047.0,47.6 1047.0,46.8 1048.0,46.8 1048.0,45.9 1049.0,45.9 1049.0,46.3 1050.0,46.3 1050.0,43.5 1051.0,43.5 1051.0,42.4 1052.0,42.4 1052.0,44.7 1053.0,44.7 1053.0,41.7 1054.0,41.7 1054.0,44.5 1055.0,44.5 1055.0,44.6 1056.0,44.6 1056.0,43.8 1057.0,43.8 1057.0,44.2 1058.0,44.2 1058.0,43.4 1059.0,43.4 1059.0,44.3 1060.0,44.3 1060.0,44.5 1061.0,44.5 1061.0,41.5 1062.0,41.5 1062.0,43.3 1063.0,43.3 1063.0,43.2 1064.0,43.2 1064.0,44.1 1065.0,44.1 1065.0,43.6 1066.0,43.6 1066.0,43.4 1067.0,43.4 1067.0,43.1 1068.0,43.1 1068.0,44.2 1069.0,44.2 1069.0,43.2 1070.0,43.2 1070.0,44.0 1071.0,44.0 1071.0,43.9 1072.0,43.9 1072.0,42.9 1073.0,42.9 1073.0,43.7 1074.0,43.7 1074.0,42.7 1075.0,42.7 1075.0,43.7 1076.0,43.7 1076.0,44.3 1077.0,44.3 1077.0,44.4 1078.0,44.4 1078.0,40.4 1079.0,40.4 1079.0,45.3 1080.0,45.3 1080.0,45.1 1081.0,45.1 1081.0,45.9 1082.0,45.9 1082.0,44.2 1083.0,44.2 1083.0,45.6 1084.0,45.6 1084.0,45.3 1085.0,45.3 1085.0,46.1 1086.0,46.1 1086.0,45.8 1087.0,45.8 1087.0,46.6 1088.0,46.6 1088.0,47.1 1089.0,47.1 1089.0,43.8 1090.0,43.8 1090.0,47.7 1091.0,47.7 1091.0,47.0 1092.0,47.0 1092.0,48.8 1093.0,48.8 1093.0,47.7 1094.0,47.7 1094.0,48.4 1095.0,48.4 1095.0,48.9 1096.0,48.9 1096.0,49.6 1097.0,49.6 1097.0,47.7 1098.0,47.7 1098.0,48.5 1099.0,48.5 1099.0,48.6 1100.0,48.6 1100.0,50.6 1101.0,50.6 1101.0,51.8 1102.0,51.8 1102.0,50.8 1103.0,50.8 1103.0,52.6 1104.0,52.6 1104.0,52.1 1105.0,52.1 1105.0,52.2 1106.0,52.2 1106.0,53.0 1107.0,53.0 1107.0,53.0 1108.0,53.0 1108.0,53.8 1109.0,53.8 1109.0,54.0 1110.0,54.0 1110.0,53.9 1111.0,53.9 1111.0,54.9 1112.0,54.9 1112.0,55.0 1112.0,75.0 1112.0,76.4 1111.0,76.4 1111.0,74.5 1110.0,74.5 1110.0,75.1 1109.0,75.1 1109.0,79.1 1108.0,79.1 1108.0,76.3 1107.0,76.3 1107.0,76.0 1106.0,76.0 1106.0,75.3 1105.0,75.3 1105.0,76.5 1104.0,76.5 1104.0,75.7 1103.0,75.7 1103.0,75.8 1102.0,75.8 1102.0,75.8 1101.0,75.8 1101.0,78.7 1100.0,78.7 1100.0,78.4 1099.0,78.4 1099.0,76.4 1098.0,76.4 1098.0,76.4 1097.0,76.4 1097.0,76.7 1096.0,76.7 1096.0,77.8 1095.0,77.8 1095.0,77.7 1094.0,77.7 1094.0,77.5 1093.0,77.5 1093.0,77.4 1092.0,77.4 1092.0,83.5 1091.0,83.5 1091.0,78.5 1090.0,78.5 1090.0,79.7 1089.0,79.7 1089.0,79.6 1088.0,79.6 1088.0,79.9 1087.0,79.9 1087.0,80.1 1086.0,80.1 1086.0,80.9 1085.0,80.9 1085.0,80.7 1084.0,80.7 1084.0,81.4 1083.0,81.4 1083.0,81.3 1082.0,81.3 1082.0,85.7 1081.0,85.7 1081.0,82.5 1080.0,82.5 1080.0,82.0 1079.0,82.0 1079.0,84.2 1078.0,84.2 1078.0,82.8 1077.0,82.8 1077.0,84.7 1076.0,84.7 1076.0,85.2 1075.0,85.2 1075.0,82.7 1074.0,82.7 1074.0,86.2 1073.0,86.2 1073.0,83.3 1072.0,83.3 1072.0,83.6 1071.0,83.6 1071.0,82.5 1070.0,82.5 1070.0,82.5 1069.0,82.5 1069.0,82.0 1068.0,82.0 1068.0,83.0 1067.0,83.0 1067.0,82.8 1066.0,82.8 1066.0,82.4 1065.0,82.4 1065.0,82.3 1064.0,82.3 1064.0,82.1 1063.0,82.1 1063.0,82.2 1062.0,82.2 1062.0,81.7 1061.0,81.7 1061.0,84.6 1060.0,84.6 1060.0,80.9 1059.0,80.9 1059.0,80.5 1058.0,80.5 1058.0,81.1 1057.0,81.1 1057.0,79.8 1056.0,79.8 1056.0,79.5 1055.0,79.5 1055.0,79.9 1054.0,79.9 1054.0,80.8 1053.0,80.8 1053.0,81.7 1052.0,81.7 1052.0,80.6 1051.0,80.6 1051.0,79.6 1050.0,79.6 1050.0,80.3 1049.0,80.3 1049.0,80.7 1048.0,80.7 1048.0,80.6 1047.0,80.6 1047.0,80.2 1046.0,80.2 1046.0,79.9 1045.0,79.9 1045.0,79.4 1044.0,79.4 1044.0,81.1 1043.0,81.1 1043.0,79.5 1042.0,79.5 1042.0,80.1 1041.0,80.1 1041.0,83.2 1040.0,83.2 1040.0,70.5 1039.0,70.5 1039.0,70.1 1038.0,70.1 1038.0,70.6 1037.0,70.6 1037.0,70.9 1036.0,70.9 1036.0,72.7 1035.0,72.7 1035.0,71.0 1034.0,71.0 1034.0,71.9 1033.0,71.9 1033.0,72.6 1032.0,72.6 1032.0,73.1 1031.0,73.1 1031.0,76.1 1030.0,76.1 1030.0,72.3 1029.0,72.3 1029.0,73.0 1028.0,73.0 1028.0,73.9 1027.0,73.9 1027.0,74.3 1026.0,74.3 1026.0,74.1 1025.0,74.1 1025.0,73.5 1024.0,73.5 1024.0,75.3 1023.0,75.3 1023.0,75.4 1022.0,75.4 1022.0,76.0 1021.0,76.0 1021.0,74.9 1020.0,74.9 1020.0,75.9 1019.0,75.9 1019.0,75.9 1018.0,75.9 1018.0,80.0 1017.0,80.0 1017.0,76.9 1016.0,76.9 1016.0,76.8 1015.0,76.8 1015.0,76.4 1014.0,76.4 1014.0,76.7 1013.0,76.7 1013.0,76.7 1012.0,76.7 1012.0,77.5 1011.0,77.5 1011.0,77.0 1010.0,77.0 1010.0,78.5 1009.0,78.5 1009.0,79.8 1008.0,79.8 1008.0,78.2 1007.0,78.2 1007.0,77.9 1006.0,77.9 1006.0,81.2 1005.0,81.2 1005.0,79.5 1004.0,79.5 1004.0,79.8 1003.0,79.8 1003.0,79.1 1002.0,79.1 1002.0,83.5 1001.0,83.5 1001.0,80.4 1000.0,80.4 1000.0,80.5 999.0,80.5 999.0,80.2 998.0,80.2 998.0,81.0 997.0,81.0 997.0,79.8 996.0,79.8 996.0,80.7 995.0,80.7 995.0,84.8 994.0,84.8 994.0,80.4 993.0,80.4 993.0,80.8 992.0,80.8 992.0,77.2 991.0,77.2 991.0,73.8 990.0,73.8 990.0,73.8 989.0,73.8 989.0,77.2 988.0,77.2 988.0,74.4 987.0,74.4 987.0,74.4 986.0,74.4 986.0,75.1 985.0,75.1 985.0,76.2 984.0,76.2 984.0,76.4 983.0,76.4 983.0,78.4 982.0,78.4 982.0,77.9 981.0,77.9 981.0,76.8 980.0,76.8 980.0,77.8 979.0,77.8 979.0,77.1 978.0,77.1 978.0,77.9 977.0,77.9 977.0,82.8 976.0,82.8 976.0,79.2 975.0,79.2 975.0,78.9 974.0,78.9 974.0,79.3 973.0,79.3 973.0,79.2 972.0,79.2 972.0,80.5 971.0,80.5 971.0,80.4 970.0,80.4 970.0,79.7 969.0,79.7 969.0,78.5 968.0,78.5 968.0,78.3 967.0,78.3 967.0,78.7 966.0,78.7 966.0,78.9 965.0,78.9 965.0,77.6 964.0,77.6 964.0,77.2 963.0,77.2 963.0,77.3 962.0,77.3 962.0,77.0 961.0,77.0 961.0,76.1 960.0,76.1 960.0,75.8 959.0,75.8 959.0,75.1 958.0,75.1 958.0,74.9 957.0,74.9 957.0,75.1 956.0,75.1 956.0,75.8 955.0,75.8 955.0,73.4 954.0,73.4 954.0,74.0 953.0,74.0 953.0,75.4 952.0,75.4 952.0,73.3 951.0,73.3 951.0,75.5 950.0,75.5 950.0,74.0 949.0,74.0 949.0,78.8 948.0,78.8 948.0,75.2 947.0,75.2 947.0,75.0 946.0,75.0 946.0,74.6 945.0,74.6 945.0,74.6 944.0,74.6 944.0,79.0 943.0,79.0 943.0,75.7 942.0,75.7 942.0,75.1 941.0,75.1 941.0,76.3 940.0,76.3 940.0,75.0 939.0,75.0 939.0,76.3 938.0,76.3 938.0,76.0 937.0,76.0 937.0,76.2 936.0,76.2 936.0,75.6 935.0,75.6 935.0,76.0 934.0,76.0 934.0,76.1 933.0,76.1 933.0,78.6 932.0,78.6 932.0,76.7 931.0,76.7 931.0,76.5 930.0,76.5 930.0,77.1 929.0,77.1 929.0,77.8 928.0,77.8 928.0,77.9 927.0,77.9 927.0,77.7 926.0,77.7 926.0,78.3 925.0,78.3 925.0,77.3 924.0,77.3 924.0,77.4 923.0,77.4 923.0,77.5 922.0,77.5 922.0,78.4 921.0,78.4 921.0,81.0 920.0,81.0 920.0,78.9 919.0,78.9 919.0,80.7 918.0,80.7 918.0,78.4 917.0,78.4 917.0,79.3 916.0,79.3 916.0,79.5 915.0,79.5 915.0,82.0 914.0,82.0 914.0,79.2 913.0,79.2 913.0,79.0 912.0,79.0 912.0,79.6 911.0,79.6 911.0,80.1 910.0,80.1 910.0,79.6 909.0,79.6 909.0,78.5 908.0,78.5 908.0,78.4 907.0,78.4 907.0,77.6 906.0,77.6 906.0,78.8 905.0,78.8 905.0,79.8 904.0,79.8 904.0,78.5 903.0,78.5 903.0,78.8 902.0,78.8 902.0,78.0 901.0,78.0 901.0,78.8 900.0,78.8 900.0,81.8 899.0,81.8 899.0,78.3 898.0,78.3 898.0,77.8 897.0,77.8 897.0,77.6 896.0,77.6 896.0,81.1 895.0,81.1 895.0,77.7 894.0,77.7 894.0,83.1 893.0,83.1 893.0,78.5 892.0,78.5 892.0,78.0 891.0,78.0 891.0,78.6 890.0,78.6 890.0,80.8 889.0,80.8 889.0,78.1 888.0,78.1 888.0,78.8 887.0,78.8 887.0,78.1 886.0,78.1 886.0,78.3 885.0,78.3 885.0,78.2 884.0,78.2 884.0,82.0 883.0,82.0 883.0,79.4 882.0,79.4 882.0,79.3 881.0,79.3 881.0,79.1 880.0,79.1 880.0,78.9 879.0,78.9 879.0,77.6 878.0,77.6 878.0,77.4 877.0,77.4 877.0,76.2 876.0,76.2 876.0,81.1 875.0,81.1 875.0,76.5 874.0,76.5 874.0,77.6 873.0,77.6 873.0,78.0 872.0,78.0 872.0,76.0 871.0,76.0 871.0,75.2 870.0,75.2 870.0,75.1 869.0,75.1 869.0,75.4 868.0,75.4 868.0,75.3 867.0,75.3 867.0,75.9 866.0,75.9 866.0,75.9 865.0,75.9 865.0,75.3 864.0,75.3 864.0,75.6 863.0,75.6 863.0,75.5 862.0,75.5 862.0,75.7 861.0,75.7 861.0,75.1 860.0,75.1 860.0,74.0 859.0,74.0 859.0,73.8 858.0,73.8 858.0,74.5 857.0,74.5 857.0,76.1 856.0,76.1 856.0,74.0 855.0,74.0 855.0,73.6 854.0,73.6 854.0,73.8 853.0,73.8 853.0,72.9 852.0,72.9 852.0,72.9 851.0,72.9 851.0,72.7 850.0,72.7 850.0,72.8 849.0,72.8 849.0,73.1 848.0,73.1 848.0,73.3 847.0,73.3 847.0,74.9 846.0,74.9 846.0,74.5 845.0,74.5 845.0,74.1 844.0,74.1 844.0,74.4 843.0,74.4 843.0,74.8 842.0,74.8 842.0,75.0 841.0,75.0 841.0,78.5 840.0,78.5 840.0,77.9 839.0,77.9 839.0,76.9 838.0,76.9 838.0,76.9 837.0,76.9 837.0,76.9 836.0,76.9 836.0,77.0 835.0,77.0 835.0,77.4 834.0,77.4 834.0,77.3 833.0,77.3 833.0,79.3 832.0,79.3 832.0,79.4 831.0,79.4 831.0,83.5 830.0,83.5 830.0,83.9 829.0,83.9 829.0,81.5 828.0,81.5 828.0,86.6 827.0,86.6 827.0,81.2 826.0,81.2 826.0,82.9 825.0,82.9 825.0,84.8 824.0,84.8 824.0,64.0 823.0,64.0" fill="#66ddff"/><rect x="0" y="63.5" width="1112" height="1.2" fill="#66ddff"/><rect x="536" y="0" width="1" height="128" fill="#f0e080"/></svg>
<svg style="position:absolute;left:146px;top:202px" width="22" height="11"><path d="M0.5 1H20.5L10.5 11Z" fill="#c0c0c0"/></svg>
<div class="t" style="left:234.0px;top:201.0px;width:12px;text-align:center;font-size:9px;line-height:13px;color:#f0f0f0;font-weight:bold;">1</div>
<div class="t" style="left:578.0px;top:201.0px;width:12px;text-align:center;font-size:9px;line-height:13px;color:#f0f0f0;font-weight:bold;">2</div>
<div class="t" style="left:923.0px;top:201.0px;width:12px;text-align:center;font-size:9px;line-height:13px;color:#f0f0f0;font-weight:bold;">3</div>
<div style="position:absolute;left:326px;top:207px;width:1px;height:1px;background:#ddd"></div>
<div style="position:absolute;left:412px;top:207px;width:1px;height:1px;background:#ddd"></div>
<div style="position:absolute;left:498px;top:207px;width:1px;height:1px;background:#ddd"></div>
<div style="position:absolute;left:670px;top:207px;width:1px;height:1px;background:#ddd"></div>
<div style="position:absolute;left:756px;top:207px;width:1px;height:1px;background:#ddd"></div>
<div style="position:absolute;left:842px;top:207px;width:1px;height:1px;background:#ddd"></div>
<div style="position:absolute;left:1014px;top:207px;width:1px;height:1px;background:#ddd"></div>
<div style="position:absolute;left:1100px;top:207px;width:1px;height:1px;background:#ddd"></div>
<div style="position:absolute;left:1186px;top:207px;width:1px;height:1px;background:#ddd"></div>
<div style="position:absolute;left:633px;top:203px;width:8px;height:9px;background:linear-gradient(90deg,#fff,#ccc);border-radius:1px"></div>
<div style="position:absolute;left:636px;top:203px;width:1px;height:9px;background:#555"></div>
<div style="position:absolute;left:636px;top:213px;width:1px;height:128px;background:#f5e68a"></div>
<div style="position:absolute;left:101px;top:343px;width:40px;height:12px;border:1px solid #727272;border-radius:2px"></div>
<div class="t" style="left:100.0px;top:343.75px;width:44px;text-align:center;font-size:8.5px;line-height:12.5px;color:#8c8c8c;font-weight:normal;transform:scaleX(0.87);transform-origin:center center;">UNDO</div>
<div style="position:absolute;left:145px;top:343px;width:40px;height:12px;border:1px solid #727272;border-radius:2px"></div>
<div class="t" style="left:144.0px;top:343.75px;width:44px;text-align:center;font-size:8.5px;line-height:12.5px;color:#8c8c8c;font-weight:normal;transform:scaleX(0.87);transform-origin:center center;">REDO</div>
<div style="position:absolute;left:200px;top:343px;width:40px;height:12px;border:1px solid #727272;border-radius:2px"></div>
<div class="t" style="left:199.0px;top:343.75px;width:44px;text-align:center;font-size:8.5px;line-height:12.5px;color:#8c8c8c;font-weight:normal;transform:scaleX(0.87);transform-origin:center center;">EDIT</div>
<div style="position:absolute;left:244px;top:343px;width:40px;height:12px;border:1px solid #727272;border-radius:2px"></div>
<div class="t" style="left:243.0px;top:343.75px;width:44px;text-align:center;font-size:8.5px;line-height:12.5px;color:#8c8c8c;font-weight:normal;transform:scaleX(0.87);transform-origin:center center;">DELETE</div>
<div style="position:absolute;left:299px;top:343px;width:40px;height:12px;border:1px solid #727272;border-radius:2px"></div>
<div class="t" style="left:298.0px;top:343.75px;width:44px;text-align:center;font-size:8.5px;line-height:12.5px;color:#8c8c8c;font-weight:normal;transform:scaleX(0.87);transform-origin:center center;">COPY</div>
<div style="position:absolute;left:343px;top:343px;width:40px;height:12px;border:1px solid #727272;border-radius:2px"></div>
<div class="t" style="left:342.0px;top:343.75px;width:44px;text-align:center;font-size:8.5px;line-height:12.5px;color:#8c8c8c;font-weight:normal;transform:scaleX(0.87);transform-origin:center center;">PASTE</div>
<div style="position:absolute;left:398px;top:343px;width:40px;height:12px;border:1px solid #727272;border-radius:2px"></div>
<div class="t" style="left:397.0px;top:343.75px;width:44px;text-align:center;font-size:8.5px;line-height:12.5px;color:#8c8c8c;font-weight:normal;transform:scaleX(0.87);transform-origin:center center;">SEL. ALL</div>
<div style="position:absolute;left:442px;top:343px;width:40px;height:12px;border:1px solid #a0a0a0;border-radius:2px"></div>
<div class="t" style="left:441.0px;top:343.75px;width:44px;text-align:center;font-size:8.5px;line-height:12.5px;color:#f4f4f4;font-weight:normal;transform:scaleX(0.95);transform-origin:center center;font-weight:bold;">MORE &#9660;</div>
<svg style="position:absolute;left:1221px;top:351px;shape-rendering:crispEdges" width="11" height="12"><path d="M5.5 0.5L2.5 3.5H8.5Z M5.5 11.5L2.5 8.5H8.5Z" fill="#808080"/><rect x="0" y="5" width="11" height="1" fill="#808080"/><rect x="0" y="7" width="11" height="1" fill="#808080"/></svg>
<div style="position:absolute;left:8px;top:637px;width:1226px;height:1px;background:#e4e4e4"></div>
<div style="position:absolute;left:8px;top:638px;width:1226px;height:32px;background:linear-gradient(#c6c6c6,#bababa)"></div>
<div style="position:absolute;left:8px;top:670px;width:1226px;height:1px;background:#7c7c7c"></div>
<div style="position:absolute;left:8px;top:638px;width:13px;height:32px;background:linear-gradient(90deg,#a8a8a8,#c0c0c0)"></div>
<div class="t" style="left:24px;top:642.0px;font-size:12px;line-height:16px;color:#000;font-weight:bold;">Effect Return 1</div>
<div style="position:absolute;left:231px;top:644px;width:1px;height:2px;background:#f8f8f8"></div>
<div style="position:absolute;left:231px;top:660px;width:1px;height:2px;background:#f8f8f8"></div>
<div style="position:absolute;left:241px;top:644px;width:1px;height:2px;background:#f8f8f8"></div>
<div style="position:absolute;left:241px;top:660px;width:1px;height:2px;background:#f8f8f8"></div>
<div style="position:absolute;left:251px;top:644px;width:1px;height:2px;background:#f8f8f8"></div>
<div style="position:absolute;left:251px;top:660px;width:1px;height:2px;background:#f8f8f8"></div>
<div style="position:absolute;left:261px;top:644px;width:1px;height:2px;background:#f8f8f8"></div>
<div style="position:absolute;left:261px;top:660px;width:1px;height:2px;background:#f8f8f8"></div>
<div style="position:absolute;left:271px;top:644px;width:1px;height:2px;background:#f8f8f8"></div>
<div style="position:absolute;left:271px;top:660px;width:1px;height:2px;background:#f8f8f8"></div>
<div style="position:absolute;left:281px;top:644px;width:1px;height:2px;background:#f8f8f8"></div>
<div style="position:absolute;left:281px;top:660px;width:1px;height:2px;background:#f8f8f8"></div>
<div style="position:absolute;left:291px;top:644px;width:1px;height:2px;background:#f8f8f8"></div>
<div style="position:absolute;left:291px;top:660px;width:1px;height:2px;background:#f8f8f8"></div>
<div style="position:absolute;left:301px;top:644px;width:1px;height:2px;background:#f8f8f8"></div>
<div style="position:absolute;left:301px;top:660px;width:1px;height:2px;background:#f8f8f8"></div>
<div style="position:absolute;left:311px;top:644px;width:1px;height:2px;background:#f8f8f8"></div>
<div style="position:absolute;left:311px;top:660px;width:1px;height:2px;background:#f8f8f8"></div>
<div style="position:absolute;left:321px;top:644px;width:1px;height:2px;background:#f8f8f8"></div>
<div style="position:absolute;left:321px;top:660px;width:1px;height:2px;background:#f8f8f8"></div>
<div style="position:absolute;left:331px;top:643px;width:1px;height:5px;background:#f8f8f8"></div>
<div style="position:absolute;left:331px;top:658px;width:1px;height:4px;background:#f8f8f8"></div>
<div style="position:absolute;left:341px;top:644px;width:1px;height:2px;background:#f8f8f8"></div>
<div style="position:absolute;left:341px;top:660px;width:1px;height:2px;background:#f8f8f8"></div>
<div style="position:absolute;left:351px;top:644px;width:1px;height:2px;background:#f8f8f8"></div>
<div style="position:absolute;left:351px;top:660px;width:1px;height:2px;background:#f8f8f8"></div>
<div style="position:absolute;left:231px;top:652px;width:129px;height:1px;background:#7e7e7e"></div>
<div style="position:absolute;left:231px;top:653px;width:129px;height:2px;background:#e6e6e6"></div>
<div style="position:absolute;left:311px;top:646px;width:5px;height:13px;border:1px solid #222;border-radius:2px;background:linear-gradient(90deg,#eee,#999);"></div>
<div class="t" style="left:230px;top:660.5px;font-size:8px;line-height:12px;color:#222;font-weight:bold;transform:scaleX(0.82);transform-origin:left center;">-5.4</div>
<div style="position:absolute;left:376px;top:642px;width:10px;height:8px;border:1px solid #111;border-radius:2px;background:linear-gradient(#d4d4d4,#a0a0a0);box-shadow:inset 1px 1px 0 rgba(255,255,255,.45)"></div>
<div class="t" style="left:391.5px;top:640.25px;font-size:9.5px;line-height:13.5px;color:#000;font-weight:bold;transform:scaleX(0.84);transform-origin:left center;">Mute</div>
<div style="position:absolute;left:376px;top:656px;width:10px;height:8px;border:1px solid #111;border-radius:2px;background:linear-gradient(#d4d4d4,#a0a0a0);box-shadow:inset 1px 1px 0 rgba(255,255,255,.45)"></div>
<div class="t" style="left:391.5px;top:654.25px;font-size:9.5px;line-height:13.5px;color:#000;font-weight:bold;transform:scaleX(0.84);transform-origin:left center;">Solo</div>
<div class="t" style="left:419.8px;top:636.8px;width:10px;text-align:center;font-size:8px;line-height:12px;color:#000;font-weight:bold;transform:scaleX(0.85);transform-origin:center center;">P</div>
<svg style="position:absolute;left:421.5px;top:636.5px;overflow:visible" width="32.0" height="32.0"><rect x="8.50" y="26.50" width="1.6" height="1.6" fill="#111"/><rect x="3.50" y="21.50" width="1.6" height="1.6" fill="#111"/><rect x="2.50" y="15.50" width="1.6" height="1.6" fill="#111"/><rect x="3.50" y="8.50" width="1.6" height="1.6" fill="#111"/><rect x="8.50" y="3.50" width="1.6" height="1.6" fill="#111"/><rect x="15.50" y="2.50" width="1.6" height="1.6" fill="#111"/><rect x="21.50" y="3.50" width="1.6" height="1.6" fill="#111"/><rect x="26.50" y="8.50" width="1.6" height="1.6" fill="#111"/><rect x="28.50" y="15.50" width="1.6" height="1.6" fill="#111"/><rect x="26.50" y="21.50" width="1.6" height="1.6" fill="#111"/><rect x="21.50" y="26.50" width="1.6" height="1.6" fill="#111"/></svg>
<div style="position:absolute;left:429.6px;top:644.9px;width:19px;height:19px;border-radius:50%;background:#333;opacity:.85;filter:blur(0.6px)"></div>
<div style="position:absolute;left:428.0px;top:643.0px;width:19px;height:19px;border-radius:50%;background:conic-gradient(from 0deg,#f4f4f4 0deg,#ffffff 35deg,#e4e4e4 75deg,#9c9c9c 122deg,#e6e6e6 165deg,#ffffff 210deg,#e2e2e2 255deg,#a4a4a4 302deg,#e8e8e8 340deg,#f4f4f4 360deg);box-shadow:inset 0 0 0 0.8px #8a8a8a, inset -1px -1px 1px rgba(0,0,0,.25)"></div>
<div style="position:absolute;left:435.2px;top:644.2px;width:4.5px;height:4.5px;border-radius:50%;background:#0000ee"></div>
<div class="t" style="left:428.5px;top:660.5px;width:20px;text-align:center;font-size:8px;line-height:12px;color:#222;font-weight:bold;transform:scaleX(0.8);transform-origin:center center;">50</div>
<div style="position:absolute;left:539px;top:641px;width:31px;height:11px;background:#3c3c3c;border-radius:3px;box-shadow:0 0 0 1px #d0d0d0"></div>
<div class="t" style="left:534.5px;top:639.5px;width:40px;text-align:center;font-size:10px;line-height:14px;color:#66d0ff;font-weight:normal;">Verb</div>
<div style="position:absolute;left:545px;top:656px;width:16px;height:8px;border:1px solid #111;border-top-width:2px;border-left-width:2px;border-radius:2px;background:linear-gradient(#c8c8c8,#a0a0a0)"></div>
<svg style="position:absolute;left:566px;top:660px" width="5" height="3"><path d="M0 0H5L2.5 3Z" fill="#888"/></svg>
<div style="position:absolute;left:574px;top:641px;width:31px;height:11px;background:#3c3c3c;border-radius:3px;box-shadow:0 0 0 1px #d0d0d0"></div>
<div style="position:absolute;left:580px;top:656px;width:17px;height:9px;border:1px solid #111;border-radius:2px;background:linear-gradient(#d4d4d4,#a0a0a0);box-shadow:inset 1px 1px 0 rgba(255,255,255,.45)"></div>
<svg style="position:absolute;left:601px;top:660px" width="5" height="3"><path d="M0 0H5L2.5 3Z" fill="#888"/></svg>
<div style="position:absolute;left:609px;top:641px;width:31px;height:11px;background:#3c3c3c;border-radius:3px;box-shadow:0 0 0 1px #d0d0d0"></div>
<div style="position:absolute;left:615px;top:656px;width:17px;height:9px;border:1px solid #111;border-radius:2px;background:linear-gradient(#d4d4d4,#a0a0a0);box-shadow:inset 1px 1px 0 rgba(255,255,255,.45)"></div>
<svg style="position:absolute;left:636px;top:660px" width="5" height="3"><path d="M0 0H5L2.5 3Z" fill="#888"/></svg>
<div style="position:absolute;left:693px;top:642px;width:271px;height:16px;background:#083a16;border-radius:2px"></div>
<svg style="position:absolute;left:693px;top:642px;shape-rendering:crispEdges" width="271" height="16"><rect x="1" y="1.5" width="4" height="7.5" fill="#00ff00"/><rect x="1" y="8" width="4" height="7" fill="#00ff00"/><rect x="1" y="8" width="4" height="1" fill="#10c010" opacity="0.6"/><rect x="6" y="1.5" width="4" height="7.5" fill="#00ff00"/><rect x="6" y="8" width="4" height="7" fill="#00ff00"/><rect x="6" y="8" width="4" height="1" fill="#10c010" opacity="0.6"/><rect x="11" y="2" width="4" height="6" fill="#0b4612"/><rect x="11" y="8" width="4" height="7" fill="#00ff00"/><rect x="16" y="2" width="4" height="6" fill="#0b4612"/><rect x="16" y="9" width="4" height="6" fill="#0b4612"/><rect x="21" y="2" width="4" height="6" fill="#0b4612"/><rect x="21" y="9" width="4" height="6" fill="#0b4612"/><rect x="26" y="2" width="4" height="6" fill="#0b4612"/><rect x="26" y="9" width="4" height="6" fill="#0b4612"/><rect x="31" y="2" width="4" height="6" fill="#0b4612"/><rect x="31" y="9" width="4" height="6" fill="#0b4612"/><rect x="36" y="2" width="4" height="6" fill="#0b4612"/><rect x="36" y="9" width="4" height="6" fill="#0b4612"/><rect x="41" y="2" width="4" height="6" fill="#0b4612"/><rect x="41" y="9" width="4" height="6" fill="#0b4612"/><rect x="46" y="2" width="4" height="6" fill="#0b4612"/><rect x="46" y="9" width="4" height="6" fill="#0b4612"/><rect x="51" y="2" width="4" height="6" fill="#0b4612"/><rect x="51" y="9" width="4" height="6" fill="#0b4612"/><rect x="56" y="2" width="4" height="6" fill="#0b4612"/><rect x="56" y="9" width="4" height="6" fill="#0b4612"/><rect x="61" y="2" width="4" height="6" fill="#0b4612"/><rect x="61" y="9" width="4" height="6" fill="#0b4612"/><rect x="66" y="2" width="4" height="6" fill="#0b4612"/><rect x="66" y="9" width="4" height="6" fill="#0b4612"/><rect x="71" y="2" width="4" height="6" fill="#0b4612"/><rect x="71" y="9" width="4" height="6" fill="#0b4612"/><rect x="76" y="2" width="4" height="6" fill="#0b4612"/><rect x="76" y="9" width="4" height="6" fill="#0b4612"/><rect x="81" y="2" width="4" height="6" fill="#0b4612"/><rect x="81" y="9" width="4" height="6" fill="#0b4612"/><rect x="86" y="2" width="4" height="6" fill="#0b4612"/><rect x="86" y="9" width="4" height="6" fill="#0b4612"/><rect x="91" y="2" width="4" height="6" fill="#0b4612"/><rect x="91" y="9" width="4" height="6" fill="#0b4612"/><rect x="96" y="2" width="4" height="6" fill="#0b4612"/><rect x="96" y="9" width="4" height="6" fill="#0b4612"/><rect x="101" y="2" width="4" height="6" fill="#0b4612"/><rect x="101" y="9" width="4" height="6" fill="#0b4612"/><rect x="106" y="2" width="4" height="6" fill="#0b4612"/><rect x="106" y="9" width="4" height="6" fill="#0b4612"/><rect x="111" y="2" width="4" height="6" fill="#0b4612"/><rect x="111" y="9" width="4" height="6" fill="#0b4612"/><rect x="116" y="2" width="4" height="6" fill="#0b4612"/><rect x="116" y="9" width="4" height="6" fill="#0b4612"/><rect x="121" y="2" width="4" height="6" fill="#0b4612"/><rect x="121" y="9" width="4" height="6" fill="#0b4612"/><rect x="126" y="2" width="4" height="6" fill="#0b4612"/><rect x="126" y="9" width="4" height="6" fill="#0b4612"/><rect x="131" y="2" width="4" height="6" fill="#0b4612"/><rect x="131" y="9" width="4" height="6" fill="#0b4612"/><rect x="136" y="2" width="4" height="6" fill="#0b4612"/><rect x="136" y="9" width="4" height="6" fill="#0b4612"/><rect x="141" y="2" width="4" height="6" fill="#0b4612"/><rect x="141" y="9" width="4" height="6" fill="#0b4612"/><rect x="146" y="2" width="4" height="6" fill="#0b4612"/><rect x="146" y="9" width="4" height="6" fill="#0b4612"/><rect x="151" y="2" width="4" height="6" fill="#0b4612"/><rect x="151" y="9" width="4" height="6" fill="#0b4612"/><rect x="156" y="2" width="4" height="6" fill="#0b4612"/><rect x="156" y="9" width="4" height="6" fill="#0b4612"/><rect x="161" y="2" width="4" height="6" fill="#0b4612"/><rect x="161" y="9" width="4" height="6" fill="#0b4612"/><rect x="166" y="2" width="4" height="6" fill="#0b4612"/><rect x="166" y="9" width="4" height="6" fill="#0b4612"/><rect x="171" y="2" width="4" height="6" fill="#574c00"/><rect x="171" y="9" width="4" height="6" fill="#574c00"/><rect x="176" y="2" width="4" height="6" fill="#574c00"/><rect x="176" y="9" width="4" height="6" fill="#574c00"/><rect x="181" y="2" width="4" height="6" fill="#574c00"/><rect x="181" y="9" width="4" height="6" fill="#574c00"/><rect x="186" y="2" width="4" height="6" fill="#574c00"/><rect x="186" y="9" width="4" height="6" fill="#574c00"/><rect x="191" y="2" width="4" height="6" fill="#574c00"/><rect x="191" y="9" width="4" height="6" fill="#574c00"/><rect x="196" y="2" width="4" height="6" fill="#574c00"/><rect x="196" y="9" width="4" height="6" fill="#574c00"/><rect x="201" y="2" width="4" height="6" fill="#574c00"/><rect x="201" y="9" width="4" height="6" fill="#574c00"/><rect x="206" y="2" width="4" height="6" fill="#574c00"/><rect x="206" y="9" width="4" height="6" fill="#574c00"/><rect x="211" y="2" width="4" height="6" fill="#574c00"/><rect x="211" y="9" width="4" height="6" fill="#574c00"/><rect x="216" y="2" width="4" height="6" fill="#574c00"/><rect x="216" y="9" width="4" height="6" fill="#574c00"/><rect x="221" y="2" width="4" height="6" fill="#600808"/><rect x="221" y="9" width="4" height="6" fill="#600808"/><rect x="226" y="2" width="4" height="6" fill="#600808"/><rect x="226" y="9" width="4" height="6" fill="#600808"/><rect x="231" y="2" width="4" height="6" fill="#600808"/><rect x="231" y="9" width="4" height="6" fill="#600808"/><rect x="236" y="2" width="4" height="6" fill="#600808"/><rect x="236" y="9" width="4" height="6" fill="#600808"/><rect x="241" y="2" width="4" height="6" fill="#600808"/><rect x="241" y="9" width="4" height="6" fill="#600808"/><rect x="246" y="2" width="4" height="6" fill="#600808"/><rect x="246" y="9" width="4" height="6" fill="#600808"/><rect x="251" y="2" width="4" height="6" fill="#600808"/><rect x="251" y="9" width="4" height="6" fill="#600808"/><rect x="256" y="2" width="4" height="6" fill="#600808"/><rect x="256" y="9" width="4" height="6" fill="#600808"/><rect x="261" y="2" width="4" height="6" fill="#600808"/><rect x="261" y="9" width="4" height="6" fill="#600808"/><rect x="266" y="2" width="4" height="6" fill="#600808"/><rect x="266" y="9" width="4" height="6" fill="#600808"/></svg>
<div style="position:absolute;left:693px;top:660px;width:1px;height:1px;background:#000"></div>
<div class="t" style="left:693px;top:659.85px;font-size:7.5px;line-height:11.5px;color:#000;font-weight:bold;transform:scaleX(0.98);transform-origin:left center;">-50</div>
<div style="position:absolute;left:753px;top:660px;width:1px;height:1px;background:#000"></div>
<div class="t" style="left:738.0px;top:659.85px;width:30px;text-align:center;font-size:7.5px;line-height:11.5px;color:#000;font-weight:bold;transform:scaleX(0.98);transform-origin:center center;">-20</div>
<div style="position:absolute;left:813px;top:660px;width:1px;height:1px;background:#000"></div>
<div class="t" style="left:798.0px;top:659.85px;width:30px;text-align:center;font-size:7.5px;line-height:11.5px;color:#000;font-weight:bold;transform:scaleX(0.98);transform-origin:center center;">-10</div>
<div style="position:absolute;left:863px;top:660px;width:1px;height:1px;background:#000"></div>
<div class="t" style="left:848.0px;top:659.85px;width:30px;text-align:center;font-size:7.5px;line-height:11.5px;color:#000;font-weight:bold;transform:scaleX(0.98);transform-origin:center center;">-5</div>
<div style="position:absolute;left:913px;top:660px;width:1px;height:1px;background:#000"></div>
<div class="t" style="left:898.0px;top:659.85px;width:30px;text-align:center;font-size:7.5px;line-height:11.5px;color:#000;font-weight:bold;transform:scaleX(0.98);transform-origin:center center;">0</div>
<div style="position:absolute;left:963px;top:660px;width:1px;height:1px;background:#000"></div>
<div class="t" style="left:934px;top:659.85px;width:30px;text-align:right;font-size:7.5px;line-height:11.5px;color:#000;font-weight:bold;transform:scaleX(0.98);transform-origin:right center;">+5</div>
<div style="position:absolute;left:14px;top:653px;width:3px;height:3px;background:#8a8a8a;border-radius:50%"></div>
<div style="position:absolute;left:1225px;top:643px;width:5px;height:3px;background:#808080"></div>
<div style="position:absolute;left:8px;top:671px;width:1226px;height:1px;background:#e4e4e4"></div>
<div style="position:absolute;left:8px;top:672px;width:1226px;height:32px;background:linear-gradient(#c6c6c6,#bababa)"></div>
<div style="position:absolute;left:8px;top:704px;width:1226px;height:1px;background:#7c7c7c"></div>
<div style="position:absolute;left:8px;top:672px;width:13px;height:32px;background:linear-gradient(90deg,#a8a8a8,#c0c0c0)"></div>
<div class="t" style="left:24px;top:676.0px;font-size:12px;line-height:16px;color:#000;font-weight:bold;">Master</div>
<div style="position:absolute;left:231px;top:678px;width:1px;height:2px;background:#f8f8f8"></div>
<div style="position:absolute;left:231px;top:694px;width:1px;height:2px;background:#f8f8f8"></div>
<div style="position:absolute;left:241px;top:678px;width:1px;height:2px;background:#f8f8f8"></div>
<div style="position:absolute;left:241px;top:694px;width:1px;height:2px;background:#f8f8f8"></div>
<div style="position:absolute;left:251px;top:678px;width:1px;height:2px;background:#f8f8f8"></div>
<div style="position:absolute;left:251px;top:694px;width:1px;height:2px;background:#f8f8f8"></div>
<div style="position:absolute;left:261px;top:678px;width:1px;height:2px;background:#f8f8f8"></div>
<div style="position:absolute;left:261px;top:694px;width:1px;height:2px;background:#f8f8f8"></div>
<div style="position:absolute;left:271px;top:678px;width:1px;height:2px;background:#f8f8f8"></div>
<div style="position:absolute;left:271px;top:694px;width:1px;height:2px;background:#f8f8f8"></div>
<div style="position:absolute;left:281px;top:678px;width:1px;height:2px;background:#f8f8f8"></div>
<div style="position:absolute;left:281px;top:694px;width:1px;height:2px;background:#f8f8f8"></div>
<div style="position:absolute;left:291px;top:678px;width:1px;height:2px;background:#f8f8f8"></div>
<div style="position:absolute;left:291px;top:694px;width:1px;height:2px;background:#f8f8f8"></div>
<div style="position:absolute;left:301px;top:678px;width:1px;height:2px;background:#f8f8f8"></div>
<div style="position:absolute;left:301px;top:694px;width:1px;height:2px;background:#f8f8f8"></div>
<div style="position:absolute;left:311px;top:678px;width:1px;height:2px;background:#f8f8f8"></div>
<div style="position:absolute;left:311px;top:694px;width:1px;height:2px;background:#f8f8f8"></div>
<div style="position:absolute;left:321px;top:678px;width:1px;height:2px;background:#f8f8f8"></div>
<div style="position:absolute;left:321px;top:694px;width:1px;height:2px;background:#f8f8f8"></div>
<div style="position:absolute;left:331px;top:677px;width:1px;height:5px;background:#f8f8f8"></div>
<div style="position:absolute;left:331px;top:692px;width:1px;height:4px;background:#f8f8f8"></div>
<div style="position:absolute;left:341px;top:678px;width:1px;height:2px;background:#f8f8f8"></div>
<div style="position:absolute;left:341px;top:694px;width:1px;height:2px;background:#f8f8f8"></div>
<div style="position:absolute;left:351px;top:678px;width:1px;height:2px;background:#f8f8f8"></div>
<div style="position:absolute;left:351px;top:694px;width:1px;height:2px;background:#f8f8f8"></div>
<div style="position:absolute;left:231px;top:686px;width:129px;height:1px;background:#7e7e7e"></div>
<div style="position:absolute;left:231px;top:687px;width:129px;height:2px;background:#e6e6e6"></div>
<div style="position:absolute;left:328px;top:680px;width:5px;height:13px;border:1px solid #222;border-radius:2px;background:linear-gradient(90deg,#eee,#999);"></div>
<div class="t" style="left:230px;top:694.5px;font-size:8px;line-height:12px;color:#222;font-weight:bold;transform:scaleX(0.82);transform-origin:left center;">0.0</div>
<div style="position:absolute;left:376px;top:676px;width:10px;height:8px;border:1px solid #111;border-radius:2px;background:linear-gradient(#d4d4d4,#a0a0a0);box-shadow:inset 1px 1px 0 rgba(255,255,255,.45)"></div>
<div class="t" style="left:391.5px;top:674.25px;font-size:9.5px;line-height:13.5px;color:#000;font-weight:bold;transform:scaleX(0.84);transform-origin:left center;">Mute</div>
<div class="t" style="left:419.8px;top:670.8px;width:10px;text-align:center;font-size:8px;line-height:12px;color:#000;font-weight:bold;transform:scaleX(0.85);transform-origin:center center;">P</div>
<svg style="position:absolute;left:421.5px;top:670.5px;overflow:visible" width="32.0" height="32.0"><rect x="8.50" y="26.50" width="1.6" height="1.6" fill="#111"/><rect x="3.50" y="21.50" width="1.6" height="1.6" fill="#111"/><rect x="2.50" y="15.50" width="1.6" height="1.6" fill="#111"/><rect x="3.50" y="8.50" width="1.6" height="1.6" fill="#111"/><rect x="8.50" y="3.50" width="1.6" height="1.6" fill="#111"/><rect x="15.50" y="2.50" width="1.6" height="1.6" fill="#111"/><rect x="21.50" y="3.50" width="1.6" height="1.6" fill="#111"/><rect x="26.50" y="8.50" width="1.6" height="1.6" fill="#111"/><rect x="28.50" y="15.50" width="1.6" height="1.6" fill="#111"/><rect x="26.50" y="21.50" width="1.6" height="1.6" fill="#111"/><rect x="21.50" y="26.50" width="1.6" height="1.6" fill="#111"/></svg>
<div style="position:absolute;left:429.6px;top:678.9px;width:19px;height:19px;border-radius:50%;background:#333;opacity:.85;filter:blur(0.6px)"></div>
<div style="position:absolute;left:428.0px;top:677.0px;width:19px;height:19px;border-radius:50%;background:conic-gradient(from 0deg,#f4f4f4 0deg,#ffffff 35deg,#e4e4e4 75deg,#9c9c9c 122deg,#e6e6e6 165deg,#ffffff 210deg,#e2e2e2 255deg,#a4a4a4 302deg,#e8e8e8 340deg,#f4f4f4 360deg);box-shadow:inset 0 0 0 0.8px #8a8a8a, inset -1px -1px 1px rgba(0,0,0,.25)"></div>
<div style="position:absolute;left:435.2px;top:678.2px;width:4.5px;height:4.5px;border-radius:50%;background:#0000ee"></div>
<div class="t" style="left:428.5px;top:694.5px;width:20px;text-align:center;font-size:8px;line-height:12px;color:#222;font-weight:bold;transform:scaleX(0.8);transform-origin:center center;">50</div>
<div style="position:absolute;left:539px;top:675px;width:31px;height:11px;background:#3c3c3c;border-radius:3px;box-shadow:0 0 0 1px #d0d0d0"></div>
<div class="t" style="left:534.5px;top:673.5px;width:40px;text-align:center;font-size:10px;line-height:14px;color:#66d0ff;font-weight:normal;">Comp</div>
<div style="position:absolute;left:545px;top:690px;width:17px;height:9px;border:1px solid #111;border-radius:2px;background:linear-gradient(#d4d4d4,#a0a0a0);box-shadow:inset 1px 1px 0 rgba(255,255,255,.45)"></div>
<svg style="position:absolute;left:566px;top:694px" width="5" height="3"><path d="M0 0H5L2.5 3Z" fill="#888"/></svg>
<div style="position:absolute;left:574px;top:675px;width:31px;height:11px;background:#3c3c3c;border-radius:3px;box-shadow:0 0 0 1px #d0d0d0"></div>
<div class="t" style="left:569.5px;top:673.5px;width:40px;text-align:center;font-size:10px;line-height:14px;color:#66d0ff;font-weight:normal;">EQ</div>
<div style="position:absolute;left:580px;top:690px;width:17px;height:9px;border:1px solid #111;border-radius:2px;background:linear-gradient(#d4d4d4,#a0a0a0);box-shadow:inset 1px 1px 0 rgba(255,255,255,.45)"></div>
<svg style="position:absolute;left:601px;top:694px" width="5" height="3"><path d="M0 0H5L2.5 3Z" fill="#888"/></svg>
<div style="position:absolute;left:609px;top:675px;width:31px;height:11px;background:#3c3c3c;border-radius:3px;box-shadow:0 0 0 1px #d0d0d0"></div>
<div class="t" style="left:604.5px;top:673.5px;width:40px;text-align:center;font-size:10px;line-height:14px;color:#66d0ff;font-weight:normal;">Lim</div>
<div style="position:absolute;left:615px;top:690px;width:17px;height:9px;border:1px solid #111;border-radius:2px;background:linear-gradient(#d4d4d4,#a0a0a0);box-shadow:inset 1px 1px 0 rgba(255,255,255,.45)"></div>
<svg style="position:absolute;left:636px;top:694px" width="5" height="3"><path d="M0 0H5L2.5 3Z" fill="#888"/></svg>
<div style="position:absolute;left:693px;top:676px;width:271px;height:16px;background:#083a16;border-radius:2px"></div>
<svg style="position:absolute;left:693px;top:676px;shape-rendering:crispEdges" width="271" height="16"><rect x="1" y="1.5" width="4" height="7.5" fill="#00ff00"/><rect x="1" y="8" width="4" height="7" fill="#00ff00"/><rect x="1" y="8" width="4" height="1" fill="#10c010" opacity="0.6"/><rect x="6" y="1.5" width="4" height="7.5" fill="#00ff00"/><rect x="6" y="8" width="4" height="7" fill="#00ff00"/><rect x="6" y="8" width="4" height="1" fill="#10c010" opacity="0.6"/><rect x="11" y="1.5" width="4" height="7.5" fill="#00ff00"/><rect x="11" y="8" width="4" height="7" fill="#00ff00"/><rect x="11" y="8" width="4" height="1" fill="#10c010" opacity="0.6"/><rect x="16" y="1.5" width="4" height="7.5" fill="#00ff00"/><rect x="16" y="8" width="4" height="7" fill="#00ff00"/><rect x="16" y="8" width="4" height="1" fill="#10c010" opacity="0.6"/><rect x="21" y="1.5" width="4" height="7.5" fill="#00ff00"/><rect x="21" y="8" width="4" height="7" fill="#00ff00"/><rect x="21" y="8" width="4" height="1" fill="#10c010" opacity="0.6"/><rect x="26" y="1.5" width="4" height="7.5" fill="#00ff00"/><rect x="26" y="8" width="4" height="7" fill="#00ff00"/><rect x="26" y="8" width="4" height="1" fill="#10c010" opacity="0.6"/><rect x="31" y="1.5" width="4" height="7.5" fill="#00ff00"/><rect x="31" y="8" width="4" height="7" fill="#00ff00"/><rect x="31" y="8" width="4" height="1" fill="#10c010" opacity="0.6"/><rect x="36" y="1.5" width="4" height="7.5" fill="#00ff00"/><rect x="36" y="8" width="4" height="7" fill="#00ff00"/><rect x="36" y="8" width="4" height="1" fill="#10c010" opacity="0.6"/><rect x="41" y="1.5" width="4" height="7.5" fill="#00ff00"/><rect x="41" y="8" width="4" height="7" fill="#00ff00"/><rect x="41" y="8" width="4" height="1" fill="#10c010" opacity="0.6"/><rect x="46" y="1.5" width="4" height="7.5" fill="#00ff00"/><rect x="46" y="8" width="4" height="7" fill="#00ff00"/><rect x="46" y="8" width="4" height="1" fill="#10c010" opacity="0.6"/><rect x="51" y="1.5" width="4" height="7.5" fill="#00ff00"/><rect x="51" y="8" width="4" height="7" fill="#00ff00"/><rect x="51" y="8" width="4" height="1" fill="#10c010" opacity="0.6"/><rect x="56" y="1.5" width="4" height="7.5" fill="#00ff00"/><rect x="56" y="8" width="4" height="7" fill="#00ff00"/><rect x="56" y="8" width="4" height="1" fill="#10c010" opacity="0.6"/><rect x="61" y="1.5" width="4" height="7.5" fill="#00ff00"/><rect x="61" y="8" width="4" height="7" fill="#00ff00"/><rect x="61" y="8" width="4" height="1" fill="#10c010" opacity="0.6"/><rect x="66" y="1.5" width="4" height="7.5" fill="#00ff00"/><rect x="66" y="8" width="4" height="7" fill="#00ff00"/><rect x="66" y="8" width="4" height="1" fill="#10c010" opacity="0.6"/><rect x="71" y="1.5" width="4" height="7.5" fill="#00ff00"/><rect x="71" y="8" width="4" height="7" fill="#00ff00"/><rect x="71" y="8" width="4" height="1" fill="#10c010" opacity="0.6"/><rect x="76" y="1.5" width="4" height="7.5" fill="#00ff00"/><rect x="76" y="8" width="4" height="7" fill="#00ff00"/><rect x="76" y="8" width="4" height="1" fill="#10c010" opacity="0.6"/><rect x="81" y="1.5" width="4" height="7.5" fill="#00ff00"/><rect x="81" y="8" width="4" height="7" fill="#00ff00"/><rect x="81" y="8" width="4" height="1" fill="#10c010" opacity="0.6"/><rect x="86" y="1.5" width="4" height="7.5" fill="#00ff00"/><rect x="86" y="8" width="4" height="7" fill="#00ff00"/><rect x="86" y="8" width="4" height="1" fill="#10c010" opacity="0.6"/><rect x="91" y="1.5" width="4" height="7.5" fill="#00ff00"/><rect x="91" y="8" width="4" height="7" fill="#00ff00"/><rect x="91" y="8" width="4" height="1" fill="#10c010" opacity="0.6"/><rect x="96" y="1.5" width="4" height="7.5" fill="#00ff00"/><rect x="96" y="8" width="4" height="7" fill="#00ff00"/><rect x="96" y="8" width="4" height="1" fill="#10c010" opacity="0.6"/><rect x="101" y="1.5" width="4" height="7.5" fill="#00ff00"/><rect x="101" y="8" width="4" height="7" fill="#00ff00"/><rect x="101" y="8" width="4" height="1" fill="#10c010" opacity="0.6"/><rect x="106" y="1.5" width="4" height="7.5" fill="#00ff00"/><rect x="106" y="8" width="4" height="7" fill="#00ff00"/><rect x="106" y="8" width="4" height="1" fill="#10c010" opacity="0.6"/><rect x="111" y="1.5" width="4" height="7.5" fill="#00ff00"/><rect x="111" y="8" width="4" height="7" fill="#00ff00"/><rect x="111" y="8" width="4" height="1" fill="#10c010" opacity="0.6"/><rect x="116" y="1.5" width="4" height="7.5" fill="#00ff00"/><rect x="116" y="8" width="4" height="7" fill="#00ff00"/><rect x="116" y="8" width="4" height="1" fill="#10c010" opacity="0.6"/><rect x="121" y="1.5" width="4" height="7.5" fill="#00ff00"/><rect x="121" y="8" width="4" height="7" fill="#00ff00"/><rect x="121" y="8" width="4" height="1" fill="#10c010" opacity="0.6"/><rect x="126" y="1.5" width="4" height="7.5" fill="#00ff00"/><rect x="126" y="8" width="4" height="7" fill="#00ff00"/><rect x="126" y="8" width="4" height="1" fill="#10c010" opacity="0.6"/><rect x="131" y="1.5" width="4" height="7.5" fill="#00ff00"/><rect x="131" y="8" width="4" height="7" fill="#00ff00"/><rect x="131" y="8" width="4" height="1" fill="#10c010" opacity="0.6"/><rect x="136" y="1.5" width="4" height="7.5" fill="#00ff00"/><rect x="136" y="8" width="4" height="7" fill="#00ff00"/><rect x="136" y="8" width="4" height="1" fill="#10c010" opacity="0.6"/><rect x="141" y="1.5" width="4" height="7.5" fill="#00ff00"/><rect x="141" y="8" width="4" height="7" fill="#00ff00"/><rect x="141" y="8" width="4" height="1" fill="#10c010" opacity="0.6"/><rect x="146" y="1.5" width="4" height="7.5" fill="#00ff00"/><rect x="146" y="8" width="4" height="7" fill="#00ff00"/><rect x="146" y="8" width="4" height="1" fill="#10c010" opacity="0.6"/><rect x="151" y="2" width="4" height="6" fill="#0b4612"/><rect x="151" y="9" width="4" height="6" fill="#0b4612"/><rect x="156" y="2" width="4" height="6" fill="#0b4612"/><rect x="156" y="9" width="4" height="6" fill="#0b4612"/><rect x="161" y="2" width="4" height="6" fill="#0b4612"/><rect x="161" y="9" width="4" height="6" fill="#0b4612"/><rect x="166" y="1.5" width="4" height="7.5" fill="#00ff00"/><rect x="166" y="8" width="4" height="7" fill="#00ff00"/><rect x="166" y="8" width="4" height="1" fill="#10c010" opacity="0.6"/><rect x="171" y="2" width="4" height="6" fill="#574c00"/><rect x="171" y="9" width="4" height="6" fill="#574c00"/><rect x="176" y="2" width="4" height="6" fill="#574c00"/><rect x="176" y="9" width="4" height="6" fill="#574c00"/><rect x="181" y="2" width="4" height="6" fill="#574c00"/><rect x="181" y="9" width="4" height="6" fill="#574c00"/><rect x="186" y="2" width="4" height="6" fill="#574c00"/><rect x="186" y="9" width="4" height="6" fill="#574c00"/><rect x="191" y="2" width="4" height="6" fill="#574c00"/><rect x="191" y="9" width="4" height="6" fill="#574c00"/><rect x="196" y="2" width="4" height="6" fill="#574c00"/><rect x="196" y="9" width="4" height="6" fill="#574c00"/><rect x="201" y="2" width="4" height="6" fill="#574c00"/><rect x="201" y="9" width="4" height="6" fill="#574c00"/><rect x="206" y="2" width="4" height="6" fill="#574c00"/><rect x="206" y="9" width="4" height="6" fill="#574c00"/><rect x="211" y="2" width="4" height="6" fill="#574c00"/><rect x="211" y="9" width="4" height="6" fill="#574c00"/><rect x="216" y="2" width="4" height="6" fill="#574c00"/><rect x="216" y="9" width="4" height="6" fill="#574c00"/><rect x="221" y="2" width="4" height="6" fill="#600808"/><rect x="221" y="9" width="4" height="6" fill="#600808"/><rect x="226" y="2" width="4" height="6" fill="#600808"/><rect x="226" y="9" width="4" height="6" fill="#600808"/><rect x="231" y="2" width="4" height="6" fill="#600808"/><rect x="231" y="9" width="4" height="6" fill="#600808"/><rect x="236" y="2" width="4" height="6" fill="#600808"/><rect x="236" y="9" width="4" height="6" fill="#600808"/><rect x="241" y="2" width="4" height="6" fill="#600808"/><rect x="241" y="9" width="4" height="6" fill="#600808"/><rect x="246" y="2" width="4" height="6" fill="#600808"/><rect x="246" y="9" width="4" height="6" fill="#600808"/><rect x="251" y="2" width="4" height="6" fill="#600808"/><rect x="251" y="9" width="4" height="6" fill="#600808"/><rect x="256" y="2" width="4" height="6" fill="#600808"/><rect x="256" y="9" width="4" height="6" fill="#600808"/><rect x="261" y="2" width="4" height="6" fill="#600808"/><rect x="261" y="9" width="4" height="6" fill="#600808"/><rect x="266" y="2" width="4" height="6" fill="#600808"/><rect x="266" y="9" width="4" height="6" fill="#600808"/></svg>
<div style="position:absolute;left:693px;top:694px;width:1px;height:1px;background:#000"></div>
<div class="t" style="left:693px;top:693.85px;font-size:7.5px;line-height:11.5px;color:#000;font-weight:bold;transform:scaleX(0.98);transform-origin:left center;">-50</div>
<div style="position:absolute;left:753px;top:694px;width:1px;height:1px;background:#000"></div>
<div class="t" style="left:738.0px;top:693.85px;width:30px;text-align:center;font-size:7.5px;line-height:11.5px;color:#000;font-weight:bold;transform:scaleX(0.98);transform-origin:center center;">-20</div>
<div style="position:absolute;left:813px;top:694px;width:1px;height:1px;background:#000"></div>
<div class="t" style="left:798.0px;top:693.85px;width:30px;text-align:center;font-size:7.5px;line-height:11.5px;color:#000;font-weight:bold;transform:scaleX(0.98);transform-origin:center center;">-10</div>
<div style="position:absolute;left:863px;top:694px;width:1px;height:1px;background:#000"></div>
<div class="t" style="left:848.0px;top:693.85px;width:30px;text-align:center;font-size:7.5px;line-height:11.5px;color:#000;font-weight:bold;transform:scaleX(0.98);transform-origin:center center;">-5</div>
<div style="position:absolute;left:913px;top:694px;width:1px;height:1px;background:#000"></div>
<div class="t" style="left:898.0px;top:693.85px;width:30px;text-align:center;font-size:7.5px;line-height:11.5px;color:#000;font-weight:bold;transform:scaleX(0.98);transform-origin:center center;">0</div>
<div style="position:absolute;left:963px;top:694px;width:1px;height:1px;background:#000"></div>
<div class="t" style="left:934px;top:693.85px;width:30px;text-align:right;font-size:7.5px;line-height:11.5px;color:#000;font-weight:bold;transform:scaleX(0.98);transform-origin:right center;">+5</div>
<div style="position:absolute;left:469px;top:682px;width:10px;height:8px;border:1px solid #111;border-radius:2px;background:linear-gradient(#d4d4d4,#a0a0a0);box-shadow:inset 1px 1px 0 rgba(255,255,255,.45)"></div>
<div class="t" style="left:459.5px;top:691.5px;width:30px;text-align:center;font-size:9px;line-height:13px;color:#000;font-weight:normal;transform:scaleX(0.85);transform-origin:center center;-webkit-text-stroke:0.2px #000">Mono</div>
<div style="position:absolute;left:1196px;top:677px;width:20px;height:20px;border:1px solid #111;border-radius:2px;background:linear-gradient(#dcdcdc,#a9a9a9);box-shadow:inset 1px 1px 0 rgba(255,255,255,.55);"><div class="t" style="left:0;top:0.5px;width:100%;height:100%;text-align:center;line-height:20px;font-size:9px;font-weight:normal;color:#000;transform:scaleX(0.85);-webkit-text-stroke:0.2px #000">View</div></div>
<div style="position:absolute;left:1225px;top:677px;width:5px;height:3px;background:#808080"></div>
<div style="position:absolute;left:8px;top:705px;width:1226px;height:36px;background:#333333"></div>
<div style="position:absolute;left:8px;top:705px;width:15px;height:36px;background:#484848"></div>
<div style="position:absolute;left:1221px;top:705px;width:13px;height:36px;background:#484848"></div>
<div style="position:absolute;left:8px;top:741px;width:1226px;height:24px;background:linear-gradient(#c8c8c8,#bcbcbc);box-shadow:inset 0 1px 0 #e8e8e8"></div>
<svg style="position:absolute;left:24px;top:746px" width="15" height="14"><path d="M0 0H15L13 14H2Z" fill="#333"/><path d="M4.5 3.5L10.5 9.5M10.5 3.5L4.5 9.5" stroke="#eee" stroke-width="1.3"/></svg>
<div class="t" style="left:901.0px;top:745.75px;width:40px;text-align:center;font-size:11.5px;line-height:15.5px;color:#111;font-weight:normal;">1:256</div>
<div class="t" style="left:948.0px;top:745.75px;width:60px;text-align:center;font-size:11.5px;line-height:15.5px;color:#111;font-weight:normal;">1/16 note</div>
<div style="position:absolute;left:1012px;top:745px;width:72px;height:14px;border:1px solid #111;border-radius:2px;background:linear-gradient(#dcdcdc,#a9a9a9);box-shadow:inset 1px 1px 0 rgba(255,255,255,.55);"><div class="t" style="left:0;top:0px;width:100%;height:100%;text-align:center;line-height:14px;font-size:12px;font-weight:bold;color:#000;">Automation</div></div>
<div style="position:absolute;left:1090px;top:745px;width:37px;height:14px;border:1px solid #111;border-radius:2px;background:linear-gradient(#dcdcdc,#a9a9a9);box-shadow:inset 1px 1px 0 rgba(255,255,255,.55);"><div class="t" style="left:0;top:0px;width:100%;height:100%;text-align:center;line-height:14px;font-size:12px;font-weight:bold;color:#000;">Help</div></div>
<div style="position:absolute;left:1133px;top:745px;width:24px;height:14px;border:1px solid #111;border-radius:2px;background:linear-gradient(#dcdcdc,#a9a9a9);box-shadow:inset 1px 1px 0 rgba(255,255,255,.55);"><div class="t" style="left:0;top:0px;width:100%;height:100%;text-align:center;line-height:14px;font-size:12px;font-weight:bold;color:#000;">Lyr</div></div>
<div style="position:absolute;left:1163px;top:745px;width:23px;height:14px;border:1px solid #111;border-radius:2px;background:linear-gradient(#dcdcdc,#a9a9a9);box-shadow:inset 1px 1px 0 rgba(255,255,255,.55);"><div class="t" style="left:0;top:0px;width:100%;height:100%;text-align:center;line-height:14px;font-size:11px;font-weight:bold;color:#000;"></div></div>
<svg style="position:absolute;left:1168px;top:748px" width="16" height="7"><rect x="0" y="0" width="16" height="7" fill="#fff"/><rect x="2" y="0" width="2" height="5" fill="#111"/><rect x="6" y="0" width="2" height="5" fill="#111"/><rect x="10" y="0" width="2" height="5" fill="#111"/><rect x="13" y="0" width="2" height="5" fill="#111"/></svg>
<div style="position:absolute;left:1193px;top:745px;width:24px;height:14px;border:1px solid #111;border-radius:2px;background:linear-gradient(#dcdcdc,#a9a9a9);box-shadow:inset 1px 1px 0 rgba(255,255,255,.55);"><div class="t" style="left:0;top:0px;width:100%;height:100%;text-align:center;line-height:14px;font-size:11px;font-weight:bold;color:#000;"></div></div>
<svg style="position:absolute;left:1199px;top:747px" width="14" height="12"><path d="M0 0H4L3 1.5L1.5 3L0 4Z M14 0H10L11 1.5L12.5 3L14 4Z M0 12H4L3 10.5L1.5 9L0 8Z M14 12H10L11 10.5L12.5 9L14 8Z" fill="#000"/><rect x="4" y="3" width="6" height="6" fill="#000"/></svg>
<svg style="position:absolute;left:1225px;top:754px" width="8" height="8"><rect x="6" y="0" width="1.5" height="1.5" fill="#999"/><rect x="3" y="3" width="1.5" height="1.5" fill="#999"/><rect x="6" y="3" width="1.5" height="1.5" fill="#999"/><rect x="0" y="6" width="1.5" height="1.5" fill="#999"/><rect x="3" y="6" width="1.5" height="1.5" fill="#999"/><rect x="6" y="6" width="1.5" height="1.5" fill="#999"/></svg>
<div style="position:absolute;left:764px;top:419px;width:390px;height:232px;border-radius:7px;box-shadow:2px 3px 8px rgba(0,0,0,.35)"></div>
<div style="position:absolute;left:762px;top:416px;width:389px;height:232px;border-radius:7px 7px 6px 6px;backdrop-filter:blur(2.5px) brightness(1.25);-webkit-backdrop-filter:blur(2.5px) brightness(1.25)"></div>
<div style="position:absolute;left:762px;top:416px;width:387px;height:230px;border:1px solid #4a5060;border-radius:7px 7px 6px 6px;background:rgb(212,232,255);mix-blend-mode:multiply"></div>
<div style="position:absolute;left:763px;top:417px;width:385px;height:228px;border-radius:6px 6px 5px 5px;box-shadow:inset 0 0 0 1px rgba(255,255,255,.55)"></div>
<div style="position:absolute;left:765px;top:444px;width:1px;height:198px;background:rgba(255,255,255,.75)"></div>
<div style="position:absolute;left:1147px;top:444px;width:1px;height:198px;background:rgba(255,255,255,.6)"></div>
<div style="position:absolute;left:765px;top:643px;width:383px;height:1px;background:rgba(255,255,255,.6)"></div>
<div class="t" style="left:769px;top:422.25px;font-size:11.5px;line-height:15.5px;color:#000;font-weight:normal;letter-spacing:-0.1px">Reverb</div>
<div style="position:absolute;left:1098px;top:416px;width:45px;height:17px;border:1px solid #8a94a4;border-top:none;border-radius:0 0 4px 4px;background:linear-gradient(rgba(230,240,250,.8),rgba(210,225,240,.7))"></div>
<svg style="position:absolute;left:1115px;top:419px" width="15" height="12"><path d="M1.5 1.5 L5 1.5 L7.5 4.2 L10 1.5 L13.5 1.5 L9.5 6 L13.5 10.5 L10 10.5 L7.5 7.8 L5 10.5 L1.5 10.5 L5.5 6 Z" fill="#fff" stroke="#4a5068" stroke-width="1.2" stroke-linejoin="round"/></svg>
<div style="position:absolute;left:768px;top:444px;width:375px;height:196px;border:1px solid #5a6470;background:#c0c0c0"></div>
<div style="position:absolute;left:1064px;top:445px;width:1px;height:196px;background:#8a8a8a"></div>
<div style="position:absolute;left:1065px;top:445px;width:1px;height:196px;background:#e6e6e6"></div>
<div class="t" style="left:772.2px;top:460.5px;width:80px;text-align:center;font-size:11px;line-height:15px;color:#111;font-weight:normal;letter-spacing:-0.25px">Pre Delay</div>
<svg style="position:absolute;left:783.7px;top:475.0px;overflow:visible" width="57.0" height="57.0"><rect x="15.30" y="50.00" width="1.5" height="1.5" fill="#111"/><rect x="5.30" y="41.00" width="1.5" height="1.5" fill="#111"/><rect x="2.30" y="28.00" width="1.5" height="1.5" fill="#111"/><rect x="5.30" y="15.00" width="1.5" height="1.5" fill="#111"/><rect x="15.30" y="6.00" width="1.5" height="1.5" fill="#111"/><rect x="27.30" y="2.00" width="1.5" height="1.5" fill="#111"/><rect x="40.30" y="6.00" width="1.5" height="1.5" fill="#111"/><rect x="50.30" y="15.00" width="1.5" height="1.5" fill="#111"/><rect x="53.30" y="28.00" width="1.5" height="1.5" fill="#111"/><rect x="50.30" y="41.00" width="1.5" height="1.5" fill="#111"/><rect x="40.30" y="50.00" width="1.5" height="1.5" fill="#111"/></svg>
<div style="position:absolute;left:794.5px;top:486.1px;width:38.6px;height:38.6px;border-radius:50%;background:#333;opacity:.85;filter:blur(0.6px)"></div>
<div style="position:absolute;left:792.9px;top:484.2px;width:38.6px;height:38.6px;border-radius:50%;background:conic-gradient(from 0deg,#f4f4f4 0deg,#ffffff 35deg,#e4e4e4 75deg,#9c9c9c 122deg,#e6e6e6 165deg,#ffffff 210deg,#e2e2e2 255deg,#a4a4a4 302deg,#e8e8e8 340deg,#f4f4f4 360deg);box-shadow:inset 0 0 0 0.8px #8a8a8a, inset -1px -1px 1px rgba(0,0,0,.25)"></div>
<div style="position:absolute;left:795.4px;top:506.9px;width:4.8px;height:4.8px;border-radius:50%;background:#000"></div>
<div class="t" style="left:782.2px;top:527.0px;width:60px;text-align:center;font-size:9px;line-height:13px;color:#222;font-weight:normal;letter-spacing:-0.2px">15 ms</div>
<div class="t" style="left:836.0px;top:460.5px;width:80px;text-align:center;font-size:11px;line-height:15px;color:#111;font-weight:normal;letter-spacing:-0.25px">Rvrb Time</div>
<svg style="position:absolute;left:847.5px;top:475.0px;overflow:visible" width="57.0" height="57.0"><rect x="14.50" y="50.00" width="1.5" height="1.5" fill="#111"/><rect x="5.50" y="41.00" width="1.5" height="1.5" fill="#111"/><rect x="2.50" y="28.00" width="1.5" height="1.5" fill="#111"/><rect x="5.50" y="15.00" width="1.5" height="1.5" fill="#111"/><rect x="14.50" y="6.00" width="1.5" height="1.5" fill="#111"/><rect x="27.50" y="2.00" width="1.5" height="1.5" fill="#111"/><rect x="40.50" y="6.00" width="1.5" height="1.5" fill="#111"/><rect x="49.50" y="15.00" width="1.5" height="1.5" fill="#111"/><rect x="53.50" y="28.00" width="1.5" height="1.5" fill="#111"/><rect x="49.50" y="41.00" width="1.5" height="1.5" fill="#111"/><rect x="40.50" y="50.00" width="1.5" height="1.5" fill="#111"/></svg>
<div style="position:absolute;left:858.3px;top:486.1px;width:38.6px;height:38.6px;border-radius:50%;background:#333;opacity:.85;filter:blur(0.6px)"></div>
<div style="position:absolute;left:856.7px;top:484.2px;width:38.6px;height:38.6px;border-radius:50%;background:conic-gradient(from 0deg,#f4f4f4 0deg,#ffffff 35deg,#e4e4e4 75deg,#9c9c9c 122deg,#e6e6e6 165deg,#ffffff 210deg,#e2e2e2 255deg,#a4a4a4 302deg,#e8e8e8 340deg,#f4f4f4 360deg);box-shadow:inset 0 0 0 0.8px #8a8a8a, inset -1px -1px 1px rgba(0,0,0,.25)"></div>
<div style="position:absolute;left:863.8px;top:489.1px;width:4.8px;height:4.8px;border-radius:50%;background:#000"></div>
<div class="t" style="left:846.0px;top:527.0px;width:60px;text-align:center;font-size:9px;line-height:13px;color:#222;font-weight:normal;letter-spacing:-0.2px">2.2 s</div>
<div class="t" style="left:900.5px;top:460.5px;width:80px;text-align:center;font-size:11px;line-height:15px;color:#111;font-weight:normal;letter-spacing:-0.25px">Mix</div>
<svg style="position:absolute;left:912.0px;top:475.0px;overflow:visible" width="57.0" height="57.0"><rect x="15.00" y="50.00" width="1.5" height="1.5" fill="#111"/><rect x="6.00" y="41.00" width="1.5" height="1.5" fill="#111"/><rect x="2.00" y="28.00" width="1.5" height="1.5" fill="#111"/><rect x="6.00" y="15.00" width="1.5" height="1.5" fill="#111"/><rect x="15.00" y="6.00" width="1.5" height="1.5" fill="#111"/><rect x="28.00" y="2.00" width="1.5" height="1.5" fill="#111"/><rect x="40.00" y="6.00" width="1.5" height="1.5" fill="#111"/><rect x="50.00" y="15.00" width="1.5" height="1.5" fill="#111"/><rect x="53.00" y="28.00" width="1.5" height="1.5" fill="#111"/><rect x="50.00" y="41.00" width="1.5" height="1.5" fill="#111"/><rect x="40.00" y="50.00" width="1.5" height="1.5" fill="#111"/></svg>
<div style="position:absolute;left:922.8px;top:486.1px;width:38.6px;height:38.6px;border-radius:50%;background:#333;opacity:.85;filter:blur(0.6px)"></div>
<div style="position:absolute;left:921.2px;top:484.2px;width:38.6px;height:38.6px;border-radius:50%;background:conic-gradient(from 0deg,#f4f4f4 0deg,#ffffff 35deg,#e4e4e4 75deg,#9c9c9c 122deg,#e6e6e6 165deg,#ffffff 210deg,#e2e2e2 255deg,#a4a4a4 302deg,#e8e8e8 340deg,#f4f4f4 360deg);box-shadow:inset 0 0 0 0.8px #8a8a8a, inset -1px -1px 1px rgba(0,0,0,.25)"></div>
<div style="position:absolute;left:945.6px;top:514.7px;width:4.8px;height:4.8px;border-radius:50%;background:#000"></div>
<div class="t" style="left:910.5px;top:527.0px;width:60px;text-align:center;font-size:9px;line-height:13px;color:#222;font-weight:normal;letter-spacing:-0.2px">100 %</div>
<div style="position:absolute;left:994px;top:479px;width:12px;height:8px;border:1px solid #111;border-radius:2px;background:linear-gradient(#dcdcdc,#a9a9a9);box-shadow:inset 1px 1px 0 rgba(255,255,255,.55);"><div class="t" style="left:0;top:0px;width:100%;height:100%;text-align:center;line-height:8px;font-size:11px;font-weight:bold;color:#000;"></div></div>
<div class="t" style="left:1012px;top:477.25px;font-size:9.5px;line-height:13.5px;color:#111;font-weight:normal;letter-spacing:-0.1px">Room</div>
<div style="position:absolute;left:994px;top:493px;width:12px;height:8px;border:1px solid #111;border-radius:2px;background:linear-gradient(#ffff30,#d8d800);box-shadow:inset 1px 1px 0 rgba(255,255,255,.55);"><div class="t" style="left:0;top:0px;width:100%;height:100%;text-align:center;line-height:8px;font-size:11px;font-weight:bold;color:#000;"></div></div>
<div class="t" style="left:1012px;top:491.25px;font-size:9.5px;line-height:13.5px;color:#111;font-weight:normal;letter-spacing:-0.1px">Chamber</div>
<div style="position:absolute;left:994px;top:507px;width:12px;height:8px;border:1px solid #111;border-radius:2px;background:linear-gradient(#dcdcdc,#a9a9a9);box-shadow:inset 1px 1px 0 rgba(255,255,255,.55);"><div class="t" style="left:0;top:0px;width:100%;height:100%;text-align:center;line-height:8px;font-size:11px;font-weight:bold;color:#000;"></div></div>
<div class="t" style="left:1012px;top:505.25px;font-size:9.5px;line-height:13.5px;color:#111;font-weight:normal;letter-spacing:-0.1px">Hall</div>
<div style="position:absolute;left:994px;top:521px;width:12px;height:8px;border:1px solid #111;border-radius:2px;background:linear-gradient(#dcdcdc,#a9a9a9);box-shadow:inset 1px 1px 0 rgba(255,255,255,.55);"><div class="t" style="left:0;top:0px;width:100%;height:100%;text-align:center;line-height:8px;font-size:11px;font-weight:bold;color:#000;"></div></div>
<div class="t" style="left:1012px;top:519.25px;font-size:9.5px;line-height:13.5px;color:#111;font-weight:normal;letter-spacing:-0.1px">Plate</div>
<div style="position:absolute;left:786px;top:554px;width:62px;height:1px;background:#111"></div>
<div style="position:absolute;left:786px;top:554px;width:1px;height:5px;background:#111"></div>
<div style="position:absolute;left:875px;top:554px;width:62px;height:1px;background:#111"></div>
<div style="position:absolute;left:936px;top:554px;width:1px;height:5px;background:#111"></div>
<div class="t" style="left:841.0px;top:547.75px;width:40px;text-align:center;font-size:9.5px;line-height:13.5px;color:#111;font-weight:normal;">Color</div>
<div class="t" style="left:765.3px;top:564.5px;width:80px;text-align:center;font-size:11px;line-height:15px;color:#111;font-weight:normal;letter-spacing:-0.25px">Lo Freq</div>
<svg style="position:absolute;left:784.0px;top:579.0px;overflow:visible" width="42.6" height="42.6"><rect x="11.00" y="36.00" width="1.4" height="1.4" fill="#111"/><rect x="5.00" y="30.00" width="1.4" height="1.4" fill="#111"/><rect x="2.00" y="21.00" width="1.4" height="1.4" fill="#111"/><rect x="5.00" y="11.00" width="1.4" height="1.4" fill="#111"/><rect x="11.00" y="5.00" width="1.4" height="1.4" fill="#111"/><rect x="21.00" y="2.00" width="1.4" height="1.4" fill="#111"/><rect x="30.00" y="5.00" width="1.4" height="1.4" fill="#111"/><rect x="36.00" y="11.00" width="1.4" height="1.4" fill="#111"/><rect x="39.00" y="21.00" width="1.4" height="1.4" fill="#111"/><rect x="36.00" y="30.00" width="1.4" height="1.4" fill="#111"/><rect x="30.00" y="36.00" width="1.4" height="1.4" fill="#111"/></svg>
<div style="position:absolute;left:793.9px;top:589.2px;width:26px;height:26px;border-radius:50%;background:#333;opacity:.85;filter:blur(0.6px)"></div>
<div style="position:absolute;left:792.3px;top:587.3px;width:26px;height:26px;border-radius:50%;background:conic-gradient(from 0deg,#f4f4f4 0deg,#ffffff 35deg,#e4e4e4 75deg,#9c9c9c 122deg,#e6e6e6 165deg,#ffffff 210deg,#e2e2e2 255deg,#a4a4a4 302deg,#e8e8e8 340deg,#f4f4f4 360deg);box-shadow:inset 0 0 0 0.8px #8a8a8a, inset -1px -1px 1px rgba(0,0,0,.25)"></div>
<div style="position:absolute;left:807.2px;top:589.5px;width:4.5px;height:4.5px;border-radius:50%;background:#000"></div>
<div class="t" style="left:775.3px;top:615.0px;width:60px;text-align:center;font-size:9px;line-height:13px;color:#222;font-weight:normal;letter-spacing:-0.2px">302 Hz</div>
<div class="t" style="left:820.9px;top:564.5px;width:80px;text-align:center;font-size:11px;line-height:15px;color:#111;font-weight:normal;letter-spacing:-0.25px">Lo Mult</div>
<svg style="position:absolute;left:839.6px;top:579.0px;overflow:visible" width="42.6" height="42.6"><rect x="11.40" y="36.00" width="1.4" height="1.4" fill="#111"/><rect x="4.40" y="30.00" width="1.4" height="1.4" fill="#111"/><rect x="2.40" y="21.00" width="1.4" height="1.4" fill="#111"/><rect x="4.40" y="11.00" width="1.4" height="1.4" fill="#111"/><rect x="11.40" y="5.00" width="1.4" height="1.4" fill="#111"/><rect x="20.40" y="2.00" width="1.4" height="1.4" fill="#111"/><rect x="29.40" y="5.00" width="1.4" height="1.4" fill="#111"/><rect x="36.40" y="11.00" width="1.4" height="1.4" fill="#111"/><rect x="38.40" y="21.00" width="1.4" height="1.4" fill="#111"/><rect x="36.40" y="30.00" width="1.4" height="1.4" fill="#111"/><rect x="29.40" y="36.00" width="1.4" height="1.4" fill="#111"/></svg>
<div style="position:absolute;left:849.5px;top:589.2px;width:26px;height:26px;border-radius:50%;background:#333;opacity:.85;filter:blur(0.6px)"></div>
<div style="position:absolute;left:847.9px;top:587.3px;width:26px;height:26px;border-radius:50%;background:conic-gradient(from 0deg,#f4f4f4 0deg,#ffffff 35deg,#e4e4e4 75deg,#9c9c9c 122deg,#e6e6e6 165deg,#ffffff 210deg,#e2e2e2 255deg,#a4a4a4 302deg,#e8e8e8 340deg,#f4f4f4 360deg);box-shadow:inset 0 0 0 0.8px #8a8a8a, inset -1px -1px 1px rgba(0,0,0,.25)"></div>
<div style="position:absolute;left:867.4px;top:594.3px;width:4.5px;height:4.5px;border-radius:50%;background:#000"></div>
<div class="t" style="left:830.9px;top:615.0px;width:60px;text-align:center;font-size:9px;line-height:13px;color:#222;font-weight:normal;letter-spacing:-0.2px">1.5</div>
<div class="t" style="left:876.7px;top:564.5px;width:80px;text-align:center;font-size:11px;line-height:15px;color:#111;font-weight:normal;letter-spacing:-0.25px">Hi Cut</div>
<svg style="position:absolute;left:895.4px;top:579.0px;overflow:visible" width="42.6" height="42.6"><rect x="11.60" y="36.00" width="1.4" height="1.4" fill="#111"/><rect x="4.60" y="30.00" width="1.4" height="1.4" fill="#111"/><rect x="2.60" y="21.00" width="1.4" height="1.4" fill="#111"/><rect x="4.60" y="11.00" width="1.4" height="1.4" fill="#111"/><rect x="11.60" y="5.00" width="1.4" height="1.4" fill="#111"/><rect x="20.60" y="2.00" width="1.4" height="1.4" fill="#111"/><rect x="29.60" y="5.00" width="1.4" height="1.4" fill="#111"/><rect x="36.60" y="11.00" width="1.4" height="1.4" fill="#111"/><rect x="38.60" y="21.00" width="1.4" height="1.4" fill="#111"/><rect x="36.60" y="30.00" width="1.4" height="1.4" fill="#111"/><rect x="29.60" y="36.00" width="1.4" height="1.4" fill="#111"/></svg>
<div style="position:absolute;left:905.3px;top:589.2px;width:26px;height:26px;border-radius:50%;background:#333;opacity:.85;filter:blur(0.6px)"></div>
<div style="position:absolute;left:903.7px;top:587.3px;width:26px;height:26px;border-radius:50%;background:conic-gradient(from 0deg,#f4f4f4 0deg,#ffffff 35deg,#e4e4e4 75deg,#9c9c9c 122deg,#e6e6e6 165deg,#ffffff 210deg,#e2e2e2 255deg,#a4a4a4 302deg,#e8e8e8 340deg,#f4f4f4 360deg);box-shadow:inset 0 0 0 0.8px #8a8a8a, inset -1px -1px 1px rgba(0,0,0,.25)"></div>
<div style="position:absolute;left:905.4px;top:595.1px;width:4.5px;height:4.5px;border-radius:50%;background:#000"></div>
<div class="t" style="left:886.7px;top:615.0px;width:60px;text-align:center;font-size:9px;line-height:13px;color:#222;font-weight:normal;letter-spacing:-0.2px">2.11 kHz</div>
<div class="t" style="left:932.5px;top:564.5px;width:80px;text-align:center;font-size:11px;line-height:15px;color:#111;font-weight:normal;letter-spacing:-0.25px">Spin</div>
<svg style="position:absolute;left:951.2px;top:579.0px;overflow:visible" width="42.6" height="42.6"><rect x="11.80" y="36.00" width="1.4" height="1.4" fill="#111"/><rect x="4.80" y="30.00" width="1.4" height="1.4" fill="#111"/><rect x="2.80" y="21.00" width="1.4" height="1.4" fill="#111"/><rect x="4.80" y="11.00" width="1.4" height="1.4" fill="#111"/><rect x="11.80" y="5.00" width="1.4" height="1.4" fill="#111"/><rect x="20.80" y="2.00" width="1.4" height="1.4" fill="#111"/><rect x="29.80" y="5.00" width="1.4" height="1.4" fill="#111"/><rect x="36.80" y="11.00" width="1.4" height="1.4" fill="#111"/><rect x="38.80" y="21.00" width="1.4" height="1.4" fill="#111"/><rect x="36.80" y="30.00" width="1.4" height="1.4" fill="#111"/><rect x="29.80" y="36.00" width="1.4" height="1.4" fill="#111"/></svg>
<div style="position:absolute;left:961.1px;top:589.2px;width:26px;height:26px;border-radius:50%;background:#333;opacity:.85;filter:blur(0.6px)"></div>
<div style="position:absolute;left:959.5px;top:587.3px;width:26px;height:26px;border-radius:50%;background:conic-gradient(from 0deg,#f4f4f4 0deg,#ffffff 35deg,#e4e4e4 75deg,#9c9c9c 122deg,#e6e6e6 165deg,#ffffff 210deg,#e2e2e2 255deg,#a4a4a4 302deg,#e8e8e8 340deg,#f4f4f4 360deg);box-shadow:inset 0 0 0 0.8px #8a8a8a, inset -1px -1px 1px rgba(0,0,0,.25)"></div>
<div style="position:absolute;left:960.9px;top:596.2px;width:4.5px;height:4.5px;border-radius:50%;background:#000"></div>
<div class="t" style="left:942.5px;top:615.0px;width:60px;text-align:center;font-size:9px;line-height:13px;color:#222;font-weight:normal;letter-spacing:-0.2px">2.3</div>
<div class="t" style="left:988.5999999999999px;top:564.5px;width:80px;text-align:center;font-size:11px;line-height:15px;color:#111;font-weight:normal;letter-spacing:-0.25px">Width</div>
<svg style="position:absolute;left:1007.3px;top:579.0px;overflow:visible" width="42.6" height="42.6"><rect x="11.70" y="36.00" width="1.4" height="1.4" fill="#111"/><rect x="4.70" y="30.00" width="1.4" height="1.4" fill="#111"/><rect x="2.70" y="21.00" width="1.4" height="1.4" fill="#111"/><rect x="4.70" y="11.00" width="1.4" height="1.4" fill="#111"/><rect x="11.70" y="5.00" width="1.4" height="1.4" fill="#111"/><rect x="20.70" y="2.00" width="1.4" height="1.4" fill="#111"/><rect x="29.70" y="5.00" width="1.4" height="1.4" fill="#111"/><rect x="36.70" y="11.00" width="1.4" height="1.4" fill="#111"/><rect x="38.70" y="21.00" width="1.4" height="1.4" fill="#111"/><rect x="36.70" y="30.00" width="1.4" height="1.4" fill="#111"/><rect x="29.70" y="36.00" width="1.4" height="1.4" fill="#111"/></svg>
<div style="position:absolute;left:1017.2px;top:589.2px;width:26px;height:26px;border-radius:50%;background:#333;opacity:.85;filter:blur(0.6px)"></div>
<div style="position:absolute;left:1015.6px;top:587.3px;width:26px;height:26px;border-radius:50%;background:conic-gradient(from 0deg,#f4f4f4 0deg,#ffffff 35deg,#e4e4e4 75deg,#9c9c9c 122deg,#e6e6e6 165deg,#ffffff 210deg,#e2e2e2 255deg,#a4a4a4 302deg,#e8e8e8 340deg,#f4f4f4 360deg);box-shadow:inset 0 0 0 0.8px #8a8a8a, inset -1px -1px 1px rgba(0,0,0,.25)"></div>
<div style="position:absolute;left:1030.8px;top:606.4px;width:4.5px;height:4.5px;border-radius:50%;background:#000"></div>
<div class="t" style="left:998.5999999999999px;top:615.0px;width:60px;text-align:center;font-size:9px;line-height:13px;color:#222;font-weight:normal;letter-spacing:-0.2px">100 %</div>
<div style="position:absolute;left:1082px;top:462px;width:12px;height:9px;border:1px solid #111;border-radius:2px;background:linear-gradient(#dcdcdc,#a9a9a9);box-shadow:inset 1px 1px 0 rgba(255,255,255,.55);"><div class="t" style="left:0;top:0px;width:100%;height:100%;text-align:center;line-height:9px;font-size:11px;font-weight:bold;color:#000;"></div></div>
<div class="t" style="left:1100px;top:460.75px;font-size:9.5px;line-height:13.5px;color:#111;font-weight:normal;letter-spacing:-0.1px">Bypass</div>
<div style="position:absolute;left:1082px;top:482px;width:12px;height:9px;border:1px solid #111;border-radius:2px;background:linear-gradient(#dcdcdc,#a9a9a9);box-shadow:inset 1px 1px 0 rgba(255,255,255,.55);"><div class="t" style="left:0;top:0px;width:100%;height:100%;text-align:center;line-height:9px;font-size:11px;font-weight:bold;color:#000;"></div></div>
<svg style="position:absolute;left:1086px;top:486px" width="7" height="4"><path d="M0 0H7L3.5 4Z" fill="#000"/></svg>
<div class="t" style="left:1100px;top:480.75px;font-size:9.5px;line-height:13.5px;color:#111;font-weight:normal;letter-spacing:-0.1px">Presets</div>
<div style="position:absolute;left:1082px;top:610px;width:44px;height:17px;border:1px solid #111;border-radius:2px;background:linear-gradient(#dcdcdc,#a9a9a9);box-shadow:inset 1px 1px 0 rgba(255,255,255,.55);"><div class="t" style="left:0;top:0px;width:100%;height:100%;text-align:center;line-height:17px;font-size:12px;font-weight:normal;color:#000;">OK</div></div>
</body></html>
